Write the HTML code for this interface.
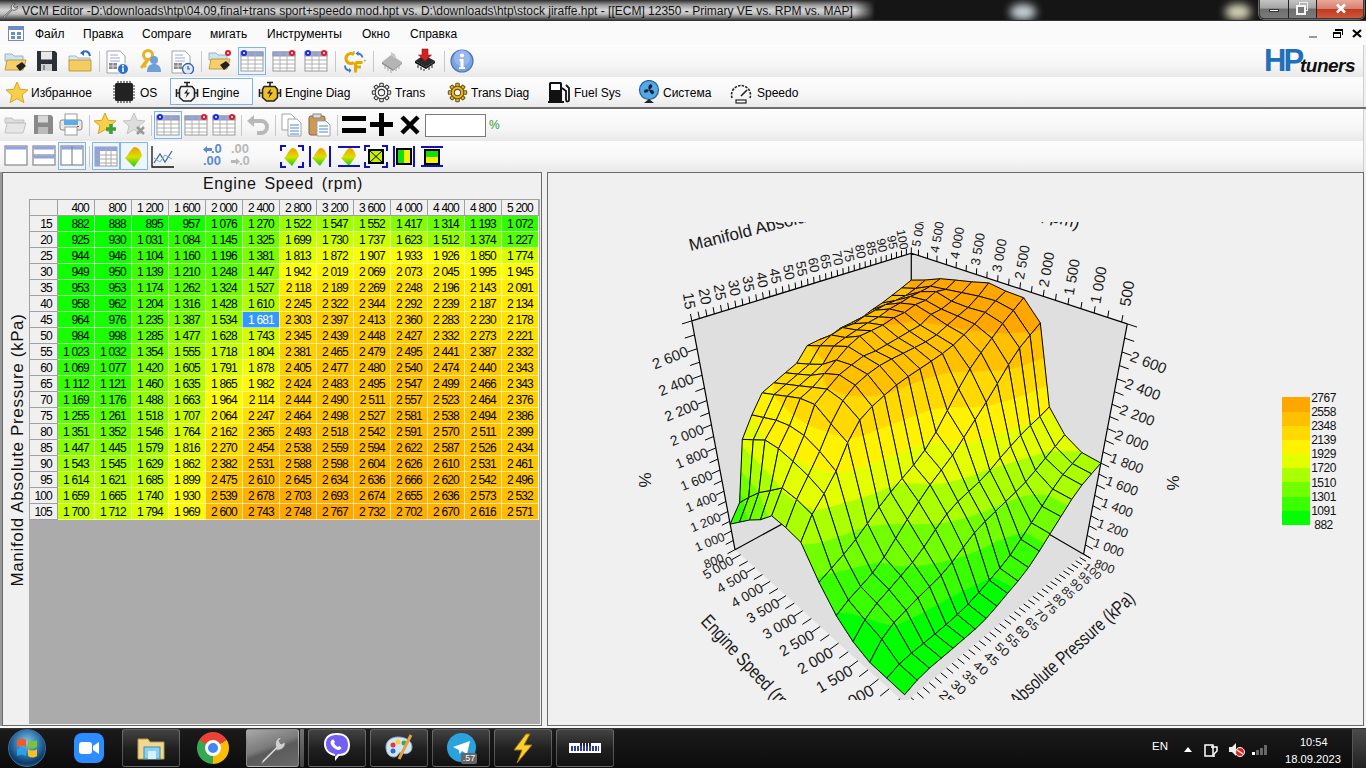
<!DOCTYPE html><html><head><meta charset="utf-8"><style>
*{margin:0;padding:0;box-sizing:border-box}
html,body{width:1366px;height:768px;overflow:hidden;background:#f0f0f0;font-family:"Liberation Sans",sans-serif;position:relative;color:#000}
.a{position:absolute}
.t{position:absolute;white-space:nowrap;font-size:12px;line-height:14px}
svg text{font-family:"Liberation Sans",sans-serif;fill:#1a1a1a}
.g{fill:none;stroke:#000;stroke-width:1}
.sep{position:absolute;width:1px;background:#c8c8c8}
.sel{position:absolute;border:1px solid #7eb4ea;background:#eef5fc}
.c{position:absolute;height:16px;font-size:12px;line-height:16px;text-align:right;padding-right:5px;letter-spacing:-0.8px;white-space:nowrap}
</style></head><body><div class="a" style="left:0;top:0;width:1366px;height:21px;background:#151515"></div>
<div class="a" style="left:0;top:0;width:875px;height:20px;background:linear-gradient(to bottom,#2a2a2a 0%,#9a9a9a 25%,#d6d6d6 50%,#bdbdbd 70%,#3a3a3a 100%);-webkit-mask-image:linear-gradient(to right,#000 855px,transparent 875px)"></div>
<div class="a" style="left:1010px;top:4px;width:26px;height:16px;border-radius:50%;background:#c8d4d8;filter:blur(4px)"></div>
<div class="a" style="left:1225px;top:4px;width:26px;height:16px;border-radius:50%;background:#d8d4b8;filter:blur(4px)"></div>
<svg class="a" style="left:1px;top:2px" width="17" height="16" viewBox="0 0 18 16"><path d="M3 15l8-8c-1-3 1-6 4-6l-2 3 2 2 3-2c0 3-3 5-6 4l-8 8z" fill="#ddd" stroke="#555" stroke-width="1"/></svg>
<div class="t" style="left:22px;top:4px;font-size:12px;color:#111;">VCM Editor -D:\downloads\htp\04.09,final+trans sport+speedo mod.hpt vs. D:\downloads\htp\stock jiraffe.hpt - [[ECM] 12350 - Primary VE vs. RPM vs. MAP]</div>
<div class="a" style="left:1259px;top:0;width:105px;height:19px;border:1px solid #3a3a3a;border-top:none;border-radius:0 0 5px 5px;background:linear-gradient(#c4c4c4 0,#a4a4a4 45%,#6e6e6e 50%,#7a7a7a 100%);box-shadow:0 0 0 1px rgba(255,255,255,.35);overflow:hidden"><div class="a" style="left:28px;top:0;width:1px;height:19px;background:#222"></div><div class="a" style="left:56px;top:0;width:1px;height:19px;background:#222"></div><div class="a" style="left:57px;top:0;width:47px;height:19px;background:linear-gradient(#e8a898 0,#d88070 45%,#c03a20 50%,#d05a40 100%)"></div><div class="a" style="left:9px;top:9px;width:10px;height:3px;background:#fff;border:1px solid #333"></div><div class="a" style="left:39px;top:2px;width:9px;height:9px;border:1.5px solid #eee"></div><div class="a" style="left:36px;top:5px;width:10px;height:10px;border:2.5px solid #f4f4f4;background:#777"></div><svg class="a" style="left:75px;top:3px" width="12" height="11"><path d="M2 1.5l8 8M10 1.5l-8 8" stroke="#fff" stroke-width="2.6"/></svg></div>
<div class="a" style="left:0;top:20px;width:1366px;height:1px;background:#333"></div>
<div class="a" style="left:0;top:21px;width:1366px;height:24px;background:#fafafa"></div>
<svg class="a" style="left:8px;top:26px" width="16" height="15" viewBox="0 0 16 15"><rect x=".5" y=".5" width="15" height="14" fill="#fff" stroke="#7a8aa0"/><rect x="1" y="1" width="14" height="3" fill="#6a8fc8"/><rect x="3" y="6" width="4" height="3" fill="#6a8fc8"/><rect x="9" y="6" width="4" height="3" fill="#6a8fc8"/><rect x="3" y="10" width="4" height="3" fill="#6a8fc8"/><rect x="9" y="10" width="4" height="3" fill="#6a8fc8"/></svg>
<div class="t" style="left:35px;top:27px;font-size:12px;color:#000;">Файл</div>
<div class="t" style="left:83px;top:27px;font-size:12px;color:#000;">Правка</div>
<div class="t" style="left:142px;top:27px;font-size:12px;color:#000;">Compare</div>
<div class="t" style="left:210px;top:27px;font-size:12px;color:#000;">мигать</div>
<div class="t" style="left:267px;top:27px;font-size:12px;color:#000;">Инструменты</div>
<div class="t" style="left:362px;top:27px;font-size:12px;color:#000;">Окно</div>
<div class="t" style="left:410px;top:27px;font-size:12px;color:#000;">Справка</div>
<div class="a" style="left:1309px;top:36px;width:8px;height:2px;background:#999"></div>
<div class="a" style="left:1333px;top:32px;width:8px;height:6px;border:1.5px solid #000;border-top-width:2.5px"></div><div class="a" style="left:1335px;top:29px;width:8px;height:6px;border-top:2px solid #000;border-right:1.5px solid #000"></div>
<svg class="a" style="left:1352px;top:29px" width="10" height="9" viewBox="0 0 10 9"><path d="M1 1l8 7M9 1L1 8" stroke="#000" stroke-width="2.2"/></svg>
<div class="a" style="left:0;top:45px;width:1364px;height:32px;background:linear-gradient(to bottom,#fdfdfd 0%,#f6f6f6 60%,#e9e9e9 100%);border-right:1px solid #cfcfcf"></div>
<div class="a" style="left:0;top:77px;width:1364px;height:31px;background:linear-gradient(to bottom,#fdfdfd 0%,#f6f6f6 60%,#e9e9e9 100%);border-right:1px solid #cfcfcf"></div>
<div class="a" style="left:0;top:107px;width:1366px;height:2px;background:#6e6e6e"></div>
<div class="a" style="left:0;top:109px;width:1364px;height:32px;background:linear-gradient(to bottom,#fdfdfd 0%,#f6f6f6 60%,#e9e9e9 100%);border-right:1px solid #cfcfcf"></div>
<div class="a" style="left:0;top:141px;width:1364px;height:31px;background:linear-gradient(to bottom,#fdfdfd 0%,#f6f6f6 60%,#e9e9e9 100%);border-right:1px solid #cfcfcf"></div>
<div class="sel" style="left:238px;top:47px;width:28px;height:28px"></div>
<svg class="a" style="left:4px;top:50px" width="24" height="24" viewBox="0 0 24 24"><path d="M1 4h7l2 2h9v5H1z" fill="#cfe3f7" stroke="#8aa" stroke-width=".8"/>
<path d="M1 20L3 10h19l-3 10z" fill="#f5cf6a" stroke="#b8953a" stroke-width=".9"/>
<path d="M12 16l6-4 4 4-6 5z" fill="#222"/></svg>
<svg class="a" style="left:36px;top:50px" width="24" height="24" viewBox="0 0 24 24"><path d="M1 1h18l2 2v18H1z" fill="#2b2f36"/><rect x="5" y="1.5" width="11" height="8" fill="#e8e8e8"/>
<rect x="5" y="14" width="11" height="7" fill="#d0d0d0"/><rect x="7" y="15" width="2" height="5" fill="#888"/></svg>
<svg class="a" style="left:68px;top:49px" width="24" height="24" viewBox="0 0 24 24"><path d="M1 7h7l2 2h12v4H1z" fill="#dbe8f5" stroke="#9ab" stroke-width=".8"/>
<path d="M1 11h22v11H1z" fill="#f3cd64" stroke="#b8953a" stroke-width=".9"/>
<path d="M14 4c3-3 7-2 8 3" fill="none" stroke="#2c6fb0" stroke-width="2"/><path d="M12 4l4-3v6z" fill="#2c6fb0"/></svg>
<svg class="a" style="left:105px;top:50px" width="24" height="24" viewBox="0 0 24 24"><path d="M2 1h13l5 5v17H2z" fill="#fff" stroke="#999" stroke-width=".9"/>
<path d="M5 5h8M5 8h10M5 11h10" stroke="#9aa8d8" stroke-width="1"/>
<rect x="4" y="13" width="8" height="6" fill="#888"/><path d="M4 16h8M8 13v6" stroke="#eee" stroke-width=".8"/><circle cx="18" cy="19" r="5.5" fill="#2d72c9" stroke="#fff" stroke-width="1"/><rect x="17.2" y="17.5" width="1.6" height="4.5" fill="#fff"/><circle cx="18" cy="15.7" r="1" fill="#fff"/></svg>
<svg class="a" style="left:138px;top:49px" width="24" height="24" viewBox="0 0 24 24"><circle cx="10" cy="6" r="4.5" fill="none" stroke="#e6b323" stroke-width="3"/><path d="M8 10l-6 8 2 2 2-2 1 1 2-2-1-1 3-4" fill="#e6b323"/>
<circle cx="16" cy="11" r="4" fill="#6ea0d8"/><path d="M9 23c0-6 3-8 7-8s7 2 7 8z" fill="#6ea0d8"/></svg>
<svg class="a" style="left:170px;top:50px" width="24" height="24" viewBox="0 0 24 24"><path d="M2 1h13l5 5v17H2z" fill="#fff" stroke="#999" stroke-width=".9"/>
<path d="M5 5h8M5 8h10M5 11h10" stroke="#9aa8d8" stroke-width="1"/>
<rect x="4" y="13" width="8" height="6" fill="#888"/><path d="M4 16h8M8 13v6" stroke="#eee" stroke-width=".8"/><circle cx="18" cy="19" r="5.5" fill="#dfe8f5" stroke="#2d5ea8" stroke-width="1.3"/><path d="M18 16v3h2" stroke="#2d5ea8" stroke-width="1.2" fill="none"/></svg>
<svg class="a" style="left:208px;top:49px" width="24" height="24" viewBox="0 0 24 24"><path d="M1 4h7l2 2h9v5H1z" fill="#cfe3f7" stroke="#8aa" stroke-width=".8"/>
<path d="M1 20L3 10h19l-3 10z" fill="#f5cf6a" stroke="#b8953a" stroke-width=".9"/>
<path d="M12 16l6-4 4 4-6 5z" fill="#222"/><circle cx="20" cy="4" r="3" fill="#e01a2b"/><circle cx="20" cy="4" r="1" fill="#fff"/></svg>
<svg class="a" style="left:240px;top:49px" width="24" height="24" viewBox="0 0 24 24"><rect x="1" y="3" width="22" height="19" fill="#fff" stroke="#999" stroke-width="1"/><rect x="1" y="3" width="22" height="4" fill="#8fa3e0" stroke="#999" stroke-width="1"/><path d="M1 11h22M1 15h22M1 19h22M8 3v19M15 3v19" stroke="#b0b0b0" stroke-width="1"/><circle cx="4" cy="4" r="3" fill="#1a2be0"/><circle cx="4" cy="4" r="1" fill="#fff"/></svg>
<svg class="a" style="left:272px;top:49px" width="24" height="24" viewBox="0 0 24 24"><rect x="1" y="3" width="22" height="19" fill="#fff" stroke="#999" stroke-width="1"/><rect x="1" y="3" width="22" height="4" fill="#8fa3e0" stroke="#999" stroke-width="1"/><path d="M1 11h22M1 15h22M1 19h22M8 3v19M15 3v19" stroke="#b0b0b0" stroke-width="1"/><circle cx="20" cy="4" r="3" fill="#e01a2b"/><circle cx="20" cy="4" r="1" fill="#fff"/></svg>
<svg class="a" style="left:304px;top:49px" width="24" height="24" viewBox="0 0 24 24"><rect x="1" y="3" width="22" height="19" fill="#fff" stroke="#999" stroke-width="1"/><rect x="1" y="3" width="22" height="4" fill="#8fa3e0" stroke="#999" stroke-width="1"/><path d="M1 11h22M1 15h22M1 19h22M8 3v19M15 3v19" stroke="#b0b0b0" stroke-width="1"/><circle cx="4" cy="4" r="3" fill="#1a2be0"/><circle cx="4" cy="4" r="1" fill="#fff"/><circle cx="20" cy="4" r="3" fill="#e01a2b"/><circle cx="20" cy="4" r="1" fill="#fff"/></svg>
<svg class="a" style="left:342px;top:50px" width="24" height="24" viewBox="0 0 24 24"><path d="M12 4.5A5 5 0 1 0 12 12.5" fill="none" stroke="#e6a800" stroke-width="3.2"/>
<path d="M13.5 12.5h7M13.5 12.5v10M13.5 17h5.5" stroke="#e6a800" stroke-width="3" fill="none"/>
<path d="M15 3.5c3 0 5 1.5 5.5 4" fill="none" stroke="#3b78c8" stroke-width="1.8"/><path d="M13.5 3.5l3-2.5v5z" fill="#3b78c8"/>
<path d="M3 15.5c0 3 1.5 4.5 4 5" fill="none" stroke="#3b78c8" stroke-width="1.8"/><path d="M7 18l2.5 2.5L7 23z" fill="#3b78c8"/>
<circle cx="12" cy="2" r=".9" fill="#c8a040"/><circle cx="23" cy="10.5" r=".9" fill="#c8a040"/></svg>
<svg class="a" style="left:380px;top:50px" width="24" height="24" viewBox="0 0 24 24"><path d="M2 12l9-7 11 7-9 7z" fill="#b4b4b4"/><path d="M2 12v2l11 7v-2z" fill="#8c8c8c"/><path d="M13 19v2l9-7v-2z" fill="#a0a0a0"/>
<path d="M11 5v-3l4 2.5 1.5 3.5" fill="#c8c8c8"/><path d="M5 16v3M8 18v3M11 20v3M16 18v3M19 16v3" stroke="#b8b8b8" stroke-width="1.3"/></svg>
<svg class="a" style="left:413px;top:48px" width="24" height="24" viewBox="0 0 24 24"><path d="M2 13l9-6 11 6-9 6z" fill="#2a2a2a"/><path d="M2 13v2l11 6v-2z" fill="#111"/><path d="M13 19v2l9-6v-2z" fill="#1a1a1a"/>
<path d="M5 17v3M8 19v3M11 21v2M16 19v3M19 17v3" stroke="#555" stroke-width="1.3"/>
<path d="M9 1h6v6h3.5L12 13 5.5 7H9z" fill="#d42020" stroke="#9a1010" stroke-width=".6"/></svg>
<svg class="a" style="left:450px;top:49px" width="24" height="24" viewBox="0 0 24 24"><circle cx="12" cy="12" r="11" fill="#7aa4e0" stroke="#4a74b8" stroke-width="1.2"/><circle cx="12" cy="9" r="8" fill="#a8c6f0" opacity=".6"/>
<path d="M9.5 10h4v8h1.5v2h-6v-2h1.5v-6h-1z" fill="#fff"/><circle cx="12" cy="6.5" r="2.1" fill="#fff"/></svg>
<div class="sep" style="left:99px;top:51px;height:21px"></div>
<div class="sep" style="left:201px;top:51px;height:21px"></div>
<div class="sep" style="left:335px;top:51px;height:21px"></div>
<div class="sep" style="left:373px;top:51px;height:21px"></div>
<div class="sep" style="left:444px;top:51px;height:21px"></div>
<div class="t" style="left:1264px;top:44px;font-size:31px;line-height:34px;font-weight:bold;color:#1f6fba;letter-spacing:-3px">HP</div>
<div class="t" style="left:1300px;top:55px;font-size:19px;line-height:22px;font-weight:bold;font-style:italic;color:#111;letter-spacing:-0.5px">tuners</div>
<div class="sel" style="left:170px;top:78px;width:83px;height:27px"></div>
<div class="a" style="left:171px;top:79px;width:81px;height:25px;background:linear-gradient(#fdfdfd,#f3f6fa)"></div>
<svg class="a" style="left:5px;top:81px" width="24" height="24" viewBox="0 0 24 24"><path d="M12 1l3.2 7.3 7.8.6-6 5.1 1.9 7.7L12 17.6l-6.9 4.1L7 14 1 8.9l7.8-.6z" fill="#f7cf4a" stroke="#d9a520" stroke-width="1"/></svg>
<div class="t" style="left:31px;top:86px;font-size:12px;color:#000;">Избранное</div>
<svg class="a" style="left:112px;top:80px" width="24" height="24" viewBox="0 0 24 24"><rect x="3" y="3" width="18" height="18" rx="1.5" fill="#222"/><path d="M6 1v2M9 1v2M12 1v2M15 1v2M18 1v2M6 21v2M9 21v2M12 21v2M15 21v2M18 21v2M1 6h2M1 9h2M1 12h2M1 15h2M1 18h2M21 6h2M21 9h2M21 12h2M21 15h2M21 18h2" stroke="#333" stroke-width="1.2"/></svg>
<div class="t" style="left:140px;top:86px;font-size:12px;color:#000;">OS</div>
<svg class="a" style="left:175px;top:80px" width="24" height="24" viewBox="0 0 24 24"><path d="M9 2.5h6M12 2.5v3.5" stroke="#222" stroke-width="1.6"/><path d="M1.5 9v8M22.5 9v8" stroke="#222" stroke-width="1.6"/><path d="M1.5 13h3M19.5 13h3" stroke="#222" stroke-width="1.6"/><path d="M6 6.5h11l2.5 3v8L16 21H8.5L4.5 17.5v-8z" fill="#f4f4f4" stroke="#222" stroke-width="1.6" stroke-linejoin="round"/><path d="M13 8.5l-4 5h3l-1.5 4.5 4.5-5.5h-3z" fill="#222"/></svg>
<div class="t" style="left:202px;top:86px;font-size:12px;color:#000;">Engine</div>
<svg class="a" style="left:258px;top:80px" width="24" height="24" viewBox="0 0 24 24"><path d="M9 2.5h6M12 2.5v3.5" stroke="#222" stroke-width="1.6"/><path d="M1.5 9v8M22.5 9v8" stroke="#222" stroke-width="1.6"/><path d="M1.5 13h3M19.5 13h3" stroke="#222" stroke-width="1.6"/><path d="M6 6.5h11l2.5 3v8L16 21H8.5L4.5 17.5v-8z" fill="#f0c020" stroke="#222" stroke-width="1.6" stroke-linejoin="round"/><path d="M13 8.5l-4 5h3l-1.5 4.5 4.5-5.5h-3z" fill="#222"/></svg>
<div class="t" style="left:285px;top:86px;font-size:12px;color:#000;">Engine Diag</div>
<svg class="a" style="left:371px;top:82px" width="21" height="21" viewBox="0 0 24 24"><rect x="10" y="1.5" width="4" height="5" rx=".8" fill="#f4f4f4" stroke="#333" stroke-width="1.2" transform="rotate(0 12 12)"/><rect x="10" y="1.5" width="4" height="5" rx=".8" fill="#f4f4f4" stroke="#333" stroke-width="1.2" transform="rotate(45 12 12)"/><rect x="10" y="1.5" width="4" height="5" rx=".8" fill="#f4f4f4" stroke="#333" stroke-width="1.2" transform="rotate(90 12 12)"/><rect x="10" y="1.5" width="4" height="5" rx=".8" fill="#f4f4f4" stroke="#333" stroke-width="1.2" transform="rotate(135 12 12)"/><rect x="10" y="1.5" width="4" height="5" rx=".8" fill="#f4f4f4" stroke="#333" stroke-width="1.2" transform="rotate(180 12 12)"/><rect x="10" y="1.5" width="4" height="5" rx=".8" fill="#f4f4f4" stroke="#333" stroke-width="1.2" transform="rotate(225 12 12)"/><rect x="10" y="1.5" width="4" height="5" rx=".8" fill="#f4f4f4" stroke="#333" stroke-width="1.2" transform="rotate(270 12 12)"/><rect x="10" y="1.5" width="4" height="5" rx=".8" fill="#f4f4f4" stroke="#333" stroke-width="1.2" transform="rotate(315 12 12)"/><circle cx="12" cy="12" r="7.2" fill="#f4f4f4" stroke="#333" stroke-width="1.2"/><circle cx="12" cy="12" r="3.6" fill="#f6f6f6" stroke="#333" stroke-width="1.2"/></svg>
<div class="t" style="left:395px;top:86px;font-size:12px;color:#000;">Trans</div>
<svg class="a" style="left:447px;top:82px" width="21" height="21" viewBox="0 0 24 24"><rect x="10" y="1.5" width="4" height="5" rx=".8" fill="#e8b830" stroke="#6a5210" stroke-width="1.2" transform="rotate(0 12 12)"/><rect x="10" y="1.5" width="4" height="5" rx=".8" fill="#e8b830" stroke="#6a5210" stroke-width="1.2" transform="rotate(45 12 12)"/><rect x="10" y="1.5" width="4" height="5" rx=".8" fill="#e8b830" stroke="#6a5210" stroke-width="1.2" transform="rotate(90 12 12)"/><rect x="10" y="1.5" width="4" height="5" rx=".8" fill="#e8b830" stroke="#6a5210" stroke-width="1.2" transform="rotate(135 12 12)"/><rect x="10" y="1.5" width="4" height="5" rx=".8" fill="#e8b830" stroke="#6a5210" stroke-width="1.2" transform="rotate(180 12 12)"/><rect x="10" y="1.5" width="4" height="5" rx=".8" fill="#e8b830" stroke="#6a5210" stroke-width="1.2" transform="rotate(225 12 12)"/><rect x="10" y="1.5" width="4" height="5" rx=".8" fill="#e8b830" stroke="#6a5210" stroke-width="1.2" transform="rotate(270 12 12)"/><rect x="10" y="1.5" width="4" height="5" rx=".8" fill="#e8b830" stroke="#6a5210" stroke-width="1.2" transform="rotate(315 12 12)"/><circle cx="12" cy="12" r="7.2" fill="#e8b830" stroke="#6a5210" stroke-width="1.2"/><circle cx="12" cy="12" r="3.6" fill="#f6f6f6" stroke="#6a5210" stroke-width="1.2"/></svg>
<div class="t" style="left:471px;top:86px;font-size:12px;color:#000;">Trans Diag</div>
<svg class="a" style="left:547px;top:80px" width="24" height="24" viewBox="0 0 24 24"><rect x="2" y="2" width="13" height="20" rx="1.5" fill="#111"/><rect x="4" y="4" width="9" height="6" fill="#fff"/><rect x="1" y="21" width="16" height="2" fill="#111"/>
<path d="M15 8l4 3v9c0 2 3 2 3 0V8l-3-3" fill="none" stroke="#111" stroke-width="1.8"/></svg>
<div class="t" style="left:574px;top:86px;font-size:12px;color:#000;">Fuel Sys</div>
<svg class="a" style="left:637px;top:80px" width="24" height="24" viewBox="0 0 24 24"><circle cx="12" cy="10" r="9.5" fill="#55a8e8" stroke="#2a5f95" stroke-width="1.2"/><path d="M12 10c-2-5 2-7 3-5s-1 4-3 5zm0 0c5-1 6 3 4 4s-3-2-4-4zm0 0c-2 4-6 3-5 1s3-2 5-1z" fill="#123"/>
<path d="M7 23l5-4 5 4z" fill="#222"/></svg>
<div class="t" style="left:663px;top:86px;font-size:12px;color:#000;">Система</div>
<svg class="a" style="left:729px;top:81px" width="24" height="24" viewBox="0 0 24 24"><path d="M3 17a9.5 9.5 0 1 1 18 0" fill="none" stroke="#222" stroke-width="1.6" stroke-dasharray="2.5 1.2"/><path d="M12 15l6-6" stroke="#222" stroke-width="1.6"/><rect x="7" y="19" width="10" height="3" fill="#fff" stroke="#222" stroke-width="1.2"/></svg>
<div class="t" style="left:757px;top:86px;font-size:12px;color:#000;">Speedo</div>
<div class="sel" style="left:154px;top:111px;width:28px;height:28px"></div>
<svg class="a" style="left:4px;top:113px" width="24" height="24" viewBox="0 0 24 24"><path d="M1 5h7l2 2h10v3H1z" fill="#ddd" stroke="#bbb" stroke-width=".8"/><path d="M1 20L3 10h19l-3 10z" fill="#e6e6e6" stroke="#bdbdbd" stroke-width=".9"/></svg>
<svg class="a" style="left:33px;top:113px" width="24" height="24" viewBox="0 0 24 24"><path d="M1 2h17l2 2v17H1z" fill="#8a8a8a"/><rect x="5" y="2.5" width="10" height="7" fill="#d8d8d8"/><rect x="5" y="14" width="10" height="7" fill="#bbb"/></svg>
<svg class="a" style="left:59px;top:113px" width="24" height="24" viewBox="0 0 24 24"><rect x="6" y="1" width="12" height="8" fill="#fff" stroke="#999"/><rect x="1" y="7" width="22" height="10" rx="2" fill="#e8e8e8" stroke="#888"/>
<rect x="5" y="7" width="14" height="5" fill="#5aaee8"/><rect x="6" y="14" width="12" height="8" fill="#fff" stroke="#999"/><rect x="18" y="13" width="2" height="1" fill="#d22"/></svg>
<svg class="a" style="left:93px;top:112px" width="24" height="24" viewBox="0 0 24 24"><path d="M12 1l3.2 7.3 7.8.6-6 5.1 1.9 7.7L12 17.6l-6.9 4.1L7 14 1 8.9l7.8-.6z" fill="#f7cf4a" stroke="#d9a520" stroke-width="1"/><path d="M18 12v10M13 17h10" stroke="#3aa13a" stroke-width="3.5"/></svg>
<svg class="a" style="left:122px;top:112px" width="24" height="24" viewBox="0 0 24 24"><path d="M12 1l3.2 7.3 7.8.6-6 5.1 1.9 7.7L12 17.6l-6.9 4.1L7 14 1 8.9l7.8-.6z" fill="#ddd" stroke="#c4c4c4" stroke-width="1"/><path d="M15 15l7 7M22 15l-7 7" stroke="#999" stroke-width="2.5"/></svg>
<svg class="a" style="left:156px;top:113px" width="24" height="24" viewBox="0 0 24 24"><rect x="1" y="3" width="22" height="19" fill="#fff" stroke="#999" stroke-width="1"/><rect x="1" y="3" width="22" height="4" fill="#8fa3e0" stroke="#999" stroke-width="1"/><path d="M1 11h22M1 15h22M1 19h22M8 3v19M15 3v19" stroke="#b0b0b0" stroke-width="1"/><circle cx="4" cy="4" r="3" fill="#1a2be0"/><circle cx="4" cy="4" r="1" fill="#fff"/></svg>
<svg class="a" style="left:184px;top:113px" width="24" height="24" viewBox="0 0 24 24"><rect x="1" y="3" width="22" height="19" fill="#fff" stroke="#999" stroke-width="1"/><rect x="1" y="3" width="22" height="4" fill="#8fa3e0" stroke="#999" stroke-width="1"/><path d="M1 11h22M1 15h22M1 19h22M8 3v19M15 3v19" stroke="#b0b0b0" stroke-width="1"/><circle cx="20" cy="4" r="3" fill="#e01a2b"/><circle cx="20" cy="4" r="1" fill="#fff"/></svg>
<svg class="a" style="left:212px;top:113px" width="24" height="24" viewBox="0 0 24 24"><rect x="1" y="3" width="22" height="19" fill="#fff" stroke="#999" stroke-width="1"/><rect x="1" y="3" width="22" height="4" fill="#8fa3e0" stroke="#999" stroke-width="1"/><path d="M1 11h22M1 15h22M1 19h22M8 3v19M15 3v19" stroke="#b0b0b0" stroke-width="1"/><circle cx="4" cy="4" r="3" fill="#1a2be0"/><circle cx="4" cy="4" r="1" fill="#fff"/><circle cx="20" cy="4" r="3" fill="#e01a2b"/><circle cx="20" cy="4" r="1" fill="#fff"/></svg>
<svg class="a" style="left:246px;top:113px" width="24" height="24" viewBox="0 0 24 24"><path d="M6 8h9a6 6 0 0 1 0 12h-4" fill="none" stroke="#b8b8b8" stroke-width="4"/><path d="M1 8l7-6v12z" fill="#b8b8b8"/></svg>
<svg class="a" style="left:280px;top:113px" width="24" height="24" viewBox="0 0 24 24"><path d="M2 1h9l4 4v12H2z" fill="#fff" stroke="#999" stroke-width=".9"/><path d="M8 6h9l4 4v13H8z" fill="#fff" stroke="#999" stroke-width=".9"/>
<path d="M10 12h9M10 15h9M10 18h9M10 21h9" stroke="#4a8ad0" stroke-width="1"/></svg>
<svg class="a" style="left:308px;top:113px" width="24" height="24" viewBox="0 0 24 24"><rect x="1" y="3" width="16" height="19" rx="2" fill="#c99a5a" stroke="#8a6030"/><rect x="5" y="1" width="8" height="4" fill="#ddd" stroke="#888"/>
<path d="M9 8h9l4 4v11H9z" fill="#fff" stroke="#999" stroke-width=".9"/><path d="M11 13h9M11 16h9M11 19h9" stroke="#4a8ad0" stroke-width="1"/></svg>
<div class="sep" style="left:89px;top:115px;height:21px"></div>
<div class="sep" style="left:151px;top:115px;height:21px"></div>
<div class="sep" style="left:241px;top:115px;height:21px"></div>
<div class="sep" style="left:275px;top:115px;height:21px"></div>
<div class="sep" style="left:337px;top:115px;height:21px"></div>
<div class="a" style="left:342px;top:116px;width:24px;height:5px;background:#000"></div><div class="a" style="left:342px;top:128px;width:24px;height:5px;background:#000"></div>
<div class="a" style="left:370px;top:122px;width:23px;height:5px;background:#000"></div><div class="a" style="left:379px;top:113px;width:5px;height:23px;background:#000"></div>
<svg class="a" style="left:400px;top:115px" width="20" height="20" viewBox="0 0 20 20"><path d="M2 2l16 16M18 2L2 18" stroke="#000" stroke-width="4.5"/></svg>
<div class="a" style="left:425px;top:114px;width:61px;height:23px;background:#fff;border:1px solid #7a7a7a"></div>
<div class="t" style="left:489px;top:118px;font-size:12px;color:#2a9a2a;">%</div>
<div class="sel" style="left:58px;top:142px;width:28px;height:28px"></div>
<div class="sel" style="left:92px;top:142px;width:28px;height:28px"></div>
<div class="sel" style="left:120px;top:142px;width:28px;height:28px"></div>
<svg class="a" style="left:4px;top:145px" width="24" height="24" viewBox="0 0 24 24"><rect x="1" y="1" width="22" height="19" fill="#fff" stroke="#888" stroke-width="1.2"/><rect x="1.5" y="1.5" width="21" height="3" fill="#8fa3e0"/></svg>
<svg class="a" style="left:32px;top:145px" width="24" height="24" viewBox="0 0 24 24"><rect x="1" y="1" width="22" height="19" fill="#fff" stroke="#888" stroke-width="1.2"/><rect x="1.5" y="1.5" width="21" height="3" fill="#8fa3e0"/><path d="M1 10h22" stroke="#888" stroke-width="1.2"/><rect x="1.5" y="10.5" width="21" height="3" fill="#8fa3e0"/></svg>
<svg class="a" style="left:60px;top:145px" width="24" height="24" viewBox="0 0 24 24"><rect x="1" y="1" width="22" height="19" fill="#fff" stroke="#888" stroke-width="1.2"/><rect x="1.5" y="1.5" width="21" height="3" fill="#8fa3e0"/><path d="M12 1v19" stroke="#888" stroke-width="1.2"/></svg>
<svg class="a" style="left:94px;top:145px" width="24" height="24" viewBox="0 0 24 24"><rect x="1" y="2" width="22" height="19" fill="#fff" stroke="#999"/><rect x="1" y="2" width="22" height="4" fill="#8fa3e0"/><rect x="1" y="2" width="5" height="19" fill="#8fa3e0"/>
<path d="M1 10h22M1 14h22M1 18h22M12 2v19M17 2v19" stroke="#aaa" stroke-width="1"/></svg>
<svg class="a" style="left:122px;top:145px" width="24" height="24" viewBox="0 0 24 24"><defs><linearGradient id="sg" x1="0" y1="0" x2="0" y2="1"><stop offset="0" stop-color="#f0a000"/><stop offset=".5" stop-color="#d8e000"/><stop offset="1" stop-color="#10d010"/></linearGradient></defs>
<path d="M12 2c6 0 7 6 8 9l-8 11-9-9c3-2 4-7 9-11z" fill="url(#sg)"/></svg>
<svg class="a" style="left:151px;top:145px" width="24" height="24" viewBox="0 0 24 24"><path d="M1 1v21h22" stroke="#111" stroke-width="1.3" fill="none"/><path d="M3 18l6-9 5 8 7-11" stroke="#3b6ea5" stroke-width="1.3" fill="none"/><path d="M3 13l6 4 5-7 7 4" stroke="#7aa0c8" stroke-width="1" fill="none"/></svg>
<div class="sep" style="left:89px;top:146px;height:21px"></div>
<div class="t" style="left:211px;top:143px;font-size:13px;line-height:12px;font-weight:bold;color:#5a8ac8">.0</div><div class="t" style="left:203px;top:155px;font-size:13px;line-height:12px;font-weight:bold;color:#5a8ac8">.00</div>
<svg class="a" style="left:203px;top:146px" width="9" height="7" viewBox="0 0 9 7"><path d="M0 3.5L4 0v2h5v3H4v2z" fill="#5a8ac8"/></svg>
<div class="t" style="left:231px;top:143px;font-size:13px;line-height:12px;font-weight:bold;color:#b8b8b8">.00</div><div class="t" style="left:239px;top:155px;font-size:13px;line-height:12px;font-weight:bold;color:#b8b8b8">.0</div>
<svg class="a" style="left:231px;top:158px" width="9" height="7" viewBox="0 0 9 7"><path d="M9 3.5L5 0v2H0v3h5v2z" fill="#b8b8b8"/></svg>
<svg class="a" style="left:280px;top:145px" width="24" height="23" viewBox="0 0 24 23"><defs><linearGradient id="sg2" x1="0" y1="0" x2="0" y2="1"><stop offset="0" stop-color="#f0a000"/><stop offset=".5" stop-color="#d8e000"/><stop offset="1" stop-color="#10d010"/></linearGradient></defs><path d="M12 3c5 0 6 5 7 8l-7 10-8-8c3-2 3-6 8-10z" fill="url(#sg2)"/><path d="M1 6V1h5M18 1h5v5M1 17v5h5M18 22h5v-5" stroke="#1010c0" stroke-width="2" fill="none"/></svg>
<svg class="a" style="left:308px;top:145px" width="24" height="23" viewBox="0 0 24 23"><defs><linearGradient id="sg2" x1="0" y1="0" x2="0" y2="1"><stop offset="0" stop-color="#f0a000"/><stop offset=".5" stop-color="#d8e000"/><stop offset="1" stop-color="#10d010"/></linearGradient></defs><path d="M12 3c5 0 6 5 7 8l-7 10-8-8c3-2 3-6 8-10z" fill="url(#sg2)"/><path d="M2 1v21M22 1v21" stroke="#1010c0" stroke-width="2"/></svg>
<svg class="a" style="left:337px;top:145px" width="24" height="23" viewBox="0 0 24 23"><defs><linearGradient id="sg2" x1="0" y1="0" x2="0" y2="1"><stop offset="0" stop-color="#f0a000"/><stop offset=".5" stop-color="#d8e000"/><stop offset="1" stop-color="#10d010"/></linearGradient></defs><path d="M12 3c5 0 6 5 7 8l-7 10-8-8c3-2 3-6 8-10z" fill="url(#sg2)"/><path d="M1 2h22M1 21h22" stroke="#1010c0" stroke-width="2"/></svg>
<svg class="a" style="left:364px;top:145px" width="24" height="23" viewBox="0 0 24 23"><path d="M1 6V1h5M18 1h5v5M1 17v5h5M18 22h5v-5" stroke="#1010c0" stroke-width="2" fill="none"/><rect x="5" y="5" width="14" height="13" fill="#c8f000" stroke="#000" stroke-width="2"/><path d="M5 5l14 13M19 5L5 18" stroke="#000" stroke-width="1"/></svg>
<svg class="a" style="left:392px;top:145px" width="24" height="23" viewBox="0 0 24 23"><path d="M2 1v21M22 1v21" stroke="#1010c0" stroke-width="2"/><rect x="5" y="4" width="14" height="15" fill="#f4f400" stroke="#000" stroke-width="2"/><rect x="6" y="5" width="6" height="13" fill="#10e010"/></svg>
<svg class="a" style="left:420px;top:145px" width="24" height="23" viewBox="0 0 24 23"><path d="M1 2h22M1 21h22" stroke="#1010c0" stroke-width="2"/><rect x="5" y="5" width="14" height="14" fill="#f4f400" stroke="#000" stroke-width="2"/><rect x="6" y="6" width="12" height="6" fill="#10e010"/></svg>
<div class="a" style="left:0;top:172px;width:2px;height:556px;background:#9a9a9a"></div>
<div class="a" style="left:2px;top:172px;width:540px;height:554px;border:1px solid #6a6a6a;background:#f0f0f0"></div>
<div class="a" style="left:29px;top:199px;width:511px;height:525px;background:#ababab"></div>
<div class="t" style="left:203px;top:175px;font-size:16px;color:#111;line-height:18px;letter-spacing:.6px;word-spacing:3px">Engine Speed (rpm)</div>
<div class="t" style="left:18px;top:450px;font-size:17px;line-height:18px;color:#111;letter-spacing:.65px;transform:translate(-50%,-50%) rotate(-90deg);transform-origin:center">Manifold Absolute Pressure (kPa)</div>
<div class="a" style="left:29px;top:199px;width:510px;height:321px;background:#f0f0f0"></div><div class="c" style="left:57px;top:200px;width:37px">400</div><div class="c" style="left:94px;top:200px;width:37px">800</div><div class="c" style="left:131px;top:200px;width:37px">1 200</div><div class="c" style="left:168px;top:200px;width:37px">1 600</div><div class="c" style="left:205px;top:200px;width:37px">2 000</div><div class="c" style="left:242px;top:200px;width:37px">2 400</div><div class="c" style="left:279px;top:200px;width:37px">2 800</div><div class="c" style="left:316px;top:200px;width:37px">3 200</div><div class="c" style="left:353px;top:200px;width:37px">3 600</div><div class="c" style="left:390px;top:200px;width:37px">4 000</div><div class="c" style="left:427px;top:200px;width:37px">4 400</div><div class="c" style="left:464px;top:200px;width:37px">4 800</div><div class="c" style="left:501px;top:200px;width:37px">5 200</div><div class="c" style="left:29px;top:216px;width:28px">15</div><div class="c" style="left:57px;top:216px;width:37px;background:#00ff00">882</div><div class="c" style="left:94px;top:216px;width:37px;background:#01ff00">888</div><div class="c" style="left:131px;top:216px;width:37px;background:#03ff00">895</div><div class="c" style="left:168px;top:216px;width:37px;background:#12ff00">957</div><div class="c" style="left:205px;top:216px;width:37px;background:#2fff00">1 076</div><div class="c" style="left:242px;top:216px;width:37px;background:#5eff00">1 270</div><div class="c" style="left:279px;top:216px;width:37px;background:#9aff00">1 522</div><div class="c" style="left:316px;top:216px;width:37px;background:#a0ff00">1 547</div><div class="c" style="left:353px;top:216px;width:37px;background:#a2ff00">1 552</div><div class="c" style="left:390px;top:216px;width:37px;background:#81ff00">1 417</div><div class="c" style="left:427px;top:216px;width:37px;background:#68ff00">1 314</div><div class="c" style="left:464px;top:216px;width:37px;background:#4bff00">1 193</div><div class="c" style="left:501px;top:216px;width:37px;background:#2eff00">1 072</div><div class="c" style="left:29px;top:232px;width:28px">20</div><div class="c" style="left:57px;top:232px;width:37px;background:#0aff00">925</div><div class="c" style="left:94px;top:232px;width:37px;background:#0cff00">930</div><div class="c" style="left:131px;top:232px;width:37px;background:#24ff00">1 031</div><div class="c" style="left:168px;top:232px;width:37px;background:#31ff00">1 084</div><div class="c" style="left:205px;top:232px;width:37px;background:#3fff00">1 145</div><div class="c" style="left:242px;top:232px;width:37px;background:#6bff00">1 325</div><div class="c" style="left:279px;top:232px;width:37px;background:#c5ff00">1 699</div><div class="c" style="left:316px;top:232px;width:37px;background:#ccff00">1 730</div><div class="c" style="left:353px;top:232px;width:37px;background:#ceff00">1 737</div><div class="c" style="left:390px;top:232px;width:37px;background:#b3ff00">1 623</div><div class="c" style="left:427px;top:232px;width:37px;background:#98ff00">1 512</div><div class="c" style="left:464px;top:232px;width:37px;background:#77ff00">1 374</div><div class="c" style="left:501px;top:232px;width:37px;background:#53ff00">1 227</div><div class="c" style="left:29px;top:248px;width:28px">25</div><div class="c" style="left:57px;top:248px;width:37px;background:#0fff00">944</div><div class="c" style="left:94px;top:248px;width:37px;background:#0fff00">946</div><div class="c" style="left:131px;top:248px;width:37px;background:#36ff00">1 104</div><div class="c" style="left:168px;top:248px;width:37px;background:#43ff00">1 160</div><div class="c" style="left:205px;top:248px;width:37px;background:#4cff00">1 196</div><div class="c" style="left:242px;top:248px;width:37px;background:#78ff00">1 381</div><div class="c" style="left:279px;top:248px;width:37px;background:#e0ff00">1 813</div><div class="c" style="left:316px;top:248px;width:37px;background:#efff00">1 872</div><div class="c" style="left:353px;top:248px;width:37px;background:#f7ff00">1 907</div><div class="c" style="left:390px;top:248px;width:37px;background:#fdff00">1 933</div><div class="c" style="left:427px;top:248px;width:37px;background:#fcff00">1 926</div><div class="c" style="left:464px;top:248px;width:37px;background:#e9ff00">1 850</div><div class="c" style="left:501px;top:248px;width:37px;background:#d7ff00">1 774</div><div class="c" style="left:29px;top:264px;width:28px">30</div><div class="c" style="left:57px;top:264px;width:37px;background:#10ff00">949</div><div class="c" style="left:94px;top:264px;width:37px;background:#10ff00">950</div><div class="c" style="left:131px;top:264px;width:37px;background:#3eff00">1 139</div><div class="c" style="left:168px;top:264px;width:37px;background:#4fff00">1 210</div><div class="c" style="left:205px;top:264px;width:37px;background:#58ff00">1 248</div><div class="c" style="left:242px;top:264px;width:37px;background:#88ff00">1 447</div><div class="c" style="left:279px;top:264px;width:37px;background:#ffff00">1 942</div><div class="c" style="left:316px;top:264px;width:37px;background:#fff700">2 019</div><div class="c" style="left:353px;top:264px;width:37px;background:#fff100">2 069</div><div class="c" style="left:390px;top:264px;width:37px;background:#fff100">2 073</div><div class="c" style="left:427px;top:264px;width:37px;background:#fff400">2 045</div><div class="c" style="left:464px;top:264px;width:37px;background:#fff900">1 995</div><div class="c" style="left:501px;top:264px;width:37px;background:#fffe00">1 945</div><div class="c" style="left:29px;top:280px;width:28px">35</div><div class="c" style="left:57px;top:280px;width:37px;background:#11ff00">953</div><div class="c" style="left:94px;top:280px;width:37px;background:#11ff00">953</div><div class="c" style="left:131px;top:280px;width:37px;background:#46ff00">1 174</div><div class="c" style="left:168px;top:280px;width:37px;background:#5cff00">1 262</div><div class="c" style="left:205px;top:280px;width:37px;background:#6bff00">1 324</div><div class="c" style="left:242px;top:280px;width:37px;background:#9cff00">1 527</div><div class="c" style="left:279px;top:280px;width:37px;background:#ffec00">2 118</div><div class="c" style="left:316px;top:280px;width:37px;background:#ffe400">2 189</div><div class="c" style="left:353px;top:280px;width:37px;background:#ffdc00">2 269</div><div class="c" style="left:390px;top:280px;width:37px;background:#ffde00">2 248</div><div class="c" style="left:427px;top:280px;width:37px;background:#ffe400">2 196</div><div class="c" style="left:464px;top:280px;width:37px;background:#ffe900">2 143</div><div class="c" style="left:501px;top:280px;width:37px;background:#ffef00">2 091</div><div class="c" style="left:29px;top:296px;width:28px">40</div><div class="c" style="left:57px;top:296px;width:37px;background:#12ff00">958</div><div class="c" style="left:94px;top:296px;width:37px;background:#13ff00">962</div><div class="c" style="left:131px;top:296px;width:37px;background:#4eff00">1 204</div><div class="c" style="left:168px;top:296px;width:37px;background:#69ff00">1 316</div><div class="c" style="left:205px;top:296px;width:37px;background:#84ff00">1 428</div><div class="c" style="left:242px;top:296px;width:37px;background:#b0ff00">1 610</div><div class="c" style="left:279px;top:296px;width:37px;background:#ffdf00">2 245</div><div class="c" style="left:316px;top:296px;width:37px;background:#ffd600">2 322</div><div class="c" style="left:353px;top:296px;width:37px;background:#ffd400">2 344</div><div class="c" style="left:390px;top:296px;width:37px;background:#ffda00">2 292</div><div class="c" style="left:427px;top:296px;width:37px;background:#ffdf00">2 239</div><div class="c" style="left:464px;top:296px;width:37px;background:#ffe500">2 187</div><div class="c" style="left:501px;top:296px;width:37px;background:#ffea00">2 134</div><div class="c" style="left:29px;top:312px;width:28px">45</div><div class="c" style="left:57px;top:312px;width:37px;background:#14ff00">964</div><div class="c" style="left:94px;top:312px;width:37px;background:#17ff00">976</div><div class="c" style="left:131px;top:312px;width:37px;background:#55ff00">1 235</div><div class="c" style="left:168px;top:312px;width:37px;background:#7aff00">1 387</div><div class="c" style="left:205px;top:312px;width:37px;background:#9dff00">1 534</div><div class="c" style="left:242px;top:312px;width:37px;background:#3399ff;color:#fff">1 681</div><div class="c" style="left:279px;top:312px;width:37px;background:#ffd800">2 303</div><div class="c" style="left:316px;top:312px;width:37px;background:#ffce00">2 397</div><div class="c" style="left:353px;top:312px;width:37px;background:#ffcd00">2 413</div><div class="c" style="left:390px;top:312px;width:37px;background:#ffd200">2 360</div><div class="c" style="left:427px;top:312px;width:37px;background:#ffda00">2 283</div><div class="c" style="left:464px;top:312px;width:37px;background:#ffe000">2 230</div><div class="c" style="left:501px;top:312px;width:37px;background:#ffe600">2 178</div><div class="c" style="left:29px;top:328px;width:28px">50</div><div class="c" style="left:57px;top:328px;width:37px;background:#19ff00">984</div><div class="c" style="left:94px;top:328px;width:37px;background:#1cff00">998</div><div class="c" style="left:131px;top:328px;width:37px;background:#61ff00">1 285</div><div class="c" style="left:168px;top:328px;width:37px;background:#8fff00">1 477</div><div class="c" style="left:205px;top:328px;width:37px;background:#b4ff00">1 628</div><div class="c" style="left:242px;top:328px;width:37px;background:#d0ff00">1 743</div><div class="c" style="left:279px;top:328px;width:37px;background:#ffd400">2 345</div><div class="c" style="left:316px;top:328px;width:37px;background:#ffca00">2 439</div><div class="c" style="left:353px;top:328px;width:37px;background:#ffc900">2 448</div><div class="c" style="left:390px;top:328px;width:37px;background:#ffcb00">2 427</div><div class="c" style="left:427px;top:328px;width:37px;background:#ffd500">2 332</div><div class="c" style="left:464px;top:328px;width:37px;background:#ffdc00">2 273</div><div class="c" style="left:501px;top:328px;width:37px;background:#ffe100">2 221</div><div class="c" style="left:29px;top:344px;width:28px">55</div><div class="c" style="left:57px;top:344px;width:37px;background:#22ff00">1 023</div><div class="c" style="left:94px;top:344px;width:37px;background:#24ff00">1 032</div><div class="c" style="left:131px;top:344px;width:37px;background:#72ff00">1 354</div><div class="c" style="left:168px;top:344px;width:37px;background:#a2ff00">1 555</div><div class="c" style="left:205px;top:344px;width:37px;background:#caff00">1 718</div><div class="c" style="left:242px;top:344px;width:37px;background:#deff00">1 804</div><div class="c" style="left:279px;top:344px;width:37px;background:#ffd000">2 381</div><div class="c" style="left:316px;top:344px;width:37px;background:#ffc700">2 465</div><div class="c" style="left:353px;top:344px;width:37px;background:#ffc600">2 479</div><div class="c" style="left:390px;top:344px;width:37px;background:#ffc400">2 495</div><div class="c" style="left:427px;top:344px;width:37px;background:#ffca00">2 441</div><div class="c" style="left:464px;top:344px;width:37px;background:#ffcf00">2 387</div><div class="c" style="left:501px;top:344px;width:37px;background:#ffd500">2 332</div><div class="c" style="left:29px;top:360px;width:28px">60</div><div class="c" style="left:57px;top:360px;width:37px;background:#2dff00">1 069</div><div class="c" style="left:94px;top:360px;width:37px;background:#2fff00">1 077</div><div class="c" style="left:131px;top:360px;width:37px;background:#82ff00">1 420</div><div class="c" style="left:168px;top:360px;width:37px;background:#aeff00">1 605</div><div class="c" style="left:205px;top:360px;width:37px;background:#dbff00">1 791</div><div class="c" style="left:242px;top:360px;width:37px;background:#f0ff00">1 878</div><div class="c" style="left:279px;top:360px;width:37px;background:#ffcd00">2 405</div><div class="c" style="left:316px;top:360px;width:37px;background:#ffc600">2 477</div><div class="c" style="left:353px;top:360px;width:37px;background:#ffc600">2 480</div><div class="c" style="left:390px;top:360px;width:37px;background:#ffbf00">2 540</div><div class="c" style="left:427px;top:360px;width:37px;background:#ffc600">2 474</div><div class="c" style="left:464px;top:360px;width:37px;background:#ffca00">2 440</div><div class="c" style="left:501px;top:360px;width:37px;background:#ffd400">2 343</div><div class="c" style="left:29px;top:376px;width:28px">65</div><div class="c" style="left:57px;top:376px;width:37px;background:#37ff00">1 112</div><div class="c" style="left:94px;top:376px;width:37px;background:#3aff00">1 121</div><div class="c" style="left:131px;top:376px;width:37px;background:#8bff00">1 460</div><div class="c" style="left:168px;top:376px;width:37px;background:#b6ff00">1 635</div><div class="c" style="left:205px;top:376px;width:37px;background:#edff00">1 865</div><div class="c" style="left:242px;top:376px;width:37px;background:#fffa00">1 982</div><div class="c" style="left:279px;top:376px;width:37px;background:#ffcb00">2 424</div><div class="c" style="left:316px;top:376px;width:37px;background:#ffc500">2 483</div><div class="c" style="left:353px;top:376px;width:37px;background:#ffc400">2 495</div><div class="c" style="left:390px;top:376px;width:37px;background:#ffbe00">2 547</div><div class="c" style="left:427px;top:376px;width:37px;background:#ffc300">2 499</div><div class="c" style="left:464px;top:376px;width:37px;background:#ffc700">2 466</div><div class="c" style="left:501px;top:376px;width:37px;background:#ffd400">2 343</div><div class="c" style="left:29px;top:392px;width:28px">70</div><div class="c" style="left:57px;top:392px;width:37px;background:#45ff00">1 169</div><div class="c" style="left:94px;top:392px;width:37px;background:#47ff00">1 176</div><div class="c" style="left:131px;top:392px;width:37px;background:#92ff00">1 488</div><div class="c" style="left:168px;top:392px;width:37px;background:#bcff00">1 663</div><div class="c" style="left:205px;top:392px;width:37px;background:#fffc00">1 964</div><div class="c" style="left:242px;top:392px;width:37px;background:#ffec00">2 114</div><div class="c" style="left:279px;top:392px;width:37px;background:#ffc900">2 444</div><div class="c" style="left:316px;top:392px;width:37px;background:#ffc400">2 490</div><div class="c" style="left:353px;top:392px;width:37px;background:#ffc200">2 511</div><div class="c" style="left:390px;top:392px;width:37px;background:#ffbd00">2 557</div><div class="c" style="left:427px;top:392px;width:37px;background:#ffc100">2 523</div><div class="c" style="left:464px;top:392px;width:37px;background:#ffc700">2 464</div><div class="c" style="left:501px;top:392px;width:37px;background:#ffd100">2 376</div><div class="c" style="left:29px;top:408px;width:28px">75</div><div class="c" style="left:57px;top:408px;width:37px;background:#5aff00">1 255</div><div class="c" style="left:94px;top:408px;width:37px;background:#5bff00">1 261</div><div class="c" style="left:131px;top:408px;width:37px;background:#99ff00">1 518</div><div class="c" style="left:168px;top:408px;width:37px;background:#c7ff00">1 707</div><div class="c" style="left:205px;top:408px;width:37px;background:#fff200">2 064</div><div class="c" style="left:242px;top:408px;width:37px;background:#ffde00">2 247</div><div class="c" style="left:279px;top:408px;width:37px;background:#ffc700">2 464</div><div class="c" style="left:316px;top:408px;width:37px;background:#ffc400">2 498</div><div class="c" style="left:353px;top:408px;width:37px;background:#ffc100">2 527</div><div class="c" style="left:390px;top:408px;width:37px;background:#ffbb00">2 581</div><div class="c" style="left:427px;top:408px;width:37px;background:#ffbf00">2 538</div><div class="c" style="left:464px;top:408px;width:37px;background:#ffc400">2 494</div><div class="c" style="left:501px;top:408px;width:37px;background:#ffd000">2 386</div><div class="c" style="left:29px;top:424px;width:28px">80</div><div class="c" style="left:57px;top:424px;width:37px;background:#71ff00">1 351</div><div class="c" style="left:94px;top:424px;width:37px;background:#71ff00">1 352</div><div class="c" style="left:131px;top:424px;width:37px;background:#a0ff00">1 546</div><div class="c" style="left:168px;top:424px;width:37px;background:#d5ff00">1 764</div><div class="c" style="left:205px;top:424px;width:37px;background:#ffe700">2 162</div><div class="c" style="left:242px;top:424px;width:37px;background:#ffd200">2 365</div><div class="c" style="left:279px;top:424px;width:37px;background:#ffc400">2 493</div><div class="c" style="left:316px;top:424px;width:37px;background:#ffc100">2 518</div><div class="c" style="left:353px;top:424px;width:37px;background:#ffbf00">2 542</div><div class="c" style="left:390px;top:424px;width:37px;background:#ffba00">2 591</div><div class="c" style="left:427px;top:424px;width:37px;background:#ffbc00">2 570</div><div class="c" style="left:464px;top:424px;width:37px;background:#ffc200">2 511</div><div class="c" style="left:501px;top:424px;width:37px;background:#ffce00">2 399</div><div class="c" style="left:29px;top:440px;width:28px">85</div><div class="c" style="left:57px;top:440px;width:37px;background:#88ff00">1 447</div><div class="c" style="left:94px;top:440px;width:37px;background:#88ff00">1 445</div><div class="c" style="left:131px;top:440px;width:37px;background:#a8ff00">1 579</div><div class="c" style="left:168px;top:440px;width:37px;background:#e1ff00">1 816</div><div class="c" style="left:205px;top:440px;width:37px;background:#ffdc00">2 270</div><div class="c" style="left:242px;top:440px;width:37px;background:#ffc800">2 454</div><div class="c" style="left:279px;top:440px;width:37px;background:#ffbf00">2 538</div><div class="c" style="left:316px;top:440px;width:37px;background:#ffbd00">2 559</div><div class="c" style="left:353px;top:440px;width:37px;background:#ffb900">2 594</div><div class="c" style="left:390px;top:440px;width:37px;background:#ffb600">2 622</div><div class="c" style="left:427px;top:440px;width:37px;background:#ffba00">2 587</div><div class="c" style="left:464px;top:440px;width:37px;background:#ffc100">2 526</div><div class="c" style="left:501px;top:440px;width:37px;background:#ffca00">2 434</div><div class="c" style="left:29px;top:456px;width:28px">90</div><div class="c" style="left:57px;top:456px;width:37px;background:#9fff00">1 543</div><div class="c" style="left:94px;top:456px;width:37px;background:#a0ff00">1 545</div><div class="c" style="left:131px;top:456px;width:37px;background:#b4ff00">1 629</div><div class="c" style="left:168px;top:456px;width:37px;background:#ecff00">1 862</div><div class="c" style="left:205px;top:456px;width:37px;background:#ffd000">2 382</div><div class="c" style="left:242px;top:456px;width:37px;background:#ffc000">2 531</div><div class="c" style="left:279px;top:456px;width:37px;background:#ffba00">2 588</div><div class="c" style="left:316px;top:456px;width:37px;background:#ffb900">2 598</div><div class="c" style="left:353px;top:456px;width:37px;background:#ffb800">2 604</div><div class="c" style="left:390px;top:456px;width:37px;background:#ffb600">2 626</div><div class="c" style="left:427px;top:456px;width:37px;background:#ffb800">2 610</div><div class="c" style="left:464px;top:456px;width:37px;background:#ffc000">2 531</div><div class="c" style="left:501px;top:456px;width:37px;background:#ffc800">2 461</div><div class="c" style="left:29px;top:472px;width:28px">95</div><div class="c" style="left:57px;top:472px;width:37px;background:#b1ff00">1 614</div><div class="c" style="left:94px;top:472px;width:37px;background:#b2ff00">1 621</div><div class="c" style="left:131px;top:472px;width:37px;background:#c2ff00">1 685</div><div class="c" style="left:168px;top:472px;width:37px;background:#f5ff00">1 899</div><div class="c" style="left:205px;top:472px;width:37px;background:#ffc600">2 475</div><div class="c" style="left:242px;top:472px;width:37px;background:#ffb800">2 610</div><div class="c" style="left:279px;top:472px;width:37px;background:#ffb400">2 645</div><div class="c" style="left:316px;top:472px;width:37px;background:#ffb500">2 634</div><div class="c" style="left:353px;top:472px;width:37px;background:#ffb500">2 636</div><div class="c" style="left:390px;top:472px;width:37px;background:#ffb200">2 666</div><div class="c" style="left:427px;top:472px;width:37px;background:#ffb700">2 620</div><div class="c" style="left:464px;top:472px;width:37px;background:#ffbf00">2 542</div><div class="c" style="left:501px;top:472px;width:37px;background:#ffc400">2 496</div><div class="c" style="left:29px;top:488px;width:28px">100</div><div class="c" style="left:57px;top:488px;width:37px;background:#bbff00">1 659</div><div class="c" style="left:94px;top:488px;width:37px;background:#bdff00">1 665</div><div class="c" style="left:131px;top:488px;width:37px;background:#cfff00">1 740</div><div class="c" style="left:168px;top:488px;width:37px;background:#fdff00">1 930</div><div class="c" style="left:205px;top:488px;width:37px;background:#ffbf00">2 539</div><div class="c" style="left:242px;top:488px;width:37px;background:#ffb000">2 678</div><div class="c" style="left:279px;top:488px;width:37px;background:#ffae00">2 703</div><div class="c" style="left:316px;top:488px;width:37px;background:#ffaf00">2 693</div><div class="c" style="left:353px;top:488px;width:37px;background:#ffb100">2 674</div><div class="c" style="left:390px;top:488px;width:37px;background:#ffb300">2 655</div><div class="c" style="left:427px;top:488px;width:37px;background:#ffb500">2 636</div><div class="c" style="left:464px;top:488px;width:37px;background:#ffbc00">2 573</div><div class="c" style="left:501px;top:488px;width:37px;background:#ffc000">2 532</div><div class="c" style="left:29px;top:504px;width:28px">105</div><div class="c" style="left:57px;top:504px;width:37px;background:#c5ff00">1 700</div><div class="c" style="left:94px;top:504px;width:37px;background:#c8ff00">1 712</div><div class="c" style="left:131px;top:504px;width:37px;background:#dcff00">1 794</div><div class="c" style="left:168px;top:504px;width:37px;background:#fffc00">1 969</div><div class="c" style="left:205px;top:504px;width:37px;background:#ffb900">2 600</div><div class="c" style="left:242px;top:504px;width:37px;background:#ffaa00">2 743</div><div class="c" style="left:279px;top:504px;width:37px;background:#ffa900">2 748</div><div class="c" style="left:316px;top:504px;width:37px;background:#ffa700">2 767</div><div class="c" style="left:353px;top:504px;width:37px;background:#ffab00">2 732</div><div class="c" style="left:390px;top:504px;width:37px;background:#ffae00">2 702</div><div class="c" style="left:427px;top:504px;width:37px;background:#ffb100">2 670</div><div class="c" style="left:464px;top:504px;width:37px;background:#ffb700">2 616</div><div class="c" style="left:501px;top:504px;width:37px;background:#ffbc00">2 571</div>
<div class="a" style="left:57px;top:216px;width:1px;height:304px;background:rgba(255,255,255,.6)"></div><div class="a" style="left:57px;top:199px;width:1px;height:17px;background:#a0a0a0"></div><div class="a" style="left:94px;top:216px;width:1px;height:304px;background:rgba(255,255,255,.6)"></div><div class="a" style="left:94px;top:199px;width:1px;height:17px;background:#a0a0a0"></div><div class="a" style="left:131px;top:216px;width:1px;height:304px;background:rgba(255,255,255,.6)"></div><div class="a" style="left:131px;top:199px;width:1px;height:17px;background:#a0a0a0"></div><div class="a" style="left:168px;top:216px;width:1px;height:304px;background:rgba(255,255,255,.6)"></div><div class="a" style="left:168px;top:199px;width:1px;height:17px;background:#a0a0a0"></div><div class="a" style="left:205px;top:216px;width:1px;height:304px;background:rgba(255,255,255,.6)"></div><div class="a" style="left:205px;top:199px;width:1px;height:17px;background:#a0a0a0"></div><div class="a" style="left:242px;top:216px;width:1px;height:304px;background:rgba(255,255,255,.6)"></div><div class="a" style="left:242px;top:199px;width:1px;height:17px;background:#a0a0a0"></div><div class="a" style="left:279px;top:216px;width:1px;height:304px;background:rgba(255,255,255,.6)"></div><div class="a" style="left:279px;top:199px;width:1px;height:17px;background:#a0a0a0"></div><div class="a" style="left:316px;top:216px;width:1px;height:304px;background:rgba(255,255,255,.6)"></div><div class="a" style="left:316px;top:199px;width:1px;height:17px;background:#a0a0a0"></div><div class="a" style="left:353px;top:216px;width:1px;height:304px;background:rgba(255,255,255,.6)"></div><div class="a" style="left:353px;top:199px;width:1px;height:17px;background:#a0a0a0"></div><div class="a" style="left:390px;top:216px;width:1px;height:304px;background:rgba(255,255,255,.6)"></div><div class="a" style="left:390px;top:199px;width:1px;height:17px;background:#a0a0a0"></div><div class="a" style="left:427px;top:216px;width:1px;height:304px;background:rgba(255,255,255,.6)"></div><div class="a" style="left:427px;top:199px;width:1px;height:17px;background:#a0a0a0"></div><div class="a" style="left:464px;top:216px;width:1px;height:304px;background:rgba(255,255,255,.6)"></div><div class="a" style="left:464px;top:199px;width:1px;height:17px;background:#a0a0a0"></div><div class="a" style="left:501px;top:216px;width:1px;height:304px;background:rgba(255,255,255,.6)"></div><div class="a" style="left:501px;top:199px;width:1px;height:17px;background:#a0a0a0"></div><div class="a" style="left:538px;top:216px;width:1px;height:304px;background:rgba(255,255,255,.6)"></div><div class="a" style="left:538px;top:199px;width:1px;height:17px;background:#a0a0a0"></div><div class="a" style="left:57px;top:215px;width:482px;height:1px;background:rgba(255,255,255,.6)"></div><div class="a" style="left:29px;top:215px;width:28px;height:1px;background:#a0a0a0"></div><div class="a" style="left:57px;top:231px;width:482px;height:1px;background:rgba(255,255,255,.6)"></div><div class="a" style="left:29px;top:231px;width:28px;height:1px;background:#a0a0a0"></div><div class="a" style="left:57px;top:247px;width:482px;height:1px;background:rgba(255,255,255,.6)"></div><div class="a" style="left:29px;top:247px;width:28px;height:1px;background:#a0a0a0"></div><div class="a" style="left:57px;top:263px;width:482px;height:1px;background:rgba(255,255,255,.6)"></div><div class="a" style="left:29px;top:263px;width:28px;height:1px;background:#a0a0a0"></div><div class="a" style="left:57px;top:279px;width:482px;height:1px;background:rgba(255,255,255,.6)"></div><div class="a" style="left:29px;top:279px;width:28px;height:1px;background:#a0a0a0"></div><div class="a" style="left:57px;top:295px;width:482px;height:1px;background:rgba(255,255,255,.6)"></div><div class="a" style="left:29px;top:295px;width:28px;height:1px;background:#a0a0a0"></div><div class="a" style="left:57px;top:311px;width:482px;height:1px;background:rgba(255,255,255,.6)"></div><div class="a" style="left:29px;top:311px;width:28px;height:1px;background:#a0a0a0"></div><div class="a" style="left:57px;top:327px;width:482px;height:1px;background:rgba(255,255,255,.6)"></div><div class="a" style="left:29px;top:327px;width:28px;height:1px;background:#a0a0a0"></div><div class="a" style="left:57px;top:343px;width:482px;height:1px;background:rgba(255,255,255,.6)"></div><div class="a" style="left:29px;top:343px;width:28px;height:1px;background:#a0a0a0"></div><div class="a" style="left:57px;top:359px;width:482px;height:1px;background:rgba(255,255,255,.6)"></div><div class="a" style="left:29px;top:359px;width:28px;height:1px;background:#a0a0a0"></div><div class="a" style="left:57px;top:375px;width:482px;height:1px;background:rgba(255,255,255,.6)"></div><div class="a" style="left:29px;top:375px;width:28px;height:1px;background:#a0a0a0"></div><div class="a" style="left:57px;top:391px;width:482px;height:1px;background:rgba(255,255,255,.6)"></div><div class="a" style="left:29px;top:391px;width:28px;height:1px;background:#a0a0a0"></div><div class="a" style="left:57px;top:407px;width:482px;height:1px;background:rgba(255,255,255,.6)"></div><div class="a" style="left:29px;top:407px;width:28px;height:1px;background:#a0a0a0"></div><div class="a" style="left:57px;top:423px;width:482px;height:1px;background:rgba(255,255,255,.6)"></div><div class="a" style="left:29px;top:423px;width:28px;height:1px;background:#a0a0a0"></div><div class="a" style="left:57px;top:439px;width:482px;height:1px;background:rgba(255,255,255,.6)"></div><div class="a" style="left:29px;top:439px;width:28px;height:1px;background:#a0a0a0"></div><div class="a" style="left:57px;top:455px;width:482px;height:1px;background:rgba(255,255,255,.6)"></div><div class="a" style="left:29px;top:455px;width:28px;height:1px;background:#a0a0a0"></div><div class="a" style="left:57px;top:471px;width:482px;height:1px;background:rgba(255,255,255,.6)"></div><div class="a" style="left:29px;top:471px;width:28px;height:1px;background:#a0a0a0"></div><div class="a" style="left:57px;top:487px;width:482px;height:1px;background:rgba(255,255,255,.6)"></div><div class="a" style="left:29px;top:487px;width:28px;height:1px;background:#a0a0a0"></div><div class="a" style="left:57px;top:503px;width:482px;height:1px;background:rgba(255,255,255,.6)"></div><div class="a" style="left:29px;top:503px;width:28px;height:1px;background:#a0a0a0"></div><div class="a" style="left:57px;top:519px;width:482px;height:1px;background:rgba(255,255,255,.6)"></div><div class="a" style="left:29px;top:519px;width:28px;height:1px;background:#a0a0a0"></div><div class="a" style="left:29px;top:215px;width:510px;height:1px;background:#a0a0a0"></div><div class="a" style="left:29px;top:199px;width:510px;height:1px;background:#a0a0a0"></div><div class="a" style="left:29px;top:199px;width:1px;height:321px;background:#a0a0a0"></div><div class="a" style="left:57px;top:199px;width:1px;height:321px;background:#a0a0a0"></div><div class="a" style="left:538px;top:199px;width:1px;height:17px;background:#a0a0a0"></div>
<div class="a" style="left:547px;top:172px;width:817px;height:554px;border:1px solid #6a6a6a;background:#f0f0f0"></div>
<svg class="a" style="left:0;top:0" width="1366" height="768" viewBox="0 0 1366 768">
<defs><clipPath id="cp"><rect x="548" y="222" width="815" height="478"/></clipPath></defs>
<g clip-path="url(#cp)">
<path fill="#dfdfdf" d="M735 549.7L911 453.9L911.3 253.2L691.8 320.9Z"/>
<path fill="#dfdfdf" d="M1083.6 554.2L911 453.9L911.3 253.2L1127.3 323.9Z"/>
<path fill="#dfdfdf" d="M904.7 702.8L735 549.7L911 453.9L1083.6 554.2Z"/>
<path stroke="#000" stroke-width="1.2" fill="none" d="M691.8 320.9L911.3 253.2M911.3 253.2L1127.3 323.9M735 549.7L691.8 320.9M1083.6 554.2L1127.3 323.9M911 453.9L911.3 253.2M735 549.7L911 453.9M1083.6 554.2L911 453.9"/>
<path stroke="#000" stroke-width="1" fill="none" d="M691.8 320.9L690.5 314M699.4 318.6L698.1 311.7M706.9 316.2L705.7 309.4M714.3 314L713.1 307.2M721.6 311.7L720.5 305M728.8 309.5L727.7 302.8M735.9 307.3L734.9 300.6M742.9 305.1L742 298.5M749.8 303L748.9 296.4M756.6 300.9L755.8 294.3M763.4 298.8L762.5 292.3M770 296.8L769.2 290.3M776.5 294.8L775.8 288.3M783 292.8L782.3 286.3M789.4 290.8L788.7 284.4M795.7 288.9L795.1 282.5M801.9 287L801.3 280.6M808 285.1L807.5 278.7M814.1 283.2L813.6 276.9M820.1 281.4L819.6 275.1M826 279.5L825.5 273.3M831.8 277.7L831.4 271.5M837.6 276L837.2 269.8M843.2 274.2L842.9 268.1M848.9 272.5L848.6 266.4M854.4 270.8L854.1 264.7M859.9 269.1L859.7 263M865.3 267.4L865.1 261.4M870.7 265.8L870.5 259.8M876 264.1L875.8 258.2M881.2 262.5L881.1 256.6M886.4 260.9L886.2 255M891.5 259.4L891.4 253.5M896.5 257.8L896.4 251.9M901.5 256.3L901.5 250.4M906.4 254.7L906.4 248.9M911.3 253.2L911.3 247.4M1121.6 322L1122.9 315.1M1107.7 317.5L1108.8 310.6M1094.1 313L1095.2 306.3M1080.9 308.7L1081.9 302M1068 304.5L1068.9 297.9M1055.5 300.4L1056.3 293.8M1043.3 296.4L1044.1 289.9M1031.4 292.5L1032.1 286.1M1019.9 288.8L1020.5 282.4M1008.6 285.1L1009.1 278.7M997.6 281.5L998 275.2M986.8 277.9L987.2 271.7M976.4 274.5L976.7 268.4M966.1 271.2L966.4 265.1M956.1 267.9L956.4 261.9M946.4 264.7L946.6 258.7M936.9 261.6L937 255.7M927.5 258.6L927.6 252.7M918.4 255.6L918.5 249.7M735 549.7L727.5 553.7M1083.6 554.2L1091 558.5M733.3 540.4L725.7 544.5M1085.4 544.9L1092.9 549.2M731.5 531L723.8 535M1087.2 535.4L1094.8 539.7M729.7 521.3L721.9 525.3M1089 525.7L1096.7 529.9M727.8 511.5L719.9 515.5M1090.9 515.8L1098.7 520M725.9 501.5L717.9 505.4M1092.8 505.7L1100.7 509.9M724 491.2L715.9 495.1M1094.8 495.4L1102.8 499.5M722 480.7L713.8 484.6M1096.8 484.9L1104.9 489M720 470L711.7 473.8M1098.8 474.1L1107 478.2M717.9 459.1L709.5 462.8M1100.9 463.1L1109.2 467.1M715.8 447.9L707.3 451.6M1103 451.9L1111.5 455.8M713.6 436.5L705 440.1M1105.2 440.4L1113.8 444.3M711.4 424.8L702.7 428.4M1107.5 428.6L1116.1 432.4M709.1 412.9L700.3 416.4M1109.7 416.6L1118.5 420.3M706.8 400.6L697.9 404.1M1112.1 404.3L1121 408M704.5 388.1L695.4 391.5M1114.5 391.7L1123.5 395.3M702 375.3L692.8 378.6M1116.9 378.8L1126.1 382.3M699.6 362.2L690.2 365.5M1119.4 365.6L1128.7 369M697 348.8L687.6 352M1122 352L1131.4 355.4M694.4 335L684.8 338.1M1124.6 338.1L1134.2 341.4M691.8 320.9L682 323.9M1127.3 323.9L1137 327.1M900.2 698.7L891.1 706.2M889.2 688.8L880.1 696.1M878.5 679.2L869.4 686.3M868.1 669.8L859.1 676.7M858 660.7L849 667.4M848.2 651.8L839.2 658.3M838.6 643.1L829.6 649.5M829.3 634.7L820.3 640.9M820.2 626.5L811.2 632.6M811.3 618.5L802.4 624.4M802.7 610.7L793.8 616.5M794.3 603.1L785.4 608.7M786 595.7L777.2 601.2M778 588.5L769.2 593.8M770.2 581.4L761.4 586.6M762.5 574.5L753.8 579.6M755 567.7L746.4 572.7M747.7 561.2L739.1 566M740.6 554.7L732 559.5M904.7 702.8L911.2 708.7M910.9 697.6L917.5 703.4M917.1 692.5L923.6 698.2M923.1 687.4L929.7 693.1M929.1 682.5L935.7 688.1M935 677.6L941.5 683.1M940.8 672.8L947.3 678.2M946.5 668L953.1 673.4M952.2 663.3L958.7 668.6M957.7 658.7L964.3 663.9M963.2 654.2L969.8 659.3M968.6 649.7L975.2 654.7M974 645.2L980.5 650.2M979.2 640.9L985.8 645.8M984.4 636.5L991 641.4M989.6 632.3L996.1 637.1M994.6 628.1L1001.2 632.8M999.6 623.9L1006.2 628.6M1004.6 619.8L1011.1 624.4M1009.4 615.8L1016 620.3M1014.3 611.8L1020.8 616.3M1019 607.8L1025.5 612.3M1023.7 604L1030.2 608.3M1028.3 600.1L1034.8 604.4M1032.9 596.3L1039.4 600.6M1037.4 592.6L1043.9 596.8M1041.9 588.9L1048.3 593M1046.3 585.2L1052.7 589.3M1050.6 581.6L1057.1 585.6M1054.9 578L1061.3 582M1059.2 574.5L1065.6 578.5M1063.4 571L1069.8 574.9M1067.5 567.6L1073.9 571.4M1071.6 564.2L1078 568M1075.7 560.8L1082 564.6M1079.7 557.5L1086 561.2M1083.6 554.2L1090 557.9"/>
<path fill="#ffa700" stroke="#ffa700" stroke-width=".5" d="M915.7 288.4L911 288.2L914.2 285.5ZM915.7 288.4L914.2 285.5L919 285.6ZM911 288.2L910.4 288.2L909.2 285.7L909.5 285.4ZM911 288.2L909.5 285.4L914.2 285.5ZM909 285.4L909.5 285.4L909.2 285.7ZM919 285.6L914.2 285.5L917.4 282.7ZM919 285.6L917.4 282.7L922.2 282.8ZM914.2 285.5L909.5 285.4L912.7 282.7ZM914.2 285.5L912.7 282.7L917.4 282.7ZM909.5 285.4L909 285.4L908 282.8L908.1 282.7ZM909.5 285.4L908.1 282.7L912.7 282.7ZM922.2 282.8L917.4 282.7L920.6 280ZM922.2 282.8L920.6 280L925.4 280ZM917.4 282.7L912.7 282.7L915.9 280.1ZM917.4 282.7L915.9 280.1L920.6 280ZM912.7 282.7L908.1 282.7L911.3 280.1ZM912.7 282.7L911.3 280.1L915.9 280.1Z"/>
<path fill="#ffc000" stroke="#ffc000" stroke-width=".5" d="M910.4 288.2L906.3 288.1L909.2 285.7ZM906.3 288.1L901.7 287.9L904.9 285.3ZM906.3 288.1L904.9 285.3L909 285.4L909.2 285.7ZM909 285.4L904.9 285.3L908 282.8Z"/>
<path class="g" d="M915.7 288.4L901.7 287.9L911.3 280.1L925.4 280Z"/>
<path fill="#ffc000" stroke="#ffc000" stroke-width=".5" d="M905.9 295.5L901.2 295.5L904.5 293ZM905.9 295.5L904.5 293L909.2 293.1ZM901.2 295.5L896.6 295.5L899.8 293ZM901.2 295.5L899.8 293L904.5 293ZM896.6 295.5L892 295.4L895.3 292.9ZM896.6 295.5L895.3 292.9L899.8 293ZM909.2 293.1L904.5 293L907.8 290.6ZM909.2 293.1L907.8 290.6L910.8 290.7L910.9 291.9ZM904.5 293L899.8 293L903.1 290.5ZM904.5 293L903.1 290.5L907.8 290.6ZM899.8 293L895.3 292.9L898.5 290.4ZM899.8 293L898.5 290.4L903.1 290.5ZM910.8 290.7L907.8 290.6L910.5 288.6ZM907.8 290.6L903.1 290.5L906.3 288.1ZM907.8 290.6L906.3 288.1L910.4 288.2L910.5 288.6ZM903.1 290.5L898.5 290.4L901.7 287.9ZM903.1 290.5L901.7 287.9L906.3 288.1Z"/>
<path fill="#ffa700" stroke="#ffa700" stroke-width=".5" d="M910.8 290.7L912.5 290.7L910.9 291.9ZM912.5 290.7L910.8 290.7L910.5 288.6L911 288.2ZM912.5 290.7L911 288.2L915.7 288.4ZM910.4 288.2L911 288.2L910.5 288.6Z"/>
<path class="g" d="M905.9 295.5L892 295.4L901.7 287.9L915.7 288.4Z"/>
<path fill="#ffc000" stroke="#ffc000" stroke-width=".5" d="M895.9 300.4L891.3 301.2L894.6 299.3ZM895.9 300.4L894.6 299.3L899.3 298.7ZM891.3 301.2L886.7 302.1L890 299.9ZM891.3 301.2L890 299.9L894.6 299.3ZM886.7 302.1L882.1 303L885.4 300.4ZM886.7 302.1L885.4 300.4L890 299.9ZM899.3 298.7L894.6 299.3L897.9 297.4ZM899.3 298.7L897.9 297.4L902.6 297.1ZM894.6 299.3L890 299.9L893.3 297.7ZM894.6 299.3L893.3 297.7L897.9 297.4ZM890 299.9L885.4 300.4L888.7 297.9ZM890 299.9L888.7 297.9L893.3 297.7ZM902.6 297.1L897.9 297.4L901.2 295.5ZM902.6 297.1L901.2 295.5L905.9 295.5ZM897.9 297.4L893.3 297.7L896.6 295.5ZM897.9 297.4L896.6 295.5L901.2 295.5ZM893.3 297.7L888.7 297.9L892 295.4ZM893.3 297.7L892 295.4L896.6 295.5Z"/>
<path class="g" d="M895.9 300.4L882.1 303L892 295.4L905.9 295.5Z"/>
<path fill="#ffa700" stroke="#ffa700" stroke-width=".5" d="M930.5 286.2L925.5 286.9L928.7 284.3ZM930.5 286.2L928.7 284.3L933.7 283.7ZM925.5 286.9L920.6 287.7L923.8 284.9ZM925.5 286.9L923.8 284.9L928.7 284.3ZM920.6 287.7L915.7 288.4L919 285.6ZM920.6 287.7L919 285.6L923.8 284.9ZM933.7 283.7L928.7 284.3L932 281.7ZM933.7 283.7L932 281.7L937 281.2ZM928.7 284.3L923.8 284.9L927.1 282.2ZM928.7 284.3L927.1 282.2L932 281.7ZM923.8 284.9L919 285.6L922.2 282.8ZM923.8 284.9L922.2 282.8L927.1 282.2ZM937 281.2L932 281.7L935.2 279.1ZM937 281.2L935.2 279.1L940.2 278.7ZM932 281.7L927.1 282.2L930.3 279.5ZM932 281.7L930.3 279.5L935.2 279.1ZM927.1 282.2L922.2 282.8L925.4 280ZM927.1 282.2L925.4 280L930.3 279.5Z"/>
<path class="g" d="M930.5 286.2L915.7 288.4L925.4 280L940.2 278.7Z"/>
<path fill="#ffc000" stroke="#ffc000" stroke-width=".5" d="M885.7 304.6L881.1 306.3L884.5 304.6ZM885.7 304.6L884.5 304.6L889.1 303.2ZM881.1 306.3L876.5 308L879.9 306ZM881.1 306.3L879.9 306L884.5 304.6ZM876.5 308L872.1 309.7L875.5 307.4ZM876.5 308L875.5 307.4L879.9 306ZM889.1 303.2L884.5 304.6L887.9 302.9ZM889.1 303.2L887.9 302.9L892.5 301.8ZM884.5 304.6L879.9 306L883.3 304.1ZM884.5 304.6L883.3 304.1L887.9 302.9ZM879.9 306L875.5 307.4L878.8 305.2ZM879.9 306L878.8 305.2L883.3 304.1ZM892.5 301.8L887.9 302.9L891.3 301.2ZM892.5 301.8L891.3 301.2L895.9 300.4ZM887.9 302.9L883.3 304.1L886.7 302.1ZM887.9 302.9L886.7 302.1L891.3 301.2ZM883.3 304.1L878.8 305.2L882.1 303ZM883.3 304.1L882.1 303L886.7 302.1Z"/>
<path class="g" d="M885.7 304.6L872.1 309.7L882.1 303L895.9 300.4Z"/>
<path fill="#ffa700" stroke="#ffa700" stroke-width=".5" d="M920.5 291.7L915.6 293L918.9 290.9ZM920.5 291.7L918.9 290.9L923.9 289.8ZM915.6 293L910.7 294.2L914 292ZM915.6 293L914 292L918.9 290.9ZM910.7 294.2L908.8 294.7L909.7 293.5ZM910.7 294.2L909.7 293.5L910.2 292.9L914 292ZM923.9 289.8L918.9 290.9L922.2 288.9ZM923.9 289.8L922.2 288.9L927.2 288ZM918.9 290.9L914 292L917.3 289.8ZM918.9 290.9L917.3 289.8L922.2 288.9ZM914 292L910.2 292.9L910.9 291.9L912.5 290.7ZM914 292L912.5 290.7L917.3 289.8ZM927.2 288L922.2 288.9L925.5 286.9ZM927.2 288L925.5 286.9L930.5 286.2ZM922.2 288.9L917.3 289.8L920.6 287.7ZM922.2 288.9L920.6 287.7L925.5 286.9ZM917.3 289.8L912.5 290.7L915.7 288.4ZM917.3 289.8L915.7 288.4L920.6 287.7Z"/>
<path fill="#ffc000" stroke="#ffc000" stroke-width=".5" d="M908.8 294.7L905.9 295.5L909.2 293.1L909.7 293.5ZM909.7 293.5L909.2 293.1L910.2 292.9ZM910.2 292.9L909.2 293.1L910.9 291.9Z"/>
<path class="g" d="M920.5 291.7L905.9 295.5L915.7 288.4L930.5 286.2Z"/>
<path fill="#ffc000" stroke="#ffc000" stroke-width=".5" d="M875.3 310.2L870.7 312.7L874.2 310.5ZM875.3 310.2L874.2 310.5L878.8 308.3ZM870.7 312.7L866.3 315.1L869.7 312.7ZM870.7 312.7L869.7 312.7L874.2 310.5ZM866.3 315.1L861.9 317.5L865.3 314.9ZM866.3 315.1L865.3 314.9L869.7 312.7ZM878.8 308.3L874.2 310.5L877.6 308.4ZM878.8 308.3L877.6 308.4L882.2 306.4ZM874.2 310.5L869.7 312.7L873.1 310.4ZM874.2 310.5L873.1 310.4L877.6 308.4ZM869.7 312.7L865.3 314.9L868.7 312.3ZM869.7 312.7L868.7 312.3L873.1 310.4ZM882.2 306.4L877.6 308.4L881.1 306.3ZM882.2 306.4L881.1 306.3L885.7 304.6ZM877.6 308.4L873.1 310.4L876.5 308ZM877.6 308.4L876.5 308L881.1 306.3ZM873.1 310.4L868.7 312.3L872.1 309.7ZM873.1 310.4L872.1 309.7L876.5 308Z"/>
<path class="g" d="M875.3 310.2L861.9 317.5L872.1 309.7L885.7 304.6Z"/>
<path fill="#ffa700" stroke="#ffa700" stroke-width=".5" d="M910.4 296.5L905.5 297.8L908.9 296.2ZM910.4 296.5L908.9 296.2L913.8 294.9ZM905.5 297.8L900.7 299.1L900.9 299L904 297.5ZM905.5 297.8L904 297.5L908.9 296.2ZM903.4 297.6L904 297.5L900.9 299ZM913.8 294.9L908.9 296.2L912.3 294.6ZM913.8 294.9L912.3 294.6L917.2 293.3ZM908.9 296.2L904 297.5L907.4 295.8ZM908.9 296.2L907.4 295.8L912.3 294.6ZM904 297.5L903.4 297.6L903.8 297.4ZM904 297.5L903.8 297.4L906.1 296.2L907.4 295.8ZM917.2 293.3L912.3 294.6L915.6 293ZM917.2 293.3L915.6 293L920.5 291.7ZM912.3 294.6L907.4 295.8L910.7 294.2ZM912.3 294.6L910.7 294.2L915.6 293ZM907.4 295.8L906.1 296.2L906.9 295.7ZM907.4 295.8L906.9 295.7L908.8 294.7L910.7 294.2Z"/>
<path fill="#ffc000" stroke="#ffc000" stroke-width=".5" d="M900.7 299.1L900.7 299.1L900.9 299ZM900.7 299.1L895.9 300.4L899.3 298.7ZM900.7 299.1L899.3 298.7L903.4 297.6L900.9 299ZM903.4 297.6L899.3 298.7L902.6 297.1L903.8 297.4ZM903.8 297.4L902.6 297.1L906.1 296.2ZM906.1 296.2L902.6 297.1L905.9 295.5L906.9 295.7ZM906.9 295.7L905.9 295.5L908.8 294.7Z"/>
<path class="g" d="M910.4 296.5L895.9 300.4L905.9 295.5L920.5 291.7Z"/>
<path fill="#ffc000" stroke="#ffc000" stroke-width=".5" d="M864.6 316.1L860.1 318.4L863.7 316.5ZM864.6 316.1L863.7 316.5L868.2 314.1ZM860.1 318.4L855.7 320.6L859.3 318.8ZM860.1 318.4L859.3 318.8L863.7 316.5ZM855.7 320.6L851.4 322.8L854.9 321ZM855.7 320.6L854.9 321L859.3 318.8ZM868.2 314.1L863.7 316.5L867.2 314.5ZM868.2 314.1L867.2 314.5L871.7 312.1ZM863.7 316.5L859.3 318.8L862.8 316.9ZM863.7 316.5L862.8 316.9L867.2 314.5ZM859.3 318.8L854.9 321L858.4 319.2ZM859.3 318.8L858.4 319.2L862.8 316.9ZM871.7 312.1L867.2 314.5L870.7 312.7ZM871.7 312.1L870.7 312.7L875.3 310.2ZM867.2 314.5L862.8 316.9L866.3 315.1ZM867.2 314.5L866.3 315.1L870.7 312.7ZM862.8 316.9L858.4 319.2L861.9 317.5ZM862.8 316.9L861.9 317.5L866.3 315.1Z"/>
<path class="g" d="M864.6 316.1L851.4 322.8L861.9 317.5L875.3 310.2Z"/>
<path fill="#ffa700" stroke="#ffa700" stroke-width=".5" d="M945.8 289.4L940.6 288.3L943.9 285.4ZM945.8 289.4L943.9 285.4L949.1 286.3ZM940.6 288.3L935.5 287.2L938.8 284.5ZM940.6 288.3L938.8 284.5L943.9 285.4ZM935.5 287.2L930.5 286.2L933.7 283.7ZM935.5 287.2L933.7 283.7L938.8 284.5ZM949.1 286.3L943.9 285.4L947.2 282.5ZM949.1 286.3L947.2 282.5L952.4 283.2ZM943.9 285.4L938.8 284.5L942.1 281.8ZM943.9 285.4L942.1 281.8L947.2 282.5ZM938.8 284.5L933.7 283.7L937 281.2ZM938.8 284.5L937 281.2L942.1 281.8ZM952.4 283.2L947.2 282.5L950.4 279.6ZM952.4 283.2L950.4 279.6L955.7 280.1ZM947.2 282.5L942.1 281.8L945.3 279.1ZM947.2 282.5L945.3 279.1L950.4 279.6ZM942.1 281.8L937 281.2L940.2 278.7ZM942.1 281.8L940.2 278.7L945.3 279.1Z"/>
<path class="g" d="M945.8 289.4L930.5 286.2L940.2 278.7L955.7 280.1Z"/>
<path fill="#ffa700" stroke="#ffa700" stroke-width=".5" d="M900.1 303L895.2 303.6L898.7 301.6ZM900.1 303L898.7 301.6L903.6 300.8ZM895.2 303.6L893.1 303.8L894.5 302.9ZM895.2 303.6L894.5 302.9L895.5 302.2L898.7 301.6ZM903.6 300.8L898.7 301.6L902.1 299.7ZM903.6 300.8L902.1 299.7L907 298.7ZM898.7 301.6L895.5 302.2L897.6 300.9ZM898.7 301.6L897.6 300.9L898 300.6L902.1 299.7ZM907 298.7L902.1 299.7L905.5 297.8ZM907 298.7L905.5 297.8L910.4 296.5ZM902.1 299.7L898 300.6L900.7 299.1ZM902.1 299.7L900.7 299.1L900.7 299.1L905.5 297.8Z"/>
<path fill="#ffc000" stroke="#ffc000" stroke-width=".5" d="M893.1 303.8L890.4 304.1L893.9 302.4L894.5 302.9ZM894.5 302.9L893.9 302.4L895.5 302.2ZM890.4 304.1L885.7 304.6L889.1 303.2ZM890.4 304.1L889.1 303.2L893.9 302.4ZM895.5 302.2L893.9 302.4L897.3 300.7L897.6 300.9ZM897.6 300.9L897.3 300.7L898 300.6ZM893.9 302.4L889.1 303.2L892.5 301.8ZM893.9 302.4L892.5 301.8L897.3 300.7ZM898 300.6L897.3 300.7L900.7 299.1L900.7 299.1ZM900.7 299.1L900.7 299.1L900.7 299.1ZM897.3 300.7L892.5 301.8L895.9 300.4ZM897.3 300.7L895.9 300.4L900.7 299.1Z"/>
<path class="g" d="M900.1 303L885.7 304.6L895.9 300.4L910.4 296.5Z"/>
<path fill="#ffa700" stroke="#ffa700" stroke-width=".5" d="M935.9 291.6L930.7 291.6L934 290.5ZM935.9 291.6L934 290.5L939.2 290.9ZM930.7 291.6L925.6 291.6L928.9 290.2ZM930.7 291.6L928.9 290.2L934 290.5ZM925.6 291.6L920.5 291.7L923.9 289.8ZM925.6 291.6L923.9 289.8L928.9 290.2ZM939.2 290.9L934 290.5L937.3 289.4ZM939.2 290.9L937.3 289.4L942.5 290.1ZM934 290.5L928.9 290.2L932.2 288.7ZM934 290.5L932.2 288.7L937.3 289.4ZM928.9 290.2L923.9 289.8L927.2 288ZM928.9 290.2L927.2 288L932.2 288.7ZM942.5 290.1L937.3 289.4L940.6 288.3ZM942.5 290.1L940.6 288.3L945.8 289.4ZM937.3 289.4L932.2 288.7L935.5 287.2ZM937.3 289.4L935.5 287.2L940.6 288.3ZM932.2 288.7L927.2 288L930.5 286.2ZM932.2 288.7L930.5 286.2L935.5 287.2Z"/>
<path class="g" d="M935.9 291.6L920.5 291.7L930.5 286.2L945.8 289.4Z"/>
<path fill="#ffc000" stroke="#ffc000" stroke-width=".5" d="M853.8 323.7L849.4 325.1L853 322.9ZM853.8 323.7L853 322.9L857.4 321.1ZM849.4 325.1L845 326.5L848.6 324.6ZM849.4 325.1L848.6 324.6L853 322.9ZM845 326.5L840.7 327.9L844.3 326.2ZM845 326.5L844.3 326.2L848.6 324.6ZM857.4 321.1L853 322.9L856.6 320.6ZM857.4 321.1L856.6 320.6L861 318.6ZM853 322.9L848.6 324.6L852.2 322.6ZM853 322.9L852.2 322.6L856.6 320.6ZM848.6 324.6L844.3 326.2L847.9 324.5ZM848.6 324.6L847.9 324.5L852.2 322.6ZM861 318.6L856.6 320.6L860.1 318.4ZM861 318.6L860.1 318.4L864.6 316.1ZM856.6 320.6L852.2 322.6L855.7 320.6ZM856.6 320.6L855.7 320.6L860.1 318.4ZM852.2 322.6L847.9 324.5L851.4 322.8ZM852.2 322.6L851.4 322.8L855.7 320.6Z"/>
<path class="g" d="M853.8 323.7L840.7 327.9L851.4 322.8L864.6 316.1Z"/>
<path fill="#39ff00" stroke="#39ff00" stroke-width=".5" d="M739.5 522.1L736.4 522.8L739.4 514.9ZM739.5 522.1L739.4 514.9L742.6 513.9ZM736.4 522.8L733.2 523.4L736.3 515.9ZM736.4 522.8L736.3 515.9L739.4 514.9ZM733.2 523.4L731.6 523.7L731.3 521.4L733.3 516.9ZM733.2 523.4L733.3 516.9L736.3 515.9ZM742.6 513.9L739.4 514.9L742.5 507ZM742.6 513.9L742.5 507L744.8 506L745.1 507.4ZM739.4 514.9L736.3 515.9L739.4 508.4ZM739.4 514.9L739.4 508.4L742.5 507ZM736.3 515.9L733.3 516.9L736.4 509.8ZM736.3 515.9L736.4 509.8L739.4 508.4ZM744.8 506L742.5 507L744.4 502.5ZM742.5 507L739.4 508.4L742.6 500.9ZM742.5 507L742.6 500.9L744.1 500L744.4 502.5ZM739.4 508.4L736.4 509.8L739.6 502.7ZM739.4 508.4L739.6 502.7L742.6 500.9Z"/>
<path fill="#00ff00" stroke="#00ff00" stroke-width=".5" d="M731.6 523.7L730.2 524.1L731.3 521.4Z"/>
<path fill="#72ff00" stroke="#72ff00" stroke-width=".5" d="M744.8 506L745.7 505.6L745.1 507.4ZM745.7 505.6L744.8 506L744.4 502.5L745.7 499.1ZM745.7 505.6L745.7 499.1L748.8 497.3ZM744.1 500L745.7 499.1L744.4 502.5Z"/>
<path class="g" d="M739.5 522.1L730.2 524.1L739.6 502.7L748.8 497.3Z"/>
<path fill="#ffc000" stroke="#ffc000" stroke-width=".5" d="M886.5 309.2L884.7 309.4L888.2 307.4L888.4 307.6ZM888.4 307.6L888.2 307.4L888.7 307.4ZM884.7 309.4L879.9 309.8L883.5 307.9ZM884.7 309.4L883.5 307.9L888.2 307.4ZM879.9 309.8L875.3 310.2L878.8 308.3ZM879.9 309.8L878.8 308.3L883.5 307.9ZM888.7 307.4L888.2 307.4L889.4 306.8ZM888.2 307.4L883.5 307.9L886.9 306ZM888.2 307.4L886.9 306L890.9 305.6L889.4 306.8ZM883.5 307.9L878.8 308.3L882.2 306.4ZM883.5 307.9L882.2 306.4L886.9 306ZM890.9 305.6L886.9 306L890.4 304.1L891.4 305.1ZM891.4 305.1L890.4 304.1L893.1 303.8ZM886.9 306L882.2 306.4L885.7 304.6ZM886.9 306L885.7 304.6L890.4 304.1Z"/>
<path fill="#ffa700" stroke="#ffa700" stroke-width=".5" d="M889.6 309L886.5 309.2L888.4 307.6ZM889.6 309L888.4 307.6L888.7 307.4L893.1 307ZM893.1 307L888.7 307.4L889.4 306.8L891.7 305.5ZM893.1 307L891.7 305.5L896.6 305ZM890.9 305.6L891.7 305.5L889.4 306.8ZM896.6 305L891.7 305.5L895.2 303.6ZM896.6 305L895.2 303.6L900.1 303ZM891.7 305.5L890.9 305.6L891.4 305.1ZM891.7 305.5L891.4 305.1L893.1 303.8L895.2 303.6Z"/>
<path class="g" d="M889.6 309L875.3 310.2L885.7 304.6L900.1 303Z"/>
<path fill="#ffc000" stroke="#ffc000" stroke-width=".5" d="M842.6 327.6L838.3 330.4L842 328.6ZM842.6 327.6L842 328.6L846.4 326.3ZM838.3 330.4L834 333.2L837.7 330.9ZM838.3 330.4L837.7 330.9L842 328.6ZM834 333.2L830.4 335.5L831.6 334.6L833.5 333.2ZM834 333.2L833.5 333.2L837.7 330.9ZM846.4 326.3L842 328.6L845.7 326.9ZM846.4 326.3L845.7 326.9L850.1 325ZM842 328.6L837.7 330.9L841.4 328.7ZM842 328.6L841.4 328.7L845.7 326.9ZM837.7 330.9L833.5 333.2L837.1 330.6ZM837.7 330.9L837.1 330.6L841.4 328.7ZM850.1 325L845.7 326.9L849.4 325.1ZM850.1 325L849.4 325.1L853.8 323.7ZM845.7 326.9L841.4 328.7L845 326.5ZM845.7 326.9L845 326.5L849.4 325.1ZM841.4 328.7L837.1 330.6L840.7 327.9ZM841.4 328.7L840.7 327.9L845 326.5Z"/>
<path fill="#ffd900" stroke="#ffd900" stroke-width=".5" d="M830.4 335.5L829.9 335.9L831.6 334.6Z"/>
<path class="g" d="M842.6 327.6L829.9 335.9L840.7 327.9L853.8 323.7Z"/>
<path fill="#ffa700" stroke="#ffa700" stroke-width=".5" d="M925.6 300.3L920.5 299L923.9 296.5ZM925.6 300.3L923.9 296.5L929.1 297.4ZM920.5 299L915.4 297.8L918.8 295.7ZM920.5 299L918.8 295.7L923.9 296.5ZM915.4 297.8L910.4 296.5L913.8 294.9ZM915.4 297.8L913.8 294.9L918.8 295.7ZM929.1 297.4L923.9 296.5L927.3 294.1ZM929.1 297.4L927.3 294.1L932.5 294.5ZM923.9 296.5L918.8 295.7L922.2 293.7ZM923.9 296.5L922.2 293.7L927.3 294.1ZM918.8 295.7L913.8 294.9L917.2 293.3ZM918.8 295.7L917.2 293.3L922.2 293.7ZM932.5 294.5L927.3 294.1L930.7 291.6ZM932.5 294.5L930.7 291.6L935.9 291.6ZM927.3 294.1L922.2 293.7L925.6 291.6ZM927.3 294.1L925.6 291.6L930.7 291.6ZM922.2 293.7L917.2 293.3L920.5 291.7ZM922.2 293.7L920.5 291.7L925.6 291.6Z"/>
<path class="g" d="M925.6 300.3L910.4 296.5L920.5 291.7L935.9 291.6Z"/>
<path fill="#ffa700" stroke="#ffa700" stroke-width=".5" d="M961.7 292.6L956.3 291.5L959.7 288.1ZM961.7 292.6L959.7 288.1L965.1 289ZM956.3 291.5L951 290.4L954.3 287.2ZM956.3 291.5L954.3 287.2L959.7 288.1ZM951 290.4L945.8 289.4L949.1 286.3ZM951 290.4L949.1 286.3L954.3 287.2ZM965.1 289L959.7 288.1L963 284.6ZM965.1 289L963 284.6L968.4 285.4ZM959.7 288.1L954.3 287.2L957.7 283.9ZM959.7 288.1L957.7 283.9L963 284.6ZM954.3 287.2L949.1 286.3L952.4 283.2ZM954.3 287.2L952.4 283.2L957.7 283.9ZM968.4 285.4L963 284.6L966.3 281.2ZM968.4 285.4L966.3 281.2L971.8 281.8ZM963 284.6L957.7 283.9L961 280.6ZM963 284.6L961 280.6L966.3 281.2ZM957.7 283.9L952.4 283.2L955.7 280.1ZM957.7 283.9L955.7 280.1L961 280.6Z"/>
<path class="g" d="M961.7 292.6L945.8 289.4L955.7 280.1L971.8 281.8Z"/>
<path fill="#ffc000" stroke="#ffc000" stroke-width=".5" d="M878.8 316.9L874 316.6L877.6 314.2ZM878.8 316.9L877.6 314.2L882.4 314.2ZM874 316.6L869.3 316.3L872.9 314.1ZM874 316.6L872.9 314.1L877.6 314.2ZM869.3 316.3L864.6 316.1L868.2 314.1ZM869.3 316.3L868.2 314.1L872.9 314.1ZM882.4 314.2L877.6 314.2L881.2 311.8ZM882.4 314.2L881.2 311.8L885.5 311.6L885.4 312ZM877.6 314.2L872.9 314.1L876.4 312ZM877.6 314.2L876.4 312L881.2 311.8ZM872.9 314.1L868.2 314.1L871.7 312.1ZM872.9 314.1L871.7 312.1L876.4 312ZM885.5 311.6L881.2 311.8L884.7 309.4L885.7 311.2ZM885.7 311.2L884.7 309.4L886.5 309.2ZM881.2 311.8L876.4 312L879.9 309.8ZM881.2 311.8L879.9 309.8L884.7 309.4ZM876.4 312L871.7 312.1L875.3 310.2ZM876.4 312L875.3 310.2L879.9 309.8Z"/>
<path fill="#ffa700" stroke="#ffa700" stroke-width=".5" d="M885.5 311.6L886 311.6L885.4 312ZM886 311.6L885.5 311.6L885.7 311.2ZM886 311.6L885.7 311.2L886.5 309.2L889.6 309Z"/>
<path class="g" d="M878.8 316.9L864.6 316.1L875.3 310.2L889.6 309Z"/>
<path fill="#ffa700" stroke="#ffa700" stroke-width=".5" d="M951.6 301.2L946.3 298L949.7 295.8ZM951.6 301.2L949.7 295.8L955 298.3ZM946.3 298L941.1 294.8L944.4 293.3ZM946.3 298L944.4 293.3L949.7 295.8ZM941.1 294.8L935.9 291.6L939.2 290.9ZM941.1 294.8L939.2 290.9L944.4 293.3ZM955 298.3L949.7 295.8L953 293.7ZM955 298.3L953 293.7L958.4 295.5ZM949.7 295.8L944.4 293.3L947.7 291.9ZM949.7 295.8L947.7 291.9L953 293.7ZM944.4 293.3L939.2 290.9L942.5 290.1ZM944.4 293.3L942.5 290.1L947.7 291.9ZM958.4 295.5L953 293.7L956.3 291.5ZM958.4 295.5L956.3 291.5L961.7 292.6ZM953 293.7L947.7 291.9L951 290.4ZM953 293.7L951 290.4L956.3 291.5ZM947.7 291.9L942.5 290.1L945.8 289.4ZM947.7 291.9L945.8 289.4L951 290.4Z"/>
<path class="g" d="M951.6 301.2L935.9 291.6L945.8 289.4L961.7 292.6Z"/>
<path fill="#ffa700" stroke="#ffa700" stroke-width=".5" d="M915.2 304.7L910.1 304.1L913.6 302.4ZM915.2 304.7L913.6 302.4L918.7 303.2ZM910.1 304.1L905.1 303.6L908.5 301.6ZM910.1 304.1L908.5 301.6L913.6 302.4ZM905.1 303.6L900.1 303L903.6 300.8ZM905.1 303.6L903.6 300.8L908.5 301.6ZM918.7 303.2L913.6 302.4L917.1 300.7ZM918.7 303.2L917.1 300.7L922.2 301.8ZM913.6 302.4L908.5 301.6L912 299.7ZM913.6 302.4L912 299.7L917.1 300.7ZM908.5 301.6L903.6 300.8L907 298.7ZM908.5 301.6L907 298.7L912 299.7ZM922.2 301.8L917.1 300.7L920.5 299ZM922.2 301.8L920.5 299L925.6 300.3ZM917.1 300.7L912 299.7L915.4 297.8ZM917.1 300.7L915.4 297.8L920.5 299ZM912 299.7L907 298.7L910.4 296.5ZM912 299.7L910.4 296.5L915.4 297.8Z"/>
<path class="g" d="M915.2 304.7L900.1 303L910.4 296.5L925.6 300.3Z"/>
<path fill="#ffc000" stroke="#ffc000" stroke-width=".5" d="M831.3 335L827 336.7L830.8 334.6ZM831.3 335L830.8 334.6L835.1 332.5ZM827 336.7L822.8 338.4L826.6 336.6ZM827 336.7L826.6 336.6L830.8 334.6ZM822.8 338.4L819.3 339.8L822.5 338.6ZM822.8 338.4L822.5 338.6L823 338.3L826.6 336.6ZM835.1 332.5L830.8 334.6L834.6 332.5ZM835.1 332.5L834.6 332.5L838.9 330ZM830.8 334.6L826.6 336.6L830.3 334.9ZM830.8 334.6L830.3 334.9L834.6 332.5ZM826.6 336.6L823 338.3L826.2 337.1ZM826.6 336.6L826.2 337.1L826.7 336.9L830.3 334.9ZM838.9 330L834.6 332.5L838.3 330.4ZM838.9 330L838.3 330.4L842.6 327.6ZM834.6 332.5L830.3 334.9L834 333.2ZM834.6 332.5L834 333.2L838.3 330.4ZM830.3 334.9L826.7 336.9L830 335.7ZM830.3 334.9L830 335.7L830.4 335.5L834 333.2Z"/>
<path fill="#ffd900" stroke="#ffd900" stroke-width=".5" d="M819.3 339.8L818.6 340L822.4 338.6L822.5 338.6ZM822.5 338.6L822.4 338.6L823 338.3ZM823 338.3L822.4 338.6L826.2 337.2L826.2 337.1ZM826.2 337.1L826.2 337.2L826.7 336.9ZM826.7 336.9L826.2 337.2L829.9 335.9L830 335.7ZM830 335.7L829.9 335.9L830.4 335.5Z"/>
<path class="g" d="M831.3 335L818.6 340L829.9 335.9L842.6 327.6Z"/>
<path fill="#ffc000" stroke="#ffc000" stroke-width=".5" d="M867.8 322.8L863.1 323.1L866.8 320.9ZM867.8 322.8L866.8 320.9L871.5 320.8ZM863.1 323.1L858.4 323.4L862.1 321ZM863.1 323.1L862.1 321L866.8 320.9ZM858.4 323.4L853.8 323.7L857.4 321.1ZM858.4 323.4L857.4 321.1L862.1 321ZM871.5 320.8L866.8 320.9L870.4 318.8ZM871.5 320.8L870.4 318.8L875.2 318.8ZM866.8 320.9L862.1 321L865.7 318.7ZM866.8 320.9L865.7 318.7L870.4 318.8ZM862.1 321L857.4 321.1L861 318.6ZM862.1 321L861 318.6L865.7 318.7ZM875.2 318.8L870.4 318.8L874 316.6ZM875.2 318.8L874 316.6L878.8 316.9ZM870.4 318.8L865.7 318.7L869.3 316.3ZM870.4 318.8L869.3 316.3L874 316.6ZM865.7 318.7L861 318.6L864.6 316.1ZM865.7 318.7L864.6 316.1L869.3 316.3Z"/>
<path class="g" d="M867.8 322.8L853.8 323.7L864.6 316.1L878.8 316.9Z"/>
<path fill="#72ff00" stroke="#72ff00" stroke-width=".5" d="M748.8 497.3L745.7 499.1L746.9 479.8ZM748.8 497.3L746.9 479.8L748.5 479.3L750.1 481.3ZM745.7 499.1L744.1 500L742.7 498.1L743.6 481ZM745.7 499.1L743.6 481L746.9 479.8ZM739.9 494.5L740.4 482.2L742.2 497.4ZM742.2 497.4L740.4 482.2L743.6 481L742.7 498.1ZM748.5 479.3L746.9 479.8L747.1 477.6ZM746.9 479.8L743.6 481L744 474.1L746.6 477.1ZM746.9 479.8L746.6 477.1L747.1 477.6ZM743.6 481L740.4 482.2L740.9 470.6L742.7 472.6ZM743.6 481L742.7 472.6L744 474.1Z"/>
<path fill="#aaff00" stroke="#aaff00" stroke-width=".5" d="M748.5 479.3L750.3 478.6L750.1 481.3ZM750.3 478.6L748.5 479.3L747.1 477.6L748.2 460ZM750.3 478.6L748.2 460L751.8 459.4ZM744 474.1L744.7 460.6L746.6 477.1ZM746.6 477.1L744.7 460.6L748.2 460L747.1 477.6ZM740.9 470.6L741.3 461.2L742.7 472.6ZM742.7 472.6L741.3 461.2L744.7 460.6L744 474.1ZM751.8 459.4L748.2 460L748.7 452.5L751.3 455.2ZM751.8 459.4L751.3 455.2L752.1 455.9ZM748.2 460L744.7 460.6L745.4 449.2L747.2 451.1ZM748.2 460L747.2 451.1L748.7 452.5ZM744.7 460.6L741.3 461.2L742 446L743.2 447.2ZM744.7 460.6L743.2 447.2L745.4 449.2Z"/>
<path fill="#39ff00" stroke="#39ff00" stroke-width=".5" d="M744.1 500L742.6 500.9L742.7 498.1ZM742.6 500.9L739.6 502.7L739.9 494.5L742.2 497.4ZM742.6 500.9L742.2 497.4L742.7 498.1Z"/>
<path fill="#e3ff00" stroke="#e3ff00" stroke-width=".5" d="M748.7 452.5L749.6 439.6L751.3 455.2ZM751.3 455.2L749.6 439.6L753.3 439.7L752.1 455.9ZM745.4 449.2L745.9 439.5L747.2 451.1ZM747.2 451.1L745.9 439.5L749.6 439.6L748.7 452.5ZM742 446L742.3 439.4L743.2 447.2ZM743.2 447.2L742.3 439.4L745.9 439.5L745.4 449.2Z"/>
<path class="g" d="M748.8 497.3L739.6 502.7L742.3 439.4L753.3 439.7Z"/>
<path fill="#ffa700" stroke="#ffa700" stroke-width=".5" d="M941.4 309.1L936.1 306.1L939.5 303.4ZM941.4 309.1L939.5 303.4L944.8 306.4ZM936.1 306.1L930.8 303.2L934.3 300.4ZM936.1 306.1L934.3 300.4L939.5 303.4ZM930.8 303.2L925.6 300.3L929.1 297.4ZM930.8 303.2L929.1 297.4L934.3 300.4ZM944.8 306.4L939.5 303.4L942.9 300.7ZM944.8 306.4L942.9 300.7L948.2 303.8ZM939.5 303.4L934.3 300.4L937.7 297.6ZM939.5 303.4L937.7 297.6L942.9 300.7ZM934.3 300.4L929.1 297.4L932.5 294.5ZM934.3 300.4L932.5 294.5L937.7 297.6ZM948.2 303.8L942.9 300.7L946.3 298ZM948.2 303.8L946.3 298L951.6 301.2ZM942.9 300.7L937.7 297.6L941.1 294.8ZM942.9 300.7L941.1 294.8L946.3 298ZM937.7 297.6L932.5 294.5L935.9 291.6ZM937.7 297.6L935.9 291.6L941.1 294.8Z"/>
<path class="g" d="M941.4 309.1L925.6 300.3L935.9 291.6L951.6 301.2Z"/>
<path fill="#ffc000" stroke="#ffc000" stroke-width=".5" d="M820.1 345.8L815.7 345.7L819.5 342.7ZM820.1 345.8L819.5 342.7L823.9 342.2ZM815.7 345.7L811.4 345.7L815.2 343.2ZM815.7 345.7L815.2 343.2L819.5 342.7ZM811.4 345.7L810.9 345.7L811.4 345.4ZM811.4 345.7L811.4 345.4L813.3 343.5L815.2 343.2ZM823.9 342.2L819.5 342.7L823.3 339.7ZM823.9 342.2L823.3 339.7L827.6 338.6ZM819.5 342.7L815.2 343.2L819 340.8ZM819.5 342.7L819 340.8L823.3 339.7ZM815.2 343.2L813.3 343.5L815 342.5ZM815.2 343.2L815 342.5L816.2 341.5L819 340.8ZM827.6 338.6L823.3 339.7L827 336.7ZM827.6 338.6L827 336.7L831.3 335ZM823.3 339.7L819 340.8L822.8 338.4ZM823.3 339.7L822.8 338.4L827 336.7ZM819 340.8L816.2 341.5L818.7 340.2ZM819 340.8L818.7 340.2L819.3 339.8L822.8 338.4Z"/>
<path fill="#ffd900" stroke="#ffd900" stroke-width=".5" d="M810.9 345.7L807.2 345.6L811 343.7L811.4 345.4ZM811.4 345.4L811 343.7L813.3 343.5ZM813.3 343.5L811 343.7L814.9 341.9L815 342.5ZM815 342.5L814.9 341.9L816.2 341.5ZM816.2 341.5L814.9 341.9L818.6 340L818.7 340.2ZM818.7 340.2L818.6 340L819.3 339.8Z"/>
<path class="g" d="M820.1 345.8L807.2 345.6L818.6 340L831.3 335Z"/>
<path fill="#ffa700" stroke="#ffa700" stroke-width=".5" d="M904.6 312.5L899.5 311.3L903.1 308.9ZM904.6 312.5L903.1 308.9L908.2 309.9ZM899.5 311.3L894.5 310.1L898.1 307.9ZM899.5 311.3L898.1 307.9L903.1 308.9ZM894.5 310.1L889.6 309L893.1 307ZM894.5 310.1L893.1 307L898.1 307.9ZM908.2 309.9L903.1 308.9L906.6 306.5ZM908.2 309.9L906.6 306.5L911.7 307.3ZM903.1 308.9L898.1 307.9L901.6 305.7ZM903.1 308.9L901.6 305.7L906.6 306.5ZM898.1 307.9L893.1 307L896.6 305ZM898.1 307.9L896.6 305L901.6 305.7ZM911.7 307.3L906.6 306.5L910.1 304.1ZM911.7 307.3L910.1 304.1L915.2 304.7ZM906.6 306.5L901.6 305.7L905.1 303.6ZM906.6 306.5L905.1 303.6L910.1 304.1ZM901.6 305.7L896.6 305L900.1 303ZM901.6 305.7L900.1 303L905.1 303.6Z"/>
<path class="g" d="M904.6 312.5L889.6 309L900.1 303L915.2 304.7Z"/>
<path fill="#ffa700" stroke="#ffa700" stroke-width=".5" d="M978.4 296.1L972.7 294.9L976.2 290.8ZM978.4 296.1L976.2 290.8L981.8 291.7ZM972.7 294.9L967.2 293.8L970.6 289.9ZM972.7 294.9L970.6 289.9L976.2 290.8ZM967.2 293.8L961.7 292.6L965.1 289ZM967.2 293.8L965.1 289L970.6 289.9ZM981.8 291.7L976.2 290.8L979.6 286.6ZM981.8 291.7L979.6 286.6L985.2 287.3ZM976.2 290.8L970.6 289.9L974 286ZM976.2 290.8L974 286L979.6 286.6ZM970.6 289.9L965.1 289L968.4 285.4ZM970.6 289.9L968.4 285.4L974 286ZM985.2 287.3L979.6 286.6L983 282.5ZM985.2 287.3L983 282.5L988.7 282.9ZM979.6 286.6L974 286L977.3 282.1ZM979.6 286.6L977.3 282.1L983 282.5ZM974 286L968.4 285.4L971.8 281.8ZM974 286L971.8 281.8L977.3 282.1Z"/>
<path class="g" d="M978.4 296.1L961.7 292.6L971.8 281.8L988.7 282.9Z"/>
<path fill="#ffd900" stroke="#ffd900" stroke-width=".5" d="M809.4 364.2L805.1 363.8L808.7 357.8ZM809.4 364.2L808.7 357.8L813 358.1ZM805.1 363.8L800.9 363.5L804.4 357.6ZM805.1 363.8L804.4 357.6L808.7 357.8ZM800.9 363.5L796.7 363.2L800.2 357.3ZM800.9 363.5L800.2 357.3L804.4 357.6ZM813 358.1L808.7 357.8L812.2 351.8ZM813 358.1L812.2 351.8L816.3 351.9L816.5 352.1ZM808.7 357.8L804.4 357.6L807.9 351.6ZM808.7 357.8L807.9 351.6L812.2 351.8ZM804.4 357.6L800.2 357.3L803.7 351.5ZM804.4 357.6L803.7 351.5L807.9 351.6ZM816.3 351.9L812.2 351.8L813.8 349ZM812.2 351.8L807.9 351.6L811.2 346L811.5 346.4ZM812.2 351.8L811.5 346.4L813.8 349ZM807.9 351.6L803.7 351.5L807.2 345.6ZM807.9 351.6L807.2 345.6L810.9 345.7L811.2 346Z"/>
<path fill="#ffc000" stroke="#ffc000" stroke-width=".5" d="M816.3 351.9L816.5 351.9L816.5 352.1ZM816.5 351.9L816.3 351.9L813.8 349L815.7 345.7ZM816.5 351.9L815.7 345.7L820.1 345.8ZM811.2 346L811.4 345.7L811.5 346.4ZM811.5 346.4L811.4 345.7L815.7 345.7L813.8 349ZM810.9 345.7L811.4 345.7L811.2 346Z"/>
<path class="g" d="M809.4 364.2L796.7 363.2L807.2 345.6L820.1 345.8Z"/>
<path fill="#ffc000" stroke="#ffc000" stroke-width=".5" d="M856.7 330L851.9 329.2L855.7 327.2ZM856.7 330L855.7 327.2L860.4 327.6ZM851.9 329.2L847.2 328.4L851 326.7ZM851.9 329.2L851 326.7L855.7 327.2ZM847.2 328.4L842.6 327.6L846.4 326.3ZM847.2 328.4L846.4 326.3L851 326.7ZM860.4 327.6L855.7 327.2L859.4 325.1ZM860.4 327.6L859.4 325.1L864.1 325.2ZM855.7 327.2L851 326.7L854.7 325.1ZM855.7 327.2L854.7 325.1L859.4 325.1ZM851 326.7L846.4 326.3L850.1 325ZM851 326.7L850.1 325L854.7 325.1ZM864.1 325.2L859.4 325.1L863.1 323.1ZM864.1 325.2L863.1 323.1L867.8 322.8ZM859.4 325.1L854.7 325.1L858.4 323.4ZM859.4 325.1L858.4 323.4L863.1 323.1ZM854.7 325.1L850.1 325L853.8 323.7ZM854.7 325.1L853.8 323.7L858.4 323.4Z"/>
<path class="g" d="M856.7 330L842.6 327.6L853.8 323.7L867.8 322.8Z"/>
<path fill="#e3ff00" stroke="#e3ff00" stroke-width=".5" d="M1055.2 446.4L1050.1 436.4L1053.3 432.7ZM1055.2 446.4L1053.3 432.7L1058.4 442.5ZM1050.1 436.4L1045 426.5L1048.1 423ZM1050.1 436.4L1048.1 423L1053.3 432.7ZM1045 426.5L1039.9 416.6L1043.4 415.6ZM1045 426.5L1043.4 415.6L1044.2 415.4L1048.1 423ZM1058.4 442.5L1053.3 432.7L1056.4 429.1ZM1058.4 442.5L1056.4 429.1L1061.6 438.6ZM1053.3 432.7L1048.1 423L1051.3 419.6ZM1053.3 432.7L1051.3 419.6L1056.4 429.1ZM1048.1 423L1044.2 415.4L1046.9 414.7ZM1048.1 423L1046.9 414.7L1048.5 414.3L1051.3 419.6ZM1061.6 438.6L1056.4 429.1L1059.6 425.5ZM1061.6 438.6L1059.6 425.5L1064.7 434.8ZM1056.4 429.1L1051.3 419.6L1054.5 416.1ZM1056.4 429.1L1054.5 416.1L1059.6 425.5ZM1051.3 419.6L1048.5 414.3L1050.4 413.8ZM1051.3 419.6L1050.4 413.8L1052.8 413.2L1054.5 416.1Z"/>
<path fill="#fff200" stroke="#fff200" stroke-width=".5" d="M1039.9 416.6L1039.8 416.5L1043 413.2L1043.4 415.6ZM1043.4 415.6L1043 413.2L1044.2 415.4ZM1044.2 415.4L1043 413.2L1046.2 410L1046.9 414.7ZM1046.9 414.7L1046.2 410L1048.5 414.3ZM1048.5 414.3L1046.2 410L1049.3 406.8L1050.4 413.8ZM1050.4 413.8L1049.3 406.8L1052.8 413.2Z"/>
<path class="g" d="M1055.2 446.4L1039.8 416.5L1049.3 406.8L1064.7 434.8Z"/>
<path fill="#39ff00" stroke="#39ff00" stroke-width=".5" d="M748.4 520.2L746.1 520.7L747.4 517ZM746.1 520.7L742.8 521.4L745.9 512.9ZM746.1 520.7L745.9 512.9L746.3 512.8L747.4 517ZM742.8 521.4L739.5 522.1L742.6 513.9ZM742.8 521.4L742.6 513.9L745.9 512.9ZM746.3 512.8L745.9 512.9L746.2 512.2ZM745.9 512.9L742.6 513.9L745.1 507.4L745.8 510.7ZM745.9 512.9L745.8 510.7L746.2 512.2Z"/>
<path fill="#72ff00" stroke="#72ff00" stroke-width=".5" d="M749.5 520L748.4 520.2L747.4 517L749.2 511.9ZM749.5 520L749.2 511.9L752.6 510.9ZM746.3 512.8L749.2 511.9L747.4 517ZM752.6 510.9L749.2 511.9L752.3 503.1ZM752.6 510.9L752.3 503.1L755.8 501.8ZM749.2 511.9L746.3 512.8L746.2 512.2L749 504.4ZM749.2 511.9L749 504.4L752.3 503.1ZM745.1 507.4L745.7 505.6L745.8 510.7ZM745.8 510.7L745.7 505.6L749 504.4L746.2 512.2ZM755.8 501.8L752.3 503.1L755.5 494.2ZM755.8 501.8L755.5 494.2L758.8 492.6L758.8 492.8ZM752.3 503.1L749 504.4L752.1 495.8ZM752.3 503.1L752.1 495.8L755.5 494.2ZM749 504.4L745.7 505.6L748.8 497.3ZM749 504.4L748.8 497.3L752.1 495.8Z"/>
<path fill="#aaff00" stroke="#aaff00" stroke-width=".5" d="M758.8 492.6L758.9 492.6L758.8 492.8Z"/>
<path class="g" d="M749.5 520L739.5 522.1L748.8 497.3L758.9 492.6Z"/>
<path fill="#ffd900" stroke="#ffd900" stroke-width=".5" d="M797.8 374.1L793.6 373.7L797.5 370.4ZM797.8 374.1L797.5 370.4L801.7 370.8ZM793.6 373.7L789.4 373.3L793.3 370ZM793.6 373.7L793.3 370L797.5 370.4ZM789.4 373.3L785.3 372.8L789.2 369.6ZM789.4 373.3L789.2 369.6L793.3 370ZM801.7 370.8L797.5 370.4L801.3 367.1ZM801.7 370.8L801.3 367.1L805.6 367.5ZM797.5 370.4L793.3 370L797.1 366.7ZM797.5 370.4L797.1 366.7L801.3 367.1ZM793.3 370L789.2 369.6L793 366.4ZM793.3 370L793 366.4L797.1 366.7ZM805.6 367.5L801.3 367.1L805.1 363.8ZM805.6 367.5L805.1 363.8L809.4 364.2ZM801.3 367.1L797.1 366.7L800.9 363.5ZM801.3 367.1L800.9 363.5L805.1 363.8ZM797.1 366.7L793 366.4L796.7 363.2ZM797.1 366.7L796.7 363.2L800.9 363.5Z"/>
<path class="g" d="M797.8 374.1L785.3 372.8L796.7 363.2L809.4 364.2Z"/>
<path fill="#ffa700" stroke="#ffa700" stroke-width=".5" d="M968 307.5L962.5 305.4L965.9 301.9ZM968 307.5L965.9 301.9L971.5 303.7ZM962.5 305.4L957 303.2L960.4 300.1ZM962.5 305.4L960.4 300.1L965.9 301.9ZM957 303.2L951.6 301.2L955 298.3ZM957 303.2L955 298.3L960.4 300.1ZM971.5 303.7L965.9 301.9L969.3 298.4ZM971.5 303.7L969.3 298.4L974.9 299.9ZM965.9 301.9L960.4 300.1L963.8 296.9ZM965.9 301.9L963.8 296.9L969.3 298.4ZM960.4 300.1L955 298.3L958.4 295.5ZM960.4 300.1L958.4 295.5L963.8 296.9ZM974.9 299.9L969.3 298.4L972.7 294.9ZM974.9 299.9L972.7 294.9L978.4 296.1ZM969.3 298.4L963.8 296.9L967.2 293.8ZM969.3 298.4L967.2 293.8L972.7 294.9ZM963.8 296.9L958.4 295.5L961.7 292.6ZM963.8 296.9L961.7 292.6L967.2 293.8Z"/>
<path class="g" d="M968 307.5L951.6 301.2L961.7 292.6L978.4 296.1Z"/>
<path fill="#ffa700" stroke="#ffa700" stroke-width=".5" d="M931 314.4L925.7 311.1L929.2 309.4ZM931 314.4L929.2 309.4L934.5 312.6ZM925.7 311.1L920.4 307.9L923.9 306.3ZM925.7 311.1L923.9 306.3L929.2 309.4ZM920.4 307.9L915.2 304.7L918.7 303.2ZM920.4 307.9L918.7 303.2L923.9 306.3ZM934.5 312.6L929.2 309.4L932.6 307.8ZM934.5 312.6L932.6 307.8L937.9 310.8ZM929.2 309.4L923.9 306.3L927.4 304.7ZM929.2 309.4L927.4 304.7L932.6 307.8ZM923.9 306.3L918.7 303.2L922.2 301.8ZM923.9 306.3L922.2 301.8L927.4 304.7ZM937.9 310.8L932.6 307.8L936.1 306.1ZM937.9 310.8L936.1 306.1L941.4 309.1ZM932.6 307.8L927.4 304.7L930.8 303.2ZM932.6 307.8L930.8 303.2L936.1 306.1ZM927.4 304.7L922.2 301.8L925.6 300.3ZM927.4 304.7L925.6 300.3L930.8 303.2Z"/>
<path class="g" d="M931 314.4L915.2 304.7L925.6 300.3L941.4 309.1Z"/>
<path fill="#ffa700" stroke="#ffa700" stroke-width=".5" d="M893.8 317.8L888.7 317.5L892.3 315.4ZM893.8 317.8L892.3 315.4L897.4 316.1ZM888.7 317.5L885.5 317.3L886 315.7L887.3 314.8ZM888.7 317.5L887.3 314.8L892.3 315.4ZM886.1 314.7L887.3 314.8L886 315.7ZM897.4 316.1L892.3 315.4L895.9 313.4ZM897.4 316.1L895.9 313.4L901 314.3ZM892.3 315.4L887.3 314.8L890.9 312.5ZM892.3 315.4L890.9 312.5L895.9 313.4ZM887.3 314.8L886.1 314.7L885.4 312L886 311.6ZM887.3 314.8L886 311.6L890.9 312.5ZM901 314.3L895.9 313.4L899.5 311.3ZM901 314.3L899.5 311.3L904.6 312.5ZM895.9 313.4L890.9 312.5L894.5 310.1ZM895.9 313.4L894.5 310.1L899.5 311.3ZM890.9 312.5L886 311.6L889.6 309ZM890.9 312.5L889.6 309L894.5 310.1Z"/>
<path fill="#ffc000" stroke="#ffc000" stroke-width=".5" d="M885.5 317.3L883.7 317.2L886 315.7ZM883.7 317.2L878.8 316.9L882.4 314.2ZM883.7 317.2L882.4 314.2L886.1 314.7L886 315.7ZM886.1 314.7L882.4 314.2L885.4 312Z"/>
<path class="g" d="M893.8 317.8L878.8 316.9L889.6 309L904.6 312.5Z"/>
<path fill="#aaff00" stroke="#aaff00" stroke-width=".5" d="M1072.4 463.7L1066.6 457.9L1069.8 454.1ZM1072.4 463.7L1069.8 454.1L1075.6 460ZM1066.6 457.9L1060.9 452.1L1061.8 451L1064.8 451.1ZM1066.6 457.9L1064.8 451.1L1066.8 451.1L1069.8 454.1ZM1060.9 452.1L1059.8 451L1060.6 451ZM1060.9 452.1L1060.6 451L1061.8 451ZM1075.6 460L1069.8 454.1L1072.4 451.1L1073.2 451.1ZM1075.6 460L1073.2 451.1L1073.7 451.1L1078.8 456.3ZM1069.8 454.1L1066.8 451.1L1069 451.1ZM1069.8 454.1L1069 451.1L1072.4 451.1ZM1078.8 456.3L1073.7 451.1L1077.3 451ZM1078.8 456.3L1077.3 451L1080.3 450.9L1081.9 452.6Z"/>
<path fill="#e3ff00" stroke="#e3ff00" stroke-width=".5" d="M1061.8 451L1064.1 448.3L1064.8 451.1ZM1064.8 451.1L1064.1 448.3L1066.8 451.1ZM1059.8 451L1055.2 446.4L1058.4 442.5L1060.6 451ZM1060.6 451L1058.4 442.5L1064.1 448.3L1061.8 451ZM1072.4 451.1L1073 450.4L1073.2 451.1ZM1073.2 451.1L1073 450.4L1073.7 451.1ZM1066.8 451.1L1064.1 448.3L1067.3 444.5L1069 451.1ZM1069 451.1L1067.3 444.5L1073 450.4L1072.4 451.1ZM1064.1 448.3L1058.4 442.5L1061.6 438.6ZM1064.1 448.3L1061.6 438.6L1067.3 444.5ZM1073.7 451.1L1073 450.4L1076.1 446.6L1077.3 451ZM1077.3 451L1076.1 446.6L1080.3 450.9ZM1073 450.4L1067.3 444.5L1070.4 440.7ZM1073 450.4L1070.4 440.7L1076.1 446.6ZM1067.3 444.5L1061.6 438.6L1064.7 434.8ZM1067.3 444.5L1064.7 434.8L1070.4 440.7Z"/>
<path class="g" d="M1072.4 463.7L1055.2 446.4L1064.7 434.8L1081.9 452.6Z"/>
<path fill="#aaff00" stroke="#aaff00" stroke-width=".5" d="M1045.4 458.2L1043 452.9L1044.7 452.4ZM1045.4 458.2L1044.7 452.4L1047.5 451.7L1048.7 454.2ZM1048.7 454.2L1047.5 451.7L1048.3 451.5ZM1048.7 454.2L1048.3 451.5L1051.6 450.7Z"/>
<path fill="#e3ff00" stroke="#e3ff00" stroke-width=".5" d="M1043 452.9L1040.4 447.3L1043.6 443.6L1044.7 452.4ZM1044.7 452.4L1043.6 443.6L1047.5 451.7ZM1040.4 447.3L1035.4 436.4L1038.6 433ZM1040.4 447.3L1038.6 433L1043.6 443.6ZM1035.4 436.4L1030.3 425.4L1033.5 422.4ZM1035.4 436.4L1033.5 422.4L1038.6 433ZM1047.5 451.7L1043.6 443.6L1046.9 440L1048.3 451.5ZM1048.3 451.5L1046.9 440L1051.9 450.3L1051.6 450.7ZM1043.6 443.6L1038.6 433L1041.8 429.7ZM1043.6 443.6L1041.8 429.7L1046.9 440ZM1038.6 433L1033.5 422.4L1036.7 419.4ZM1038.6 433L1036.7 419.4L1041.8 429.7ZM1051.9 450.3L1046.9 440L1050.1 436.4ZM1051.9 450.3L1050.1 436.4L1055.2 446.4ZM1046.9 440L1041.8 429.7L1045 426.5ZM1046.9 440L1045 426.5L1050.1 436.4ZM1041.8 429.7L1036.7 419.4L1039.6 416.7L1039.9 416.6ZM1041.8 429.7L1039.9 416.6L1039.9 416.6L1045 426.5Z"/>
<path fill="#fff200" stroke="#fff200" stroke-width=".5" d="M1039.6 416.7L1039.8 416.5L1039.9 416.6ZM1039.9 416.6L1039.8 416.5L1039.9 416.6Z"/>
<path class="g" d="M1045.4 458.2L1030.3 425.4L1039.8 416.5L1055.2 446.4Z"/>
<path fill="#ffd900" stroke="#ffd900" stroke-width=".5" d="M786.1 384.2L781.9 383.7L785.8 380.3ZM786.1 384.2L785.8 380.3L790 380.8ZM781.9 383.7L777.8 383.2L781.7 379.9ZM781.9 383.7L781.7 379.9L785.8 380.3ZM777.8 383.2L774.9 382.9L775 381.7L777.7 379.5ZM777.8 383.2L777.7 379.5L781.7 379.9ZM790 380.8L785.8 380.3L789.7 377ZM790 380.8L789.7 377L793.9 377.4ZM785.8 380.3L781.7 379.9L785.6 376.6ZM785.8 380.3L785.6 376.6L789.7 377ZM781.7 379.9L777.7 379.5L781.5 376.1ZM781.7 379.9L781.5 376.1L785.6 376.6ZM793.9 377.4L789.7 377L793.6 373.7ZM793.9 377.4L793.6 373.7L797.8 374.1ZM789.7 377L785.6 376.6L789.4 373.3ZM789.7 377L789.4 373.3L793.6 373.7ZM785.6 376.6L781.5 376.1L785.3 372.8ZM785.6 376.6L785.3 372.8L789.4 373.3Z"/>
<path fill="#fff200" stroke="#fff200" stroke-width=".5" d="M774.9 382.9L773.8 382.8L775 381.7Z"/>
<path class="g" d="M786.1 384.2L773.8 382.8L785.3 372.8L797.8 374.1Z"/>
<path fill="#ffa700" stroke="#ffa700" stroke-width=".5" d="M957.7 316.1L952.2 313.7L955.6 310.9ZM957.7 316.1L955.6 310.9L961.2 313.2ZM952.2 313.7L946.7 311.4L950.2 308.7ZM952.2 313.7L950.2 308.7L955.6 310.9ZM946.7 311.4L941.4 309.1L944.8 306.4ZM946.7 311.4L944.8 306.4L950.2 308.7ZM961.2 313.2L955.6 310.9L959.1 308.1ZM961.2 313.2L959.1 308.1L964.6 310.3ZM955.6 310.9L950.2 308.7L953.6 305.9ZM955.6 310.9L953.6 305.9L959.1 308.1ZM950.2 308.7L944.8 306.4L948.2 303.8ZM950.2 308.7L948.2 303.8L953.6 305.9ZM964.6 310.3L959.1 308.1L962.5 305.4ZM964.6 310.3L962.5 305.4L968 307.5ZM959.1 308.1L953.6 305.9L957 303.2ZM959.1 308.1L957 303.2L962.5 305.4ZM953.6 305.9L948.2 303.8L951.6 301.2ZM953.6 305.9L951.6 301.2L957 303.2Z"/>
<path class="g" d="M957.7 316.1L941.4 309.1L951.6 301.2L968 307.5Z"/>
<path fill="#ffc000" stroke="#ffc000" stroke-width=".5" d="M845.3 337.5L840.6 336.6L844.4 334.1ZM845.3 337.5L844.4 334.1L849.1 335ZM840.6 336.6L835.9 335.8L839.7 333.3ZM840.6 336.6L839.7 333.3L844.4 334.1ZM835.9 335.8L831.3 335L835.1 332.5ZM835.9 335.8L835.1 332.5L839.7 333.3ZM849.1 335L844.4 334.1L848.1 331.7ZM849.1 335L848.1 331.7L852.9 332.5ZM844.4 334.1L839.7 333.3L843.5 330.8ZM844.4 334.1L843.5 330.8L848.1 331.7ZM839.7 333.3L835.1 332.5L838.9 330ZM839.7 333.3L838.9 330L843.5 330.8ZM852.9 332.5L848.1 331.7L851.9 329.2ZM852.9 332.5L851.9 329.2L856.7 330ZM848.1 331.7L843.5 330.8L847.2 328.4ZM848.1 331.7L847.2 328.4L851.9 329.2ZM843.5 330.8L838.9 330L842.6 327.6ZM843.5 330.8L842.6 327.6L847.2 328.4Z"/>
<path class="g" d="M845.3 337.5L831.3 335L842.6 327.6L856.7 330Z"/>
<path fill="#ffc000" stroke="#ffc000" stroke-width=".5" d="M920.3 325.1L915.3 321.1L919.4 321.3ZM920.3 325.1L919.4 321.3L923.5 321.9Z"/>
<path fill="#ffa700" stroke="#ffa700" stroke-width=".5" d="M915.3 321.1L915 320.9L918.6 317.6L919.4 321.3ZM919.4 321.3L918.6 317.6L923.9 321.5L923.5 321.9ZM915 320.9L909.8 316.7L913.4 313.7ZM915 320.9L913.4 313.7L918.6 317.6ZM909.8 316.7L904.6 312.5L908.2 309.9ZM909.8 316.7L908.2 309.9L913.4 313.7ZM923.9 321.5L918.6 317.6L922.1 314.3ZM923.9 321.5L922.1 314.3L927.4 317.9ZM918.6 317.6L913.4 313.7L916.9 310.8ZM918.6 317.6L916.9 310.8L922.1 314.3ZM913.4 313.7L908.2 309.9L911.7 307.3ZM913.4 313.7L911.7 307.3L916.9 310.8ZM927.4 317.9L922.1 314.3L925.7 311.1ZM927.4 317.9L925.7 311.1L931 314.4ZM922.1 314.3L916.9 310.8L920.4 307.9ZM922.1 314.3L920.4 307.9L925.7 311.1ZM916.9 310.8L911.7 307.3L915.2 304.7ZM916.9 310.8L915.2 304.7L920.4 307.9Z"/>
<path class="g" d="M920.3 325.1L904.6 312.5L915.2 304.7L931 314.4Z"/>
<path fill="#aaff00" stroke="#aaff00" stroke-width=".5" d="M1062.9 474.6L1057 469.1L1060.2 465.3ZM1062.9 474.6L1060.2 465.3L1066.1 470.9ZM1057 469.1L1051.2 463.6L1054.4 459.7ZM1057 469.1L1054.4 459.7L1060.2 465.3ZM1051.2 463.6L1045.4 458.2L1048.7 454.2ZM1051.2 463.6L1048.7 454.2L1054.4 459.7ZM1066.1 470.9L1060.2 465.3L1063.4 461.6ZM1066.1 470.9L1063.4 461.6L1069.3 467.3ZM1060.2 465.3L1054.4 459.7L1057.7 455.9ZM1060.2 465.3L1057.7 455.9L1063.4 461.6ZM1054.4 459.7L1048.7 454.2L1051.6 450.7L1052 450.7ZM1054.4 459.7L1052 450.7L1052.4 450.7L1057.7 455.9ZM1069.3 467.3L1063.4 461.6L1066.6 457.9ZM1069.3 467.3L1066.6 457.9L1072.4 463.7ZM1063.4 461.6L1057.7 455.9L1060.9 452.1ZM1063.4 461.6L1060.9 452.1L1066.6 457.9ZM1057.7 455.9L1052.4 450.7L1056.4 450.9ZM1057.7 455.9L1056.4 450.9L1059.8 451L1060.9 452.1Z"/>
<path fill="#e3ff00" stroke="#e3ff00" stroke-width=".5" d="M1051.6 450.7L1051.9 450.3L1052 450.7ZM1052 450.7L1051.9 450.3L1052.4 450.7ZM1052.4 450.7L1051.9 450.3L1055.2 446.4L1056.4 450.9ZM1056.4 450.9L1055.2 446.4L1059.8 451Z"/>
<path class="g" d="M1062.9 474.6L1045.4 458.2L1055.2 446.4L1072.4 463.7Z"/>
<path fill="#ffc000" stroke="#ffc000" stroke-width=".5" d="M882.7 325.1L877.7 324.3L881.4 322ZM882.7 325.1L881.4 322L883.4 322.3L883 324.9ZM877.7 324.3L872.7 323.6L876.4 321.4ZM877.7 324.3L876.4 321.4L881.4 322ZM872.7 323.6L867.8 322.8L871.5 320.8ZM872.7 323.6L871.5 320.8L876.4 321.4ZM883.4 322.3L881.4 322L883.9 320.5ZM881.4 322L876.4 321.4L880.1 319.3ZM881.4 322L880.1 319.3L884.3 319.7L883.9 320.5ZM876.4 321.4L871.5 320.8L875.2 318.8ZM876.4 321.4L875.2 318.8L880.1 319.3ZM884.3 319.7L880.1 319.3L883.7 317.2L884.7 319ZM884.7 319L883.7 317.2L885.5 317.3ZM880.1 319.3L875.2 318.8L878.8 316.9ZM880.1 319.3L878.8 316.9L883.7 317.2Z"/>
<path fill="#ffa700" stroke="#ffa700" stroke-width=".5" d="M883.4 322.3L886.4 322.7L883 324.9ZM886.4 322.7L883.4 322.3L883.9 320.5L885.1 319.8ZM886.4 322.7L885.1 319.8L890.1 320.2ZM884.3 319.7L885.1 319.8L883.9 320.5ZM890.1 320.2L885.1 319.8L888.7 317.5ZM890.1 320.2L888.7 317.5L893.8 317.8ZM885.1 319.8L884.3 319.7L884.7 319ZM885.1 319.8L884.7 319L885.5 317.3L888.7 317.5Z"/>
<path class="g" d="M882.7 325.1L867.8 322.8L878.8 316.9L893.8 317.8Z"/>
<path fill="#e3ff00" stroke="#e3ff00" stroke-width=".5" d="M753.3 439.7L749.6 439.6L752.9 431.9ZM753.3 439.7L752.9 431.9L756.8 432.3ZM749.6 439.6L745.9 439.5L749.2 431.6ZM749.6 439.6L749.2 431.6L752.9 431.9ZM745.9 439.5L742.3 439.4L745.5 431.3ZM745.9 439.5L745.5 431.3L749.2 431.6ZM756.8 432.3L752.9 431.9L756.3 424.2ZM756.8 432.3L756.3 424.2L756.7 424.3L759 427.5ZM752.9 431.9L749.2 431.6L752.5 423.6ZM752.9 431.9L752.5 423.6L756.3 424.2ZM749.2 431.6L745.5 431.3L748.7 423ZM749.2 431.6L748.7 423L752.5 423.6ZM756.7 424.3L756.3 424.2L756.5 423.9ZM756.3 424.2L752.5 423.6L753.8 420.4L756.3 423.7ZM756.3 424.2L756.3 423.7L756.5 423.9ZM752.5 423.6L748.7 423L751 417.1L752.1 418.5ZM752.5 423.6L752.1 418.5L753.8 420.4Z"/>
<path fill="#fff200" stroke="#fff200" stroke-width=".5" d="M756.7 424.3L760.2 424.8L759 427.5ZM760.2 424.8L756.7 424.3L756.5 423.9L759.7 416.5ZM760.2 424.8L759.7 416.5L763.7 417.4ZM753.8 420.4L755.8 415.6L756.3 423.7ZM756.3 423.7L755.8 415.6L759.7 416.5L756.5 423.9ZM751 417.1L751.9 414.8L752.1 418.5ZM752.1 418.5L751.9 414.8L755.8 415.6L753.8 420.4Z"/>
<path class="g" d="M753.3 439.7L742.3 439.4L751.9 414.8L763.7 417.4Z"/>
<path fill="#aaff00" stroke="#aaff00" stroke-width=".5" d="M1035.5 470.3L1030.6 458.6L1033.2 455.6L1033.9 455.4ZM1035.5 470.3L1033.9 455.4L1034.1 455.3L1038.8 466.2ZM1030.6 458.6L1029.7 456.7L1030.3 456.5ZM1030.6 458.6L1030.3 456.5L1033.2 455.6ZM1038.8 466.2L1034.1 455.3L1037.5 454.3ZM1038.8 466.2L1037.5 454.3L1038.5 454.1L1042.1 462.2ZM1042.1 462.2L1038.5 454.1L1041.1 453.3ZM1042.1 462.2L1041.1 453.3L1043 452.9L1045.4 458.2Z"/>
<path fill="#e3ff00" stroke="#e3ff00" stroke-width=".5" d="M1033.2 455.6L1033.9 454.8L1033.9 455.4ZM1033.9 455.4L1033.9 454.8L1034.1 455.3ZM1029.7 456.7L1025.6 446.9L1028.8 443.4L1030.3 456.5ZM1030.3 456.5L1028.8 443.4L1033.9 454.8L1033.2 455.6ZM1025.6 446.9L1020.5 435.2L1023.8 431.9ZM1025.6 446.9L1023.8 431.9L1028.8 443.4ZM1034.1 455.3L1033.9 454.8L1037.1 451L1037.5 454.3ZM1037.5 454.3L1037.1 451L1038.5 454.1ZM1033.9 454.8L1028.8 443.4L1032.1 439.9ZM1033.9 454.8L1032.1 439.9L1037.1 451ZM1028.8 443.4L1023.8 431.9L1027.1 428.6ZM1028.8 443.4L1027.1 428.6L1032.1 439.9ZM1038.5 454.1L1037.1 451L1040.4 447.3L1041.1 453.3ZM1041.1 453.3L1040.4 447.3L1043 452.9ZM1037.1 451L1032.1 439.9L1035.4 436.4ZM1037.1 451L1035.4 436.4L1040.4 447.3ZM1032.1 439.9L1027.1 428.6L1030.3 425.4ZM1032.1 439.9L1030.3 425.4L1035.4 436.4Z"/>
<path class="g" d="M1035.5 470.3L1020.5 435.2L1030.3 425.4L1045.4 458.2Z"/>
<path fill="#ffa700" stroke="#ffa700" stroke-width=".5" d="M995.7 300.8L989.8 299.2L993.2 295.6ZM995.7 300.8L993.2 295.6L999.1 297.6ZM989.8 299.2L984 297.6L987.5 293.6ZM989.8 299.2L987.5 293.6L993.2 295.6ZM984 297.6L978.4 296.1L981.8 291.7ZM984 297.6L981.8 291.7L987.5 293.6ZM999.1 297.6L993.2 295.6L996.6 292ZM999.1 297.6L996.6 292L1002.4 294.3ZM993.2 295.6L987.5 293.6L990.9 289.6ZM993.2 295.6L990.9 289.6L996.6 292ZM987.5 293.6L981.8 291.7L985.2 287.3ZM987.5 293.6L985.2 287.3L990.9 289.6ZM1002.4 294.3L996.6 292L1000 288.3ZM1002.4 294.3L1000 288.3L1005.8 291.1ZM996.6 292L990.9 289.6L994.3 285.6ZM996.6 292L994.3 285.6L1000 288.3ZM990.9 289.6L985.2 287.3L988.7 282.9ZM990.9 289.6L988.7 282.9L994.3 285.6Z"/>
<path class="g" d="M995.7 300.8L978.4 296.1L988.7 282.9L1005.8 291.1Z"/>
<path fill="#fff200" stroke="#fff200" stroke-width=".5" d="M773.1 394.4L770.1 393.9L773.6 390.9ZM770.1 393.9L766 393.4L770 390ZM770.1 393.9L770 390L773.7 390.5L773.6 390.9ZM766 393.4L762.1 392.8L766 389.4ZM766 393.4L766 389.4L770 390ZM773.7 390.5L770 390L773.9 386.6L774 388.5ZM774 388.5L773.9 386.6L774.2 386.6ZM770 390L766 389.4L769.9 386.1ZM770 390L769.9 386.1L773.9 386.6ZM774.2 386.6L773.9 386.6L774.3 386.3ZM773.9 386.6L769.9 386.1L773.8 382.8ZM773.9 386.6L773.8 382.8L774.9 382.9L774.3 386.3Z"/>
<path fill="#ffd900" stroke="#ffd900" stroke-width=".5" d="M774.1 394.6L773.1 394.4L773.6 390.9L774 390.5ZM774.1 394.6L774 390.5L778.1 391.1ZM773.7 390.5L774 390.5L773.6 390.9ZM778.1 391.1L774 390.5L778 387.1ZM778.1 391.1L778 387.1L782.1 387.6ZM774 390.5L773.7 390.5L774 388.5ZM774 390.5L774 388.5L774.2 386.6L778 387.1ZM782.1 387.6L778 387.1L781.9 383.7ZM782.1 387.6L781.9 383.7L786.1 384.2ZM778 387.1L774.2 386.6L774.3 386.3L777.8 383.2ZM778 387.1L777.8 383.2L781.9 383.7ZM774.9 382.9L777.8 383.2L774.3 386.3Z"/>
<path class="g" d="M774.1 394.6L762.1 392.8L773.8 382.8L786.1 384.2Z"/>
<path fill="#ffc000" stroke="#ffc000" stroke-width=".5" d="M833.7 346.1L829.1 346L832.9 342.9ZM833.7 346.1L832.9 342.9L837.6 343.2ZM829.1 346L824.6 345.9L828.4 342.5ZM829.1 346L828.4 342.5L832.9 342.9ZM824.6 345.9L820.1 345.8L823.9 342.2ZM824.6 345.9L823.9 342.2L828.4 342.5ZM837.6 343.2L832.9 342.9L836.8 339.7ZM837.6 343.2L836.8 339.7L841.4 340.4ZM832.9 342.9L828.4 342.5L832.1 339.1ZM832.9 342.9L832.1 339.1L836.8 339.7ZM828.4 342.5L823.9 342.2L827.6 338.6ZM828.4 342.5L827.6 338.6L832.1 339.1ZM841.4 340.4L836.8 339.7L840.6 336.6ZM841.4 340.4L840.6 336.6L845.3 337.5ZM836.8 339.7L832.1 339.1L835.9 335.8ZM836.8 339.7L835.9 335.8L840.6 336.6ZM832.1 339.1L827.6 338.6L831.3 335ZM832.1 339.1L831.3 335L835.9 335.8Z"/>
<path class="g" d="M833.7 346.1L820.1 345.8L831.3 335L845.3 337.5Z"/>
<path fill="#ffa700" stroke="#ffa700" stroke-width=".5" d="M947.2 325.3L941.7 321.6L945.2 319ZM947.2 325.3L945.2 319L950.7 322.2ZM941.7 321.6L936.3 318L939.8 315.8ZM941.7 321.6L939.8 315.8L945.2 319ZM936.3 318L931 314.4L934.5 312.6ZM936.3 318L934.5 312.6L939.8 315.8ZM950.7 322.2L945.2 319L948.7 316.3ZM950.7 322.2L948.7 316.3L954.2 319.2ZM945.2 319L939.8 315.8L943.3 313.6ZM945.2 319L943.3 313.6L948.7 316.3ZM939.8 315.8L934.5 312.6L937.9 310.8ZM939.8 315.8L937.9 310.8L943.3 313.6ZM954.2 319.2L948.7 316.3L952.2 313.7ZM954.2 319.2L952.2 313.7L957.7 316.1ZM948.7 316.3L943.3 313.6L946.7 311.4ZM948.7 316.3L946.7 311.4L952.2 313.7ZM943.3 313.6L937.9 310.8L941.4 309.1ZM943.3 313.6L941.4 309.1L946.7 311.4Z"/>
<path class="g" d="M947.2 325.3L931 314.4L941.4 309.1L957.7 316.1Z"/>
<path fill="#fff200" stroke="#fff200" stroke-width=".5" d="M763.7 417.4L759.7 416.5L763.2 409ZM763.7 417.4L763.2 409L767.2 409.8ZM759.7 416.5L755.8 415.6L759.2 408.2ZM759.7 416.5L759.2 408.2L763.2 409ZM755.8 415.6L751.9 414.8L755.3 407.5ZM755.8 415.6L755.3 407.5L759.2 408.2ZM767.2 409.8L763.2 409L766.6 401.5ZM767.2 409.8L766.6 401.5L770.7 402.2ZM763.2 409L759.2 408.2L762.6 400.8ZM763.2 409L762.6 400.8L766.6 401.5ZM759.2 408.2L755.3 407.5L758.7 400.1ZM759.2 408.2L758.7 400.1L762.6 400.8ZM770.7 402.2L766.6 401.5L770.1 393.9ZM770.7 402.2L770.1 393.9L773.1 394.4L773.8 395.2ZM766.6 401.5L762.6 400.8L766 393.4ZM766.6 401.5L766 393.4L770.1 393.9ZM762.6 400.8L758.7 400.1L762.1 392.8ZM762.6 400.8L762.1 392.8L766 393.4Z"/>
<path fill="#ffd900" stroke="#ffd900" stroke-width=".5" d="M773.1 394.4L774.1 394.6L773.8 395.2Z"/>
<path class="g" d="M763.7 417.4L751.9 414.8L762.1 392.8L774.1 394.6Z"/>
<path fill="#aaff00" stroke="#aaff00" stroke-width=".5" d="M1052.7 489.1L1046.9 482.8L1050.3 478.2ZM1052.7 489.1L1050.3 478.2L1056.1 484.2ZM1046.9 482.8L1041.2 476.5L1044.6 472.2ZM1046.9 482.8L1044.6 472.2L1050.3 478.2ZM1041.2 476.5L1035.5 470.3L1038.8 466.2ZM1041.2 476.5L1038.8 466.2L1044.6 472.2ZM1056.1 484.2L1050.3 478.2L1053.7 473.6ZM1056.1 484.2L1053.7 473.6L1059.5 479.4ZM1050.3 478.2L1044.6 472.2L1047.9 467.9ZM1050.3 478.2L1047.9 467.9L1053.7 473.6ZM1044.6 472.2L1038.8 466.2L1042.1 462.2ZM1044.6 472.2L1042.1 462.2L1047.9 467.9ZM1059.5 479.4L1053.7 473.6L1057 469.1ZM1059.5 479.4L1057 469.1L1062.9 474.6ZM1053.7 473.6L1047.9 467.9L1051.2 463.6ZM1053.7 473.6L1051.2 463.6L1057 469.1ZM1047.9 467.9L1042.1 462.2L1045.4 458.2ZM1047.9 467.9L1045.4 458.2L1051.2 463.6Z"/>
<path class="g" d="M1052.7 489.1L1035.5 470.3L1045.4 458.2L1062.9 474.6Z"/>
<path fill="#aaff00" stroke="#aaff00" stroke-width=".5" d="M1091.5 473.8L1085.1 470.4L1088.2 466.8ZM1091.5 473.8L1088.2 466.8L1094.7 470.2ZM1085.1 470.4L1078.7 467L1081.9 463.3ZM1085.1 470.4L1081.9 463.3L1088.2 466.8ZM1078.7 467L1072.4 463.7L1075.6 460ZM1078.7 467L1075.6 460L1081.9 463.3ZM1094.7 470.2L1088.2 466.8L1091.4 463.2ZM1094.7 470.2L1091.4 463.2L1097.8 466.7ZM1088.2 466.8L1081.9 463.3L1085 459.7ZM1088.2 466.8L1085 459.7L1091.4 463.2ZM1081.9 463.3L1075.6 460L1078.8 456.3ZM1081.9 463.3L1078.8 456.3L1085 459.7ZM1097.8 466.7L1091.4 463.2L1094.5 459.6ZM1097.8 466.7L1094.5 459.6L1100.9 463.1ZM1091.4 463.2L1085 459.7L1088.2 456.1ZM1091.4 463.2L1088.2 456.1L1094.5 459.6ZM1085 459.7L1078.8 456.3L1081.9 452.6ZM1085 459.7L1081.9 452.6L1088.2 456.1Z"/>
<path class="g" d="M1091.5 473.8L1072.4 463.7L1081.9 452.6L1100.9 463.1Z"/>
<path fill="#ffc000" stroke="#ffc000" stroke-width=".5" d="M909.5 331.3L904.2 326.8L907.8 324.8ZM909.5 331.3L907.8 324.8L913.1 329.2ZM904.2 326.8L900.5 323.6L903.3 323.1ZM904.2 326.8L903.3 323.1L905.4 322.7L907.8 324.8ZM913.1 329.2L907.8 324.8L911.4 322.8ZM913.1 329.2L911.4 322.8L916.7 327.1ZM907.8 324.8L905.4 322.7L907.2 322.4ZM907.8 324.8L907.2 322.4L910.3 321.9L911.4 322.8ZM916.7 327.1L911.4 322.8L914.4 321.2L915.1 321.1ZM916.7 327.1L915.1 321.1L915.3 321.1L920.3 325.1ZM911.4 322.8L910.3 321.9L911.1 321.7ZM911.4 322.8L911.1 321.7L914.4 321.2Z"/>
<path fill="#ffa700" stroke="#ffa700" stroke-width=".5" d="M900.5 323.6L898.9 322.3L902.6 320.4L903.3 323.1ZM903.3 323.1L902.6 320.4L905.4 322.7ZM898.9 322.3L893.8 317.8L897.4 316.1ZM898.9 322.3L897.4 316.1L902.6 320.4ZM905.4 322.7L902.6 320.4L906.2 318.5L907.2 322.4ZM907.2 322.4L906.2 318.5L910.3 321.9ZM902.6 320.4L897.4 316.1L901 314.3ZM902.6 320.4L901 314.3L906.2 318.5ZM914.4 321.2L915 320.9L915.1 321.1ZM915.1 321.1L915 320.9L915.3 321.1ZM910.3 321.9L906.2 318.5L909.8 316.7L911.1 321.7ZM911.1 321.7L909.8 316.7L915 320.9L914.4 321.2ZM906.2 318.5L901 314.3L904.6 312.5ZM906.2 318.5L904.6 312.5L909.8 316.7Z"/>
<path class="g" d="M909.5 331.3L893.8 317.8L904.6 312.5L920.3 325.1Z"/>
<path fill="#ffa700" stroke="#ffa700" stroke-width=".5" d="M985.2 312.4L979.4 310.7L982.9 306.9ZM985.2 312.4L982.9 306.9L988.7 308.5ZM979.4 310.7L973.7 309.1L977.2 305.3ZM979.4 310.7L977.2 305.3L982.9 306.9ZM973.7 309.1L968 307.5L971.5 303.7ZM973.7 309.1L971.5 303.7L977.2 305.3ZM988.7 308.5L982.9 306.9L986.4 303ZM988.7 308.5L986.4 303L992.2 304.7ZM982.9 306.9L977.2 305.3L980.6 301.4ZM982.9 306.9L980.6 301.4L986.4 303ZM977.2 305.3L971.5 303.7L974.9 299.9ZM977.2 305.3L974.9 299.9L980.6 301.4ZM992.2 304.7L986.4 303L989.8 299.2ZM992.2 304.7L989.8 299.2L995.7 300.8ZM986.4 303L980.6 301.4L984 297.6ZM986.4 303L984 297.6L989.8 299.2ZM980.6 301.4L974.9 299.9L978.4 296.1ZM980.6 301.4L978.4 296.1L984 297.6Z"/>
<path class="g" d="M985.2 312.4L968 307.5L978.4 296.1L995.7 300.8Z"/>
<path fill="#ffd900" stroke="#ffd900" stroke-width=".5" d="M822.7 364.4L818.2 364.3L821.7 358.4L821.9 358.6ZM822.7 364.4L821.9 358.6L824.3 361.7ZM818.2 364.3L813.8 364.2L817.4 358.1ZM818.2 364.3L817.4 358.1L821.6 358.2L821.7 358.4ZM813.8 364.2L809.4 364.2L813 358.1ZM813.8 364.2L813 358.1L817.4 358.1ZM821.6 358.2L817.4 358.1L819.1 355.2ZM817.4 358.1L813 358.1L816.5 352.1L816.6 352.2ZM817.4 358.1L816.6 352.2L819.1 355.2Z"/>
<path fill="#ffc000" stroke="#ffc000" stroke-width=".5" d="M821.7 358.4L821.8 358.2L821.9 358.6ZM821.9 358.6L821.8 358.2L826.4 358.3L824.3 361.7ZM821.6 358.2L821.8 358.2L821.7 358.4ZM826.4 358.3L821.8 358.2L825.5 352.1ZM826.4 358.3L825.5 352.1L830 352.2ZM821.8 358.2L821.6 358.2L819.1 355.2L821 352ZM821.8 358.2L821 352L825.5 352.1ZM816.5 352.1L816.5 351.9L816.6 352.2ZM816.6 352.2L816.5 351.9L821 352L819.1 355.2ZM830 352.2L825.5 352.1L829.1 346ZM830 352.2L829.1 346L833.7 346.1ZM825.5 352.1L821 352L824.6 345.9ZM825.5 352.1L824.6 345.9L829.1 346ZM821 352L816.5 351.9L820.1 345.8ZM821 352L820.1 345.8L824.6 345.9Z"/>
<path class="g" d="M822.7 364.4L809.4 364.2L820.1 345.8L833.7 346.1Z"/>
<path fill="#72ff00" stroke="#72ff00" stroke-width=".5" d="M758.8 492.6L755.5 494.2L756 488.8ZM755.5 494.2L752.1 495.8L753.1 485L754.8 487.2ZM755.5 494.2L754.8 487.2L756 488.8ZM752.1 495.8L748.8 497.3L750.1 481.3L750.6 482ZM752.1 495.8L750.6 482L753.1 485Z"/>
<path fill="#aaff00" stroke="#aaff00" stroke-width=".5" d="M758.9 492.6L758.8 492.6L756 488.8L757.3 476.5ZM758.9 492.6L757.3 476.5L760.9 475.4ZM753.1 485L753.7 477.6L754.8 487.2ZM754.8 487.2L753.7 477.6L757.3 476.5L756 488.8ZM750.1 481.3L750.3 478.6L750.6 482ZM750.6 482L750.3 478.6L753.7 477.6L753.1 485ZM760.9 475.4L757.3 476.5L758.7 462.9L759.7 464.2ZM760.9 475.4L759.7 464.2L761.9 466.6ZM757.3 476.5L753.7 477.6L755.4 459.4L755.5 459.5ZM757.3 476.5L755.5 459.5L758.7 462.9ZM753.7 477.6L750.3 478.6L751.8 459.4ZM753.7 477.6L751.8 459.4L755 459L755.4 459.4ZM755 459L751.8 459.4L752.1 455.9Z"/>
<path fill="#e3ff00" stroke="#e3ff00" stroke-width=".5" d="M758.7 462.9L759.1 458.4L759.7 464.2ZM759.7 464.2L759.1 458.4L762.9 457.9L761.9 466.6ZM755.4 459.4L755.4 458.9L755.5 459.5ZM755.5 459.5L755.4 458.9L759.1 458.4L758.7 462.9ZM755 459L755.4 458.9L755.4 459.4ZM762.9 457.9L759.1 458.4L761 439.8ZM762.9 457.9L761 439.8L765 439.9ZM759.1 458.4L755.4 458.9L757.1 439.8ZM759.1 458.4L757.1 439.8L761 439.8ZM755.4 458.9L755 459L752.1 455.9L753.3 439.7ZM755.4 458.9L753.3 439.7L757.1 439.8Z"/>
<path class="g" d="M758.9 492.6L748.8 497.3L753.3 439.7L765 439.9Z"/>
<path fill="#aaff00" stroke="#aaff00" stroke-width=".5" d="M1025.6 481.9L1020.6 470L1023.9 466.2ZM1025.6 481.9L1023.9 466.2L1028.9 478ZM1020.6 470L1016.6 460.7L1019.5 459.8ZM1020.6 470L1019.5 459.8L1021 459.3L1023.9 466.2ZM1028.9 478L1023.9 466.2L1027.2 462.4ZM1028.9 478L1027.2 462.4L1032.2 474.1ZM1023.9 466.2L1021 459.3L1023.1 458.7ZM1023.9 466.2L1023.1 458.7L1025.4 458L1027.2 462.4ZM1032.2 474.1L1027.2 462.4L1030.6 458.6ZM1032.2 474.1L1030.6 458.6L1035.5 470.3ZM1027.2 462.4L1025.4 458L1026.7 457.6ZM1027.2 462.4L1026.7 457.6L1029.7 456.7L1030.6 458.6Z"/>
<path fill="#e3ff00" stroke="#e3ff00" stroke-width=".5" d="M1016.6 460.7L1015.5 458.1L1018.9 454.4L1019.5 459.8ZM1019.5 459.8L1018.9 454.4L1021 459.3ZM1015.5 458.1L1010.5 446.1L1013.9 442.5ZM1015.5 458.1L1013.9 442.5L1018.9 454.4ZM1021 459.3L1018.9 454.4L1022.2 450.6L1023.1 458.7ZM1023.1 458.7L1022.2 450.6L1025.4 458ZM1018.9 454.4L1013.9 442.5L1017.2 438.8ZM1018.9 454.4L1017.2 438.8L1022.2 450.6ZM1025.4 458L1022.2 450.6L1025.6 446.9L1026.7 457.6ZM1026.7 457.6L1025.6 446.9L1029.7 456.7ZM1022.2 450.6L1017.2 438.8L1020.5 435.2ZM1022.2 450.6L1020.5 435.2L1025.6 446.9Z"/>
<path class="g" d="M1025.6 481.9L1010.5 446.1L1020.5 435.2L1035.5 470.3Z"/>
<path fill="#ffc000" stroke="#ffc000" stroke-width=".5" d="M871.3 330.7L866.4 330.5L870.2 328.4ZM871.3 330.7L870.2 328.4L875.2 328.8ZM866.4 330.5L861.5 330.2L865.3 328ZM866.4 330.5L865.3 328L870.2 328.4ZM861.5 330.2L856.7 330L860.4 327.6ZM861.5 330.2L860.4 327.6L865.3 328ZM875.2 328.8L870.2 328.4L873.9 326.4ZM875.2 328.8L873.9 326.4L878.9 326.9ZM870.2 328.4L865.3 328L869 325.8ZM870.2 328.4L869 325.8L873.9 326.4ZM865.3 328L860.4 327.6L864.1 325.2ZM865.3 328L864.1 325.2L869 325.8ZM878.9 326.9L873.9 326.4L877.7 324.3ZM878.9 326.9L877.7 324.3L882.7 325.1ZM873.9 326.4L869 325.8L872.7 323.6ZM873.9 326.4L872.7 323.6L877.7 324.3ZM869 325.8L864.1 325.2L867.8 322.8ZM869 325.8L867.8 322.8L872.7 323.6Z"/>
<path class="g" d="M871.3 330.7L856.7 330L867.8 322.8L882.7 325.1Z"/>
<path fill="#72ff00" stroke="#72ff00" stroke-width=".5" d="M1042 506.3L1036.5 498.2L1039.1 494.3L1040.2 494.3ZM1042 506.3L1040.2 494.3L1041 494.4L1045.6 500.6ZM1036.5 498.2L1034 494.4L1035.9 494.2ZM1036.5 498.2L1035.9 494.2L1039.1 494.3ZM1045.6 500.6L1041 494.4L1044.6 494.5ZM1045.6 500.6L1044.6 494.5L1049 495.1Z"/>
<path fill="#aaff00" stroke="#aaff00" stroke-width=".5" d="M1039.1 494.3L1040 493L1040.2 494.3ZM1040.2 494.3L1040 493L1041 494.4ZM1034 494.4L1031.1 490L1034.5 485.5L1035.9 494.2ZM1035.9 494.2L1034.5 485.5L1040 493L1039.1 494.3ZM1031.1 490L1025.6 481.9L1028.9 478ZM1031.1 490L1028.9 478L1034.5 485.5ZM1041 494.4L1040 493L1043.5 487.9L1044.6 494.5ZM1044.6 494.5L1043.5 487.9L1049.1 494.8L1049 495.1ZM1040 493L1034.5 485.5L1037.8 481ZM1040 493L1037.8 481L1043.5 487.9ZM1034.5 485.5L1028.9 478L1032.2 474.1ZM1034.5 485.5L1032.2 474.1L1037.8 481ZM1049.1 494.8L1043.5 487.9L1046.9 482.8ZM1049.1 494.8L1046.9 482.8L1052.7 489.1ZM1043.5 487.9L1037.8 481L1041.2 476.5ZM1043.5 487.9L1041.2 476.5L1046.9 482.8ZM1037.8 481L1032.2 474.1L1035.5 470.3ZM1037.8 481L1035.5 470.3L1041.2 476.5Z"/>
<path class="g" d="M1042 506.3L1025.6 481.9L1035.5 470.3L1052.7 489.1Z"/>
<path fill="#fff200" stroke="#fff200" stroke-width=".5" d="M1039.8 416.5L1036.7 390.2L1037.9 388.9L1039.9 388.1ZM1039.8 416.5L1039.9 388.1L1040.1 388L1043 413.2ZM1036.7 390.2L1036.6 389.5L1036.7 389.4ZM1036.7 390.2L1036.7 389.4L1037.9 388.9ZM1043 413.2L1040.1 388L1043.2 386.7ZM1043 413.2L1043.2 386.7L1043.6 386.5L1046.2 410ZM1046.2 410L1043.6 386.5L1046.4 385.3ZM1046.2 410L1046.4 385.3L1047 385.1L1049.3 406.8Z"/>
<path fill="#ffd900" stroke="#ffd900" stroke-width=".5" d="M1037.9 388.9L1039.9 386.7L1039.9 388.1ZM1039.9 388.1L1039.9 386.7L1040.1 388ZM1036.6 389.5L1033.4 363.1L1035.6 360.5L1036.7 360.1L1036.7 389.4ZM1036.7 389.4L1036.7 360.1L1036.8 360.1L1039.9 386.7L1037.9 388.9ZM1033.4 363.1L1033.2 361.5L1033.4 361.4ZM1033.4 363.1L1033.4 361.4L1035.6 360.5ZM1040.1 388L1039.9 386.7L1043.2 383.2L1043.2 386.7ZM1043.2 386.7L1043.2 383.2L1043.6 386.5ZM1039.9 386.7L1036.8 360.1L1040.1 358.9ZM1039.9 386.7L1040.1 358.9L1040.4 358.7L1043.2 383.2ZM1043.6 386.5L1043.2 383.2L1046.4 379.7L1046.4 385.3ZM1046.4 385.3L1046.4 379.7L1047 385.1ZM1043.2 383.2L1040.4 358.7L1043.4 357.6ZM1043.2 383.2L1043.4 357.6L1044 357.4L1046.4 379.7Z"/>
<path fill="#ffc000" stroke="#ffc000" stroke-width=".5" d="M1035.6 360.5L1036.7 359.3L1036.7 360.1ZM1036.7 360.1L1036.7 359.3L1036.8 360.1ZM1033.2 361.5L1030 335.1L1033.1 331.4L1033.4 331.3L1033.4 361.4ZM1033.4 361.4L1033.4 331.3L1033.5 331.3L1036.7 359.3L1035.6 360.5ZM1036.8 360.1L1036.7 359.3L1040.1 355.5L1040.1 358.9ZM1040.1 358.9L1040.1 355.5L1040.4 358.7ZM1036.7 359.3L1033.5 331.3L1036.9 330.1ZM1036.7 359.3L1036.9 330.1L1037.2 330L1040.1 355.5ZM1040.4 358.7L1040.1 355.5L1043.4 351.8L1043.4 357.6ZM1043.4 357.6L1043.4 351.8L1044 357.4ZM1040.1 355.5L1037.2 330L1040.3 329ZM1040.1 355.5L1040.3 329L1040.9 328.8L1043.4 351.8Z"/>
<path fill="#ffa700" stroke="#ffa700" stroke-width=".5" d="M1033.1 331.4L1033.4 331L1033.4 331.3ZM1033.4 331.3L1033.4 331L1033.5 331.3ZM1033.5 331.3L1033.4 331L1036.9 326.9L1036.9 330.1ZM1036.9 330.1L1036.9 326.9L1037.2 330ZM1037.2 330L1036.9 326.9L1040.3 322.9L1040.3 329ZM1040.3 329L1040.3 322.9L1040.9 328.8Z"/>
<path class="g" d="M1039.8 416.5L1030 335.1L1040.3 322.9L1049.3 406.8Z"/>
<path fill="#ffd900" stroke="#ffd900" stroke-width=".5" d="M811 375.3L806.5 374.9L810.4 371.3ZM811 375.3L810.4 371.3L814.9 371.6ZM806.5 374.9L802.1 374.5L806 371.1ZM806.5 374.9L806 371.1L810.4 371.3ZM802.1 374.5L797.8 374.1L801.7 370.8ZM802.1 374.5L801.7 370.8L806 371.1ZM814.9 371.6L810.4 371.3L814.3 367.8ZM814.9 371.6L814.3 367.8L818.8 368ZM810.4 371.3L806 371.1L809.9 367.6ZM810.4 371.3L809.9 367.6L814.3 367.8ZM806 371.1L801.7 370.8L805.6 367.5ZM806 371.1L805.6 367.5L809.9 367.6ZM818.8 368L814.3 367.8L818.2 364.3ZM818.8 368L818.2 364.3L822.7 364.4ZM814.3 367.8L809.9 367.6L813.8 364.2ZM814.3 367.8L813.8 364.2L818.2 364.3ZM809.9 367.6L805.6 367.5L809.4 364.2ZM809.9 367.6L809.4 364.2L813.8 364.2Z"/>
<path class="g" d="M811 375.3L797.8 374.1L809.4 364.2L822.7 364.4Z"/>
<path fill="#ffc000" stroke="#ffc000" stroke-width=".5" d="M936.5 334.9L931 331.6L934.6 328.2ZM936.5 334.9L934.6 328.2L940.1 331.7ZM931 331.6L925.6 328.3L929.2 324.8ZM931 331.6L929.2 324.8L934.6 328.2ZM925.6 328.3L920.3 325.1L923.5 321.9L924 322ZM925.6 328.3L924 322L924.9 322.1L929.2 324.8ZM940.1 331.7L934.6 328.2L938.2 324.9ZM940.1 331.7L938.2 324.9L943.6 328.5ZM934.6 328.2L929.2 324.8L930.9 323.2L933.4 323.7ZM934.6 328.2L933.4 323.7L937.3 324.3L938.2 324.9ZM929.2 324.8L924.9 322.1L928.7 322.9ZM929.2 324.8L928.7 322.9L930.9 323.2ZM943.6 328.5L938.2 324.9L938.6 324.5L942.7 325.1ZM943.6 328.5L942.7 325.1L946.8 325.6ZM938.2 324.9L937.3 324.3L938.1 324.4ZM938.2 324.9L938.1 324.4L938.6 324.5Z"/>
<path fill="#ffa700" stroke="#ffa700" stroke-width=".5" d="M923.5 321.9L923.9 321.5L924 322ZM924 322L923.9 321.5L924.9 322.1ZM930.9 323.2L932.8 321.4L933.4 323.7ZM933.4 323.7L932.8 321.4L937.3 324.3ZM924.9 322.1L923.9 321.5L927.4 317.9L928.7 322.9ZM928.7 322.9L927.4 317.9L932.8 321.4L930.9 323.2ZM938.6 324.5L941.7 321.6L942.7 325.1ZM942.7 325.1L941.7 321.6L947.2 325.3L946.8 325.6ZM937.3 324.3L932.8 321.4L936.3 318L938.1 324.4ZM938.1 324.4L936.3 318L941.7 321.6L938.6 324.5ZM932.8 321.4L927.4 317.9L931 314.4ZM932.8 321.4L931 314.4L936.3 318Z"/>
<path class="g" d="M936.5 334.9L920.3 325.1L931 314.4L947.2 325.3Z"/>
<path fill="#aaff00" stroke="#aaff00" stroke-width=".5" d="M1081.9 485.1L1075.5 481.5L1078.7 477.8ZM1081.9 485.1L1078.7 477.8L1085.2 481.3ZM1075.5 481.5L1069.2 478L1072.4 474.3ZM1075.5 481.5L1072.4 474.3L1078.7 477.8ZM1069.2 478L1062.9 474.6L1066.1 470.9ZM1069.2 478L1066.1 470.9L1072.4 474.3ZM1085.2 481.3L1078.7 477.8L1081.9 474.1ZM1085.2 481.3L1081.9 474.1L1088.4 477.5ZM1078.7 477.8L1072.4 474.3L1075.6 470.7ZM1078.7 477.8L1075.6 470.7L1081.9 474.1ZM1072.4 474.3L1066.1 470.9L1069.3 467.3ZM1072.4 474.3L1069.3 467.3L1075.6 470.7ZM1088.4 477.5L1081.9 474.1L1085.1 470.4ZM1088.4 477.5L1085.1 470.4L1091.5 473.8ZM1081.9 474.1L1075.6 470.7L1078.7 467ZM1081.9 474.1L1078.7 467L1085.1 470.4ZM1075.6 470.7L1069.3 467.3L1072.4 463.7ZM1075.6 470.7L1072.4 463.7L1078.7 467Z"/>
<path class="g" d="M1081.9 485.1L1062.9 474.6L1072.4 463.7L1091.5 473.8Z"/>
<path fill="#ffa700" stroke="#ffa700" stroke-width=".5" d="M974.7 324L969 321.3L972.5 317.8ZM974.7 324L972.5 317.8L978.2 320.1ZM969 321.3L963.3 318.7L966.8 315.5ZM969 321.3L966.8 315.5L972.5 317.8ZM963.3 318.7L957.7 316.1L961.2 313.2ZM963.3 318.7L961.2 313.2L966.8 315.5ZM978.2 320.1L972.5 317.8L975.9 314.2ZM978.2 320.1L975.9 314.2L981.7 316.2ZM972.5 317.8L966.8 315.5L970.2 312.3ZM972.5 317.8L970.2 312.3L975.9 314.2ZM966.8 315.5L961.2 313.2L964.6 310.3ZM966.8 315.5L964.6 310.3L970.2 312.3ZM981.7 316.2L975.9 314.2L979.4 310.7ZM981.7 316.2L979.4 310.7L985.2 312.4ZM975.9 314.2L970.2 312.3L973.7 309.1ZM975.9 314.2L973.7 309.1L979.4 310.7ZM970.2 312.3L964.6 310.3L968 307.5ZM970.2 312.3L968 307.5L973.7 309.1Z"/>
<path class="g" d="M974.7 324L957.7 316.1L968 307.5L985.2 312.4Z"/>
<path fill="#72ff00" stroke="#72ff00" stroke-width=".5" d="M1031.4 522.9L1026.2 512.5L1029.7 507.7ZM1031.4 522.9L1029.7 507.7L1035 517.4ZM1026.2 512.5L1021 502.2L1024.4 498.1ZM1026.2 512.5L1024.4 498.1L1029.7 507.7ZM1021 502.2L1018.6 497.5L1020.2 496.9ZM1021 502.2L1020.2 496.9L1023.3 496.2L1024.4 498.1ZM1035 517.4L1029.7 507.7L1033.1 502.9ZM1035 517.4L1033.1 502.9L1038.5 511.8ZM1029.7 507.7L1024.4 498.1L1026.5 495.5L1027.9 495.2ZM1029.7 507.7L1027.9 495.2L1028.4 495.1L1033.1 502.9ZM1024.4 498.1L1023.3 496.2L1024 496ZM1024.4 498.1L1024 496L1026.5 495.5ZM1038.5 511.8L1033.1 502.9L1036.5 498.2ZM1038.5 511.8L1036.5 498.2L1042 506.3ZM1033.1 502.9L1028.4 495.1L1031.8 494.5ZM1033.1 502.9L1031.8 494.5L1034 494.4L1036.5 498.2Z"/>
<path fill="#aaff00" stroke="#aaff00" stroke-width=".5" d="M1018.6 497.5L1015.7 491.8L1019 488.5L1020.2 496.9ZM1020.2 496.9L1019 488.5L1023.3 496.2ZM1026.5 495.5L1027.7 494L1027.9 495.2ZM1027.9 495.2L1027.7 494L1028.4 495.1ZM1023.3 496.2L1019 488.5L1022.3 485.2L1024 496ZM1024 496L1022.3 485.2L1027.7 494L1026.5 495.5ZM1028.4 495.1L1027.7 494L1031.1 490L1031.8 494.5ZM1031.8 494.5L1031.1 490L1034 494.4ZM1027.7 494L1022.3 485.2L1025.6 481.9ZM1027.7 494L1025.6 481.9L1031.1 490Z"/>
<path class="g" d="M1031.4 522.9L1015.7 491.8L1025.6 481.9L1042 506.3Z"/>
<path fill="#aaff00" stroke="#aaff00" stroke-width=".5" d="M1015.7 491.8L1010.6 480.6L1013.9 477ZM1015.7 491.8L1013.9 477L1019 488.5ZM1010.6 480.6L1005.4 469.3L1008.8 465.5ZM1010.6 480.6L1008.8 465.5L1013.9 477ZM1005.4 469.3L1003.4 464.8L1004.8 464.4ZM1005.4 469.3L1004.8 464.4L1007.9 463.5L1008.8 465.5ZM1019 488.5L1013.9 477L1017.3 473.5ZM1019 488.5L1017.3 473.5L1022.3 485.2ZM1013.9 477L1008.8 465.5L1011.7 462.3L1012.2 462.1ZM1013.9 477L1012.2 462.1L1012.3 462.1L1017.3 473.5ZM1008.8 465.5L1007.9 463.5L1008.6 463.3ZM1008.8 465.5L1008.6 463.3L1011.7 462.3ZM1022.3 485.2L1017.3 473.5L1020.6 470ZM1022.3 485.2L1020.6 470L1025.6 481.9ZM1017.3 473.5L1012.3 462.1L1015.9 461ZM1017.3 473.5L1015.9 461L1016.6 460.7L1020.6 470Z"/>
<path fill="#e3ff00" stroke="#e3ff00" stroke-width=".5" d="M1003.4 464.8L1000.2 457.9L1003.7 454L1004.8 464.4ZM1004.8 464.4L1003.7 454L1007.9 463.5ZM1011.7 462.3L1012.2 461.8L1012.2 462.1ZM1012.2 462.1L1012.2 461.8L1012.3 462.1ZM1007.9 463.5L1003.7 454L1007.1 450.1L1008.6 463.3ZM1008.6 463.3L1007.1 450.1L1012.2 461.8L1011.7 462.3ZM1012.3 462.1L1012.2 461.8L1015.5 458.1L1015.9 461ZM1015.9 461L1015.5 458.1L1016.6 460.7ZM1012.2 461.8L1007.1 450.1L1010.5 446.1ZM1012.2 461.8L1010.5 446.1L1015.5 458.1Z"/>
<path class="g" d="M1015.7 491.8L1000.2 457.9L1010.5 446.1L1025.6 481.9Z"/>
<path fill="#e3ff00" stroke="#e3ff00" stroke-width=".5" d="M1030.3 425.4L1029.8 421.5L1030.3 421.3ZM1030.3 425.4L1030.3 421.3L1033.2 419.9L1033.5 422.4ZM1033.5 422.4L1033.2 419.9L1033.5 419.7ZM1033.5 422.4L1033.5 419.7L1036.5 418.2L1036.7 419.4ZM1036.7 419.4L1036.5 418.2L1036.7 418.2ZM1036.7 419.4L1036.7 418.2L1039.6 416.7Z"/>
<path fill="#fff200" stroke="#fff200" stroke-width=".5" d="M1029.8 421.5L1026.8 400.3L1030.1 396.9L1030.3 421.3ZM1030.3 421.3L1030.1 396.9L1033.2 419.9ZM1026.8 400.3L1025.9 394L1026.8 393.7ZM1026.8 400.3L1026.8 393.7L1029.5 392.5L1030.1 396.9ZM1033.2 419.9L1030.1 396.9L1033.4 393.6L1033.5 419.7ZM1033.5 419.7L1033.4 393.6L1036.5 418.2ZM1030.1 396.9L1029.5 392.5L1030.1 392.3ZM1030.1 396.9L1030.1 392.3L1033.1 391L1033.4 393.6ZM1036.5 418.2L1033.4 393.6L1036.7 390.2L1036.7 418.2ZM1036.7 418.2L1036.7 390.2L1039.8 416.5L1039.6 416.7ZM1033.4 393.6L1033.1 391L1033.4 390.8ZM1033.4 393.6L1033.4 390.8L1036.6 389.5L1036.7 390.2Z"/>
<path fill="#ffd900" stroke="#ffd900" stroke-width=".5" d="M1025.9 394L1023.2 374.5L1026.6 370.7L1026.8 393.7ZM1026.8 393.7L1026.6 370.7L1029.5 392.5ZM1023.2 374.5L1021.9 365.6L1023.1 365.2ZM1023.2 374.5L1023.1 365.2L1025.7 364.2L1026.6 370.7ZM1029.5 392.5L1026.6 370.7L1030 366.9L1030.1 392.3ZM1030.1 392.3L1030 366.9L1033.1 391ZM1026.6 370.7L1025.7 364.2L1026.6 363.9ZM1026.6 370.7L1026.6 363.9L1029.5 362.8L1030 366.9ZM1033.1 391L1030 366.9L1033.4 363.1L1033.4 390.8ZM1033.4 390.8L1033.4 363.1L1036.6 389.5ZM1030 366.9L1029.5 362.8L1030 362.7ZM1030 366.9L1030 362.7L1033.2 361.5L1033.4 363.1Z"/>
<path fill="#ffc000" stroke="#ffc000" stroke-width=".5" d="M1021.9 365.6L1019.5 347.9L1023 343.6L1023.1 365.2ZM1023.1 365.2L1023 343.6L1025.7 364.2ZM1025.7 364.2L1023 343.6L1026.5 339.4L1026.6 363.9ZM1026.6 363.9L1026.5 339.4L1029.5 362.8ZM1029.5 362.8L1026.5 339.4L1030 335.1L1030 362.7ZM1030 362.7L1030 335.1L1033.2 361.5Z"/>
<path class="g" d="M1030.3 425.4L1019.5 347.9L1030 335.1L1039.8 416.5Z"/>
<path fill="#ffc000" stroke="#ffc000" stroke-width=".5" d="M898.4 337.8L893.1 333.5L896.8 331.2ZM898.4 337.8L896.8 331.2L902.1 335.6ZM893.1 333.5L887.9 329.3L891.6 326.9ZM893.1 333.5L891.6 326.9L896.8 331.2ZM887.9 329.3L882.7 325.1L883 324.9L886.9 324.8ZM887.9 329.3L886.9 324.8L888.8 324.6L891.6 326.9ZM902.1 335.6L896.8 331.2L900.5 329ZM902.1 335.6L900.5 329L905.8 333.4ZM896.8 331.2L891.6 326.9L895.3 324.6ZM896.8 331.2L895.3 324.6L900.5 329ZM891.6 326.9L888.8 324.6L891 324.5ZM891.6 326.9L891 324.5L894.8 324.2L895.3 324.6ZM905.8 333.4L900.5 329L904.2 326.8ZM905.8 333.4L904.2 326.8L909.5 331.3ZM900.5 329L895.3 324.6L896.1 324.1L899.3 323.8ZM900.5 329L899.3 323.8L900.5 323.6L904.2 326.8ZM895.3 324.6L894.8 324.2L895.2 324.1ZM895.3 324.6L895.2 324.1L896.1 324.1Z"/>
<path fill="#ffa700" stroke="#ffa700" stroke-width=".5" d="M883 324.9L886.4 322.7L886.9 324.8ZM886.9 324.8L886.4 322.7L888.8 324.6ZM888.8 324.6L886.4 322.7L890.1 320.2L891 324.5ZM891 324.5L890.1 320.2L894.8 324.2ZM896.1 324.1L898.9 322.3L899.3 323.8ZM899.3 323.8L898.9 322.3L900.5 323.6ZM894.8 324.2L890.1 320.2L893.8 317.8L895.2 324.1ZM895.2 324.1L893.8 317.8L898.9 322.3L896.1 324.1Z"/>
<path class="g" d="M898.4 337.8L882.7 325.1L893.8 317.8L909.5 331.3Z"/>
<path fill="#72ff00" stroke="#72ff00" stroke-width=".5" d="M760.5 519.7L756.8 519.8L759.9 510.3ZM760.5 519.7L759.9 510.3L763.7 510ZM756.8 519.8L753.1 519.9L756.3 510.6ZM756.8 519.8L756.3 510.6L759.9 510.3ZM753.1 519.9L749.5 520L752.6 510.9ZM753.1 519.9L752.6 510.9L756.3 510.6ZM763.7 510L759.9 510.3L762.8 501.9L763.3 503ZM763.7 510L763.3 503L764.9 506.5ZM759.9 510.3L756.3 510.6L759.4 501.3ZM759.9 510.3L759.4 501.3L762.3 500.9L762.8 501.9ZM756.3 510.6L752.6 510.9L755.8 501.8ZM756.3 510.6L755.8 501.8L759.4 501.3ZM762.3 500.9L759.4 501.3L760.8 497.3ZM759.4 501.3L755.8 501.8L758.8 492.8L758.9 493ZM759.4 501.3L758.9 493L760.8 497.3Z"/>
<path fill="#aaff00" stroke="#aaff00" stroke-width=".5" d="M762.8 501.9L763.1 500.8L763.3 503ZM763.3 503L763.1 500.8L766.9 500.3L764.9 506.5ZM762.3 500.9L763.1 500.8L762.8 501.9ZM766.9 500.3L763.1 500.8L766.3 491.2ZM766.9 500.3L766.3 491.2L770.2 490.5ZM763.1 500.8L762.3 500.9L760.8 497.3L762.6 491.9ZM763.1 500.8L762.6 491.9L766.3 491.2ZM758.8 492.8L758.9 492.6L758.9 493ZM758.9 493L758.9 492.6L762.6 491.9L760.8 497.3Z"/>
<path class="g" d="M760.5 519.7L749.5 520L758.9 492.6L770.2 490.5Z"/>
<path fill="#ffc000" stroke="#ffc000" stroke-width=".5" d="M859.7 336.1L854.8 336.5L858.7 334.5ZM859.7 336.1L858.7 334.5L863.6 334.3ZM854.8 336.5L850 337L853.8 334.8ZM854.8 336.5L853.8 334.8L858.7 334.5ZM850 337L845.3 337.5L849.1 335ZM850 337L849.1 335L853.8 334.8ZM863.6 334.3L858.7 334.5L862.5 332.5ZM863.6 334.3L862.5 332.5L867.5 332.5ZM858.7 334.5L853.8 334.8L857.7 332.5ZM858.7 334.5L857.7 332.5L862.5 332.5ZM853.8 334.8L849.1 335L852.9 332.5ZM853.8 334.8L852.9 332.5L857.7 332.5ZM867.5 332.5L862.5 332.5L866.4 330.5ZM867.5 332.5L866.4 330.5L871.3 330.7ZM862.5 332.5L857.7 332.5L861.5 330.2ZM862.5 332.5L861.5 330.2L866.4 330.5ZM857.7 332.5L852.9 332.5L856.7 330ZM857.7 332.5L856.7 330L861.5 330.2Z"/>
<path class="g" d="M859.7 336.1L845.3 337.5L856.7 330L871.3 330.7Z"/>
<path fill="#ffd900" stroke="#ffd900" stroke-width=".5" d="M799 385.8L794.6 385.2L798.6 381.8ZM799 385.8L798.6 381.8L803 382.3ZM794.6 385.2L790.3 384.7L794.3 381.3ZM794.6 385.2L794.3 381.3L798.6 381.8ZM790.3 384.7L786.1 384.2L790 380.8ZM790.3 384.7L790 380.8L794.3 381.3ZM803 382.3L798.6 381.8L802.6 378.3ZM803 382.3L802.6 378.3L807 378.8ZM798.6 381.8L794.3 381.3L798.2 377.9ZM798.6 381.8L798.2 377.9L802.6 378.3ZM794.3 381.3L790 380.8L793.9 377.4ZM794.3 381.3L793.9 377.4L798.2 377.9ZM807 378.8L802.6 378.3L806.5 374.9ZM807 378.8L806.5 374.9L811 375.3ZM802.6 378.3L798.2 377.9L802.1 374.5ZM802.6 378.3L802.1 374.5L806.5 374.9ZM798.2 377.9L793.9 377.4L797.8 374.1ZM798.2 377.9L797.8 374.1L802.1 374.5Z"/>
<path class="g" d="M799 385.8L786.1 384.2L797.8 374.1L811 375.3Z"/>
<path fill="#aaff00" stroke="#aaff00" stroke-width=".5" d="M1071.7 499.4L1065.3 495.9L1068.7 491.1ZM1071.7 499.4L1068.7 491.1L1075.1 494.6ZM1065.3 495.9L1058.9 492.5L1062.4 487.6ZM1065.3 495.9L1062.4 487.6L1068.7 491.1ZM1058.9 492.5L1052.7 489.1L1056.1 484.2ZM1058.9 492.5L1056.1 484.2L1062.4 487.6ZM1075.1 494.6L1068.7 491.1L1072.1 486.3ZM1075.1 494.6L1072.1 486.3L1078.5 489.8ZM1068.7 491.1L1062.4 487.6L1065.8 482.8ZM1068.7 491.1L1065.8 482.8L1072.1 486.3ZM1062.4 487.6L1056.1 484.2L1059.5 479.4ZM1062.4 487.6L1059.5 479.4L1065.8 482.8ZM1078.5 489.8L1072.1 486.3L1075.5 481.5ZM1078.5 489.8L1075.5 481.5L1081.9 485.1ZM1072.1 486.3L1065.8 482.8L1069.2 478ZM1072.1 486.3L1069.2 478L1075.5 481.5ZM1065.8 482.8L1059.5 479.4L1062.9 474.6ZM1065.8 482.8L1062.9 474.6L1069.2 478Z"/>
<path class="g" d="M1071.7 499.4L1052.7 489.1L1062.9 474.6L1081.9 485.1Z"/>
<path fill="#ffa700" stroke="#ffa700" stroke-width=".5" d="M1013.3 310.4L1007.3 307.2L1010.8 303.3ZM1013.3 310.4L1010.8 303.3L1016.8 306.2ZM1007.3 307.2L1001.5 304L1004.9 300.4ZM1007.3 307.2L1004.9 300.4L1010.8 303.3ZM1001.5 304L995.7 300.8L999.1 297.6ZM1001.5 304L999.1 297.6L1004.9 300.4ZM1016.8 306.2L1010.8 303.3L1014.2 299.4ZM1016.8 306.2L1014.2 299.4L1020.3 302ZM1010.8 303.3L1004.9 300.4L1008.3 296.9ZM1010.8 303.3L1008.3 296.9L1014.2 299.4ZM1004.9 300.4L999.1 297.6L1002.4 294.3ZM1004.9 300.4L1002.4 294.3L1008.3 296.9ZM1020.3 302L1014.2 299.4L1017.7 295.5ZM1020.3 302L1017.7 295.5L1023.7 297.8ZM1014.2 299.4L1008.3 296.9L1011.7 293.3ZM1014.2 299.4L1011.7 293.3L1017.7 295.5ZM1008.3 296.9L1002.4 294.3L1005.8 291.1ZM1008.3 296.9L1005.8 291.1L1011.7 293.3Z"/>
<path class="g" d="M1013.3 310.4L995.7 300.8L1005.8 291.1L1023.7 297.8Z"/>
<path fill="#39ff00" stroke="#39ff00" stroke-width=".5" d="M1020.8 539.3L1018.5 533.5L1020.3 533ZM1020.8 539.3L1020.3 533L1023.8 532.4L1024.4 533.8ZM1024.4 533.8L1023.8 532.4L1024.2 532.3ZM1024.4 533.8L1024.2 532.3L1025.5 532.1Z"/>
<path fill="#72ff00" stroke="#72ff00" stroke-width=".5" d="M1018.5 533.5L1015.8 526.7L1019.3 522L1020.3 533ZM1020.3 533L1019.3 522L1023.8 532.4ZM1015.8 526.7L1010.8 514.1L1014.2 510.1ZM1015.8 526.7L1014.2 510.1L1019.3 522ZM1010.8 514.1L1006.2 502.5L1009.4 501ZM1010.8 514.1L1009.4 501L1010.2 500.8L1014.2 510.1ZM1023.8 532.4L1019.3 522L1022.8 517.3L1024.2 532.3ZM1024.2 532.3L1022.8 517.3L1027.9 528.4L1025.5 532.1ZM1019.3 522L1014.2 510.1L1017.6 506.1ZM1019.3 522L1017.6 506.1L1022.8 517.3ZM1014.2 510.1L1010.2 500.8L1013 499.5ZM1014.2 510.1L1013 499.5L1014.3 499.1L1017.6 506.1ZM1027.9 528.4L1022.8 517.3L1026.2 512.5ZM1027.9 528.4L1026.2 512.5L1031.4 522.9ZM1022.8 517.3L1017.6 506.1L1021 502.2ZM1022.8 517.3L1021 502.2L1026.2 512.5ZM1017.6 506.1L1014.3 499.1L1016.6 498.1ZM1017.6 506.1L1016.6 498.1L1018.6 497.5L1021 502.2Z"/>
<path fill="#aaff00" stroke="#aaff00" stroke-width=".5" d="M1006.2 502.5L1005.7 501.4L1009.1 498.2L1009.4 501ZM1009.4 501L1009.1 498.2L1010.2 500.8ZM1010.2 500.8L1009.1 498.2L1012.4 495L1013 499.5ZM1013 499.5L1012.4 495L1014.3 499.1ZM1014.3 499.1L1012.4 495L1015.7 491.8L1016.6 498.1ZM1016.6 498.1L1015.7 491.8L1018.6 497.5Z"/>
<path class="g" d="M1020.8 539.3L1005.7 501.4L1015.7 491.8L1031.4 522.9Z"/>
<path fill="#ffc000" stroke="#ffc000" stroke-width=".5" d="M964 334.8L958.4 331.6L961.2 328.8L962.2 329ZM964 334.8L962.2 329L964.7 329.6L967.6 331.2ZM958.4 331.6L952.7 328.4L954.1 327.1L957.1 327.8ZM958.4 331.6L957.1 327.8L961.2 328.8ZM952.7 328.4L948.3 325.9L952.2 326.7ZM952.7 328.4L952.2 326.7L954.1 327.1ZM967.6 331.2L964.7 329.6L967.3 330.3ZM967.6 331.2L967.3 330.3L968.2 330.5Z"/>
<path fill="#ffa700" stroke="#ffa700" stroke-width=".5" d="M961.2 328.8L961.9 328.1L962.2 329ZM962.2 329L961.9 328.1L964.7 329.6ZM954.1 327.1L956.3 325.2L957.1 327.8ZM957.1 327.8L956.3 325.2L961.9 328.1L961.2 328.8ZM948.3 325.9L947.2 325.3L950.7 322.2L952.2 326.7ZM952.2 326.7L950.7 322.2L956.3 325.2L954.1 327.1ZM964.7 329.6L961.9 328.1L965.4 324.7L967.3 330.3ZM967.3 330.3L965.4 324.7L971.1 327.5L968.2 330.5ZM961.9 328.1L956.3 325.2L959.8 321.9ZM961.9 328.1L959.8 321.9L965.4 324.7ZM956.3 325.2L950.7 322.2L954.2 319.2ZM956.3 325.2L954.2 319.2L959.8 321.9ZM971.1 327.5L965.4 324.7L969 321.3ZM971.1 327.5L969 321.3L974.7 324ZM965.4 324.7L959.8 321.9L963.3 318.7ZM965.4 324.7L963.3 318.7L969 321.3ZM959.8 321.9L954.2 319.2L957.7 316.1ZM959.8 321.9L957.7 316.1L963.3 318.7Z"/>
<path class="g" d="M964 334.8L947.2 325.3L957.7 316.1L974.7 324Z"/>
<path fill="#ffc000" stroke="#ffc000" stroke-width=".5" d="M925.6 341.9L920.2 338.3L923.8 336.1ZM925.6 341.9L923.8 336.1L929.3 339.6ZM920.2 338.3L914.8 334.8L918.4 332.6ZM920.2 338.3L918.4 332.6L923.8 336.1ZM914.8 334.8L909.5 331.3L913.1 329.2ZM914.8 334.8L913.1 329.2L918.4 332.6ZM929.3 339.6L923.8 336.1L927.4 333.8ZM929.3 339.6L927.4 333.8L932.9 337.2ZM923.8 336.1L918.4 332.6L922 330.5ZM923.8 336.1L922 330.5L927.4 333.8ZM918.4 332.6L913.1 329.2L916.7 327.1ZM918.4 332.6L916.7 327.1L922 330.5ZM932.9 337.2L927.4 333.8L931 331.6ZM932.9 337.2L931 331.6L936.5 334.9ZM927.4 333.8L922 330.5L925.6 328.3ZM927.4 333.8L925.6 328.3L931 331.6ZM922 330.5L916.7 327.1L920.3 325.1ZM922 330.5L920.3 325.1L925.6 328.3Z"/>
<path class="g" d="M925.6 341.9L909.5 331.3L920.3 325.1L936.5 334.9Z"/>
<path fill="#72ff00" stroke="#72ff00" stroke-width=".5" d="M1060.9 516.6L1054.6 513.1L1058.1 507.4ZM1060.9 516.6L1058.1 507.4L1064.5 510.8ZM1054.6 513.1L1048.3 509.7L1051.8 504ZM1054.6 513.1L1051.8 504L1058.1 507.4ZM1048.3 509.7L1042 506.3L1045.6 500.6ZM1048.3 509.7L1045.6 500.6L1051.8 504ZM1064.5 510.8L1058.1 507.4L1061.6 501.8L1061.8 501.9ZM1064.5 510.8L1061.8 501.9L1068 505.2ZM1058.1 507.4L1051.8 504L1055.3 498.4L1055.5 498.5ZM1058.1 507.4L1055.5 498.5L1061.6 501.8ZM1051.8 504L1045.6 500.6L1049 495.1L1049.3 495.2ZM1051.8 504L1049.3 495.2L1055.3 498.4Z"/>
<path fill="#aaff00" stroke="#aaff00" stroke-width=".5" d="M1061.6 501.8L1061.7 501.6L1061.8 501.9ZM1061.8 501.9L1061.7 501.6L1068.1 505.1L1068 505.2ZM1055.3 498.4L1055.4 498.2L1055.5 498.5ZM1055.5 498.5L1055.4 498.2L1061.7 501.6L1061.6 501.8ZM1049 495.1L1049.1 494.8L1049.3 495.2ZM1049.3 495.2L1049.1 494.8L1055.4 498.2L1055.3 498.4ZM1068.1 505.1L1061.7 501.6L1065.3 495.9ZM1068.1 505.1L1065.3 495.9L1071.7 499.4ZM1061.7 501.6L1055.4 498.2L1058.9 492.5ZM1061.7 501.6L1058.9 492.5L1065.3 495.9ZM1055.4 498.2L1049.1 494.8L1052.7 489.1ZM1055.4 498.2L1052.7 489.1L1058.9 492.5Z"/>
<path class="g" d="M1060.9 516.6L1042 506.3L1052.7 489.1L1071.7 499.4Z"/>
<path fill="#e3ff00" stroke="#e3ff00" stroke-width=".5" d="M1020.5 435.2L1019 426.3L1020.4 425.8ZM1020.5 435.2L1020.4 425.8L1022.7 424.7L1023.8 431.9ZM1023.8 431.9L1022.7 424.7L1023.7 424.3ZM1023.8 431.9L1023.7 424.3L1026.2 423.1L1027.1 428.6ZM1027.1 428.6L1026.2 423.1L1027 422.8ZM1027.1 428.6L1027 422.8L1029.8 421.5L1030.3 425.4Z"/>
<path fill="#fff200" stroke="#fff200" stroke-width=".5" d="M1019 426.3L1016.6 412.2L1020 408.2L1020.4 425.8ZM1020.4 425.8L1020 408.2L1022.7 424.7ZM1016.6 412.2L1014.2 398.3L1016.4 397.6ZM1016.6 412.2L1016.4 397.6L1018.2 396.9L1020 408.2ZM1022.7 424.7L1020 408.2L1023.4 404.3L1023.7 424.3ZM1023.7 424.3L1023.4 404.3L1026.2 423.1ZM1020 408.2L1018.2 396.9L1019.9 396.3ZM1020 408.2L1019.9 396.3L1022.1 395.4L1023.4 404.3ZM1026.2 423.1L1023.4 404.3L1026.8 400.3L1027 422.8ZM1027 422.8L1026.8 400.3L1029.8 421.5ZM1023.4 404.3L1022.1 395.4L1023.4 395ZM1023.4 404.3L1023.4 395L1025.9 394L1026.8 400.3Z"/>
<path fill="#ffd900" stroke="#ffd900" stroke-width=".5" d="M1014.2 398.3L1012.6 388.7L1016.1 384L1016.4 397.6ZM1016.4 397.6L1016.1 384L1018.2 396.9ZM1012.6 388.7L1009.3 369.3L1012.3 368.5ZM1012.6 388.7L1012.3 368.5L1013.6 368.1L1016.1 384ZM1018.2 396.9L1016.1 384L1019.7 379.2L1019.9 396.3ZM1019.9 396.3L1019.7 379.2L1022.1 395.4ZM1016.1 384L1013.6 368.1L1016 367.4ZM1016.1 384L1016 367.4L1017.8 366.9L1019.7 379.2ZM1022.1 395.4L1019.7 379.2L1023.2 374.5L1023.4 395ZM1023.4 395L1023.2 374.5L1025.9 394ZM1019.7 379.2L1017.8 366.9L1019.6 366.4ZM1019.7 379.2L1019.6 366.4L1021.9 365.6L1023.2 374.5Z"/>
<path fill="#ffc000" stroke="#ffc000" stroke-width=".5" d="M1009.3 369.3L1008.5 364.6L1012.2 359L1012.3 368.5ZM1012.3 368.5L1012.2 359L1013.6 368.1ZM1013.6 368.1L1012.2 359L1015.8 353.5L1016 367.4ZM1016 367.4L1015.8 353.5L1017.8 366.9ZM1017.8 366.9L1015.8 353.5L1019.5 347.9L1019.6 366.4ZM1019.6 366.4L1019.5 347.9L1021.9 365.6Z"/>
<path class="g" d="M1020.5 435.2L1008.5 364.6L1019.5 347.9L1030.3 425.4Z"/>
<path fill="#aaff00" stroke="#aaff00" stroke-width=".5" d="M1005.7 501.4L1000.4 491.1L1003.8 487.6ZM1005.7 501.4L1003.8 487.6L1009.1 498.2ZM1000.4 491.1L995.1 480.8L998.5 476.9ZM1000.4 491.1L998.5 476.9L1003.8 487.6ZM995.1 480.8L989.8 470.5L992.1 467.7L993.4 467.4ZM995.1 480.8L993.4 467.4L993.8 467.3L998.5 476.9ZM1009.1 498.2L1003.8 487.6L1007.2 484ZM1009.1 498.2L1007.2 484L1012.4 495ZM1003.8 487.6L998.5 476.9L1002 473.1ZM1003.8 487.6L1002 473.1L1007.2 484ZM998.5 476.9L993.8 467.3L997.3 466.5ZM998.5 476.9L997.3 466.5L998.6 466.1L1002 473.1ZM1012.4 495L1007.2 484L1010.6 480.6ZM1012.4 495L1010.6 480.6L1015.7 491.8ZM1007.2 484L1002 473.1L1005.4 469.3ZM1007.2 484L1005.4 469.3L1010.6 480.6ZM1002 473.1L998.6 466.1L1001.1 465.5ZM1002 473.1L1001.1 465.5L1003.4 464.8L1005.4 469.3Z"/>
<path fill="#e3ff00" stroke="#e3ff00" stroke-width=".5" d="M992.1 467.7L993.3 466.3L993.4 467.4ZM993.4 467.4L993.3 466.3L993.8 467.3ZM993.8 467.3L993.3 466.3L996.7 462.1L997.3 466.5ZM997.3 466.5L996.7 462.1L998.6 466.1ZM998.6 466.1L996.7 462.1L1000.2 457.9L1001.1 465.5ZM1001.1 465.5L1000.2 457.9L1003.4 464.8Z"/>
<path class="g" d="M1005.7 501.4L989.8 470.5L1000.2 457.9L1015.7 491.8Z"/>
<path fill="#72ff00" stroke="#72ff00" stroke-width=".5" d="M1050.1 533.8L1043.8 530.1L1047.4 524.4ZM1050.1 533.8L1047.4 524.4L1053.7 528.1ZM1043.8 530.1L1037.6 526.5L1041.1 520.9ZM1043.8 530.1L1041.1 520.9L1047.4 524.4ZM1037.6 526.5L1031.4 522.9L1035 517.4ZM1037.6 526.5L1035 517.4L1041.1 520.9ZM1053.7 528.1L1047.4 524.4L1051 518.8ZM1053.7 528.1L1051 518.8L1057.3 522.3ZM1047.4 524.4L1041.1 520.9L1044.7 515.3ZM1047.4 524.4L1044.7 515.3L1051 518.8ZM1041.1 520.9L1035 517.4L1038.5 511.8ZM1041.1 520.9L1038.5 511.8L1044.7 515.3ZM1057.3 522.3L1051 518.8L1054.6 513.1ZM1057.3 522.3L1054.6 513.1L1060.9 516.6ZM1051 518.8L1044.7 515.3L1048.3 509.7ZM1051 518.8L1048.3 509.7L1054.6 513.1ZM1044.7 515.3L1038.5 511.8L1042 506.3ZM1044.7 515.3L1042 506.3L1048.3 509.7Z"/>
<path class="g" d="M1050.1 533.8L1031.4 522.9L1042 506.3L1060.9 516.6Z"/>
<path fill="#ffa700" stroke="#ffa700" stroke-width=".5" d="M1002.7 323.5L996.8 319.8L1000.3 315.5ZM1002.7 323.5L1000.3 315.5L1006.2 319.1ZM996.8 319.8L991 316L994.5 312ZM996.8 319.8L994.5 312L1000.3 315.5ZM991 316L985.2 312.4L988.7 308.5ZM991 316L988.7 308.5L994.5 312ZM1006.2 319.1L1000.3 315.5L1003.8 311.3ZM1006.2 319.1L1003.8 311.3L1009.8 314.7ZM1000.3 315.5L994.5 312L998 308ZM1000.3 315.5L998 308L1003.8 311.3ZM994.5 312L988.7 308.5L992.2 304.7ZM994.5 312L992.2 304.7L998 308ZM1009.8 314.7L1003.8 311.3L1007.3 307.2ZM1009.8 314.7L1007.3 307.2L1013.3 310.4ZM1003.8 311.3L998 308L1001.5 304ZM1003.8 311.3L1001.5 304L1007.3 307.2ZM998 308L992.2 304.7L995.7 300.8ZM998 308L995.7 300.8L1001.5 304Z"/>
<path class="g" d="M1002.7 323.5L985.2 312.4L995.7 300.8L1013.3 310.4Z"/>
<path fill="#39ff00" stroke="#39ff00" stroke-width=".5" d="M1010.2 555.2L1005.4 540.7L1008.6 536.3L1008.9 536.3ZM1010.2 555.2L1008.9 536.3L1008.9 536.3L1013.8 549.9ZM1005.4 540.7L1004.4 537.8L1005.1 537.5ZM1005.4 540.7L1005.1 537.5L1008.6 536.3ZM1013.8 549.9L1008.9 536.3L1012.6 535ZM1013.8 549.9L1012.6 535L1013.6 534.8L1017.3 544.6ZM1017.3 544.6L1013.6 534.8L1016.4 533.9ZM1017.3 544.6L1016.4 533.9L1018.5 533.5L1020.8 539.3Z"/>
<path fill="#72ff00" stroke="#72ff00" stroke-width=".5" d="M1008.6 536.3L1008.9 536.1L1008.9 536.3ZM1008.9 536.3L1008.9 536.1L1008.9 536.3ZM1004.4 537.8L1000.5 526.1L1003.9 522.1L1005.1 537.5ZM1005.1 537.5L1003.9 522.1L1008.9 536.1L1008.6 536.3ZM1000.5 526.1L995.5 511.4L998.9 508ZM1000.5 526.1L998.9 508L1003.9 522.1ZM1008.9 536.3L1008.9 536.1L1012.3 531.4L1012.6 535ZM1012.6 535L1012.3 531.4L1013.6 534.8ZM1008.9 536.1L1003.9 522.1L1007.4 518.1ZM1008.9 536.1L1007.4 518.1L1012.3 531.4ZM1003.9 522.1L998.9 508L1002.3 504.7ZM1003.9 522.1L1002.3 504.7L1007.4 518.1ZM1013.6 534.8L1012.3 531.4L1015.8 526.7L1016.4 533.9ZM1016.4 533.9L1015.8 526.7L1018.5 533.5ZM1012.3 531.4L1007.4 518.1L1010.8 514.1ZM1012.3 531.4L1010.8 514.1L1015.8 526.7ZM1007.4 518.1L1002.3 504.7L1003.1 503.9L1005.8 502.6ZM1007.4 518.1L1005.8 502.6L1006.2 502.5L1010.8 514.1Z"/>
<path fill="#aaff00" stroke="#aaff00" stroke-width=".5" d="M1003.1 503.9L1005.7 501.4L1005.8 502.6ZM1005.8 502.6L1005.7 501.4L1006.2 502.5Z"/>
<path class="g" d="M1010.2 555.2L995.5 511.4L1005.7 501.4L1020.8 539.3Z"/>
<path fill="#e3ff00" stroke="#e3ff00" stroke-width=".5" d="M765 439.9L761 439.8L763.5 435.2L764.9 438.6ZM765 439.9L764.9 438.6L765.3 439.4ZM761 439.8L757.1 439.8L760.7 432.6ZM761 439.8L760.7 432.6L762.2 432.7L763.5 435.2ZM757.1 439.8L753.3 439.7L756.8 432.3ZM757.1 439.8L756.8 432.3L760.7 432.6ZM762.2 432.7L760.7 432.6L761.3 431.3ZM760.7 432.6L756.8 432.3L759 427.5L760.5 430.1ZM760.7 432.6L760.5 430.1L761.3 431.3Z"/>
<path fill="#fff200" stroke="#fff200" stroke-width=".5" d="M763.5 435.2L764.7 433L764.9 438.6ZM764.9 438.6L764.7 433L768.7 433.3L765.3 439.4ZM762.2 432.7L764.7 433L763.5 435.2ZM768.7 433.3L764.7 433L768.3 426.1ZM768.7 433.3L768.3 426.1L772.4 426.7ZM764.7 433L762.2 432.7L761.3 431.3L764.2 425.4ZM764.7 433L764.2 425.4L768.3 426.1ZM759 427.5L760.2 424.8L760.5 430.1ZM760.5 430.1L760.2 424.8L764.2 425.4L761.3 431.3ZM772.4 426.7L768.3 426.1L771.9 419.2ZM772.4 426.7L771.9 419.2L776.2 420.1ZM768.3 426.1L764.2 425.4L767.8 418.3ZM768.3 426.1L767.8 418.3L771.9 419.2ZM764.2 425.4L760.2 424.8L763.7 417.4ZM764.2 425.4L763.7 417.4L767.8 418.3Z"/>
<path class="g" d="M765 439.9L753.3 439.7L763.7 417.4L776.2 420.1Z"/>
<path fill="#ffd900" stroke="#ffd900" stroke-width=".5" d="M786.9 396.3L782.5 395.7L786.6 392.2ZM786.9 396.3L786.6 392.2L790.9 392.8ZM782.5 395.7L778.3 395.1L782.3 391.6ZM782.5 395.7L782.3 391.6L786.6 392.2ZM778.3 395.1L774.1 394.6L778.1 391.1ZM778.3 395.1L778.1 391.1L782.3 391.6ZM790.9 392.8L786.6 392.2L790.6 388.7ZM790.9 392.8L790.6 388.7L795 389.3ZM786.6 392.2L782.3 391.6L786.3 388.2ZM786.6 392.2L786.3 388.2L790.6 388.7ZM782.3 391.6L778.1 391.1L782.1 387.6ZM782.3 391.6L782.1 387.6L786.3 388.2ZM795 389.3L790.6 388.7L794.6 385.2ZM795 389.3L794.6 385.2L799 385.8ZM790.6 388.7L786.3 388.2L790.3 384.7ZM790.6 388.7L790.3 384.7L794.6 385.2ZM786.3 388.2L782.1 387.6L786.1 384.2ZM786.3 388.2L786.1 384.2L790.3 384.7Z"/>
<path class="g" d="M786.9 396.3L774.1 394.6L786.1 384.2L799 385.8Z"/>
<path fill="#39ff00" stroke="#39ff00" stroke-width=".5" d="M1039.3 551.1L1033 547.2L1036.6 541.5ZM1039.3 551.1L1036.6 541.5L1042.9 545.4ZM1033 547.2L1026.9 543.2L1030.5 537.6ZM1033 547.2L1030.5 537.6L1036.6 541.5ZM1026.9 543.2L1020.8 539.3L1024.4 533.8ZM1026.9 543.2L1024.4 533.8L1030.5 537.6ZM1042.9 545.4L1036.6 541.5L1038.1 539.2L1041.8 541.3ZM1042.9 545.4L1041.8 541.3L1044.5 542.9ZM1036.6 541.5L1030.5 537.6L1031.7 535.6L1035.6 537.8ZM1036.6 541.5L1035.6 537.8L1038.1 539.2ZM1030.5 537.6L1024.4 533.8L1025.5 532.1L1029.6 534.4ZM1030.5 537.6L1029.6 534.4L1031.7 535.6Z"/>
<path fill="#72ff00" stroke="#72ff00" stroke-width=".5" d="M1038.1 539.2L1040.2 535.8L1041.8 541.3ZM1041.8 541.3L1040.2 535.8L1046.5 539.6L1044.5 542.9ZM1031.7 535.6L1034 532L1035.6 537.8ZM1035.6 537.8L1034 532L1040.2 535.8L1038.1 539.2ZM1025.5 532.1L1027.9 528.4L1029.6 534.4ZM1029.6 534.4L1027.9 528.4L1034 532L1031.7 535.6ZM1046.5 539.6L1040.2 535.8L1043.8 530.1ZM1046.5 539.6L1043.8 530.1L1050.1 533.8ZM1040.2 535.8L1034 532L1037.6 526.5ZM1040.2 535.8L1037.6 526.5L1043.8 530.1ZM1034 532L1027.9 528.4L1031.4 522.9ZM1034 532L1031.4 522.9L1037.6 526.5Z"/>
<path class="g" d="M1039.3 551.1L1020.8 539.3L1031.4 522.9L1050.1 533.8Z"/>
<path fill="#e3ff00" stroke="#e3ff00" stroke-width=".5" d="M1010.5 446.1L1007.3 430.9L1010 430ZM1010.5 446.1L1010 430L1011.3 429.4L1013.9 442.5ZM1013.9 442.5L1011.3 429.4L1013.5 428.6ZM1013.9 442.5L1013.5 428.6L1015.2 427.9L1017.2 438.8ZM1017.2 438.8L1015.2 427.9L1017 427.2ZM1017.2 438.8L1017 427.2L1019 426.3L1020.5 435.2Z"/>
<path fill="#fff200" stroke="#fff200" stroke-width=".5" d="M1007.3 430.9L1006.2 425.7L1009.7 421.2L1010 430ZM1010 430L1009.7 421.2L1011.3 429.4ZM1006.2 425.7L1001.8 404.9L1004.2 401.3L1005.4 401ZM1006.2 425.7L1005.4 401L1005.7 400.9L1009.7 421.2ZM1001.8 404.9L1001.2 402.1L1001.7 402ZM1001.8 404.9L1001.7 402L1004.2 401.3ZM1011.3 429.4L1009.7 421.2L1013.2 416.7L1013.5 428.6ZM1013.5 428.6L1013.2 416.7L1015.2 427.9ZM1009.7 421.2L1005.7 400.9L1009.2 399.9ZM1009.7 421.2L1009.2 399.9L1010 399.6L1013.2 416.7ZM1015.2 427.9L1013.2 416.7L1016.6 412.2L1017 427.2ZM1017 427.2L1016.6 412.2L1019 426.3ZM1013.2 416.7L1010 399.6L1012.8 398.8ZM1013.2 416.7L1012.8 398.8L1014.2 398.3L1016.6 412.2Z"/>
<path fill="#ffd900" stroke="#ffd900" stroke-width=".5" d="M1004.2 401.3L1005.4 399.5L1005.4 401ZM1005.4 401L1005.4 399.5L1005.7 400.9ZM1001.2 402.1L997.3 383.6L1001 377.3L1001.7 402ZM1001.7 402L1001 377.3L1005.4 399.5L1004.2 401.3ZM1005.7 400.9L1005.4 399.5L1009 394.1L1009.2 399.9ZM1009.2 399.9L1009 394.1L1010 399.6ZM1005.4 399.5L1001 377.3L1004.8 370.9ZM1005.4 399.5L1004.8 370.9L1009 394.1ZM1010 399.6L1009 394.1L1012.6 388.7L1012.8 398.8ZM1012.8 398.8L1012.6 388.7L1014.2 398.3ZM1009 394.1L1004.8 370.9L1005.1 370.3L1008.6 369.5ZM1009 394.1L1008.6 369.5L1009.3 369.3L1012.6 388.7Z"/>
<path fill="#ffc000" stroke="#ffc000" stroke-width=".5" d="M1005.1 370.3L1008.5 364.6L1008.6 369.5ZM1008.6 369.5L1008.5 364.6L1009.3 369.3Z"/>
<path class="g" d="M1010.5 446.1L997.3 383.6L1008.5 364.6L1020.5 435.2Z"/>
<path fill="#ffc000" stroke="#ffc000" stroke-width=".5" d="M887.1 344.4L881.8 339.8L885.6 337.7ZM887.1 344.4L885.6 337.7L890.9 342.2ZM881.8 339.8L876.5 335.2L880.3 333.2ZM881.8 339.8L880.3 333.2L885.6 337.7ZM876.5 335.2L871.3 330.7L875.2 328.8ZM876.5 335.2L875.2 328.8L880.3 333.2ZM890.9 342.2L885.6 337.7L889.4 335.6ZM890.9 342.2L889.4 335.6L894.6 339.9ZM885.6 337.7L880.3 333.2L884.1 331.2ZM885.6 337.7L884.1 331.2L889.4 335.6ZM880.3 333.2L875.2 328.8L878.9 326.9ZM880.3 333.2L878.9 326.9L884.1 331.2ZM894.6 339.9L889.4 335.6L893.1 333.5ZM894.6 339.9L893.1 333.5L898.4 337.8ZM889.4 335.6L884.1 331.2L887.9 329.3ZM889.4 335.6L887.9 329.3L893.1 333.5ZM884.1 331.2L878.9 326.9L882.7 325.1ZM884.1 331.2L882.7 325.1L887.9 329.3Z"/>
<path class="g" d="M887.1 344.4L871.3 330.7L882.7 325.1L898.4 337.8Z"/>
<path fill="#ffc000" stroke="#ffc000" stroke-width=".5" d="M848 346.5L843.2 346.3L847.1 343.1ZM848 346.5L847.1 343.1L851.9 343ZM843.2 346.3L838.4 346.2L842.3 343.1ZM843.2 346.3L842.3 343.1L847.1 343.1ZM838.4 346.2L833.7 346.1L837.6 343.2ZM838.4 346.2L837.6 343.2L842.3 343.1ZM851.9 343L847.1 343.1L850.9 339.8ZM851.9 343L850.9 339.8L855.8 339.5ZM847.1 343.1L842.3 343.1L846.2 340.1ZM847.1 343.1L846.2 340.1L850.9 339.8ZM842.3 343.1L837.6 343.2L841.4 340.4ZM842.3 343.1L841.4 340.4L846.2 340.1ZM855.8 339.5L850.9 339.8L854.8 336.5ZM855.8 339.5L854.8 336.5L859.7 336.1ZM850.9 339.8L846.2 340.1L850 337ZM850.9 339.8L850 337L854.8 336.5ZM846.2 340.1L841.4 340.4L845.3 337.5ZM846.2 340.1L845.3 337.5L850 337Z"/>
<path class="g" d="M848 346.5L833.7 346.1L845.3 337.5L859.7 336.1Z"/>
<path fill="#fff200" stroke="#fff200" stroke-width=".5" d="M776.2 420.1L771.9 419.2L775.5 411.4ZM776.2 420.1L775.5 411.4L779.7 412.2ZM771.9 419.2L767.8 418.3L771.3 410.6ZM771.9 419.2L771.3 410.6L775.5 411.4ZM767.8 418.3L763.7 417.4L767.2 409.8ZM767.8 418.3L767.2 409.8L771.3 410.6ZM779.7 412.2L775.5 411.4L779 403.6ZM779.7 412.2L779 403.6L781.5 404L782.8 405.4ZM775.5 411.4L771.3 410.6L774.8 402.9ZM775.5 411.4L774.8 402.9L779 403.6ZM771.3 410.6L767.2 409.8L770.7 402.2ZM771.3 410.6L770.7 402.2L774.8 402.9ZM781.5 404L779 403.6L779.7 401.9ZM779 403.6L774.8 402.9L776.8 398.6L778.8 400.8ZM779 403.6L778.8 400.8L779.7 401.9ZM774.8 402.9L770.7 402.2L773.8 395.2L774.2 395.7ZM774.8 402.9L774.2 395.7L776.8 398.6Z"/>
<path fill="#ffd900" stroke="#ffd900" stroke-width=".5" d="M781.5 404L783.3 404.3L782.8 405.4ZM783.3 404.3L781.5 404L779.7 401.9L782.5 395.7ZM783.3 404.3L782.5 395.7L786.9 396.3ZM776.8 398.6L778.3 395.1L778.8 400.8ZM778.8 400.8L778.3 395.1L782.5 395.7L779.7 401.9ZM773.8 395.2L774.1 394.6L774.2 395.7ZM774.2 395.7L774.1 394.6L778.3 395.1L776.8 398.6Z"/>
<path class="g" d="M776.2 420.1L763.7 417.4L774.1 394.6L786.9 396.3Z"/>
<path fill="#ffc000" stroke="#ffc000" stroke-width=".5" d="M953.3 345.1L947.6 341.7L951.2 338.3ZM953.3 345.1L951.2 338.3L956.9 341.7ZM947.6 341.7L942 338.2L945.6 335ZM947.6 341.7L945.6 335L951.2 338.3ZM942 338.2L936.5 334.9L940.1 331.7ZM942 338.2L940.1 331.7L945.6 335ZM956.9 341.7L951.2 338.3L954.8 334.9ZM956.9 341.7L954.8 334.9L960.5 338.2ZM951.2 338.3L945.6 335L949.2 331.7ZM951.2 338.3L949.2 331.7L954.8 334.9ZM945.6 335L940.1 331.7L943.6 328.5ZM945.6 335L943.6 328.5L949.2 331.7ZM960.5 338.2L954.8 334.9L958.4 331.6ZM960.5 338.2L958.4 331.6L964 334.8ZM954.8 334.9L949.2 331.7L952.7 328.4ZM954.8 334.9L952.7 328.4L958.4 331.6ZM949.2 331.7L943.6 328.5L946.8 325.6L947.3 325.7ZM949.2 331.7L947.3 325.7L948.3 325.9L952.7 328.4Z"/>
<path fill="#ffa700" stroke="#ffa700" stroke-width=".5" d="M946.8 325.6L947.2 325.3L947.3 325.7ZM947.3 325.7L947.2 325.3L948.3 325.9Z"/>
<path class="g" d="M953.3 345.1L936.5 334.9L947.2 325.3L964 334.8Z"/>
<path fill="#39ff00" stroke="#39ff00" stroke-width=".5" d="M1028.5 567.5L1022.3 563.4L1025.9 558ZM1028.5 567.5L1025.9 558L1032.1 562.1ZM1022.3 563.4L1016.2 559.3L1019.8 553.9ZM1022.3 563.4L1019.8 553.9L1025.9 558ZM1016.2 559.3L1010.2 555.2L1013.8 549.9ZM1016.2 559.3L1013.8 549.9L1019.8 553.9ZM1032.1 562.1L1025.9 558L1029.5 552.5ZM1032.1 562.1L1029.5 552.5L1035.7 556.6ZM1025.9 558L1019.8 553.9L1023.3 548.6ZM1025.9 558L1023.3 548.6L1029.5 552.5ZM1019.8 553.9L1013.8 549.9L1017.3 544.6ZM1019.8 553.9L1017.3 544.6L1023.3 548.6ZM1035.7 556.6L1029.5 552.5L1033 547.2ZM1035.7 556.6L1033 547.2L1039.3 551.1ZM1029.5 552.5L1023.3 548.6L1026.9 543.2ZM1029.5 552.5L1026.9 543.2L1033 547.2ZM1023.3 548.6L1017.3 544.6L1020.8 539.3ZM1023.3 548.6L1020.8 539.3L1026.9 543.2Z"/>
<path class="g" d="M1028.5 567.5L1010.2 555.2L1020.8 539.3L1039.3 551.1Z"/>
<path fill="#ffc000" stroke="#ffc000" stroke-width=".5" d="M1030 335.1L1027.7 331.8L1029.4 331.7ZM1030 335.1L1029.4 331.7L1033.1 331.4Z"/>
<path fill="#ffa700" stroke="#ffa700" stroke-width=".5" d="M1027.7 331.8L1024.4 326.9L1027.9 322.7L1029.4 331.7ZM1029.4 331.7L1027.9 322.7L1033.4 331L1033.1 331.4ZM1024.4 326.9L1018.8 318.6L1022.3 314.4ZM1024.4 326.9L1022.3 314.4L1027.9 322.7ZM1018.8 318.6L1013.3 310.4L1016.8 306.2ZM1018.8 318.6L1016.8 306.2L1022.3 314.4ZM1033.4 331L1027.9 322.7L1031.3 318.6ZM1033.4 331L1031.3 318.6L1036.9 326.9ZM1027.9 322.7L1022.3 314.4L1025.8 310.3ZM1027.9 322.7L1025.8 310.3L1031.3 318.6ZM1022.3 314.4L1016.8 306.2L1020.3 302ZM1022.3 314.4L1020.3 302L1025.8 310.3ZM1036.9 326.9L1031.3 318.6L1034.8 314.5ZM1036.9 326.9L1034.8 314.5L1040.3 322.9ZM1031.3 318.6L1025.8 310.3L1029.2 306.1ZM1031.3 318.6L1029.2 306.1L1034.8 314.5ZM1025.8 310.3L1020.3 302L1023.7 297.8ZM1025.8 310.3L1023.7 297.8L1029.2 306.1Z"/>
<path class="g" d="M1030 335.1L1013.3 310.4L1023.7 297.8L1040.3 322.9Z"/>
<path fill="#ffc000" stroke="#ffc000" stroke-width=".5" d="M991.9 338.2L986.1 333.4L987.2 332L990.5 332.4ZM991.9 338.2L990.5 332.4L995.4 333.2L995.5 333.3ZM986.1 333.4L983.8 331.5L985.7 331.7ZM986.1 333.4L985.7 331.7L987.2 332ZM995.5 333.3L995.4 333.2L995.5 333.2ZM995.5 333.3L995.5 333.2L995.5 333.2Z"/>
<path fill="#ffa700" stroke="#ffa700" stroke-width=".5" d="M987.2 332L989.7 328.8L990.5 332.4ZM990.5 332.4L989.7 328.8L995.4 333.2ZM983.8 331.5L980.4 328.7L983.9 324.4L985.7 331.7ZM985.7 331.7L983.9 324.4L989.7 328.8L987.2 332ZM980.4 328.7L974.7 324L978.2 320.1ZM980.4 328.7L978.2 320.1L983.9 324.4ZM995.4 333.2L989.7 328.8L993.2 324.3L995.5 333.2ZM995.5 333.2L993.2 324.3L999.1 328.4L995.5 333.2ZM989.7 328.8L983.9 324.4L987.5 320.2ZM989.7 328.8L987.5 320.2L993.2 324.3ZM983.9 324.4L978.2 320.1L981.7 316.2ZM983.9 324.4L981.7 316.2L987.5 320.2ZM999.1 328.4L993.2 324.3L996.8 319.8ZM999.1 328.4L996.8 319.8L1002.7 323.5ZM993.2 324.3L987.5 320.2L991 316ZM993.2 324.3L991 316L996.8 319.8ZM987.5 320.2L981.7 316.2L985.2 312.4ZM987.5 320.2L985.2 312.4L991 316Z"/>
<path class="g" d="M991.9 338.2L974.7 324L985.2 312.4L1002.7 323.5Z"/>
<path fill="#e3ff00" stroke="#e3ff00" stroke-width=".5" d="M1000.2 457.9L995.6 439.7L999.1 435ZM1000.2 457.9L999.1 435L1003.7 454ZM995.6 439.7L994.4 435.2L995.4 434.9ZM995.6 439.7L995.4 434.9L998.8 433.8L999.1 435ZM1003.7 454L999.1 435L1000.5 433.2L1002.7 432.5ZM1003.7 454L1002.7 432.5L1003.1 432.4L1007.1 450.1ZM999.1 435L998.8 433.8L999.1 433.7ZM999.1 435L999.1 433.7L1000.5 433.2ZM1007.1 450.1L1003.1 432.4L1006.4 431.3ZM1007.1 450.1L1006.4 431.3L1007.3 430.9L1010.5 446.1Z"/>
<path fill="#fff200" stroke="#fff200" stroke-width=".5" d="M994.4 435.2L990.9 421.1L994.5 415.7L995.4 434.9ZM995.4 434.9L994.5 415.7L998.8 433.8ZM990.9 421.1L987 405.6L990.2 404.9ZM990.9 421.1L990.2 404.9L991.9 404.5L994.5 415.7ZM1000.5 433.2L1002.7 430.4L1002.7 432.5ZM1002.7 432.5L1002.7 430.4L1003.1 432.4ZM998.8 433.8L994.5 415.7L998.2 410.3L999.1 433.7ZM999.1 433.7L998.2 410.3L1002.7 430.4L1000.5 433.2ZM994.5 415.7L991.9 404.5L994.1 404ZM994.5 415.7L994.1 404L996.6 403.3L998.2 410.3ZM1003.1 432.4L1002.7 430.4L1006.2 425.7L1006.4 431.3ZM1006.4 431.3L1006.2 425.7L1007.3 430.9ZM1002.7 430.4L998.2 410.3L1001.8 404.9ZM1002.7 430.4L1001.8 404.9L1006.2 425.7ZM998.2 410.3L996.6 403.3L997.9 403ZM998.2 410.3L997.9 403L1001.2 402.1L1001.8 404.9Z"/>
<path fill="#ffd900" stroke="#ffd900" stroke-width=".5" d="M987 405.6L986.1 402.3L989.8 396L990.2 404.9ZM990.2 404.9L989.8 396L991.9 404.5ZM991.9 404.5L989.8 396L993.6 389.8L994.1 404ZM994.1 404L993.6 389.8L996.6 403.3ZM996.6 403.3L993.6 389.8L997.3 383.6L997.9 403ZM997.9 403L997.3 383.6L1001.2 402.1Z"/>
<path class="g" d="M1000.2 457.9L986.1 402.3L997.3 383.6L1010.5 446.1Z"/>
<path fill="#72ff00" stroke="#72ff00" stroke-width=".5" d="M995.5 511.4L993.4 507.6L994.9 507.1ZM995.5 511.4L994.9 507.1L997.8 505.9L998.9 508ZM998.9 508L997.8 505.9L998.6 505.7ZM998.9 508L998.6 505.7L1002.1 504.3L1002.3 504.7ZM1002.3 504.7L1002.1 504.3L1002.3 504.2ZM1002.3 504.7L1002.3 504.2L1003.1 503.9Z"/>
<path fill="#aaff00" stroke="#aaff00" stroke-width=".5" d="M993.4 507.6L990.1 501.5L993.5 498L994.9 507.1ZM994.9 507.1L993.5 498L997.8 505.9ZM990.1 501.5L984.7 491.6L988.2 488ZM990.1 501.5L988.2 488L993.5 498ZM984.7 491.6L979.3 481.7L982.8 478ZM984.7 491.6L982.8 478L988.2 488ZM997.8 505.9L993.5 498L997 494.5L998.6 505.7ZM998.6 505.7L997 494.5L1002.1 504.3ZM993.5 498L988.2 488L991.6 484.4ZM993.5 498L991.6 484.4L997 494.5ZM988.2 488L982.8 478L986.3 474.2ZM988.2 488L986.3 474.2L991.6 484.4ZM1002.1 504.3L997 494.5L1000.4 491.1L1002.3 504.2ZM1002.3 504.2L1000.4 491.1L1005.7 501.4L1003.1 503.9ZM997 494.5L991.6 484.4L995.1 480.8ZM997 494.5L995.1 480.8L1000.4 491.1ZM991.6 484.4L986.3 474.2L989.8 470.5ZM991.6 484.4L989.8 470.5L995.1 480.8Z"/>
<path class="g" d="M995.5 511.4L979.3 481.7L989.8 470.5L1005.7 501.4Z"/>
<path fill="#ffc000" stroke="#ffc000" stroke-width=".5" d="M914.6 347.6L909.1 344.3L912.8 342.3ZM914.6 347.6L912.8 342.3L918.3 345.7ZM909.1 344.3L903.7 341L907.4 338.9ZM909.1 344.3L907.4 338.9L912.8 342.3ZM903.7 341L898.4 337.8L902.1 335.6ZM903.7 341L902.1 335.6L907.4 338.9ZM918.3 345.7L912.8 342.3L916.5 340.3ZM918.3 345.7L916.5 340.3L922 343.8ZM912.8 342.3L907.4 338.9L911.1 336.8ZM912.8 342.3L911.1 336.8L916.5 340.3ZM907.4 338.9L902.1 335.6L905.8 333.4ZM907.4 338.9L905.8 333.4L911.1 336.8ZM922 343.8L916.5 340.3L920.2 338.3ZM922 343.8L920.2 338.3L925.6 341.9ZM916.5 340.3L911.1 336.8L914.8 334.8ZM916.5 340.3L914.8 334.8L920.2 338.3ZM911.1 336.8L905.8 333.4L909.5 331.3ZM911.1 336.8L909.5 331.3L914.8 334.8Z"/>
<path class="g" d="M914.6 347.6L898.4 337.8L909.5 331.3L925.6 341.9Z"/>
<path fill="#39ff00" stroke="#39ff00" stroke-width=".5" d="M999.8 568.2L995 552.8L998.5 548.7ZM999.8 568.2L998.5 548.7L1003.3 563.9ZM995 552.8L992.1 543.5L994.2 542.5ZM995 552.8L994.2 542.5L996.2 541.6L998.5 548.7ZM1003.3 563.9L998.5 548.7L1001.9 544.7ZM1003.3 563.9L1001.9 544.7L1006.8 559.5ZM998.5 548.7L996.2 541.6L997.8 540.8ZM998.5 548.7L997.8 540.8L1000.3 539.7L1001.9 544.7ZM1006.8 559.5L1001.9 544.7L1005.4 540.7ZM1006.8 559.5L1005.4 540.7L1010.2 555.2ZM1001.9 544.7L1000.3 539.7L1001.5 539.1ZM1001.9 544.7L1001.5 539.1L1004.4 537.8L1005.4 540.7Z"/>
<path fill="#72ff00" stroke="#72ff00" stroke-width=".5" d="M992.1 543.5L990.1 537.1L993.6 533.4L994.2 542.5ZM994.2 542.5L993.6 533.4L996.2 541.6ZM990.1 537.1L985.1 521.3L988.6 518ZM990.1 537.1L988.6 518L993.6 533.4ZM996.2 541.6L993.6 533.4L997 529.8L997.8 540.8ZM997.8 540.8L997 529.8L1000.3 539.7ZM993.6 533.4L988.6 518L992.1 514.6ZM993.6 533.4L992.1 514.6L997 529.8ZM1000.3 539.7L997 529.8L1000.5 526.1L1001.5 539.1ZM1001.5 539.1L1000.5 526.1L1004.4 537.8ZM997 529.8L992.1 514.6L995.5 511.4ZM997 529.8L995.5 511.4L1000.5 526.1Z"/>
<path class="g" d="M999.8 568.2L985.1 521.3L995.5 511.4L1010.2 555.2Z"/>
<path fill="#ffc000" stroke="#ffc000" stroke-width=".5" d="M836.4 360L831.7 361.5L835.5 356.4ZM836.4 360L835.5 356.4L840.3 355.5ZM831.7 361.5L827.1 362.9L830.9 357.4ZM831.7 361.5L830.9 357.4L835.5 356.4ZM827.1 362.9L824.9 363.6L824.3 361.7L826.4 358.3ZM827.1 362.9L826.4 358.3L830.9 357.4ZM840.3 355.5L835.5 356.4L839.4 351.4ZM840.3 355.5L839.4 351.4L844.2 351ZM835.5 356.4L830.9 357.4L834.7 351.8ZM835.5 356.4L834.7 351.8L839.4 351.4ZM830.9 357.4L826.4 358.3L830 352.2ZM830.9 357.4L830 352.2L834.7 351.8ZM844.2 351L839.4 351.4L843.2 346.3ZM844.2 351L843.2 346.3L848 346.5ZM839.4 351.4L834.7 351.8L838.4 346.2ZM839.4 351.4L838.4 346.2L843.2 346.3ZM834.7 351.8L830 352.2L833.7 346.1ZM834.7 351.8L833.7 346.1L838.4 346.2Z"/>
<path fill="#ffd900" stroke="#ffd900" stroke-width=".5" d="M824.9 363.6L822.7 364.4L824.3 361.7Z"/>
<path class="g" d="M836.4 360L822.7 364.4L833.7 346.1L848 346.5Z"/>
<path fill="#39ff00" stroke="#39ff00" stroke-width=".5" d="M1018 581.1L1011.9 576.7L1015.4 572.2ZM1018 581.1L1015.4 572.2L1021.5 576.5ZM1011.9 576.7L1005.8 572.4L1009.3 568ZM1011.9 576.7L1009.3 568L1015.4 572.2ZM1005.8 572.4L999.8 568.2L1003.3 563.9ZM1005.8 572.4L1003.3 563.9L1009.3 568ZM1021.5 576.5L1015.4 572.2L1018.8 567.8ZM1021.5 576.5L1018.8 567.8L1025 572ZM1015.4 572.2L1009.3 568L1012.8 563.6ZM1015.4 572.2L1012.8 563.6L1018.8 567.8ZM1009.3 568L1003.3 563.9L1006.8 559.5ZM1009.3 568L1006.8 559.5L1012.8 563.6ZM1025 572L1018.8 567.8L1022.3 563.4ZM1025 572L1022.3 563.4L1028.5 567.5ZM1018.8 567.8L1012.8 563.6L1016.2 559.3ZM1018.8 567.8L1016.2 559.3L1022.3 563.4ZM1012.8 563.6L1006.8 559.5L1010.2 555.2ZM1012.8 563.6L1010.2 555.2L1016.2 559.3Z"/>
<path class="g" d="M1018 581.1L999.8 568.2L1010.2 555.2L1028.5 567.5Z"/>
<path fill="#aaff00" stroke="#aaff00" stroke-width=".5" d="M989.8 470.5L989.2 468.7L989.6 468.6ZM989.8 470.5L989.6 468.6L992.1 467.7Z"/>
<path fill="#e3ff00" stroke="#e3ff00" stroke-width=".5" d="M989.2 468.7L984.9 453.8L988.5 449.1L989.6 468.6ZM989.6 468.6L988.5 449.1L993.3 466.3L992.1 467.7ZM984.9 453.8L980.6 439.1L984 438.2ZM984.9 453.8L984 438.2L985.4 437.8L988.5 449.1ZM993.3 466.3L988.5 449.1L992 444.4ZM993.3 466.3L992 444.4L996.7 462.1ZM988.5 449.1L985.4 437.8L987.8 437.2ZM988.5 449.1L987.8 437.2L990 436.5L992 444.4ZM996.7 462.1L992 444.4L995.6 439.7ZM996.7 462.1L995.6 439.7L1000.2 457.9ZM992 444.4L990 436.5L991.6 436.1ZM992 444.4L991.6 436.1L994.4 435.2L995.6 439.7Z"/>
<path fill="#fff200" stroke="#fff200" stroke-width=".5" d="M980.6 439.1L980 436.9L983.6 431.6L984 438.2ZM984 438.2L983.6 431.6L985.4 437.8ZM980 436.9L975 419.7L978.7 413.9ZM980 436.9L978.7 413.9L983.6 431.6ZM985.4 437.8L983.6 431.6L987.3 426.4L987.8 437.2ZM987.8 437.2L987.3 426.4L990 436.5ZM983.6 431.6L978.7 413.9L982.4 408.1ZM983.6 431.6L982.4 408.1L987.3 426.4ZM990 436.5L987.3 426.4L990.9 421.1L991.6 436.1ZM991.6 436.1L990.9 421.1L994.4 435.2ZM987.3 426.4L982.4 408.1L983.5 406.4L986.3 405.8ZM987.3 426.4L986.3 405.8L987 405.6L990.9 421.1Z"/>
<path fill="#ffd900" stroke="#ffd900" stroke-width=".5" d="M983.5 406.4L986.1 402.3L986.3 405.8ZM986.3 405.8L986.1 402.3L987 405.6Z"/>
<path class="g" d="M989.8 470.5L975 419.7L986.1 402.3L1000.2 457.9Z"/>
<path fill="#ffc000" stroke="#ffc000" stroke-width=".5" d="M1019.5 347.9L1013.8 339.8L1017.4 335.4ZM1019.5 347.9L1017.4 335.4L1023 343.6ZM1013.8 339.8L1009.2 333L1012.7 332.8ZM1013.8 339.8L1012.7 332.8L1015.4 332.6L1017.4 335.4ZM1023 343.6L1017.4 335.4L1019.9 332.3L1021.1 332.3ZM1023 343.6L1021.1 332.3L1021.6 332.2L1026.5 339.4ZM1017.4 335.4L1015.4 332.6L1016.9 332.5ZM1017.4 335.4L1016.9 332.5L1019.9 332.3ZM1026.5 339.4L1021.6 332.2L1025.2 332ZM1026.5 339.4L1025.2 332L1027.7 331.8L1030 335.1Z"/>
<path fill="#ffa700" stroke="#ffa700" stroke-width=".5" d="M1009.2 333L1008.3 331.6L1011.8 327.3L1012.7 332.8ZM1012.7 332.8L1011.8 327.3L1015.4 332.6ZM1008.3 331.6L1002.7 323.5L1006.2 319.1ZM1008.3 331.6L1006.2 319.1L1011.8 327.3ZM1019.9 332.3L1020.9 331.1L1021.1 332.3ZM1021.1 332.3L1020.9 331.1L1021.6 332.2ZM1015.4 332.6L1011.8 327.3L1015.3 322.9L1016.9 332.5ZM1016.9 332.5L1015.3 322.9L1020.9 331.1L1019.9 332.3ZM1011.8 327.3L1006.2 319.1L1009.8 314.7ZM1011.8 327.3L1009.8 314.7L1015.3 322.9ZM1021.6 332.2L1020.9 331.1L1024.4 326.9L1025.2 332ZM1025.2 332L1024.4 326.9L1027.7 331.8ZM1020.9 331.1L1015.3 322.9L1018.8 318.6ZM1020.9 331.1L1018.8 318.6L1024.4 326.9ZM1015.3 322.9L1009.8 314.7L1013.3 310.4ZM1015.3 322.9L1013.3 310.4L1018.8 318.6Z"/>
<path class="g" d="M1019.5 347.9L1002.7 323.5L1013.3 310.4L1030 335.1Z"/>
<path fill="#aaff00" stroke="#aaff00" stroke-width=".5" d="M770.2 490.5L766.3 491.2L768.8 476.2ZM770.2 490.5L768.8 476.2L771.8 476.6L772.7 477.6ZM766.3 491.2L762.6 491.9L764.8 475.8ZM766.3 491.2L764.8 475.8L768.8 476.2ZM762.6 491.9L758.9 492.6L760.9 475.4ZM762.6 491.9L760.9 475.4L764.8 475.8ZM771.8 476.6L768.8 476.2L769.2 473.8ZM768.8 476.2L764.8 475.8L765.6 470.1L768.5 473.1ZM768.8 476.2L768.5 473.1L769.2 473.8ZM764.8 475.8L760.9 475.4L761.9 466.6L764.1 468.8ZM764.8 475.8L764.1 468.8L765.6 470.1Z"/>
<path fill="#e3ff00" stroke="#e3ff00" stroke-width=".5" d="M771.8 476.6L772.9 476.7L772.7 477.6ZM772.9 476.7L771.8 476.6L769.2 473.8L771.4 461ZM772.9 476.7L771.4 461L775.7 462.7ZM765.6 470.1L767.1 459.4L768.5 473.1ZM768.5 473.1L767.1 459.4L771.4 461L769.2 473.8ZM761.9 466.6L762.9 457.9L764.1 468.8ZM764.1 468.8L762.9 457.9L767.1 459.4L765.6 470.1ZM775.7 462.7L771.4 461L773.9 445.8L773.9 445.8ZM775.7 462.7L773.9 445.8L778.4 449ZM771.4 461L767.1 459.4L769.4 442.7ZM771.4 461L769.4 442.7L771.1 443.8L773.9 445.8ZM767.1 459.4L762.9 457.9L765 439.9ZM767.1 459.4L765 439.9L769.4 442.7Z"/>
<path fill="#fff200" stroke="#fff200" stroke-width=".5" d="M773.9 445.8L773.9 445.6L773.9 445.8ZM773.9 445.8L773.9 445.6L778.5 448.5L778.4 449ZM771.1 443.8L773.9 445.6L773.9 445.8Z"/>
<path class="g" d="M770.2 490.5L758.9 492.6L765 439.9L778.5 448.5Z"/>
<path fill="#ffc000" stroke="#ffc000" stroke-width=".5" d="M981 352.7L975.3 346.7L978.9 342.3ZM981 352.7L978.9 342.3L984.6 347.9ZM975.3 346.7L969.6 340.7L973.2 336.7ZM975.3 346.7L973.2 336.7L978.9 342.3ZM969.6 340.7L964 334.8L967.6 331.2ZM969.6 340.7L967.6 331.2L973.2 336.7ZM984.6 347.9L978.9 342.3L982.5 337.8ZM984.6 347.9L982.5 337.8L988.3 343ZM978.9 342.3L973.2 336.7L976.8 332.7ZM978.9 342.3L976.8 332.7L982.5 337.8ZM973.2 336.7L967.6 331.2L968.2 330.5L971.8 330.6ZM973.2 336.7L971.8 330.6L974.7 330.7L976.8 332.7ZM988.3 343L982.5 337.8L986.1 333.4ZM988.3 343L986.1 333.4L991.9 338.2ZM982.5 337.8L976.8 332.7L978.3 331L980.9 331.2ZM982.5 337.8L980.9 331.2L983.8 331.5L986.1 333.4ZM976.8 332.7L974.7 330.7L976.3 330.8ZM976.8 332.7L976.3 330.8L978.3 331Z"/>
<path fill="#ffa700" stroke="#ffa700" stroke-width=".5" d="M968.2 330.5L971.1 327.5L971.8 330.6ZM971.8 330.6L971.1 327.5L974.7 330.7ZM978.3 331L980.4 328.7L980.9 331.2ZM980.9 331.2L980.4 328.7L983.8 331.5ZM974.7 330.7L971.1 327.5L974.7 324L976.3 330.8ZM976.3 330.8L974.7 324L980.4 328.7L978.3 331Z"/>
<path class="g" d="M981 352.7L964 334.8L974.7 324L991.9 338.2Z"/>
<path fill="#ffc000" stroke="#ffc000" stroke-width=".5" d="M942.4 353.6L936.7 349.7L940.4 347ZM942.4 353.6L940.4 347L946 350.8ZM936.7 349.7L931.1 345.8L934.8 343.2ZM936.7 349.7L934.8 343.2L940.4 347ZM931.1 345.8L925.6 341.9L929.3 339.6ZM931.1 345.8L929.3 339.6L934.8 343.2ZM946 350.8L940.4 347L944 344.3ZM946 350.8L944 344.3L949.6 347.9ZM940.4 347L934.8 343.2L938.4 340.7ZM940.4 347L938.4 340.7L944 344.3ZM934.8 343.2L929.3 339.6L932.9 337.2ZM934.8 343.2L932.9 337.2L938.4 340.7ZM949.6 347.9L944 344.3L947.6 341.7ZM949.6 347.9L947.6 341.7L953.3 345.1ZM944 344.3L938.4 340.7L942 338.2ZM944 344.3L942 338.2L947.6 341.7ZM938.4 340.7L932.9 337.2L936.5 334.9ZM938.4 340.7L936.5 334.9L942 338.2Z"/>
<path class="g" d="M942.4 353.6L925.6 341.9L936.5 334.9L953.3 345.1Z"/>
<path fill="#ffc000" stroke="#ffc000" stroke-width=".5" d="M875.5 351L870.2 346L874.1 343.9ZM875.5 351L874.1 343.9L879.4 348.8ZM870.2 346L864.9 341L868.8 339.1ZM870.2 346L868.8 339.1L874.1 343.9ZM864.9 341L859.7 336.1L863.6 334.3ZM864.9 341L863.6 334.3L868.8 339.1ZM879.4 348.8L874.1 343.9L877.9 341.8ZM879.4 348.8L877.9 341.8L883.2 346.6ZM874.1 343.9L868.8 339.1L872.7 337.1ZM874.1 343.9L872.7 337.1L877.9 341.8ZM868.8 339.1L863.6 334.3L867.5 332.5ZM868.8 339.1L867.5 332.5L872.7 337.1ZM883.2 346.6L877.9 341.8L881.8 339.8ZM883.2 346.6L881.8 339.8L887.1 344.4ZM877.9 341.8L872.7 337.1L876.5 335.2ZM877.9 341.8L876.5 335.2L881.8 339.8ZM872.7 337.1L867.5 332.5L871.3 330.7ZM872.7 337.1L871.3 330.7L876.5 335.2Z"/>
<path class="g" d="M875.5 351L859.7 336.1L871.3 330.7L887.1 344.4Z"/>
<path fill="#ffd900" stroke="#ffd900" stroke-width=".5" d="M822.4 373.8L819.9 374.1L822.6 371.3ZM819.9 374.1L815.4 374.7L819.3 370.8ZM819.9 374.1L819.3 370.8L822.8 370.1L822.6 371.3ZM815.4 374.7L811 375.3L814.9 371.6ZM815.4 374.7L814.9 371.6L819.3 370.8ZM822.8 370.1L819.3 370.8L823.3 366.8L823.4 367.7ZM823.4 367.7L823.3 366.8L823.7 366.7ZM819.3 370.8L814.9 371.6L818.8 368ZM819.3 370.8L818.8 368L823.3 366.8ZM823.7 366.7L823.3 366.8L823.8 366.2ZM823.3 366.8L818.8 368L822.7 364.4ZM823.3 366.8L822.7 364.4L824.9 363.6L823.8 366.2Z"/>
<path fill="#ffc000" stroke="#ffc000" stroke-width=".5" d="M824.6 373.5L822.4 373.8L822.6 371.3L823.9 369.9ZM824.6 373.5L823.9 369.9L828.5 369ZM822.8 370.1L823.9 369.9L822.6 371.3ZM828.5 369L823.9 369.9L827.8 365.7ZM828.5 369L827.8 365.7L832.5 364.5ZM823.9 369.9L822.8 370.1L823.4 367.7ZM823.9 369.9L823.4 367.7L823.7 366.7L827.8 365.7ZM832.5 364.5L827.8 365.7L831.7 361.5ZM832.5 364.5L831.7 361.5L836.4 360ZM827.8 365.7L823.7 366.7L823.8 366.2L827.1 362.9ZM827.8 365.7L827.1 362.9L831.7 361.5ZM824.9 363.6L827.1 362.9L823.8 366.2Z"/>
<path class="g" d="M824.6 373.5L811 375.3L822.7 364.4L836.4 360Z"/>
<path fill="#aaff00" stroke="#aaff00" stroke-width=".5" d="M979.3 481.7L976.4 473.5L978.5 472.8ZM979.3 481.7L978.5 472.8L980.8 471.9L982.8 478ZM982.8 478L980.8 471.9L982.3 471.5ZM982.8 478L982.3 471.5L985.1 470.3L986.3 474.2ZM986.3 474.2L985.1 470.3L986 470ZM986.3 474.2L986 470L989.2 468.7L989.8 470.5Z"/>
<path fill="#e3ff00" stroke="#e3ff00" stroke-width=".5" d="M976.4 473.5L974.2 467.1L977.7 462.6L978.5 472.8ZM978.5 472.8L977.7 462.6L980.8 471.9ZM974.2 467.1L969 452.3L972.7 447.2ZM974.2 467.1L972.7 447.2L977.7 462.6ZM969 452.3L965.6 442.6L968.3 442.2ZM969 452.3L968.3 442.2L970.8 441.5L972.7 447.2ZM980.8 471.9L977.7 462.6L981.3 458.2L982.3 471.5ZM982.3 471.5L981.3 458.2L985.1 470.3ZM977.7 462.6L972.7 447.2L976.3 442ZM977.7 462.6L976.3 442L981.3 458.2ZM972.7 447.2L970.8 441.5L972.3 441.3ZM972.7 447.2L972.3 441.3L975.8 440.4L976.3 442ZM985.1 470.3L981.3 458.2L984.9 453.8L986 470ZM986 470L984.9 453.8L989.2 468.7ZM981.3 458.2L976.3 442L977.9 439.8L980.1 439.3ZM981.3 458.2L980.1 439.3L980.6 439.1L984.9 453.8ZM976.3 442L975.8 440.4L976.2 440.3ZM976.3 442L976.2 440.3L977.9 439.8Z"/>
<path fill="#fff200" stroke="#fff200" stroke-width=".5" d="M965.6 442.6L963.8 437.4L967.5 431.5L968.3 442.2ZM968.3 442.2L967.5 431.5L970.8 441.5ZM970.8 441.5L967.5 431.5L971.3 425.6L972.3 441.3ZM972.3 441.3L971.3 425.6L975.8 440.4ZM977.9 439.8L980 436.9L980.1 439.3ZM980.1 439.3L980 436.9L980.6 439.1ZM975.8 440.4L971.3 425.6L975 419.7L976.2 440.3ZM976.2 440.3L975 419.7L980 436.9L977.9 439.8Z"/>
<path class="g" d="M979.3 481.7L963.8 437.4L975 419.7L989.8 470.5Z"/>
<path fill="#ffc000" stroke="#ffc000" stroke-width=".5" d="M1008.5 364.6L1002.9 355.7L1006.6 350.4ZM1008.5 364.6L1006.6 350.4L1012.2 359ZM1002.9 355.7L997.4 347L1001 341.8ZM1002.9 355.7L1001 341.8L1006.6 350.4ZM997.4 347L991.9 338.2L995.5 333.3ZM997.4 347L995.5 333.3L1001 341.8ZM1012.2 359L1006.6 350.4L1010.2 345.1ZM1012.2 359L1010.2 345.1L1015.8 353.5ZM1006.6 350.4L1001 341.8L1004.6 336.7ZM1006.6 350.4L1004.6 336.7L1010.2 345.1ZM1001 341.8L995.5 333.3L995.5 333.2L999.8 333.1ZM1001 341.8L999.8 333.1L1002.2 333.1L1004.6 336.7ZM1015.8 353.5L1010.2 345.1L1013.8 339.8ZM1015.8 353.5L1013.8 339.8L1019.5 347.9ZM1010.2 345.1L1004.6 336.7L1007.3 333L1008.5 333ZM1010.2 345.1L1008.5 333L1009.2 333L1013.8 339.8ZM1004.6 336.7L1002.2 333.1L1004.1 333ZM1004.6 336.7L1004.1 333L1007.3 333Z"/>
<path fill="#ffa700" stroke="#ffa700" stroke-width=".5" d="M995.5 333.2L999.1 328.4L999.8 333.1ZM999.8 333.1L999.1 328.4L1002.2 333.1ZM1007.3 333L1008.3 331.6L1008.5 333ZM1008.5 333L1008.3 331.6L1009.2 333ZM1002.2 333.1L999.1 328.4L1002.7 323.5L1004.1 333ZM1004.1 333L1002.7 323.5L1008.3 331.6L1007.3 333Z"/>
<path class="g" d="M1008.5 364.6L991.9 338.2L1002.7 323.5L1019.5 347.9Z"/>
<path fill="#72ff00" stroke="#72ff00" stroke-width=".5" d="M985.1 521.3L980.4 512.7L983.6 511.4ZM985.1 521.3L983.6 511.4L984.8 511L988.6 518ZM988.6 518L984.8 511L987.4 509.9ZM988.6 518L987.4 509.9L989.1 509.3L992.1 514.6ZM992.1 514.6L989.1 509.3L991.1 508.5ZM992.1 514.6L991.1 508.5L993.4 507.6L995.5 511.4Z"/>
<path fill="#aaff00" stroke="#aaff00" stroke-width=".5" d="M980.4 512.7L979.6 511.3L983.1 508L983.6 511.4ZM983.6 511.4L983.1 508L984.8 511ZM979.6 511.3L974.2 501.4L977.7 498.1ZM979.6 511.3L977.7 498.1L983.1 508ZM974.2 501.4L968.7 491.4L972.2 488.2ZM974.2 501.4L972.2 488.2L977.7 498.1ZM984.8 511L983.1 508L986.6 504.7L987.4 509.9ZM987.4 509.9L986.6 504.7L989.1 509.3ZM983.1 508L977.7 498.1L981.2 494.8ZM983.1 508L981.2 494.8L986.6 504.7ZM977.7 498.1L972.2 488.2L975.8 484.9ZM977.7 498.1L975.8 484.9L981.2 494.8ZM989.1 509.3L986.6 504.7L990.1 501.5L991.1 508.5ZM991.1 508.5L990.1 501.5L993.4 507.6ZM986.6 504.7L981.2 494.8L984.7 491.6ZM986.6 504.7L984.7 491.6L990.1 501.5ZM981.2 494.8L975.8 484.9L979.3 481.7ZM981.2 494.8L979.3 481.7L984.7 491.6Z"/>
<path class="g" d="M985.1 521.3L968.7 491.4L979.3 481.7L995.5 511.4Z"/>
<path fill="#00ff00" stroke="#00ff00" stroke-width=".5" d="M989.4 580.3L988.8 578.3L989.2 578.1ZM989.4 580.3L989.2 578.1L992.8 576.3Z"/>
<path fill="#39ff00" stroke="#39ff00" stroke-width=".5" d="M988.8 578.3L984.5 564.6L988 560.7L989.2 578.1ZM989.2 578.1L988 560.7L992.9 576.2L992.8 576.3ZM984.5 564.6L979.7 549.5L983.2 547.8ZM984.5 564.6L983.2 547.8L983.8 547.5L988 560.7ZM992.9 576.2L988 560.7L991.5 556.7ZM992.9 576.2L991.5 556.7L996.4 572.2ZM988 560.7L983.8 547.5L986.9 546ZM988 560.7L986.9 546L988 545.5L991.5 556.7ZM996.4 572.2L991.5 556.7L995 552.8ZM996.4 572.2L995 552.8L999.8 568.2ZM991.5 556.7L988 545.5L990.6 544.2ZM991.5 556.7L990.6 544.2L992.1 543.5L995 552.8Z"/>
<path fill="#72ff00" stroke="#72ff00" stroke-width=".5" d="M979.7 549.5L979.5 548.8L983 544.9L983.2 547.8ZM983.2 547.8L983 544.9L983.8 547.5ZM979.5 548.8L974.4 532.8L978 528.9ZM979.5 548.8L978 528.9L983 544.9ZM983.8 547.5L983 544.9L986.6 541L986.9 546ZM986.9 546L986.6 541L988 545.5ZM983 544.9L978 528.9L981.6 525.1ZM983 544.9L981.6 525.1L986.6 541ZM988 545.5L986.6 541L990.1 537.1L990.6 544.2ZM990.6 544.2L990.1 537.1L992.1 543.5ZM986.6 541L981.6 525.1L985.1 521.3ZM986.6 541L985.1 521.3L990.1 537.1Z"/>
<path class="g" d="M989.4 580.3L974.4 532.8L985.1 521.3L999.8 568.2Z"/>
<path fill="#ffc000" stroke="#ffc000" stroke-width=".5" d="M969.9 368.9L964.3 361L968 356.2ZM969.9 368.9L968 356.2L973.6 363.5ZM964.3 361L958.8 353L962.4 348.9ZM964.3 361L962.4 348.9L968 356.2ZM958.8 353L953.3 345.1L956.9 341.7ZM958.8 353L956.9 341.7L962.4 348.9ZM973.6 363.5L968 356.2L971.7 351.4ZM973.6 363.5L971.7 351.4L977.3 358.1ZM968 356.2L962.4 348.9L966 344.8ZM968 356.2L966 344.8L971.7 351.4ZM962.4 348.9L956.9 341.7L960.5 338.2ZM962.4 348.9L960.5 338.2L966 344.8ZM977.3 358.1L971.7 351.4L975.3 346.7ZM977.3 358.1L975.3 346.7L981 352.7ZM971.7 351.4L966 344.8L969.6 340.7ZM971.7 351.4L969.6 340.7L975.3 346.7ZM966 344.8L960.5 338.2L964 334.8ZM966 344.8L964 334.8L969.6 340.7Z"/>
<path class="g" d="M969.9 368.9L953.3 345.1L964 334.8L981 352.7Z"/>
<path fill="#00ff00" stroke="#00ff00" stroke-width=".5" d="M1007.5 593.4L1001.4 588.9L1004.9 584.8ZM1007.5 593.4L1004.9 584.8L1011 589.2ZM1001.4 588.9L995.4 584.6L998.9 580.5ZM1001.4 588.9L998.9 580.5L1004.9 584.8ZM995.4 584.6L989.4 580.3L992.8 576.3L992.9 576.3ZM995.4 584.6L992.9 576.3L993.4 576.6L998.9 580.5ZM1011 589.2L1004.9 584.8L1006.2 583.3L1009.8 585.2ZM1011 589.2L1009.8 585.2L1013 586.9ZM1004.9 584.8L998.9 580.5L999.5 579.8L1004.1 582.2ZM1004.9 584.8L1004.1 582.2L1006.2 583.3ZM998.9 580.5L993.4 576.6L998.5 579.3ZM998.9 580.5L998.5 579.3L999.5 579.8Z"/>
<path fill="#39ff00" stroke="#39ff00" stroke-width=".5" d="M992.8 576.3L992.9 576.2L992.9 576.3ZM992.9 576.3L992.9 576.2L993.4 576.6ZM1006.2 583.3L1008.4 580.8L1009.8 585.2ZM1009.8 585.2L1008.4 580.8L1014.5 585.1L1013 586.9ZM999.5 579.8L1002.3 576.5L1004.1 582.2ZM1004.1 582.2L1002.3 576.5L1008.4 580.8L1006.2 583.3ZM993.4 576.6L992.9 576.2L996.4 572.2L998.5 579.3ZM998.5 579.3L996.4 572.2L1002.3 576.5L999.5 579.8ZM1014.5 585.1L1008.4 580.8L1011.9 576.7ZM1014.5 585.1L1011.9 576.7L1018 581.1ZM1008.4 580.8L1002.3 576.5L1005.8 572.4ZM1008.4 580.8L1005.8 572.4L1011.9 576.7ZM1002.3 576.5L996.4 572.2L999.8 568.2ZM1002.3 576.5L999.8 568.2L1005.8 572.4Z"/>
<path class="g" d="M1007.5 593.4L989.4 580.3L999.8 568.2L1018 581.1Z"/>
<path fill="#ffd900" stroke="#ffd900" stroke-width=".5" d="M997.3 383.6L991.9 373.3L993.7 370.4L995.9 370.3ZM997.3 383.6L995.9 370.3L997.1 370.3L1001 377.3ZM991.9 373.3L990.4 370.5L991.5 370.4ZM991.9 373.3L991.5 370.4L993.7 370.4ZM1001 377.3L997.1 370.3L1000.2 370.2ZM1001 377.3L1000.2 370.2L1004.4 370.3L1004.8 370.9ZM1004.8 370.9L1004.4 370.3L1004.7 370.3ZM1004.8 370.9L1004.7 370.3L1005.1 370.3Z"/>
<path fill="#ffc000" stroke="#ffc000" stroke-width=".5" d="M993.7 370.4L995.6 367.5L995.9 370.3ZM995.9 370.3L995.6 367.5L997.1 370.3ZM990.4 370.5L986.4 363L990.1 357.7L991.5 370.4ZM991.5 370.4L990.1 357.7L995.6 367.5L993.7 370.4ZM986.4 363L981 352.7L984.6 347.9ZM986.4 363L984.6 347.9L990.1 357.7ZM997.1 370.3L995.6 367.5L999.3 361.6L1000.2 370.2ZM1000.2 370.2L999.3 361.6L1004.4 370.3ZM995.6 367.5L990.1 357.7L993.7 352.3ZM995.6 367.5L993.7 352.3L999.3 361.6ZM990.1 357.7L984.6 347.9L988.3 343ZM990.1 357.7L988.3 343L993.7 352.3ZM1004.4 370.3L999.3 361.6L1002.9 355.7L1004.7 370.3ZM1004.7 370.3L1002.9 355.7L1008.5 364.6L1005.1 370.3ZM999.3 361.6L993.7 352.3L997.4 347ZM999.3 361.6L997.4 347L1002.9 355.7ZM993.7 352.3L988.3 343L991.9 338.2ZM993.7 352.3L991.9 338.2L997.4 347Z"/>
<path class="g" d="M997.3 383.6L981 352.7L991.9 338.2L1008.5 364.6Z"/>
<path fill="#ffc000" stroke="#ffc000" stroke-width=".5" d="M903.2 353.3L897.7 350.3L901.6 348.3ZM903.2 353.3L901.6 348.3L907 351.4ZM897.7 350.3L892.4 347.3L896.2 345.2ZM897.7 350.3L896.2 345.2L901.6 348.3ZM892.4 347.3L887.1 344.4L890.9 342.2ZM892.4 347.3L890.9 342.2L896.2 345.2ZM907 351.4L901.6 348.3L905.3 346.3ZM907 351.4L905.3 346.3L910.8 349.5ZM901.6 348.3L896.2 345.2L900 343.1ZM901.6 348.3L900 343.1L905.3 346.3ZM896.2 345.2L890.9 342.2L894.6 339.9ZM896.2 345.2L894.6 339.9L900 343.1ZM910.8 349.5L905.3 346.3L909.1 344.3ZM910.8 349.5L909.1 344.3L914.6 347.6ZM905.3 346.3L900 343.1L903.7 341ZM905.3 346.3L903.7 341L909.1 344.3ZM900 343.1L894.6 339.9L898.4 337.8ZM900 343.1L898.4 337.8L903.7 341Z"/>
<path class="g" d="M903.2 353.3L887.1 344.4L898.4 337.8L914.6 347.6Z"/>
<path fill="#aaff00" stroke="#aaff00" stroke-width=".5" d="M968.7 491.4L963.3 479.4L965.1 477.4L967.1 476.8ZM968.7 491.4L967.1 476.8L967.5 476.6L972.2 488.2ZM963.3 479.4L962.8 478.1L963.2 478ZM963.3 479.4L963.2 478L965.1 477.4ZM972.2 488.2L967.5 476.6L971 475.6ZM972.2 488.2L971 475.6L972 475.1L975.8 484.9ZM975.8 484.9L972 475.1L974.8 474.2ZM975.8 484.9L974.8 474.2L976.4 473.5L979.3 481.7Z"/>
<path fill="#e3ff00" stroke="#e3ff00" stroke-width=".5" d="M965.1 477.4L967 475.3L967.1 476.8ZM967.1 476.8L967 475.3L967.5 476.6ZM962.8 478.1L958 467.3L961.7 462.3L963.2 478ZM963.2 478L961.7 462.3L967 475.3L965.1 477.4ZM958 467.3L952.6 455.1L956.3 449.2ZM958 467.3L956.3 449.2L961.7 462.3ZM967.5 476.6L967 475.3L970.6 471.2L971 475.6ZM971 475.6L970.6 471.2L972 475.1ZM967 475.3L961.7 462.3L965.3 457.3ZM967 475.3L965.3 457.3L970.6 471.2ZM961.7 462.3L956.3 449.2L959.9 443.6L960.1 443.6ZM961.7 462.3L960.1 443.6L960.2 443.6L965.3 457.3ZM972 475.1L970.6 471.2L974.2 467.1L974.8 474.2ZM974.8 474.2L974.2 467.1L976.4 473.5ZM970.6 471.2L965.3 457.3L969 452.3ZM970.6 471.2L969 452.3L974.2 467.1ZM965.3 457.3L960.2 443.6L964.2 443ZM965.3 457.3L964.2 443L965.6 442.6L969 452.3Z"/>
<path fill="#fff200" stroke="#fff200" stroke-width=".5" d="M959.9 443.6L960.1 443.3L960.1 443.6ZM960.1 443.6L960.1 443.3L960.2 443.6ZM960.2 443.6L960.1 443.3L963.8 437.4L964.2 443ZM964.2 443L963.8 437.4L965.6 442.6Z"/>
<path class="g" d="M968.7 491.4L952.6 455.1L963.8 437.4L979.3 481.7Z"/>
<path fill="#ffd900" stroke="#ffd900" stroke-width=".5" d="M812.6 387.3L808 386.8L812 382.6ZM812.6 387.3L812 382.6L816.6 382.7ZM808 386.8L803.5 386.3L807.5 382.4ZM808 386.8L807.5 382.4L812 382.6ZM803.5 386.3L799 385.8L803 382.3ZM803.5 386.3L803 382.3L807.5 382.4ZM816.6 382.7L812 382.6L816 378.3ZM816.6 382.7L816 378.3L820.6 378.1ZM812 382.6L807.5 382.4L811.5 378.6ZM812 382.6L811.5 378.6L816 378.3ZM807.5 382.4L803 382.3L807 378.8ZM807.5 382.4L807 378.8L811.5 378.6ZM820.6 378.1L816 378.3L819.9 374.1ZM820.6 378.1L819.9 374.1L822.4 373.8L822.5 375.9ZM816 378.3L811.5 378.6L815.4 374.7ZM816 378.3L815.4 374.7L819.9 374.1ZM811.5 378.6L807 378.8L811 375.3ZM811.5 378.6L811 375.3L815.4 374.7Z"/>
<path fill="#ffc000" stroke="#ffc000" stroke-width=".5" d="M822.4 373.8L824.6 373.5L822.5 375.9Z"/>
<path class="g" d="M812.6 387.3L799 385.8L811 375.3L824.6 373.5Z"/>
<path fill="#ffd900" stroke="#ffd900" stroke-width=".5" d="M986.1 402.3L980.7 391.2L984.4 385.2ZM986.1 402.3L984.4 385.2L989.8 396ZM980.7 391.2L975.3 380.1L979 374.4ZM980.7 391.2L979 374.4L984.4 385.2ZM975.3 380.1L971.3 371.7L974.4 371.4ZM975.3 380.1L974.4 371.4L977.5 371.2L979 374.4ZM989.8 396L984.4 385.2L988.1 379.3ZM989.8 396L988.1 379.3L993.6 389.8ZM984.4 385.2L979 374.4L981.2 371L983 370.9ZM984.4 385.2L983 370.9L983.8 370.8L988.1 379.3ZM979 374.4L977.5 371.2L978.7 371.1ZM979 374.4L978.7 371.1L981.2 371ZM993.6 389.8L988.1 379.3L991.9 373.3ZM993.6 389.8L991.9 373.3L997.3 383.6ZM988.1 379.3L983.8 370.8L987.2 370.6ZM988.1 379.3L987.2 370.6L990.4 370.5L991.9 373.3Z"/>
<path fill="#ffc000" stroke="#ffc000" stroke-width=".5" d="M971.3 371.7L969.9 368.9L973.6 363.5L974.4 371.4ZM974.4 371.4L973.6 363.5L977.5 371.2ZM981.2 371L982.7 368.7L983 370.9ZM983 370.9L982.7 368.7L983.8 370.8ZM977.5 371.2L973.6 363.5L977.3 358.1L978.7 371.1ZM978.7 371.1L977.3 358.1L982.7 368.7L981.2 371ZM983.8 370.8L982.7 368.7L986.4 363L987.2 370.6ZM987.2 370.6L986.4 363L990.4 370.5ZM982.7 368.7L977.3 358.1L981 352.7ZM982.7 368.7L981 352.7L986.4 363Z"/>
<path class="g" d="M986.1 402.3L969.9 368.9L981 352.7L997.3 383.6Z"/>
<path fill="#fff200" stroke="#fff200" stroke-width=".5" d="M975 419.7L969.5 409.4L971 407L973.6 406.9ZM975 419.7L973.6 406.9L975.1 406.9L978.7 413.9ZM969.5 409.4L968.3 407.1L969.3 407.1ZM969.5 409.4L969.3 407.1L971 407ZM978.7 413.9L975.1 406.9L978 406.8ZM978.7 413.9L978 406.8L981.6 406.5L982.4 408.1ZM982.4 408.1L981.6 406.5L982.3 406.5ZM982.4 408.1L982.3 406.5L983.5 406.4Z"/>
<path fill="#ffd900" stroke="#ffd900" stroke-width=".5" d="M971 407L973.3 403.3L973.6 406.9ZM973.6 406.9L973.3 403.3L975.1 406.9ZM968.3 407.1L964.1 399.1L967.8 392.8L969.3 407.1ZM969.3 407.1L967.8 392.8L973.3 403.3L971 407ZM964.1 399.1L958.6 388.8L962.4 382.2ZM964.1 399.1L962.4 382.2L967.8 392.8ZM975.1 406.9L973.3 403.3L977 397.2L978 406.8ZM978 406.8L977 397.2L981.6 406.5ZM973.3 403.3L967.8 392.8L971.6 386.4ZM973.3 403.3L971.6 386.4L977 397.2ZM967.8 392.8L962.4 382.2L966.1 375.6ZM967.8 392.8L966.1 375.6L971.6 386.4ZM981.6 406.5L977 397.2L980.7 391.2L982.3 406.5ZM982.3 406.5L980.7 391.2L986.1 402.3L983.5 406.4ZM977 397.2L971.6 386.4L975.3 380.1ZM977 397.2L975.3 380.1L980.7 391.2ZM971.6 386.4L966.1 375.6L968.3 371.8L970.2 371.7ZM971.6 386.4L970.2 371.7L971.3 371.7L975.3 380.1Z"/>
<path fill="#ffc000" stroke="#ffc000" stroke-width=".5" d="M968.3 371.8L969.9 368.9L970.2 371.7ZM970.2 371.7L969.9 368.9L971.3 371.7Z"/>
<path class="g" d="M975 419.7L958.6 388.8L969.9 368.9L986.1 402.3Z"/>
<path fill="#ffd900" stroke="#ffd900" stroke-width=".5" d="M958.6 388.8L953.2 377.1L956.8 371.8L956.9 371.8ZM958.6 388.8L956.9 371.8L957 371.8L962.4 382.2ZM953.2 377.1L951.1 372.4L952.7 372.1ZM953.2 377.1L952.7 372.1L956.8 371.8ZM962.4 382.2L957 371.8L961.2 371.5ZM962.4 382.2L961.2 371.5L963.8 371.6L966.1 375.6ZM966.1 375.6L963.8 371.6L965.7 371.6ZM966.1 375.6L965.7 371.6L968.3 371.8Z"/>
<path fill="#ffc000" stroke="#ffc000" stroke-width=".5" d="M956.8 371.8L956.9 371.7L956.9 371.8ZM956.9 371.8L956.9 371.7L957 371.8ZM951.1 372.4L947.8 365.4L951.5 361.2L952.7 372.1ZM952.7 372.1L951.5 361.2L956.9 371.7L956.8 371.8ZM947.8 365.4L942.4 353.6L946 350.8ZM947.8 365.4L946 350.8L951.5 361.2ZM957 371.8L956.9 371.7L960.6 366.3L961.2 371.5ZM961.2 371.5L960.6 366.3L963.8 371.6ZM956.9 371.7L951.5 361.2L955.1 357.1ZM956.9 371.7L955.1 357.1L960.6 366.3ZM951.5 361.2L946 350.8L949.6 347.9ZM951.5 361.2L949.6 347.9L955.1 357.1ZM963.8 371.6L960.6 366.3L964.3 361L965.7 371.6ZM965.7 371.6L964.3 361L969.9 368.9L968.3 371.8ZM960.6 366.3L955.1 357.1L958.8 353ZM960.6 366.3L958.8 353L964.3 361ZM955.1 357.1L949.6 347.9L953.3 345.1ZM955.1 357.1L953.3 345.1L958.8 353Z"/>
<path class="g" d="M958.6 388.8L942.4 353.6L953.3 345.1L969.9 368.9Z"/>
<path fill="#e3ff00" stroke="#e3ff00" stroke-width=".5" d="M952.6 455.1L947 447.4L949.6 443.1L951 443.2ZM952.6 455.1L951 443.2L952.3 443.3L956.3 449.2ZM947 447.4L943.4 442.4L946.4 442.8ZM947 447.4L946.4 442.8L949.6 443.1ZM956.3 449.2L952.3 443.3L955.6 443.5ZM956.3 449.2L955.6 443.5L959.9 443.6Z"/>
<path fill="#fff200" stroke="#fff200" stroke-width=".5" d="M949.6 443.1L950.8 441.1L951 443.2ZM951 443.2L950.8 441.1L952.3 443.3ZM943.4 442.4L941.5 439.7L945.2 433L946.4 442.8ZM946.4 442.8L945.2 433L950.8 441.1L949.6 443.1ZM941.5 439.7L935.9 432L939.7 424.9ZM941.5 439.7L939.7 424.9L945.2 433ZM952.3 443.3L950.8 441.1L954.5 434.8L955.6 443.5ZM955.6 443.5L954.5 434.8L960.1 443.3L959.9 443.6ZM950.8 441.1L945.2 433L949 426.2ZM950.8 441.1L949 426.2L954.5 434.8ZM945.2 433L939.7 424.9L943.5 417.7ZM945.2 433L943.5 417.7L949 426.2ZM960.1 443.3L954.5 434.8L958.3 428.5ZM960.1 443.3L958.3 428.5L963.8 437.4ZM954.5 434.8L949 426.2L952.8 419.5ZM954.5 434.8L952.8 419.5L958.3 428.5ZM949 426.2L943.5 417.7L947.3 410.5ZM949 426.2L947.3 410.5L952.8 419.5Z"/>
<path class="g" d="M952.6 455.1L935.9 432L947.3 410.5L963.8 437.4Z"/>
<path fill="#fff200" stroke="#fff200" stroke-width=".5" d="M963.8 437.4L958.3 428.5L962 422.1ZM963.8 437.4L962 422.1L967.5 431.5ZM958.3 428.5L952.8 419.5L956.5 412.7ZM958.3 428.5L956.5 412.7L962 422.1ZM952.8 419.5L947.3 410.5L949.4 406.5L951.4 406.7ZM952.8 419.5L951.4 406.7L953 406.7L956.5 412.7ZM967.5 431.5L962 422.1L965.8 415.8ZM967.5 431.5L965.8 415.8L971.3 425.6ZM962 422.1L956.5 412.7L959.7 407L960.4 407.1ZM962 422.1L960.4 407.1L960.9 407.1L965.8 415.8ZM956.5 412.7L953 406.7L955.9 406.9ZM956.5 412.7L955.9 406.9L959.7 407ZM971.3 425.6L965.8 415.8L969.5 409.4ZM971.3 425.6L969.5 409.4L975 419.7ZM965.8 415.8L960.9 407.1L964.9 407.2ZM965.8 415.8L964.9 407.2L968.3 407.1L969.5 409.4Z"/>
<path fill="#ffd900" stroke="#ffd900" stroke-width=".5" d="M949.4 406.5L951 403.3L951.4 406.7ZM951.4 406.7L951 403.3L953 406.7ZM959.7 407L960.3 405.9L960.4 407.1ZM960.4 407.1L960.3 405.9L960.9 407.1ZM953 406.7L951 403.3L954.8 396.1L955.9 406.9ZM955.9 406.9L954.8 396.1L960.3 405.9L959.7 407ZM960.9 407.1L960.3 405.9L964.1 399.1L964.9 407.2ZM964.9 407.2L964.1 399.1L968.3 407.1ZM960.3 405.9L954.8 396.1L958.6 388.8ZM960.3 405.9L958.6 388.8L964.1 399.1Z"/>
<path class="g" d="M963.8 437.4L947.3 410.5L958.6 388.8L975 419.7Z"/>
<path fill="#e3ff00" stroke="#e3ff00" stroke-width=".5" d="M941.4 470L935.8 463.4L939.6 458ZM941.4 470L939.6 458L945.1 465ZM935.8 463.4L930.2 456.8L934 451.1ZM935.8 463.4L934 451.1L939.6 458ZM930.2 456.8L924.7 450.2L928.5 444.2ZM930.2 456.8L928.5 444.2L934 451.1ZM945.1 465L939.6 458L943.3 452.7ZM945.1 465L943.3 452.7L948.9 460.1ZM939.6 458L934 451.1L937.7 445.4ZM939.6 458L937.7 445.4L943.3 452.7ZM934 451.1L928.5 444.2L930.3 441.3L932.7 441.6ZM934 451.1L932.7 441.6L935 441.8L937.7 445.4ZM948.9 460.1L943.3 452.7L947 447.4ZM948.9 460.1L947 447.4L952.6 455.1ZM943.3 452.7L937.7 445.4L939.8 442.2L941.8 442.4ZM943.3 452.7L941.8 442.4L943.4 442.4L947 447.4ZM937.7 445.4L935 441.8L937.3 442ZM937.7 445.4L937.3 442L939.8 442.2Z"/>
<path fill="#fff200" stroke="#fff200" stroke-width=".5" d="M930.3 441.3L932.2 438.1L932.7 441.6ZM932.7 441.6L932.2 438.1L935 441.8ZM939.8 442.2L941.5 439.7L941.8 442.4ZM941.8 442.4L941.5 439.7L943.4 442.4ZM935 441.8L932.2 438.1L935.9 432L937.3 442ZM937.3 442L935.9 432L941.5 439.7L939.8 442.2Z"/>
<path class="g" d="M941.4 470L924.7 450.2L935.9 432L952.6 455.1Z"/>
<path fill="#00ff00" stroke="#00ff00" stroke-width=".5" d="M978.8 592.6L976 584.4L978.1 583.4ZM978.8 592.6L978.1 583.4L980.3 582.3L982.4 588.5ZM982.4 588.5L980.3 582.3L981.8 581.7ZM982.4 588.5L981.8 581.7L984.6 580.3L985.9 584.4ZM985.9 584.4L984.6 580.3L985.6 579.9ZM985.9 584.4L985.6 579.9L988.8 578.3L989.4 580.3Z"/>
<path fill="#39ff00" stroke="#39ff00" stroke-width=".5" d="M976 584.4L973.7 577.6L977.3 573.3L978.1 583.4ZM978.1 583.4L977.3 573.3L980.3 582.3ZM973.7 577.6L968.5 562.5L972.2 557.9ZM973.7 577.6L972.2 557.9L977.3 573.3ZM968.5 562.5L965.9 554.8L967.9 554.1ZM968.5 562.5L967.9 554.1L970.6 553L972.2 557.9ZM980.3 582.3L977.3 573.3L980.9 568.9L981.8 581.7ZM981.8 581.7L980.9 568.9L984.6 580.3ZM977.3 573.3L972.2 557.9L975.8 553.3ZM977.3 573.3L975.8 553.3L980.9 568.9ZM972.2 557.9L970.6 553L971.8 552.6ZM972.2 557.9L971.8 552.6L975.2 551.3L975.8 553.3ZM984.6 580.3L980.9 568.9L984.5 564.6L985.6 579.9ZM985.6 579.9L984.5 564.6L988.8 578.3ZM980.9 568.9L975.8 553.3L978.6 549.9L979.5 549.5ZM980.9 568.9L979.5 549.5L979.7 549.5L984.5 564.6ZM975.8 553.3L975.2 551.3L975.7 551.1ZM975.8 553.3L975.7 551.1L978.6 549.9Z"/>
<path fill="#72ff00" stroke="#72ff00" stroke-width=".5" d="M965.9 554.8L963.3 547.2L967 542.4L967.9 554.1ZM967.9 554.1L967 542.4L970.6 553ZM970.6 553L967 542.4L970.7 537.6L971.8 552.6ZM971.8 552.6L970.7 537.6L975.2 551.3ZM978.6 549.9L979.5 548.8L979.5 549.5ZM979.5 549.5L979.5 548.8L979.7 549.5ZM975.2 551.3L970.7 537.6L974.4 532.8L975.7 551.1ZM975.7 551.1L974.4 532.8L979.5 548.8L978.6 549.9Z"/>
<path class="g" d="M978.8 592.6L963.3 547.2L974.4 532.8L989.4 580.3Z"/>
<path fill="#ffc000" stroke="#ffc000" stroke-width=".5" d="M931.3 361.1L925.6 356.5L929.4 354.2ZM931.3 361.1L929.4 354.2L935 358.6ZM925.6 356.5L920.1 352L923.8 349.9ZM925.6 356.5L923.8 349.9L929.4 354.2ZM920.1 352L914.6 347.6L918.3 345.7ZM920.1 352L918.3 345.7L923.8 349.9ZM935 358.6L929.4 354.2L933.1 351.9ZM935 358.6L933.1 351.9L938.7 356.1ZM929.4 354.2L923.8 349.9L927.5 347.8ZM929.4 354.2L927.5 347.8L933.1 351.9ZM923.8 349.9L918.3 345.7L922 343.8ZM923.8 349.9L922 343.8L927.5 347.8ZM938.7 356.1L933.1 351.9L936.7 349.7ZM938.7 356.1L936.7 349.7L942.4 353.6ZM933.1 351.9L927.5 347.8L931.1 345.8ZM933.1 351.9L931.1 345.8L936.7 349.7ZM927.5 347.8L922 343.8L925.6 341.9ZM927.5 347.8L925.6 341.9L931.1 345.8Z"/>
<path class="g" d="M931.3 361.1L914.6 347.6L925.6 341.9L942.4 353.6Z"/>
<path fill="#ffc000" stroke="#ffc000" stroke-width=".5" d="M863.5 356L858.3 352.8L862.3 350.5ZM863.5 356L862.3 350.5L867.5 354.3ZM858.3 352.8L853.1 349.6L857.1 346.7ZM858.3 352.8L857.1 346.7L862.3 350.5ZM853.1 349.6L848 346.5L851.9 343ZM853.1 349.6L851.9 343L857.1 346.7ZM867.5 354.3L862.3 350.5L866.2 348.2ZM867.5 354.3L866.2 348.2L871.5 352.7ZM862.3 350.5L857.1 346.7L861 343.8ZM862.3 350.5L861 343.8L866.2 348.2ZM857.1 346.7L851.9 343L855.8 339.5ZM857.1 346.7L855.8 339.5L861 343.8ZM871.5 352.7L866.2 348.2L870.2 346ZM871.5 352.7L870.2 346L875.5 351ZM866.2 348.2L861 343.8L864.9 341ZM866.2 348.2L864.9 341L870.2 346ZM861 343.8L855.8 339.5L859.7 336.1ZM861 343.8L859.7 336.1L864.9 341Z"/>
<path class="g" d="M863.5 356L848 346.5L859.7 336.1L875.5 351Z"/>
<path fill="#00ff00" stroke="#00ff00" stroke-width=".5" d="M996.9 606.2L990.8 601.6L994.3 597.3ZM996.9 606.2L994.3 597.3L1000.4 601.9ZM990.8 601.6L984.7 597.1L988.3 592.9ZM990.8 601.6L988.3 592.9L994.3 597.3ZM984.7 597.1L978.8 592.6L982.4 588.5ZM984.7 597.1L982.4 588.5L988.3 592.9ZM1000.4 601.9L994.3 597.3L997.9 593.1ZM1000.4 601.9L997.9 593.1L1004 597.6ZM994.3 597.3L988.3 592.9L991.8 588.7ZM994.3 597.3L991.8 588.7L997.9 593.1ZM988.3 592.9L982.4 588.5L985.9 584.4ZM988.3 592.9L985.9 584.4L991.8 588.7ZM1004 597.6L997.9 593.1L1001.4 588.9ZM1004 597.6L1001.4 588.9L1007.5 593.4ZM997.9 593.1L991.8 588.7L995.4 584.6ZM997.9 593.1L995.4 584.6L1001.4 588.9ZM991.8 588.7L985.9 584.4L989.4 580.3ZM991.8 588.7L989.4 580.3L995.4 584.6Z"/>
<path class="g" d="M996.9 606.2L978.8 592.6L989.4 580.3L1007.5 593.4Z"/>
<path fill="#72ff00" stroke="#72ff00" stroke-width=".5" d="M974.4 532.8L968.9 522.3L972.5 518.6ZM974.4 532.8L972.5 518.6L978 528.9ZM968.9 522.3L966.3 517.5L968.2 516.8ZM968.9 522.3L968.2 516.8L971 515.8L972.5 518.6ZM978 528.9L972.5 518.6L976.1 515ZM978 528.9L976.1 515L981.6 525.1ZM972.5 518.6L971 515.8L972.1 515.5ZM972.5 518.6L972.1 515.5L975.7 514.3L976.1 515ZM981.6 525.1L976.1 515L977.3 513.7L979.8 512.9ZM981.6 525.1L979.8 512.9L980.4 512.7L985.1 521.3ZM976.1 515L975.7 514.3L976 514.2ZM976.1 515L976 514.2L977.3 513.7Z"/>
<path fill="#aaff00" stroke="#aaff00" stroke-width=".5" d="M966.3 517.5L963.4 511.9L967 508.4L968.2 516.8ZM968.2 516.8L967 508.4L971 515.8ZM963.4 511.9L957.9 501.5L961.5 498.1ZM963.4 511.9L961.5 498.1L967 508.4ZM971 515.8L967 508.4L970.6 504.8L972.1 515.5ZM972.1 515.5L970.6 504.8L975.7 514.3ZM967 508.4L961.5 498.1L965.1 494.7ZM967 508.4L965.1 494.7L970.6 504.8ZM977.3 513.7L979.6 511.3L979.8 512.9ZM979.8 512.9L979.6 511.3L980.4 512.7ZM975.7 514.3L970.6 504.8L974.2 501.4L976 514.2ZM976 514.2L974.2 501.4L979.6 511.3L977.3 513.7ZM970.6 504.8L965.1 494.7L968.7 491.4ZM970.6 504.8L968.7 491.4L974.2 501.4Z"/>
<path class="g" d="M974.4 532.8L957.9 501.5L968.7 491.4L985.1 521.3Z"/>
<path fill="#fff200" stroke="#fff200" stroke-width=".5" d="M778.5 448.5L773.9 445.6L777.6 438.3ZM778.5 448.5L777.6 438.3L782.2 440.9ZM773.9 445.6L771.1 443.8L769.5 442.6L773.1 435.8ZM773.9 445.6L773.1 435.8L777.6 438.3ZM765.3 439.4L768.7 433.3L769.4 442.5ZM769.4 442.5L768.7 433.3L773.1 435.8L769.5 442.6ZM782.2 440.9L777.6 438.3L781.3 431ZM782.2 440.9L781.3 431L785.9 433.3ZM777.6 438.3L773.1 435.8L776.8 428.9ZM777.6 438.3L776.8 428.9L781.3 431ZM773.1 435.8L768.7 433.3L772.4 426.7ZM773.1 435.8L772.4 426.7L776.8 428.9ZM785.9 433.3L781.3 431L785 423.8ZM785.9 433.3L785 423.8L789.6 425.6ZM781.3 431L776.8 428.9L780.6 421.9ZM781.3 431L780.6 421.9L785 423.8ZM776.8 428.9L772.4 426.7L776.2 420.1ZM776.8 428.9L776.2 420.1L780.6 421.9Z"/>
<path fill="#e3ff00" stroke="#e3ff00" stroke-width=".5" d="M771.1 443.8L769.4 442.7L769.5 442.6ZM769.4 442.7L765 439.9L765.3 439.4L769.4 442.5ZM769.4 442.7L769.4 442.5L769.5 442.6Z"/>
<path class="g" d="M778.5 448.5L765 439.9L776.2 420.1L789.6 425.6Z"/>
<path fill="#72ff00" stroke="#72ff00" stroke-width=".5" d="M768.2 517L767.9 517.1L768.1 516.6ZM767.9 517.1L764.2 518.4L766.5 511.5L767.8 515.8ZM767.9 517.1L767.8 515.8L768.1 516.6ZM764.2 518.4L760.5 519.7L763.7 510ZM764.2 518.4L763.7 510L765.9 509.4L766.5 511.5ZM765.9 509.4L763.7 510L764.9 506.5Z"/>
<path fill="#aaff00" stroke="#aaff00" stroke-width=".5" d="M771.7 515.8L768.2 517L768.1 516.6L771.3 507.7ZM771.7 515.8L771.3 507.7L775.2 506.5ZM766.5 511.5L767.4 508.9L767.8 515.8ZM767.8 515.8L767.4 508.9L771.3 507.7L768.1 516.6ZM765.9 509.4L767.4 508.9L766.5 511.5ZM775.2 506.5L771.3 507.7L774.7 498.3ZM775.2 506.5L774.7 498.3L778.7 497.2ZM771.3 507.7L767.4 508.9L770.7 499.3ZM771.3 507.7L770.7 499.3L774.7 498.3ZM767.4 508.9L765.9 509.4L764.9 506.5L766.9 500.3ZM767.4 508.9L766.9 500.3L770.7 499.3ZM778.7 497.2L774.7 498.3L778.1 488.8ZM778.7 497.2L778.1 488.8L780.3 488.3L781.2 490.5ZM774.7 498.3L770.7 499.3L774.1 489.6ZM774.7 498.3L774.1 489.6L778.1 488.8ZM770.7 499.3L766.9 500.3L770.2 490.5ZM770.7 499.3L770.2 490.5L774.1 489.6Z"/>
<path fill="#e3ff00" stroke="#e3ff00" stroke-width=".5" d="M780.3 488.3L782.2 487.9L781.2 490.5Z"/>
<path class="g" d="M771.7 515.8L760.5 519.7L770.2 490.5L782.2 487.9Z"/>
<path fill="#fff200" stroke="#fff200" stroke-width=".5" d="M947.3 410.5L946.1 406.9L947 406.7ZM947.3 410.5L947 406.7L949.4 406.5Z"/>
<path fill="#ffd900" stroke="#ffd900" stroke-width=".5" d="M946.1 406.9L942 394.2L945.7 388.5L947 406.7ZM947 406.7L945.7 388.5L951 403.3L949.4 406.5ZM942 394.2L936.7 377.7L939.4 374.7L940.5 374.4ZM942 394.2L940.5 374.4L940.7 374.4L945.7 388.5ZM936.7 377.7L936 375.6L936.5 375.4ZM936.7 377.7L936.5 375.4L939.4 374.7ZM951 403.3L945.7 388.5L949.5 382.8ZM951 403.3L949.5 382.8L954.8 396.1ZM945.7 388.5L940.7 374.4L944.4 373.5ZM945.7 388.5L944.4 373.5L945.6 373.3L949.5 382.8ZM954.8 396.1L949.5 382.8L953.2 377.1ZM954.8 396.1L953.2 377.1L958.6 388.8ZM949.5 382.8L945.6 373.3L948.5 372.7ZM949.5 382.8L948.5 372.7L951.1 372.4L953.2 377.1Z"/>
<path fill="#ffc000" stroke="#ffc000" stroke-width=".5" d="M939.4 374.7L940.4 373.6L940.5 374.4ZM940.5 374.4L940.4 373.6L940.7 374.4ZM936 375.6L931.3 361.1L935 358.6L936.5 375.4ZM936.5 375.4L935 358.6L940.4 373.6L939.4 374.7ZM940.7 374.4L940.4 373.6L944.1 369.5L944.4 373.5ZM944.4 373.5L944.1 369.5L945.6 373.3ZM940.4 373.6L935 358.6L938.7 356.1ZM940.4 373.6L938.7 356.1L944.1 369.5ZM945.6 373.3L944.1 369.5L947.8 365.4L948.5 372.7ZM948.5 372.7L947.8 365.4L951.1 372.4ZM944.1 369.5L938.7 356.1L942.4 353.6ZM944.1 369.5L942.4 353.6L947.8 365.4Z"/>
<path class="g" d="M947.3 410.5L931.3 361.1L942.4 353.6L958.6 388.8Z"/>
<path fill="#aaff00" stroke="#aaff00" stroke-width=".5" d="M957.9 501.5L952.4 491L956.1 487.1ZM957.9 501.5L956.1 487.1L961.5 498.1ZM952.4 491L947.7 482.1L951.3 481.3ZM952.4 491L951.3 481.3L953 480.8L956.1 487.1ZM961.5 498.1L956.1 487.1L959.7 483.2ZM961.5 498.1L959.7 483.2L965.1 494.7ZM956.1 487.1L953 480.8L955.3 480.3ZM956.1 487.1L955.3 480.3L958 479.5L959.7 483.2ZM965.1 494.7L959.7 483.2L963.3 479.4ZM965.1 494.7L963.3 479.4L968.7 491.4ZM959.7 483.2L958 479.5L959.3 479.2ZM959.7 483.2L959.3 479.2L962.8 478.1L963.3 479.4Z"/>
<path fill="#e3ff00" stroke="#e3ff00" stroke-width=".5" d="M947.7 482.1L946.9 480.5L950.6 476.1L951.3 481.3ZM951.3 481.3L950.6 476.1L953 480.8ZM946.9 480.5L941.4 470L945.1 465ZM946.9 480.5L945.1 465L950.6 476.1ZM953 480.8L950.6 476.1L954.3 471.7L955.3 480.3ZM955.3 480.3L954.3 471.7L958 479.5ZM950.6 476.1L945.1 465L948.9 460.1ZM950.6 476.1L948.9 460.1L954.3 471.7ZM958 479.5L954.3 471.7L958 467.3L959.3 479.2ZM959.3 479.2L958 467.3L962.8 478.1ZM954.3 471.7L948.9 460.1L952.6 455.1ZM954.3 471.7L952.6 455.1L958 467.3Z"/>
<path class="g" d="M957.9 501.5L941.4 470L952.6 455.1L968.7 491.4Z"/>
<path fill="#aaff00" stroke="#aaff00" stroke-width=".5" d="M930.1 484.9L929.8 484.5L930.1 484.5ZM930.1 484.9L930.1 484.5L930.4 484.6Z"/>
<path fill="#e3ff00" stroke="#e3ff00" stroke-width=".5" d="M929.8 484.5L924.5 478.2L928.3 473.3L930.1 484.5ZM930.1 484.5L928.3 473.3L933.9 479.9L930.4 484.6ZM924.5 478.2L919 471.6L922.8 466.6ZM924.5 478.2L922.8 466.6L928.3 473.3ZM919 471.6L913.5 465L917.2 460ZM919 471.6L917.2 460L922.8 466.6ZM933.9 479.9L928.3 473.3L932.1 468.3ZM933.9 479.9L932.1 468.3L937.7 475ZM928.3 473.3L922.8 466.6L926.5 461.7ZM928.3 473.3L926.5 461.7L932.1 468.3ZM922.8 466.6L917.2 460L921 455.1ZM922.8 466.6L921 455.1L926.5 461.7ZM937.7 475L932.1 468.3L935.8 463.4ZM937.7 475L935.8 463.4L941.4 470ZM932.1 468.3L926.5 461.7L930.2 456.8ZM932.1 468.3L930.2 456.8L935.8 463.4ZM926.5 461.7L921 455.1L924.7 450.2ZM926.5 461.7L924.7 450.2L930.2 456.8Z"/>
<path class="g" d="M930.1 484.9L913.5 465L924.7 450.2L941.4 470Z"/>
<path fill="#ffd900" stroke="#ffd900" stroke-width=".5" d="M800.3 398.3L795.7 397.6L799.9 394ZM800.3 398.3L799.9 394L804.4 394.6ZM795.7 397.6L791.3 397L795.4 393.4ZM795.7 397.6L795.4 393.4L799.9 394ZM791.3 397L786.9 396.3L790.9 392.8ZM791.3 397L790.9 392.8L795.4 393.4ZM804.4 394.6L799.9 394L803.9 390.4ZM804.4 394.6L803.9 390.4L808.6 391ZM799.9 394L795.4 393.4L799.4 389.8ZM799.9 394L799.4 389.8L803.9 390.4ZM795.4 393.4L790.9 392.8L795 389.3ZM795.4 393.4L795 389.3L799.4 389.8ZM808.6 391L803.9 390.4L808 386.8ZM808.6 391L808 386.8L812.6 387.3ZM803.9 390.4L799.4 389.8L803.5 386.3ZM803.9 390.4L803.5 386.3L808 386.8ZM799.4 389.8L795 389.3L799 385.8ZM799.4 389.8L799 385.8L803.5 386.3Z"/>
<path class="g" d="M800.3 398.3L786.9 396.3L799 385.8L812.6 387.3Z"/>
<path fill="#fff200" stroke="#fff200" stroke-width=".5" d="M789.6 425.6L785 423.8L788.6 415.1ZM789.6 425.6L788.6 415.1L793.1 416.6ZM785 423.8L780.6 421.9L784.1 413.6ZM785 423.8L784.1 413.6L788.6 415.1ZM780.6 421.9L776.2 420.1L779.7 412.2ZM780.6 421.9L779.7 412.2L784.1 413.6ZM793.1 416.6L788.6 415.1L789.8 412.1L793 414.8ZM793.1 416.6L793 414.8L793.6 415.4ZM788.6 415.1L784.1 413.6L786.2 408.7L788.2 410.5ZM788.6 415.1L788.2 410.5L789.8 412.1ZM784.1 413.6L779.7 412.2L782.8 405.4L783.4 406ZM784.1 413.6L783.4 406L786.2 408.7Z"/>
<path fill="#ffd900" stroke="#ffd900" stroke-width=".5" d="M789.8 412.1L792.1 406.4L793 414.8ZM793 414.8L792.1 406.4L796.7 407.5L793.6 415.4ZM786.2 408.7L787.7 405.3L788.2 410.5ZM788.2 410.5L787.7 405.3L792.1 406.4L789.8 412.1ZM782.8 405.4L783.3 404.3L783.4 406ZM783.4 406L783.3 404.3L787.7 405.3L786.2 408.7ZM796.7 407.5L792.1 406.4L795.7 397.6ZM796.7 407.5L795.7 397.6L800.3 398.3ZM792.1 406.4L787.7 405.3L791.3 397ZM792.1 406.4L791.3 397L795.7 397.6ZM787.7 405.3L783.3 404.3L786.9 396.3ZM787.7 405.3L786.9 396.3L791.3 397Z"/>
<path class="g" d="M789.6 425.6L776.2 420.1L786.9 396.3L800.3 398.3Z"/>
<path fill="#ffc000" stroke="#ffc000" stroke-width=".5" d="M891.6 359L886.1 356.3L890 354.3ZM891.6 359L890 354.3L895.5 357.1ZM886.1 356.3L880.8 353.6L884.7 351.5ZM886.1 356.3L884.7 351.5L890 354.3ZM880.8 353.6L875.5 351L879.4 348.8ZM880.8 353.6L879.4 348.8L884.7 351.5ZM895.5 357.1L890 354.3L893.9 352.3ZM895.5 357.1L893.9 352.3L899.4 355.2ZM890 354.3L884.7 351.5L888.5 349.4ZM890 354.3L888.5 349.4L893.9 352.3ZM884.7 351.5L879.4 348.8L883.2 346.6ZM884.7 351.5L883.2 346.6L888.5 349.4ZM899.4 355.2L893.9 352.3L897.7 350.3ZM899.4 355.2L897.7 350.3L903.2 353.3ZM893.9 352.3L888.5 349.4L892.4 347.3ZM893.9 352.3L892.4 347.3L897.7 350.3ZM888.5 349.4L883.2 346.6L887.1 344.4ZM888.5 349.4L887.1 344.4L892.4 347.3Z"/>
<path class="g" d="M891.6 359L875.5 351L887.1 344.4L903.2 353.3Z"/>
<path fill="#00ff00" stroke="#00ff00" stroke-width=".5" d="M968.1 604.1L962.9 590.5L966.7 588.9ZM968.1 604.1L966.7 588.9L967.4 588.5L971.7 600.2ZM971.7 600.2L967.4 588.5L970.6 587.1ZM971.7 600.2L970.6 587.1L971.7 586.4L975.3 596.4ZM975.3 596.4L971.7 586.4L974.3 585.2ZM975.3 596.4L974.3 585.2L976 584.4L978.8 592.6Z"/>
<path fill="#39ff00" stroke="#39ff00" stroke-width=".5" d="M962.9 590.5L962.8 590.2L966.5 586L966.7 588.9ZM966.7 588.9L966.5 586L967.4 588.5ZM962.8 590.2L957.5 576.2L961.2 571.6ZM962.8 590.2L961.2 571.6L966.5 586ZM957.5 576.2L952.1 562.1L954.7 558.7L956 558.3ZM957.5 576.2L956 558.3L956.3 558.2L961.2 571.6ZM967.4 588.5L966.5 586L970.1 581.8L970.6 587.1ZM970.6 587.1L970.1 581.8L971.7 586.4ZM966.5 586L961.2 571.6L964.9 567.1ZM966.5 586L964.9 567.1L970.1 581.8ZM961.2 571.6L956.3 558.2L960 557ZM961.2 571.6L960 557L961.2 556.5L964.9 567.1ZM971.7 586.4L970.1 581.8L973.7 577.6L974.3 585.2ZM974.3 585.2L973.7 577.6L976 584.4ZM970.1 581.8L964.9 567.1L968.5 562.5ZM970.1 581.8L968.5 562.5L973.7 577.6ZM964.9 567.1L961.2 556.5L964 555.6ZM964.9 567.1L964 555.6L965.9 554.8L968.5 562.5Z"/>
<path fill="#72ff00" stroke="#72ff00" stroke-width=".5" d="M954.7 558.7L955.9 557.2L956 558.3ZM956 558.3L955.9 557.2L956.3 558.2ZM956.3 558.2L955.9 557.2L959.6 552.2L960 557ZM960 557L959.6 552.2L961.2 556.5ZM961.2 556.5L959.6 552.2L963.3 547.2L964 555.6ZM964 555.6L963.3 547.2L965.9 554.8Z"/>
<path class="g" d="M968.1 604.1L952.1 562.1L963.3 547.2L978.8 592.6Z"/>
<path fill="#fff200" stroke="#fff200" stroke-width=".5" d="M935.9 432L930.7 411.4L931.8 409.7L934.7 408.9ZM935.9 432L934.7 408.9L935.3 408.8L939.7 424.9ZM930.7 411.4L930.4 410L930.6 409.9ZM930.7 411.4L930.6 409.9L931.8 409.7ZM939.7 424.9L935.3 408.8L938.7 408ZM939.7 424.9L938.7 408L940.5 407.8L943.5 417.7ZM943.5 417.7L940.5 407.8L942.8 407.3ZM943.5 417.7L942.8 407.3L946.1 406.9L947.3 410.5Z"/>
<path fill="#ffd900" stroke="#ffd900" stroke-width=".5" d="M931.8 409.7L934.5 405.6L934.7 408.9ZM934.7 408.9L934.5 405.6L935.3 408.8ZM930.4 410L925.4 390.2L929.2 386.1L930.6 409.9ZM930.6 409.9L929.2 386.1L934.5 405.6L931.8 409.7ZM925.4 390.2L922.8 379.9L924.6 379.1ZM925.4 390.2L924.6 379.1L927.1 378.4L929.2 386.1ZM935.3 408.8L934.5 405.6L938.2 399.9L938.7 408ZM938.7 408L938.2 399.9L940.5 407.8ZM934.5 405.6L929.2 386.1L932.9 381.9ZM934.5 405.6L932.9 381.9L938.2 399.9ZM929.2 386.1L927.1 378.4L928.6 377.8ZM929.2 386.1L928.6 377.8L931.5 377L932.9 381.9ZM940.5 407.8L938.2 399.9L942 394.2L942.8 407.3ZM942.8 407.3L942 394.2L946.1 406.9ZM938.2 399.9L932.9 381.9L936.7 377.7ZM938.2 399.9L936.7 377.7L942 394.2ZM932.9 381.9L931.5 377L932.5 376.5ZM932.9 381.9L932.5 376.5L936 375.6L936.7 377.7Z"/>
<path fill="#ffc000" stroke="#ffc000" stroke-width=".5" d="M922.8 379.9L919.9 368.7L923.7 366.1L924.6 379.1ZM924.6 379.1L923.7 366.1L927.1 378.4ZM927.1 378.4L923.7 366.1L927.5 363.6L928.6 377.8ZM928.6 377.8L927.5 363.6L931.5 377ZM931.5 377L927.5 363.6L931.3 361.1L932.5 376.5ZM932.5 376.5L931.3 361.1L936 375.6Z"/>
<path class="g" d="M935.9 432L919.9 368.7L931.3 361.1L947.3 410.5Z"/>
<path fill="#aaff00" stroke="#aaff00" stroke-width=".5" d="M918.7 501.9L913.2 494L917 488.7ZM918.7 501.9L917 488.7L922.5 496.2ZM913.2 494L907.6 486.2L910.1 483.1L911.7 483ZM913.2 494L911.7 483L912.8 483.1L917 488.7ZM907.6 486.2L905.5 483.1L907.2 483ZM907.6 486.2L907.2 483L910.1 483.1ZM922.5 496.2L917 488.7L920.7 483.5L920.8 483.5ZM922.5 496.2L920.8 483.5L920.8 483.5L926.3 490.6ZM917 488.7L912.8 483.1L916.2 483.1ZM917 488.7L916.2 483.1L920.7 483.5ZM926.3 490.6L920.8 483.5L925.4 483.9ZM926.3 490.6L925.4 483.9L929.8 484.5L930.1 484.9Z"/>
<path fill="#e3ff00" stroke="#e3ff00" stroke-width=".5" d="M910.1 483.1L911.4 481.3L911.7 483ZM911.7 483L911.4 481.3L912.8 483.1ZM905.5 483.1L902.1 478.4L905.9 473.9L907.2 483ZM907.2 483L905.9 473.9L911.4 481.3L910.1 483.1ZM920.7 483.5L920.8 483.5L920.8 483.5ZM920.8 483.5L920.8 483.5L920.8 483.5ZM912.8 483.1L911.4 481.3L915.2 476.4L916.2 483.1ZM916.2 483.1L915.2 476.4L920.8 483.5L920.7 483.5ZM911.4 481.3L905.9 473.9L909.7 469.4ZM911.4 481.3L909.7 469.4L915.2 476.4ZM920.8 483.5L920.8 483.5L924.5 478.2L925.4 483.9ZM925.4 483.9L924.5 478.2L929.8 484.5ZM920.8 483.5L915.2 476.4L919 471.6ZM920.8 483.5L919 471.6L924.5 478.2ZM915.2 476.4L909.7 469.4L913.5 465ZM915.2 476.4L913.5 465L919 471.6Z"/>
<path class="g" d="M918.7 501.9L902.1 478.4L913.5 465L930.1 484.9Z"/>
<path fill="#72ff00" stroke="#72ff00" stroke-width=".5" d="M963.3 547.2L957.8 536.1L961.5 531.5ZM963.3 547.2L961.5 531.5L967 542.4ZM957.8 536.1L952.3 525.1L956 520.7ZM957.8 536.1L956 520.7L961.5 531.5ZM952.3 525.1L950.5 521.4L951.9 521ZM952.3 525.1L951.9 521L955.7 520L956 520.7ZM967 542.4L961.5 531.5L965.2 526.9ZM967 542.4L965.2 526.9L970.7 537.6ZM961.5 531.5L956 520.7L956.8 519.7L960 518.9ZM961.5 531.5L960 518.9L961 518.7L965.2 526.9ZM956 520.7L955.7 520L956 519.9ZM956 520.7L956 519.9L956.8 519.7ZM970.7 537.6L965.2 526.9L968.9 522.3ZM970.7 537.6L968.9 522.3L974.4 532.8ZM965.2 526.9L961 518.7L964.1 517.9ZM965.2 526.9L964.1 517.9L966.3 517.5L968.9 522.3Z"/>
<path fill="#aaff00" stroke="#aaff00" stroke-width=".5" d="M950.5 521.4L946.8 514L950.5 509.8L951.9 521ZM951.9 521L950.5 509.8L955.7 520ZM956.8 519.7L959.7 516.3L960 518.9ZM960 518.9L959.7 516.3L961 518.7ZM955.7 520L950.5 509.8L954.2 505.6L956 519.9ZM956 519.9L954.2 505.6L959.7 516.3L956.8 519.7ZM961 518.7L959.7 516.3L963.4 511.9L964.1 517.9ZM964.1 517.9L963.4 511.9L966.3 517.5ZM959.7 516.3L954.2 505.6L957.9 501.5ZM959.7 516.3L957.9 501.5L963.4 511.9Z"/>
<path class="g" d="M963.3 547.2L946.8 514L957.9 501.5L974.4 532.8Z"/>
<path fill="#aaff00" stroke="#aaff00" stroke-width=".5" d="M946.8 514L941.3 504.3L945 499.8ZM946.8 514L945 499.8L950.5 509.8ZM941.3 504.3L935.7 494.6L939.4 489.9ZM941.3 504.3L939.4 489.9L945 499.8ZM935.7 494.6L930.1 484.9L930.4 484.6L934.4 484.1ZM935.7 494.6L934.4 484.1L936.1 483.9L939.4 489.9ZM950.5 509.8L945 499.8L948.7 495.4ZM950.5 509.8L948.7 495.4L954.2 505.6ZM945 499.8L939.4 489.9L943.2 485.2ZM945 499.8L943.2 485.2L948.7 495.4ZM939.4 489.9L936.1 483.9L938.7 483.6ZM939.4 489.9L938.7 483.6L942 483L943.2 485.2ZM954.2 505.6L948.7 495.4L952.4 491ZM954.2 505.6L952.4 491L957.9 501.5ZM948.7 495.4L943.2 485.2L945.3 482.5L947.1 482.2ZM948.7 495.4L947.1 482.2L947.7 482.1L952.4 491ZM943.2 485.2L942 483L942.9 482.9ZM943.2 485.2L942.9 482.9L945.3 482.5Z"/>
<path fill="#e3ff00" stroke="#e3ff00" stroke-width=".5" d="M930.4 484.6L933.9 479.9L934.4 484.1ZM934.4 484.1L933.9 479.9L936.1 483.9ZM936.1 483.9L933.9 479.9L937.7 475L938.7 483.6ZM938.7 483.6L937.7 475L942 483ZM945.3 482.5L946.9 480.5L947.1 482.2ZM947.1 482.2L946.9 480.5L947.7 482.1ZM942 483L937.7 475L941.4 470L942.9 482.9ZM942.9 482.9L941.4 470L946.9 480.5L945.3 482.5Z"/>
<path class="g" d="M946.8 514L930.1 484.9L941.4 470L957.9 501.5Z"/>
<path fill="#00ff00" stroke="#00ff00" stroke-width=".5" d="M986.1 618.5L980 613.6L983.6 609.6ZM986.1 618.5L983.6 609.6L989.7 614.4ZM980 613.6L974 608.8L977.6 604.9ZM980 613.6L977.6 604.9L983.6 609.6ZM974 608.8L968.1 604.1L971.7 600.2ZM974 608.8L971.7 600.2L977.6 604.9ZM989.7 614.4L983.6 609.6L987.2 605.6ZM989.7 614.4L987.2 605.6L993.3 610.2ZM983.6 609.6L977.6 604.9L981.2 601ZM983.6 609.6L981.2 601L987.2 605.6ZM977.6 604.9L971.7 600.2L975.3 596.4ZM977.6 604.9L975.3 596.4L981.2 601ZM993.3 610.2L987.2 605.6L990.8 601.6ZM993.3 610.2L990.8 601.6L996.9 606.2ZM987.2 605.6L981.2 601L984.7 597.1ZM987.2 605.6L984.7 597.1L990.8 601.6ZM981.2 601L975.3 596.4L978.8 592.6ZM981.2 601L978.8 592.6L984.7 597.1Z"/>
<path class="g" d="M986.1 618.5L968.1 604.1L978.8 592.6L996.9 606.2Z"/>
<path fill="#ffc000" stroke="#ffc000" stroke-width=".5" d="M851.5 365L846.4 363.3L850.4 359.8ZM851.5 365L850.4 359.8L855.5 362ZM846.4 363.3L841.3 361.6L845.3 357.6ZM846.4 363.3L845.3 357.6L850.4 359.8ZM841.3 361.6L836.4 360L840.3 355.5ZM841.3 361.6L840.3 355.5L845.3 357.6ZM855.5 362L850.4 359.8L854.3 356.3ZM855.5 362L854.3 356.3L859.5 359ZM850.4 359.8L845.3 357.6L849.2 353.6ZM850.4 359.8L849.2 353.6L854.3 356.3ZM845.3 357.6L840.3 355.5L844.2 351ZM845.3 357.6L844.2 351L849.2 353.6ZM859.5 359L854.3 356.3L858.3 352.8ZM859.5 359L858.3 352.8L863.5 356ZM854.3 356.3L849.2 353.6L853.1 349.6ZM854.3 356.3L853.1 349.6L858.3 352.8ZM849.2 353.6L844.2 351L848 346.5ZM849.2 353.6L848 346.5L853.1 349.6Z"/>
<path class="g" d="M851.5 365L836.4 360L848 346.5L863.5 356Z"/>
<path fill="#ffc000" stroke="#ffc000" stroke-width=".5" d="M919.9 368.7L914.3 363.5L918.1 361.2ZM919.9 368.7L918.1 361.2L923.7 366.1ZM914.3 363.5L908.7 358.4L912.5 356.3ZM914.3 363.5L912.5 356.3L918.1 361.2ZM908.7 358.4L903.2 353.3L907 351.4ZM908.7 358.4L907 351.4L912.5 356.3ZM923.7 366.1L918.1 361.2L921.9 358.8ZM923.7 366.1L921.9 358.8L927.5 363.6ZM918.1 361.2L912.5 356.3L916.3 354.1ZM918.1 361.2L916.3 354.1L921.9 358.8ZM912.5 356.3L907 351.4L910.8 349.5ZM912.5 356.3L910.8 349.5L916.3 354.1ZM927.5 363.6L921.9 358.8L925.6 356.5ZM927.5 363.6L925.6 356.5L931.3 361.1ZM921.9 358.8L916.3 354.1L920.1 352ZM921.9 358.8L920.1 352L925.6 356.5ZM916.3 354.1L910.8 349.5L914.6 347.6ZM916.3 354.1L914.6 347.6L920.1 352Z"/>
<path class="g" d="M919.9 368.7L903.2 353.3L914.6 347.6L931.3 361.1Z"/>
<path fill="#e3ff00" stroke="#e3ff00" stroke-width=".5" d="M924.7 450.2L923.2 443.3L924.3 442.9ZM924.7 450.2L924.3 442.9L927.9 441.9L928.5 444.2ZM928.5 444.2L927.9 441.9L928.3 441.8ZM928.5 444.2L928.3 441.8L930.3 441.3Z"/>
<path fill="#fff200" stroke="#fff200" stroke-width=".5" d="M923.2 443.3L919.4 426.3L923.2 421.3L924.3 442.9ZM924.3 442.9L923.2 421.3L927.9 441.9ZM919.4 426.3L916.8 414.4L918.7 413.7ZM919.4 426.3L918.7 413.7L921.3 412.9L923.2 421.3ZM927.9 441.9L923.2 421.3L927 416.3L928.3 441.8ZM928.3 441.8L927 416.3L932.2 438.1L930.3 441.3ZM923.2 421.3L921.3 412.9L922.7 412.4ZM923.2 421.3L922.7 412.4L925.8 411.4L927 416.3ZM932.2 438.1L927 416.3L930.7 411.4ZM932.2 438.1L930.7 411.4L935.9 432ZM927 416.3L925.8 411.4L926.6 411.1ZM927 416.3L926.6 411.1L930.4 410L930.7 411.4Z"/>
<path fill="#ffd900" stroke="#ffd900" stroke-width=".5" d="M916.8 414.4L913.9 401.7L917.8 397.8L918.7 413.7ZM918.7 413.7L917.8 397.8L921.3 412.9ZM913.9 401.7L910.2 384.6L912.8 383.5ZM913.9 401.7L912.8 383.5L914.4 383L917.8 397.8ZM921.3 412.9L917.8 397.8L921.6 394L922.7 412.4ZM922.7 412.4L921.6 394L925.8 411.4ZM917.8 397.8L914.4 383L916.8 382ZM917.8 397.8L916.8 382L918.5 381.4L921.6 394ZM925.8 411.4L921.6 394L925.4 390.2L926.6 411.1ZM926.6 411.1L925.4 390.2L930.4 410ZM921.6 394L918.5 381.4L920.7 380.5ZM921.6 394L920.7 380.5L922.8 379.9L925.4 390.2Z"/>
<path fill="#ffc000" stroke="#ffc000" stroke-width=".5" d="M910.2 384.6L908.3 376.4L912.2 373.8L912.8 383.5ZM912.8 383.5L912.2 373.8L914.4 383ZM914.4 383L912.2 373.8L916.1 371.2L916.8 382ZM916.8 382L916.1 371.2L918.5 381.4ZM918.5 381.4L916.1 371.2L919.9 368.7L920.7 380.5ZM920.7 380.5L919.9 368.7L922.8 379.9Z"/>
<path class="g" d="M924.7 450.2L908.3 376.4L919.9 368.7L935.9 432Z"/>
<path fill="#aaff00" stroke="#aaff00" stroke-width=".5" d="M907.3 519.4L901.7 510.3L905.5 504.9ZM907.3 519.4L905.5 504.9L911.1 513.6ZM901.7 510.3L896.2 501.2L900 496.2ZM901.7 510.3L900 496.2L905.5 504.9ZM896.2 501.2L890.6 492.1L894.5 487.5ZM896.2 501.2L894.5 487.5L900 496.2ZM911.1 513.6L905.5 504.9L909.4 499.4ZM911.1 513.6L909.4 499.4L914.9 507.7ZM905.5 504.9L900 496.2L903.8 491.2ZM905.5 504.9L903.8 491.2L909.4 499.4ZM900 496.2L894.5 487.5L897.8 483.5L898.4 483.5ZM900 496.2L898.4 483.5L898.7 483.4L903.8 491.2ZM914.9 507.7L909.4 499.4L913.2 494ZM914.9 507.7L913.2 494L918.7 501.9ZM909.4 499.4L903.8 491.2L907.6 486.2ZM909.4 499.4L907.6 486.2L913.2 494ZM903.8 491.2L898.7 483.4L902.8 483.1ZM903.8 491.2L902.8 483.1L905.5 483.1L907.6 486.2Z"/>
<path fill="#e3ff00" stroke="#e3ff00" stroke-width=".5" d="M897.8 483.5L898.3 482.9L898.4 483.5ZM898.4 483.5L898.3 482.9L898.7 483.4ZM898.7 483.4L898.3 482.9L902.1 478.4L902.8 483.1ZM902.8 483.1L902.1 478.4L905.5 483.1Z"/>
<path class="g" d="M907.3 519.4L890.6 492.1L902.1 478.4L918.7 501.9Z"/>
<path fill="#aaff00" stroke="#aaff00" stroke-width=".5" d="M780.3 488.3L778.1 488.8L779 485.8ZM778.1 488.8L774.1 489.6L776.1 481.5L777.7 484ZM778.1 488.8L777.7 484L779 485.8ZM774.1 489.6L770.2 490.5L772.7 477.6L773 478ZM774.1 489.6L773 478L776.1 481.5Z"/>
<path fill="#e3ff00" stroke="#e3ff00" stroke-width=".5" d="M782.2 487.9L780.3 488.3L779 485.8L781.4 478.3ZM782.2 487.9L781.4 478.3L785.8 479.1ZM776.1 481.5L777.1 477.5L777.7 484ZM777.7 484L777.1 477.5L781.4 478.3L779 485.8ZM772.7 477.6L772.9 476.7L773 478ZM773 478L772.9 476.7L777.1 477.5L776.1 481.5ZM785.8 479.1L781.4 478.3L784.7 467.7ZM785.8 479.1L784.7 467.7L789.4 470.2ZM781.4 478.3L777.1 477.5L780.2 465.2ZM781.4 478.3L780.2 465.2L784.7 467.7ZM777.1 477.5L772.9 476.7L775.7 462.7ZM777.1 477.5L775.7 462.7L780.2 465.2ZM789.4 470.2L784.7 467.7L788.1 457ZM789.4 470.2L788.1 457L793 461.3ZM784.7 467.7L780.2 465.2L783.3 452.7ZM784.7 467.7L783.3 452.7L788.1 457ZM780.2 465.2L775.7 462.7L778.4 449L778.5 449.1ZM780.2 465.2L778.5 449.1L780.5 450.3L783.3 452.7Z"/>
<path fill="#fff200" stroke="#fff200" stroke-width=".5" d="M778.4 449L778.5 448.5L778.5 449.1ZM778.5 449.1L778.5 448.5L780.5 450.3Z"/>
<path class="g" d="M782.2 487.9L770.2 490.5L778.5 448.5L793 461.3Z"/>
<path fill="#72ff00" stroke="#72ff00" stroke-width=".5" d="M935.5 529.7L931.8 523.6L934.7 523.4ZM935.5 529.7L934.7 523.4L938.5 523.1L939.3 524.5ZM939.3 524.5L938.5 523.1L939.1 523.1ZM939.3 524.5L939.1 523.1L940.3 523Z"/>
<path fill="#aaff00" stroke="#aaff00" stroke-width=".5" d="M931.8 523.6L929.9 520.4L933.7 515L934.7 523.4ZM934.7 523.4L933.7 515L938.5 523.1ZM929.9 520.4L924.3 511.2L928.1 505.6ZM929.9 520.4L928.1 505.6L933.7 515ZM924.3 511.2L918.7 501.9L922.5 496.2ZM924.3 511.2L922.5 496.2L928.1 505.6ZM938.5 523.1L933.7 515L937.5 509.6L939.1 523.1ZM939.1 523.1L937.5 509.6L943.1 519.2L940.3 523ZM933.7 515L928.1 505.6L931.9 500.1ZM933.7 515L931.9 500.1L937.5 509.6ZM928.1 505.6L922.5 496.2L926.3 490.6ZM928.1 505.6L926.3 490.6L931.9 500.1ZM943.1 519.2L937.5 509.6L941.3 504.3ZM943.1 519.2L941.3 504.3L946.8 514ZM937.5 509.6L931.9 500.1L935.7 494.6ZM937.5 509.6L935.7 494.6L941.3 504.3ZM931.9 500.1L926.3 490.6L930.1 484.9ZM931.9 500.1L930.1 484.9L935.7 494.6Z"/>
<path class="g" d="M935.5 529.7L918.7 501.9L930.1 484.9L946.8 514Z"/>
<path fill="#39ff00" stroke="#39ff00" stroke-width=".5" d="M952.1 562.1L950.8 559.5L951.8 559.3ZM952.1 562.1L951.8 559.3L954.7 558.7Z"/>
<path fill="#72ff00" stroke="#72ff00" stroke-width=".5" d="M950.8 559.5L946.6 551.4L950.4 546.3L951.8 559.3ZM951.8 559.3L950.4 546.3L955.9 557.2L954.7 558.7ZM946.6 551.4L941 540.6L944.8 535.4ZM946.6 551.4L944.8 535.4L950.4 546.3ZM941 540.6L935.5 529.7L939.3 524.5ZM941 540.6L939.3 524.5L944.8 535.4ZM955.9 557.2L950.4 546.3L954.1 541.2ZM955.9 557.2L954.1 541.2L959.6 552.2ZM950.4 546.3L944.8 535.4L948.6 530.2ZM950.4 546.3L948.6 530.2L954.1 541.2ZM944.8 535.4L939.3 524.5L940.3 523L943.4 522.5ZM944.8 535.4L943.4 522.5L944.6 522.3L948.6 530.2ZM959.6 552.2L954.1 541.2L957.8 536.1ZM959.6 552.2L957.8 536.1L963.3 547.2ZM954.1 541.2L948.6 530.2L952.3 525.1ZM954.1 541.2L952.3 525.1L957.8 536.1ZM948.6 530.2L944.6 522.3L947.7 521.8ZM948.6 530.2L947.7 521.8L950.5 521.4L952.3 525.1Z"/>
<path fill="#aaff00" stroke="#aaff00" stroke-width=".5" d="M940.3 523L943.1 519.2L943.4 522.5ZM943.4 522.5L943.1 519.2L944.6 522.3ZM944.6 522.3L943.1 519.2L946.8 514L947.7 521.8ZM947.7 521.8L946.8 514L950.5 521.4Z"/>
<path class="g" d="M952.1 562.1L935.5 529.7L946.8 514L963.3 547.2Z"/>
<path fill="#00ff00" stroke="#00ff00" stroke-width=".5" d="M957.3 614.6L951.8 601.5L955.5 597.7ZM957.3 614.6L955.5 597.7L960.9 611ZM951.8 601.5L950 597.1L951.3 596.5ZM951.8 601.5L951.3 596.5L954.4 594.9L955.5 597.7ZM960.9 611L955.5 597.7L959.2 594ZM960.9 611L959.2 594L964.5 607.5ZM955.5 597.7L954.4 594.9L955.2 594.6ZM955.5 597.7L955.2 594.6L958.7 592.8L959.2 594ZM964.5 607.5L959.2 594L962.1 591L962.9 590.6ZM964.5 607.5L962.9 590.6L962.9 590.5L968.1 604.1ZM959.2 594L958.7 592.8L959.1 592.6ZM959.2 594L959.1 592.6L962.1 591Z"/>
<path fill="#39ff00" stroke="#39ff00" stroke-width=".5" d="M950 597.1L946.4 588.4L950.1 584.3L951.3 596.5ZM951.3 596.5L950.1 584.3L954.4 594.9ZM946.4 588.4L940.9 575.3L944.7 570.9ZM946.4 588.4L944.7 570.9L950.1 584.3ZM954.4 594.9L950.1 584.3L953.8 580.3L955.2 594.6ZM955.2 594.6L953.8 580.3L958.7 592.8ZM950.1 584.3L944.7 570.9L948.4 566.5ZM950.1 584.3L948.4 566.5L953.8 580.3ZM962.1 591L962.8 590.2L962.9 590.6ZM962.9 590.6L962.8 590.2L962.9 590.5ZM958.7 592.8L953.8 580.3L957.5 576.2L959.1 592.6ZM959.1 592.6L957.5 576.2L962.8 590.2L962.1 591ZM953.8 580.3L948.4 566.5L952.1 562.1ZM953.8 580.3L952.1 562.1L957.5 576.2Z"/>
<path class="g" d="M957.3 614.6L940.9 575.3L952.1 562.1L968.1 604.1Z"/>
<path fill="#72ff00" stroke="#72ff00" stroke-width=".5" d="M895.7 538.3L890.2 527.9L892.8 523.8L894.2 523.8ZM895.7 538.3L894.2 523.8L895 523.7L899.6 532ZM890.2 527.9L888.2 524.2L889.8 524ZM890.2 527.9L889.8 524L892.8 523.8ZM899.6 532L895 523.7L898.7 523.6ZM899.6 532L898.7 523.6L902.2 523.6L903.4 525.7ZM903.4 525.7L902.2 523.6L903.2 523.6ZM903.4 525.7L903.2 523.6L904.7 523.6Z"/>
<path fill="#aaff00" stroke="#aaff00" stroke-width=".5" d="M892.8 523.8L894 522L894.2 523.8ZM894.2 523.8L894 522L895 523.7ZM888.2 524.2L884.6 517.4L888.5 512L889.8 524ZM889.8 524L888.5 512L894 522L892.8 523.8ZM884.6 517.4L879 507L882.9 502ZM884.6 517.4L882.9 502L888.5 512ZM895 523.7L894 522L897.9 516.2L898.7 523.6ZM898.7 523.6L897.9 516.2L902.2 523.6ZM894 522L888.5 512L892.3 506.6ZM894 522L892.3 506.6L897.9 516.2ZM888.5 512L882.9 502L886.8 497ZM888.5 512L886.8 497L892.3 506.6ZM902.2 523.6L897.9 516.2L901.7 510.3L903.2 523.6ZM903.2 523.6L901.7 510.3L907.3 519.4L904.7 523.6ZM897.9 516.2L892.3 506.6L896.2 501.2ZM897.9 516.2L896.2 501.2L901.7 510.3ZM892.3 506.6L886.8 497L890.6 492.1ZM892.3 506.6L890.6 492.1L896.2 501.2Z"/>
<path class="g" d="M895.7 538.3L879 507L890.6 492.1L907.3 519.4Z"/>
<path fill="#ffc000" stroke="#ffc000" stroke-width=".5" d="M839.2 374.8L834.2 374.3L838.3 370.6ZM839.2 374.8L838.3 370.6L843.3 371.5ZM834.2 374.3L829.4 373.9L833.4 369.8ZM834.2 374.3L833.4 369.8L838.3 370.6ZM829.4 373.9L824.6 373.5L828.5 369ZM829.4 373.9L828.5 369L833.4 369.8ZM843.3 371.5L838.3 370.6L842.3 367ZM843.3 371.5L842.3 367L847.4 368.3ZM838.3 370.6L833.4 369.8L837.4 365.7ZM838.3 370.6L837.4 365.7L842.3 367ZM833.4 369.8L828.5 369L832.5 364.5ZM833.4 369.8L832.5 364.5L837.4 365.7ZM847.4 368.3L842.3 367L846.4 363.3ZM847.4 368.3L846.4 363.3L851.5 365ZM842.3 367L837.4 365.7L841.3 361.6ZM842.3 367L841.3 361.6L846.4 363.3ZM837.4 365.7L832.5 364.5L836.4 360ZM837.4 365.7L836.4 360L841.3 361.6Z"/>
<path class="g" d="M839.2 374.8L824.6 373.5L836.4 360L851.5 365Z"/>
<path fill="#72ff00" stroke="#72ff00" stroke-width=".5" d="M924 547L918.4 537.8L922.2 532ZM924 547L922.2 532L927.8 541.2ZM918.4 537.8L912.8 528.6L916 523.8L916.8 523.8ZM918.4 537.8L916.8 523.8L917.3 523.8L922.2 532ZM912.8 528.6L909.9 523.8L912.3 523.8ZM912.8 528.6L912.3 523.8L916 523.8ZM927.8 541.2L922.2 532L926.1 526.2ZM927.8 541.2L926.1 526.2L931.7 535.5ZM922.2 532L917.3 523.8L921.3 523.8ZM922.2 532L921.3 523.8L924.6 523.7L926.1 526.2ZM931.7 535.5L926.1 526.2L927.8 523.7L930.3 523.6ZM931.7 535.5L930.3 523.6L931.8 523.6L935.5 529.7ZM926.1 526.2L924.6 523.7L925.8 523.7ZM926.1 526.2L925.8 523.7L927.8 523.7Z"/>
<path fill="#aaff00" stroke="#aaff00" stroke-width=".5" d="M916 523.8L916.7 522.8L916.8 523.8ZM916.8 523.8L916.7 522.8L917.3 523.8ZM909.9 523.8L907.3 519.4L911.1 513.6L912.3 523.8ZM912.3 523.8L911.1 513.6L916.7 522.8L916 523.8ZM917.3 523.8L916.7 522.8L920.5 517L921.3 523.8ZM921.3 523.8L920.5 517L924.6 523.7ZM916.7 522.8L911.1 513.6L914.9 507.7ZM916.7 522.8L914.9 507.7L920.5 517ZM927.8 523.7L929.9 520.4L930.3 523.6ZM930.3 523.6L929.9 520.4L931.8 523.6ZM924.6 523.7L920.5 517L924.3 511.2L925.8 523.7ZM925.8 523.7L924.3 511.2L929.9 520.4L927.8 523.7ZM920.5 517L914.9 507.7L918.7 501.9ZM920.5 517L918.7 501.9L924.3 511.2Z"/>
<path class="g" d="M924 547L907.3 519.4L918.7 501.9L935.5 529.7Z"/>
<path fill="#ffc000" stroke="#ffc000" stroke-width=".5" d="M879.6 365.6L874.2 362.4L878.2 360.3ZM879.6 365.6L878.2 360.3L883.6 363.4ZM874.2 362.4L868.8 359.2L872.8 357.3ZM874.2 362.4L872.8 357.3L878.2 360.3ZM868.8 359.2L863.5 356L867.5 354.3ZM868.8 359.2L867.5 354.3L872.8 357.3ZM883.6 363.4L878.2 360.3L882.2 358.3ZM883.6 363.4L882.2 358.3L887.6 361.2ZM878.2 360.3L872.8 357.3L876.8 355.5ZM878.2 360.3L876.8 355.5L882.2 358.3ZM872.8 357.3L867.5 354.3L871.5 352.7ZM872.8 357.3L871.5 352.7L876.8 355.5ZM887.6 361.2L882.2 358.3L886.1 356.3ZM887.6 361.2L886.1 356.3L891.6 359ZM882.2 358.3L876.8 355.5L880.8 353.6ZM882.2 358.3L880.8 353.6L886.1 356.3ZM876.8 355.5L871.5 352.7L875.5 351ZM876.8 355.5L875.5 351L880.8 353.6Z"/>
<path class="g" d="M879.6 365.6L863.5 356L875.5 351L891.6 359Z"/>
<path fill="#72ff00" stroke="#72ff00" stroke-width=".5" d="M884.2 557.1L878.6 545.9L882.5 539.9ZM884.2 557.1L882.5 539.9L888.1 550.8ZM878.6 545.9L873 534.6L876.9 528.9ZM878.6 545.9L876.9 528.9L882.5 539.9ZM873 534.6L868.7 526.1L872.1 525.7ZM873 534.6L872.1 525.7L875.1 525.4L876.9 528.9ZM888.1 550.8L882.5 539.9L886.3 533.9ZM888.1 550.8L886.3 533.9L891.9 544.6ZM882.5 539.9L876.9 528.9L879.6 524.9L880.9 524.7ZM882.5 539.9L880.9 524.7L881.5 524.7L886.3 533.9ZM876.9 528.9L875.1 525.4L876.5 525.2ZM876.9 528.9L876.5 525.2L879.6 524.9ZM891.9 544.6L886.3 533.9L890.2 527.9ZM891.9 544.6L890.2 527.9L895.7 538.3ZM886.3 533.9L881.5 524.7L885.3 524.3ZM886.3 533.9L885.3 524.3L888.2 524.2L890.2 527.9Z"/>
<path fill="#aaff00" stroke="#aaff00" stroke-width=".5" d="M868.7 526.1L867.4 523.4L871.3 517.9L872.1 525.7ZM872.1 525.7L871.3 517.9L875.1 525.4ZM879.6 524.9L880.7 523.2L880.9 524.7ZM880.9 524.7L880.7 523.2L881.5 524.7ZM875.1 525.4L871.3 517.9L875.1 512.4L876.5 525.2ZM876.5 525.2L875.1 512.4L880.7 523.2L879.6 524.9ZM881.5 524.7L880.7 523.2L884.6 517.4L885.3 524.3ZM885.3 524.3L884.6 517.4L888.2 524.2ZM880.7 523.2L875.1 512.4L879 507ZM880.7 523.2L879 507L884.6 517.4Z"/>
<path class="g" d="M884.2 557.1L867.4 523.4L879 507L895.7 538.3Z"/>
<path fill="#e3ff00" stroke="#e3ff00" stroke-width=".5" d="M913.5 465L909.9 448.2L912.5 447.2ZM913.5 465L912.5 447.2L914.3 446.5L917.2 460ZM917.2 460L914.3 446.5L916.5 445.7ZM917.2 460L916.5 445.7L918.8 444.9L921 455.1ZM921 455.1L918.8 444.9L920.4 444.3ZM921 455.1L920.4 444.3L923.2 443.3L924.7 450.2Z"/>
<path fill="#fff200" stroke="#fff200" stroke-width=".5" d="M909.9 448.2L908 439.1L911.8 434.8L912.5 447.2ZM912.5 447.2L911.8 434.8L914.3 446.5ZM908 439.1L903.8 419.4L906.8 418.2ZM908 439.1L906.8 418.2L908.1 417.7L911.8 434.8ZM914.3 446.5L911.8 434.8L915.6 430.5L916.5 445.7ZM916.5 445.7L915.6 430.5L918.8 444.9ZM911.8 434.8L908.1 417.7L910.8 416.7ZM911.8 434.8L910.8 416.7L912.5 416.1L915.6 430.5ZM918.8 444.9L915.6 430.5L919.4 426.3L920.4 444.3ZM920.4 444.3L919.4 426.3L923.2 443.3ZM915.6 430.5L912.5 416.1L914.7 415.2ZM915.6 430.5L914.7 415.2L916.8 414.4L919.4 426.3Z"/>
<path fill="#ffd900" stroke="#ffd900" stroke-width=".5" d="M903.8 419.4L902.3 412.4L906.2 408.8L906.8 418.2ZM906.8 418.2L906.2 408.8L908.1 417.7ZM902.3 412.4L897.5 389.7L900.8 388.3ZM902.3 412.4L900.8 388.3L901.7 388L906.2 408.8ZM908.1 417.7L906.2 408.8L910.1 405.2L910.8 416.7ZM910.8 416.7L910.1 405.2L912.5 416.1ZM906.2 408.8L901.7 388L904.9 386.7ZM906.2 408.8L904.9 386.7L906 386.3L910.1 405.2ZM912.5 416.1L910.1 405.2L913.9 401.7L914.7 415.2ZM914.7 415.2L913.9 401.7L916.8 414.4ZM910.1 405.2L906 386.3L908.9 385.1ZM910.1 405.2L908.9 385.1L910.2 384.6L913.9 401.7Z"/>
<path fill="#ffc000" stroke="#ffc000" stroke-width=".5" d="M897.5 389.7L896.5 384.9L900.5 382L900.8 388.3ZM900.8 388.3L900.5 382L901.7 388ZM901.7 388L900.5 382L904.4 379.2L904.9 386.7ZM904.9 386.7L904.4 379.2L906 386.3ZM906 386.3L904.4 379.2L908.3 376.4L908.9 385.1ZM908.9 385.1L908.3 376.4L910.2 384.6Z"/>
<path class="g" d="M913.5 465L896.5 384.9L908.3 376.4L924.7 450.2Z"/>
<path fill="#00ff00" stroke="#00ff00" stroke-width=".5" d="M975.2 629.1L969.2 624.2L972.8 620.6ZM975.2 629.1L972.8 620.6L978.9 625.6ZM969.2 624.2L963.2 619.3L966.8 615.8ZM969.2 624.2L966.8 615.8L972.8 620.6ZM963.2 619.3L957.3 614.6L960.9 611ZM963.2 619.3L960.9 611L966.8 615.8ZM978.9 625.6L972.8 620.6L976.4 617.1ZM978.9 625.6L976.4 617.1L982.5 622ZM972.8 620.6L966.8 615.8L970.4 612.3ZM972.8 620.6L970.4 612.3L976.4 617.1ZM966.8 615.8L960.9 611L964.5 607.5ZM966.8 615.8L964.5 607.5L970.4 612.3ZM982.5 622L976.4 617.1L980 613.6ZM982.5 622L980 613.6L986.1 618.5ZM976.4 617.1L970.4 612.3L974 608.8ZM976.4 617.1L974 608.8L980 613.6ZM970.4 612.3L964.5 607.5L968.1 604.1ZM970.4 612.3L968.1 604.1L974 608.8Z"/>
<path class="g" d="M975.2 629.1L957.3 614.6L968.1 604.1L986.1 618.5Z"/>
<path fill="#39ff00" stroke="#39ff00" stroke-width=".5" d="M940.9 575.3L935.2 565.8L938 562.3L939.2 562.1ZM940.9 575.3L939.2 562.1L939.6 562L944.7 570.9ZM935.2 565.8L933.6 563L934.9 562.9ZM935.2 565.8L934.9 562.9L938 562.3ZM944.7 570.9L939.6 562L943.5 561.4ZM944.7 570.9L943.5 561.4L945.4 560.8L948.4 566.5ZM948.4 566.5L945.4 560.8L947.7 560.4ZM948.4 566.5L947.7 560.4L950.8 559.5L952.1 562.1Z"/>
<path fill="#72ff00" stroke="#72ff00" stroke-width=".5" d="M938 562.3L939 561L939.2 562.1ZM939.2 562.1L939 561L939.6 562ZM933.6 563L929.6 556.4L933.4 551.1L934.9 562.9ZM934.9 562.9L933.4 551.1L939 561L938 562.3ZM929.6 556.4L924 547L927.8 541.2ZM929.6 556.4L927.8 541.2L933.4 551.1ZM939.6 562L939 561L942.8 556.2L943.5 561.4ZM943.5 561.4L942.8 556.2L945.4 560.8ZM939 561L933.4 551.1L937.2 545.8ZM939 561L937.2 545.8L942.8 556.2ZM933.4 551.1L927.8 541.2L931.7 535.5ZM933.4 551.1L931.7 535.5L937.2 545.8ZM945.4 560.8L942.8 556.2L946.6 551.4L947.7 560.4ZM947.7 560.4L946.6 551.4L950.8 559.5ZM942.8 556.2L937.2 545.8L941 540.6ZM942.8 556.2L941 540.6L946.6 551.4ZM937.2 545.8L931.7 535.5L935.5 529.7ZM937.2 545.8L935.5 529.7L941 540.6Z"/>
<path class="g" d="M940.9 575.3L924 547L935.5 529.7L952.1 562.1Z"/>
<path fill="#72ff00" stroke="#72ff00" stroke-width=".5" d="M912.5 562.3L906.9 554.2L910.7 548.7ZM912.5 562.3L910.7 548.7L916.3 557.1ZM906.9 554.2L901.3 546.3L905.1 540.4ZM906.9 554.2L905.1 540.4L910.7 548.7ZM901.3 546.3L895.7 538.3L899.6 532ZM901.3 546.3L899.6 532L905.1 540.4ZM916.3 557.1L910.7 548.7L914.6 543.2ZM916.3 557.1L914.6 543.2L920.2 552ZM910.7 548.7L905.1 540.4L909 534.5ZM910.7 548.7L909 534.5L914.6 543.2ZM905.1 540.4L899.6 532L903.4 525.7ZM905.1 540.4L903.4 525.7L909 534.5ZM920.2 552L914.6 543.2L918.4 537.8ZM920.2 552L918.4 537.8L924 547ZM914.6 543.2L909 534.5L912.8 528.6ZM914.6 543.2L912.8 528.6L918.4 537.8ZM909 534.5L903.4 525.7L904.7 523.6L907.8 523.8ZM909 534.5L907.8 523.8L909.9 523.8L912.8 528.6Z"/>
<path fill="#aaff00" stroke="#aaff00" stroke-width=".5" d="M904.7 523.6L907.3 519.4L907.8 523.8ZM907.8 523.8L907.3 519.4L909.9 523.8Z"/>
<path class="g" d="M912.5 562.3L895.7 538.3L907.3 519.4L924 547Z"/>
<path fill="#e3ff00" stroke="#e3ff00" stroke-width=".5" d="M793 461.3L788.1 457L789.1 454.8L792.5 456.7ZM793 461.3L792.5 456.7L794.5 457.8ZM788.1 457L783.3 452.7L783.6 451.9L787.8 454.1ZM788.1 457L787.8 454.1L789.1 454.8ZM783.3 452.7L780.5 450.3L783.2 451.7ZM783.3 452.7L783.2 451.7L783.6 451.9Z"/>
<path fill="#fff200" stroke="#fff200" stroke-width=".5" d="M789.1 454.8L791.8 448.7L792.5 456.7ZM792.5 456.7L791.8 448.7L796.7 452.7L794.5 457.8ZM783.6 451.9L786.9 444.8L787.8 454.1ZM787.8 454.1L786.9 444.8L791.8 448.7L789.1 454.8ZM780.5 450.3L778.5 448.5L782.2 440.9L783.2 451.7ZM783.2 451.7L782.2 440.9L786.9 444.8L783.6 451.9ZM796.7 452.7L791.8 448.7L795.5 440.4ZM796.7 452.7L795.5 440.4L800.4 444.1ZM791.8 448.7L786.9 444.8L790.6 436.8ZM791.8 448.7L790.6 436.8L795.5 440.4ZM786.9 444.8L782.2 440.9L785.9 433.3ZM786.9 444.8L785.9 433.3L790.6 436.8ZM800.4 444.1L795.5 440.4L799.2 432.1ZM800.4 444.1L799.2 432.1L804.1 435.4ZM795.5 440.4L790.6 436.8L794.3 428.9ZM795.5 440.4L794.3 428.9L799.2 432.1ZM790.6 436.8L785.9 433.3L789.6 425.6ZM790.6 436.8L789.6 425.6L794.3 428.9Z"/>
<path class="g" d="M793 461.3L778.5 448.5L789.6 425.6L804.1 435.4Z"/>
<path fill="#39ff00" stroke="#39ff00" stroke-width=".5" d="M872.5 573L868 564.1L871.5 563.5ZM872.5 573L871.5 563.5L874.1 563.1L876.4 567.7ZM876.4 567.7L874.1 563.1L875.9 562.7ZM876.4 567.7L875.9 562.7L880.1 562L880.3 562.4ZM880.3 562.4L880.1 562L880.3 562ZM880.3 562.4L880.3 562L880.7 561.9Z"/>
<path fill="#72ff00" stroke="#72ff00" stroke-width=".5" d="M868 564.1L866.9 561.8L870.8 556.5L871.5 563.5ZM871.5 563.5L870.8 556.5L874.1 563.1ZM866.9 561.8L861.2 550.7L865.2 545.3ZM866.9 561.8L865.2 545.3L870.8 556.5ZM861.2 550.7L855.6 539.6L859.5 534.1ZM861.2 550.7L859.5 534.1L865.2 545.3ZM874.1 563.1L870.8 556.5L874.7 551.2L875.9 562.7ZM875.9 562.7L874.7 551.2L880.1 562ZM870.8 556.5L865.2 545.3L869.1 540ZM870.8 556.5L869.1 540L874.7 551.2ZM865.2 545.3L859.5 534.1L863.4 528.8ZM865.2 545.3L863.4 528.8L869.1 540ZM880.1 562L874.7 551.2L878.6 545.9L880.3 562ZM880.3 562L878.6 545.9L884.2 557.1L880.7 561.9ZM874.7 551.2L869.1 540L873 534.6ZM874.7 551.2L873 534.6L878.6 545.9ZM869.1 540L863.4 528.8L864.9 526.7L867.7 526.3ZM869.1 540L867.7 526.3L868.7 526.1L873 534.6Z"/>
<path fill="#aaff00" stroke="#aaff00" stroke-width=".5" d="M864.9 526.7L867.4 523.4L867.7 526.3ZM867.7 526.3L867.4 523.4L868.7 526.1Z"/>
<path class="g" d="M872.5 573L855.6 539.6L867.4 523.4L884.2 557.1Z"/>
<path fill="#ffc000" stroke="#ffc000" stroke-width=".5" d="M908.3 376.4L902.7 370.5L906.6 368.2ZM908.3 376.4L906.6 368.2L912.2 373.8ZM902.7 370.5L897.1 364.7L901 362.6ZM902.7 370.5L901 362.6L906.6 368.2ZM897.1 364.7L891.6 359L895.5 357.1ZM897.1 364.7L895.5 357.1L901 362.6ZM912.2 373.8L906.6 368.2L910.5 365.8ZM912.2 373.8L910.5 365.8L916.1 371.2ZM906.6 368.2L901 362.6L904.9 360.5ZM906.6 368.2L904.9 360.5L910.5 365.8ZM901 362.6L895.5 357.1L899.4 355.2ZM901 362.6L899.4 355.2L904.9 360.5ZM916.1 371.2L910.5 365.8L914.3 363.5ZM916.1 371.2L914.3 363.5L919.9 368.7ZM910.5 365.8L904.9 360.5L908.7 358.4ZM910.5 365.8L908.7 358.4L914.3 363.5ZM904.9 360.5L899.4 355.2L903.2 353.3ZM904.9 360.5L903.2 353.3L908.7 358.4Z"/>
<path class="g" d="M908.3 376.4L891.6 359L903.2 353.3L919.9 368.7Z"/>
<path fill="#ffd900" stroke="#ffd900" stroke-width=".5" d="M827 389.1L822.2 388.5L825.9 384.1L826.4 385.1ZM827 389.1L826.4 385.1L827.8 388.2ZM822.2 388.5L817.4 387.9L821.4 383.2ZM822.2 388.5L821.4 383.2L825.8 383.7L825.9 384.1ZM817.4 387.9L812.6 387.3L816.6 382.7ZM817.4 387.9L816.6 382.7L821.4 383.2ZM825.8 383.7L821.4 383.2L824.2 380ZM821.4 383.2L816.6 382.7L820.6 378.1ZM821.4 383.2L820.6 378.1L823.5 378.4L824.2 380ZM823.5 378.4L820.6 378.1L822.5 375.9Z"/>
<path fill="#ffc000" stroke="#ffc000" stroke-width=".5" d="M825.9 384.1L826.2 383.8L826.4 385.1ZM826.4 385.1L826.2 383.8L831.1 384.3L827.8 388.2ZM825.8 383.7L826.2 383.8L825.9 384.1ZM831.1 384.3L826.2 383.8L830.2 379ZM831.1 384.3L830.2 379L835.2 379.5ZM826.2 383.8L825.8 383.7L824.2 380L825.4 378.6ZM826.2 383.8L825.4 378.6L830.2 379ZM823.5 378.4L825.4 378.6L824.2 380ZM835.2 379.5L830.2 379L834.2 374.3ZM835.2 379.5L834.2 374.3L839.2 374.8ZM830.2 379L825.4 378.6L829.4 373.9ZM830.2 379L829.4 373.9L834.2 374.3ZM825.4 378.6L823.5 378.4L822.5 375.9L824.6 373.5ZM825.4 378.6L824.6 373.5L829.4 373.9Z"/>
<path class="g" d="M827 389.1L812.6 387.3L824.6 373.5L839.2 374.8Z"/>
<path fill="#39ff00" stroke="#39ff00" stroke-width=".5" d="M900.8 575.9L895.2 569.6L898.2 565.6L899.3 565.8ZM900.8 575.9L899.3 565.8L900.3 565.9L904.7 571.3ZM895.2 569.6L890.3 564.1L894.6 565.2ZM895.2 569.6L894.6 565.2L898.2 565.6ZM904.7 571.3L900.3 565.9L904 566.3ZM904.7 571.3L904 566.3L908.1 566.1L908.6 566.8ZM908.6 566.8L908.1 566.1L908.5 566.1ZM908.6 566.8L908.5 566.1L909.2 566.1Z"/>
<path fill="#72ff00" stroke="#72ff00" stroke-width=".5" d="M898.2 565.6L899.1 564.5L899.3 565.8ZM899.3 565.8L899.1 564.5L900.3 565.9ZM890.3 564.1L889.7 563.3L893.6 557.6L894.6 565.2ZM894.6 565.2L893.6 557.6L899.1 564.5L898.2 565.6ZM889.7 563.3L884.2 557.1L888.1 550.8ZM889.7 563.3L888.1 550.8L893.6 557.6ZM900.3 565.9L899.1 564.5L903 559.3L904 566.3ZM904 566.3L903 559.3L908.1 566.1ZM899.1 564.5L893.6 557.6L897.4 551.9ZM899.1 564.5L897.4 551.9L903 559.3ZM893.6 557.6L888.1 550.8L891.9 544.6ZM893.6 557.6L891.9 544.6L897.4 551.9ZM908.1 566.1L903 559.3L906.9 554.2L908.5 566.1ZM908.5 566.1L906.9 554.2L912.5 562.3L909.2 566.1ZM903 559.3L897.4 551.9L901.3 546.3ZM903 559.3L901.3 546.3L906.9 554.2ZM897.4 551.9L891.9 544.6L895.7 538.3ZM897.4 551.9L895.7 538.3L901.3 546.3Z"/>
<path class="g" d="M900.8 575.9L884.2 557.1L895.7 538.3L912.5 562.3Z"/>
<path fill="#00ff00" stroke="#00ff00" stroke-width=".5" d="M946.2 624.5L940.7 611.9L944.4 608.4ZM946.2 624.5L944.4 608.4L949.9 621.1ZM940.7 611.9L937.3 604.3L939.7 603ZM940.7 611.9L939.7 603L941.6 601.9L944.4 608.4ZM949.9 621.1L944.4 608.4L948.1 605ZM949.9 621.1L948.1 605L953.6 617.8ZM944.4 608.4L941.6 601.9L943.6 600.8ZM944.4 608.4L943.6 600.8L945.8 599.5L948.1 605ZM953.6 617.8L948.1 605L951.8 601.5ZM953.6 617.8L951.8 601.5L957.3 614.6ZM948.1 605L945.8 599.5L947.5 598.6ZM948.1 605L947.5 598.6L950 597.1L951.8 601.5Z"/>
<path fill="#39ff00" stroke="#39ff00" stroke-width=".5" d="M937.3 604.3L935.1 599.3L938.9 595.6L939.7 603ZM939.7 603L938.9 595.6L941.6 601.9ZM935.1 599.3L929.5 586.6L933.3 582.8ZM935.1 599.3L933.3 582.8L938.9 595.6ZM941.6 601.9L938.9 595.6L942.6 592L943.6 600.8ZM943.6 600.8L942.6 592L945.8 599.5ZM938.9 595.6L933.3 582.8L937.1 579ZM938.9 595.6L937.1 579L942.6 592ZM945.8 599.5L942.6 592L946.4 588.4L947.5 598.6ZM947.5 598.6L946.4 588.4L950 597.1ZM942.6 592L937.1 579L940.9 575.3ZM942.6 592L940.9 575.3L946.4 588.4Z"/>
<path class="g" d="M946.2 624.5L929.5 586.6L940.9 575.3L957.3 614.6Z"/>
<path fill="#39ff00" stroke="#39ff00" stroke-width=".5" d="M929.5 586.6L923.8 578.4L927.6 574.2ZM929.5 586.6L927.6 574.2L933.3 582.8ZM923.8 578.4L918.1 570.3L922 565.7ZM923.8 578.4L922 565.7L927.6 574.2ZM918.1 570.3L914.8 565.5L917.5 565.5ZM918.1 570.3L917.5 565.5L921.6 565L922 565.7ZM933.3 582.8L927.6 574.2L931.5 570ZM933.3 582.8L931.5 570L937.1 579ZM927.6 574.2L922 565.7L922.6 564.9L926.3 564.5ZM927.6 574.2L926.3 564.5L927.8 564.2L931.5 570ZM922 565.7L921.6 565L921.9 565ZM922 565.7L921.9 565L922.6 564.9ZM937.1 579L931.5 570L935.2 565.8ZM937.1 579L935.2 565.8L940.9 575.3ZM931.5 570L927.8 564.2L930.6 563.7ZM931.5 570L930.6 563.7L933.6 563L935.2 565.8Z"/>
<path fill="#72ff00" stroke="#72ff00" stroke-width=".5" d="M914.8 565.5L912.5 562.3L916.3 557.1L917.5 565.5ZM917.5 565.5L916.3 557.1L921.6 565ZM922.6 564.9L925.8 561L926.3 564.5ZM926.3 564.5L925.8 561L927.8 564.2ZM921.6 565L916.3 557.1L920.2 552L921.9 565ZM921.9 565L920.2 552L925.8 561L922.6 564.9ZM927.8 564.2L925.8 561L929.6 556.4L930.6 563.7ZM930.6 563.7L929.6 556.4L933.6 563ZM925.8 561L920.2 552L924 547ZM925.8 561L924 547L929.6 556.4Z"/>
<path class="g" d="M929.5 586.6L912.5 562.3L924 547L940.9 575.3Z"/>
<path fill="#e3ff00" stroke="#e3ff00" stroke-width=".5" d="M902.1 478.4L896.8 453.5L900.6 452ZM902.1 478.4L900.6 452L901.2 451.7L905.9 473.9ZM905.9 473.9L901.2 451.7L904.6 450.4ZM905.9 473.9L904.6 450.4L905.6 450L909.7 469.4ZM909.7 469.4L905.6 450L908.5 448.8ZM909.7 469.4L908.5 448.8L909.9 448.2L913.5 465Z"/>
<path fill="#fff200" stroke="#fff200" stroke-width=".5" d="M896.8 453.5L896.4 451.6L900.3 447.4L900.6 452ZM900.6 452L900.3 447.4L901.2 451.7ZM896.4 451.6L890.7 424.6L894.7 423ZM896.4 451.6L894.7 423L895.1 422.9L900.3 447.4ZM901.2 451.7L900.3 447.4L904.2 443.2L904.6 450.4ZM904.6 450.4L904.2 443.2L905.6 450ZM900.3 447.4L895.1 422.9L898.7 421.4ZM900.3 447.4L898.7 421.4L899.5 421.2L904.2 443.2ZM905.6 450L904.2 443.2L908 439.1L908.5 448.8ZM908.5 448.8L908 439.1L909.9 448.2ZM904.2 443.2L899.5 421.2L902.8 419.8ZM904.2 443.2L902.8 419.8L903.8 419.4L908 439.1Z"/>
<path fill="#ffd900" stroke="#ffd900" stroke-width=".5" d="M890.7 424.6L890.5 423.8L894.5 420L894.7 423ZM894.7 423L894.5 420L895.1 422.9ZM890.5 423.8L884.4 395.2L885.4 394.3L888.5 393.1ZM890.5 423.8L888.5 393.1L888.7 393L894.5 420ZM895.1 422.9L894.5 420L898.4 416.2L898.7 421.4ZM898.7 421.4L898.4 416.2L899.5 421.2ZM894.5 420L888.7 393L892.7 391.5ZM894.5 420L892.7 391.5L893.1 391.3L898.4 416.2ZM899.5 421.2L898.4 416.2L902.3 412.4L902.8 419.8ZM902.8 419.8L902.3 412.4L903.8 419.4ZM898.4 416.2L893.1 391.3L896.8 389.9ZM898.4 416.2L896.8 389.9L897.5 389.7L902.3 412.4Z"/>
<path fill="#ffc000" stroke="#ffc000" stroke-width=".5" d="M885.4 394.3L888.4 391.7L888.5 393.1ZM888.5 393.1L888.4 391.7L888.7 393ZM888.7 393L888.4 391.7L892.5 388.3L892.7 391.5ZM892.7 391.5L892.5 388.3L893.1 391.3ZM893.1 391.3L892.5 388.3L896.5 384.9L896.8 389.9ZM896.8 389.9L896.5 384.9L897.5 389.7Z"/>
<path class="g" d="M902.1 478.4L884.4 395.2L896.5 384.9L913.5 465Z"/>
<path fill="#39ff00" stroke="#39ff00" stroke-width=".5" d="M860.6 586.5L854.9 575.8L858.9 571.1ZM860.6 586.5L858.9 571.1L864.6 581.9ZM854.9 575.8L850.9 568.3L854 567.6ZM854.9 575.8L854 567.6L856.7 566.9L858.9 571.1ZM864.6 581.9L858.9 571.1L862.9 566.5ZM864.6 581.9L862.9 566.5L868.5 577.4ZM858.9 571.1L856.7 566.9L858.4 566.5ZM858.9 571.1L858.4 566.5L862.4 565.5L862.9 566.5ZM868.5 577.4L862.9 566.5L864 565.1L867.1 564.3ZM868.5 577.4L867.1 564.3L868 564.1L872.5 573ZM862.9 566.5L862.4 565.5L862.8 565.4ZM862.9 566.5L862.8 565.4L864 565.1Z"/>
<path fill="#72ff00" stroke="#72ff00" stroke-width=".5" d="M850.9 568.3L849.3 565.1L853.3 560.2L854 567.6ZM854 567.6L853.3 560.2L856.7 566.9ZM849.3 565.1L843.6 554.3L847.6 549.4ZM849.3 565.1L847.6 549.4L853.3 560.2ZM856.7 566.9L853.3 560.2L857.3 555.5L858.4 566.5ZM858.4 566.5L857.3 555.5L862.4 565.5ZM853.3 560.2L847.6 549.4L851.6 544.5ZM853.3 560.2L851.6 544.5L857.3 555.5ZM864 565.1L866.9 561.8L867.1 564.3ZM867.1 564.3L866.9 561.8L868 564.1ZM862.4 565.5L857.3 555.5L861.2 550.7L862.8 565.4ZM862.8 565.4L861.2 550.7L866.9 561.8L864 565.1ZM857.3 555.5L851.6 544.5L855.6 539.6ZM857.3 555.5L855.6 539.6L861.2 550.7Z"/>
<path class="g" d="M860.6 586.5L843.6 554.3L855.6 539.6L872.5 573Z"/>
<path fill="#fff200" stroke="#fff200" stroke-width=".5" d="M804.1 435.4L799.2 432.1L802.7 422.2ZM804.1 435.4L802.7 422.2L807.6 425.1ZM799.2 432.1L794.3 428.9L797.9 419.4ZM799.2 432.1L797.9 419.4L802.7 422.2ZM794.3 428.9L789.6 425.6L793.1 416.6ZM794.3 428.9L793.1 416.6L797.9 419.4ZM807.6 425.1L802.7 422.2L803 421.6L807.6 424.5ZM807.6 425.1L807.6 424.5L807.8 424.7ZM802.7 422.2L797.9 419.4L798.2 418.5L802.6 421.3ZM802.7 422.2L802.6 421.3L803 421.6ZM797.9 419.4L793.1 416.6L793.6 415.4L797.8 418.1ZM797.9 419.4L797.8 418.1L798.2 418.5Z"/>
<path fill="#ffd900" stroke="#ffd900" stroke-width=".5" d="M803 421.6L806.3 412.3L807.6 424.5ZM807.6 424.5L806.3 412.3L811.2 414.8L807.8 424.7ZM798.2 418.5L801.5 409.9L802.6 421.3ZM802.6 421.3L801.5 409.9L806.3 412.3L803 421.6ZM793.6 415.4L796.7 407.5L797.8 418.1ZM797.8 418.1L796.7 407.5L801.5 409.9L798.2 418.5ZM811.2 414.8L806.3 412.3L809.9 402.3ZM811.2 414.8L809.9 402.3L814.8 404.4ZM806.3 412.3L801.5 409.9L805.1 400.3ZM806.3 412.3L805.1 400.3L809.9 402.3ZM801.5 409.9L796.7 407.5L800.3 398.3ZM801.5 409.9L800.3 398.3L805.1 400.3Z"/>
<path class="g" d="M804.1 435.4L789.6 425.6L800.3 398.3L814.8 404.4Z"/>
<path fill="#39ff00" stroke="#39ff00" stroke-width=".5" d="M889 589.6L883.4 584L887.4 579.2ZM889 589.6L887.4 579.2L892.9 585ZM883.4 584L877.9 578.4L881.9 573.4ZM883.4 584L881.9 573.4L887.4 579.2ZM877.9 578.4L872.5 573L876.4 567.7ZM877.9 578.4L876.4 567.7L881.9 573.4ZM892.9 585L887.4 579.2L891.3 574.4ZM892.9 585L891.3 574.4L896.9 580.4ZM887.4 579.2L881.9 573.4L885.8 568.3ZM887.4 579.2L885.8 568.3L891.3 574.4ZM881.9 573.4L876.4 567.7L880.3 562.4ZM881.9 573.4L880.3 562.4L885.8 568.3ZM896.9 580.4L891.3 574.4L895.2 569.6ZM896.9 580.4L895.2 569.6L900.8 575.9ZM891.3 574.4L885.8 568.3L889.3 563.9L889.8 564ZM891.3 574.4L889.8 564L890.3 564.1L895.2 569.6ZM885.8 568.3L880.3 562.4L880.7 561.9L885 563.1ZM885.8 568.3L885 563.1L889.3 563.9Z"/>
<path fill="#72ff00" stroke="#72ff00" stroke-width=".5" d="M889.3 563.9L889.7 563.3L889.8 564ZM889.8 564L889.7 563.3L890.3 564.1ZM880.7 561.9L884.2 557.1L885 563.1ZM885 563.1L884.2 557.1L889.7 563.3L889.3 563.9Z"/>
<path class="g" d="M889 589.6L872.5 573L884.2 557.1L900.8 575.9Z"/>
<path fill="#aaff00" stroke="#aaff00" stroke-width=".5" d="M785.8 527.6L781.1 523.6L784.6 514.3ZM785.8 527.6L784.6 514.3L789.4 518.3ZM781.1 523.6L776.4 519.7L779.9 510.4ZM781.1 523.6L779.9 510.4L784.6 514.3ZM776.4 519.7L771.7 515.8L775.2 506.5ZM776.4 519.7L775.2 506.5L779.9 510.4ZM789.4 518.3L784.6 514.3L788.2 504.9ZM789.4 518.3L788.2 504.9L793 508.9ZM784.6 514.3L779.9 510.4L783.4 501.1ZM784.6 514.3L783.4 501.1L788.2 504.9ZM779.9 510.4L775.2 506.5L778.7 497.2ZM779.9 510.4L778.7 497.2L783.4 501.1ZM793 508.9L788.2 504.9L791 497.5L792 498.2ZM793 508.9L792 498.2L796 501ZM788.2 504.9L783.4 501.1L786.1 494L787.2 494.8ZM788.2 504.9L787.2 494.8L791 497.5ZM783.4 501.1L778.7 497.2L781.2 490.5L782.5 491.4ZM783.4 501.1L782.5 491.4L786.1 494Z"/>
<path fill="#e3ff00" stroke="#e3ff00" stroke-width=".5" d="M791 497.5L791.8 495.5L792 498.2ZM792 498.2L791.8 495.5L796.7 499.4L796 501ZM786.1 494L786.9 491.7L787.2 494.8ZM787.2 494.8L786.9 491.7L791.8 495.5L791 497.5ZM781.2 490.5L782.2 487.9L782.5 491.4ZM782.5 491.4L782.2 487.9L786.9 491.7L786.1 494Z"/>
<path class="g" d="M785.8 527.6L771.7 515.8L782.2 487.9L796.7 499.4Z"/>
<path fill="#ffd900" stroke="#ffd900" stroke-width=".5" d="M814.8 404.4L809.9 402.3L814 397.7ZM814.8 404.4L814 397.7L818.9 399.3ZM809.9 402.3L805.1 400.3L809.2 396.1ZM809.9 402.3L809.2 396.1L814 397.7ZM805.1 400.3L800.3 398.3L804.4 394.6ZM805.1 400.3L804.4 394.6L809.2 396.1ZM818.9 399.3L814 397.7L818.1 393.1ZM818.9 399.3L818.1 393.1L823 394.2ZM814 397.7L809.2 396.1L813.3 392ZM814 397.7L813.3 392L818.1 393.1ZM809.2 396.1L804.4 394.6L808.6 391ZM809.2 396.1L808.6 391L813.3 392ZM823 394.2L818.1 393.1L822.2 388.5ZM823 394.2L822.2 388.5L827 389.1ZM818.1 393.1L813.3 392L817.4 387.9ZM818.1 393.1L817.4 387.9L822.2 388.5ZM813.3 392L808.6 391L812.6 387.3ZM813.3 392L812.6 387.3L817.4 387.9Z"/>
<path class="g" d="M814.8 404.4L800.3 398.3L812.6 387.3L827 389.1Z"/>
<path fill="#ffc000" stroke="#ffc000" stroke-width=".5" d="M867.5 374.3L862.1 371.2L866.1 368.2ZM867.5 374.3L866.1 368.2L871.5 371.4ZM862.1 371.2L856.7 368.1L860.8 365.1ZM862.1 371.2L860.8 365.1L866.1 368.2ZM856.7 368.1L851.5 365L855.5 362ZM856.7 368.1L855.5 362L860.8 365.1ZM871.5 371.4L866.1 368.2L870.2 365.3ZM871.5 371.4L870.2 365.3L875.6 368.5ZM866.1 368.2L860.8 365.1L864.8 362.1ZM866.1 368.2L864.8 362.1L870.2 365.3ZM860.8 365.1L855.5 362L859.5 359ZM860.8 365.1L859.5 359L864.8 362.1ZM875.6 368.5L870.2 365.3L874.2 362.4ZM875.6 368.5L874.2 362.4L879.6 365.6ZM870.2 365.3L864.8 362.1L868.8 359.2ZM870.2 365.3L868.8 359.2L874.2 362.4ZM864.8 362.1L859.5 359L863.5 356ZM864.8 362.1L863.5 356L868.8 359.2Z"/>
<path class="g" d="M867.5 374.3L851.5 365L863.5 356L879.6 365.6Z"/>
<path fill="#00ff00" stroke="#00ff00" stroke-width=".5" d="M964.2 638.6L958.1 633.8L961.8 630.6ZM964.2 638.6L961.8 630.6L967.9 635.4ZM958.1 633.8L952.1 629.1L955.8 625.8ZM958.1 633.8L955.8 625.8L961.8 630.6ZM952.1 629.1L946.2 624.5L949.9 621.1ZM952.1 629.1L949.9 621.1L955.8 625.8ZM967.9 635.4L961.8 630.6L965.5 627.4ZM967.9 635.4L965.5 627.4L971.6 632.3ZM961.8 630.6L955.8 625.8L959.5 622.6ZM961.8 630.6L959.5 622.6L965.5 627.4ZM955.8 625.8L949.9 621.1L953.6 617.8ZM955.8 625.8L953.6 617.8L959.5 622.6ZM971.6 632.3L965.5 627.4L969.2 624.2ZM971.6 632.3L969.2 624.2L975.2 629.1ZM965.5 627.4L959.5 622.6L963.2 619.3ZM965.5 627.4L963.2 619.3L969.2 624.2ZM959.5 622.6L953.6 617.8L957.3 614.6ZM959.5 622.6L957.3 614.6L963.2 619.3Z"/>
<path class="g" d="M964.2 638.6L946.2 624.5L957.3 614.6L975.2 629.1Z"/>
<path fill="#39ff00" stroke="#39ff00" stroke-width=".5" d="M917.9 598L912.2 590.6L916.1 586.5ZM917.9 598L916.1 586.5L921.8 594.2ZM912.2 590.6L906.5 583.2L910.4 578.9ZM912.2 590.6L910.4 578.9L916.1 586.5ZM906.5 583.2L900.8 575.9L904.7 571.3ZM906.5 583.2L904.7 571.3L910.4 578.9ZM921.8 594.2L916.1 586.5L919.9 582.5ZM921.8 594.2L919.9 582.5L925.7 590.4ZM916.1 586.5L910.4 578.9L914.3 574.6ZM916.1 586.5L914.3 574.6L919.9 582.5ZM910.4 578.9L904.7 571.3L908.6 566.8ZM910.4 578.9L908.6 566.8L914.3 574.6ZM925.7 590.4L919.9 582.5L923.8 578.4ZM925.7 590.4L923.8 578.4L929.5 586.6ZM919.9 582.5L914.3 574.6L918.1 570.3ZM919.9 582.5L918.1 570.3L923.8 578.4ZM914.3 574.6L908.6 566.8L909.2 566.1L913 565.8ZM914.3 574.6L913 565.8L914.8 565.5L918.1 570.3Z"/>
<path fill="#72ff00" stroke="#72ff00" stroke-width=".5" d="M909.2 566.1L912.5 562.3L913 565.8ZM913 565.8L912.5 562.3L914.8 565.5Z"/>
<path class="g" d="M917.9 598L900.8 575.9L912.5 562.3L929.5 586.6Z"/>
<path fill="#aaff00" stroke="#aaff00" stroke-width=".5" d="M890.6 492.1L889.5 487L890.3 486.7ZM890.6 492.1L890.3 486.7L894 485.1L894.5 487.5ZM894.5 487.5L894 485.1L894.3 485ZM894.5 487.5L894.3 485L897.8 483.5Z"/>
<path fill="#e3ff00" stroke="#e3ff00" stroke-width=".5" d="M889.5 487L884.7 464.5L888.6 460.2L890.3 486.7ZM890.3 486.7L888.6 460.2L894 485.1ZM884.7 464.5L883.5 459L884.3 458.6ZM884.7 464.5L884.3 458.6L887.9 457.1L888.6 460.2ZM894 485.1L888.6 460.2L892.5 455.9L894.3 485ZM894.3 485L892.5 455.9L898.3 482.9L897.8 483.5ZM888.6 460.2L887.9 457.1L888.4 457ZM888.6 460.2L888.4 457L892.4 455.3L892.5 455.9ZM898.3 482.9L892.5 455.9L893.4 454.9L896.5 453.6ZM898.3 482.9L896.5 453.6L896.8 453.5L902.1 478.4ZM892.5 455.9L892.4 455.3L892.5 455.3ZM892.5 455.9L892.5 455.3L893.4 454.9Z"/>
<path fill="#fff200" stroke="#fff200" stroke-width=".5" d="M883.5 459L878.5 436L882.5 431.9L884.3 458.6ZM884.3 458.6L882.5 431.9L887.9 457.1ZM878.5 436L877.2 430L878.1 429.6ZM878.5 436L878.1 429.6L881.7 428.2L882.5 431.9ZM887.9 457.1L882.5 431.9L886.5 427.9L888.4 457ZM888.4 457L886.5 427.9L892.4 455.3ZM882.5 431.9L881.7 428.2L882.3 427.9ZM882.5 431.9L882.3 427.9L886.2 426.4L886.5 427.9ZM893.4 454.9L896.4 451.6L896.5 453.6ZM896.5 453.6L896.4 451.6L896.8 453.5ZM892.4 455.3L886.5 427.9L889.1 425.2L890.6 424.7L892.5 455.3ZM892.5 455.3L890.6 424.7L890.7 424.6L896.4 451.6L893.4 454.9ZM886.5 427.9L886.2 426.4L886.4 426.3ZM886.5 427.9L886.4 426.3L889.1 425.2Z"/>
<path fill="#ffd900" stroke="#ffd900" stroke-width=".5" d="M877.2 430L872.1 406.4L876.2 402.7L878.1 429.6ZM878.1 429.6L876.2 402.7L881.7 428.2ZM881.7 428.2L876.2 402.7L880.3 398.9L882.3 427.9ZM882.3 427.9L880.3 398.9L886.2 426.4ZM889.1 425.2L890.5 423.8L890.6 424.7ZM890.6 424.7L890.5 423.8L890.7 424.6ZM886.2 426.4L880.3 398.9L884.4 395.2L886.4 426.3ZM886.4 426.3L884.4 395.2L890.5 423.8L889.1 425.2Z"/>
<path class="g" d="M890.6 492.1L872.1 406.4L884.4 395.2L902.1 478.4Z"/>
<path fill="#ffc000" stroke="#ffc000" stroke-width=".5" d="M896.5 384.9L890.8 378.4L894.8 375.8ZM896.5 384.9L894.8 375.8L900.5 382ZM890.8 378.4L885.2 372L889.2 369.6ZM890.8 378.4L889.2 369.6L894.8 375.8ZM885.2 372L879.6 365.6L883.6 363.4ZM885.2 372L883.6 363.4L889.2 369.6ZM900.5 382L894.8 375.8L898.8 373.1ZM900.5 382L898.8 373.1L904.4 379.2ZM894.8 375.8L889.2 369.6L893.2 367.1ZM894.8 375.8L893.2 367.1L898.8 373.1ZM889.2 369.6L883.6 363.4L887.6 361.2ZM889.2 369.6L887.6 361.2L893.2 367.1ZM904.4 379.2L898.8 373.1L902.7 370.5ZM904.4 379.2L902.7 370.5L908.3 376.4ZM898.8 373.1L893.2 367.1L897.1 364.7ZM898.8 373.1L897.1 364.7L902.7 370.5ZM893.2 367.1L887.6 361.2L891.6 359ZM893.2 367.1L891.6 359L897.1 364.7Z"/>
<path class="g" d="M896.5 384.9L879.6 365.6L891.6 359L908.3 376.4Z"/>
<path fill="#39ff00" stroke="#39ff00" stroke-width=".5" d="M848.4 600L842.7 589.4L846.8 584.9ZM848.4 600L846.8 584.9L852.5 595.5ZM842.7 589.4L837.1 578.8L841.1 574.2ZM842.7 589.4L841.1 574.2L846.8 584.9ZM837.1 578.8L833.7 572.5L836.3 571.9ZM837.1 578.8L836.3 571.9L839.5 571.1L841.1 574.2ZM852.5 595.5L846.8 584.9L850.9 580.3ZM852.5 595.5L850.9 580.3L856.5 591ZM846.8 584.9L841.1 574.2L845.1 569.7L845.2 569.7ZM846.8 584.9L845.2 569.7L845.2 569.7L850.9 580.3ZM841.1 574.2L839.5 571.1L840.8 570.8ZM841.1 574.2L840.8 570.8L845.1 569.7ZM856.5 591L850.9 580.3L854.9 575.8ZM856.5 591L854.9 575.8L860.6 586.5ZM850.9 580.3L845.2 569.7L849.6 568.6ZM850.9 580.3L849.6 568.6L850.9 568.3L854.9 575.8Z"/>
<path fill="#72ff00" stroke="#72ff00" stroke-width=".5" d="M833.7 572.5L831.4 568.2L835.5 563.6L836.3 571.9ZM836.3 571.9L835.5 563.6L839.5 571.1ZM845.1 569.7L845.2 569.6L845.2 569.7ZM845.2 569.7L845.2 569.6L845.2 569.7ZM839.5 571.1L835.5 563.6L839.5 559L840.8 570.8ZM840.8 570.8L839.5 559L845.2 569.6L845.1 569.7ZM845.2 569.7L845.2 569.6L849.3 565.1L849.6 568.6ZM849.6 568.6L849.3 565.1L850.9 568.3ZM845.2 569.6L839.5 559L843.6 554.3ZM845.2 569.6L843.6 554.3L849.3 565.1Z"/>
<path class="g" d="M848.4 600L831.4 568.2L843.6 554.3L860.6 586.5Z"/>
<path fill="#e3ff00" stroke="#e3ff00" stroke-width=".5" d="M796.7 499.4L791.8 495.5L795.5 487.3ZM796.7 499.4L795.5 487.3L800.5 491.6ZM791.8 495.5L786.9 491.7L790.6 483.2ZM791.8 495.5L790.6 483.2L795.5 487.3ZM786.9 491.7L782.2 487.9L785.8 479.1ZM786.9 491.7L785.8 479.1L790.6 483.2ZM800.5 491.6L795.5 487.3L799.3 479.1ZM800.5 491.6L799.3 479.1L804.3 483.7ZM795.5 487.3L790.6 483.2L794.3 474.7ZM795.5 487.3L794.3 474.7L799.3 479.1ZM790.6 483.2L785.8 479.1L789.4 470.2ZM790.6 483.2L789.4 470.2L794.3 474.7ZM804.3 483.7L799.3 479.1L803 470.9ZM804.3 483.7L803 470.9L808.2 475.8ZM799.3 479.1L794.3 474.7L798 466.1ZM799.3 479.1L798 466.1L803 470.9ZM794.3 474.7L789.4 470.2L793 461.3ZM794.3 474.7L793 461.3L798 466.1Z"/>
<path class="g" d="M796.7 499.4L782.2 487.9L793 461.3L808.2 475.8Z"/>
<path fill="#39ff00" stroke="#39ff00" stroke-width=".5" d="M876.9 603.2L871.4 597.6L875.4 593ZM876.9 603.2L875.4 593L881 598.6ZM871.4 597.6L866 592L870 587.4ZM871.4 597.6L870 587.4L875.4 593ZM866 592L860.6 586.5L864.6 581.9ZM866 592L864.6 581.9L870 587.4ZM881 598.6L875.4 593L879.4 588.5ZM881 598.6L879.4 588.5L885 594.1ZM875.4 593L870 587.4L874 582.9ZM875.4 593L874 582.9L879.4 588.5ZM870 587.4L864.6 581.9L868.5 577.4ZM870 587.4L868.5 577.4L874 582.9ZM885 594.1L879.4 588.5L883.4 584ZM885 594.1L883.4 584L889 589.6ZM879.4 588.5L874 582.9L877.9 578.4ZM879.4 588.5L877.9 578.4L883.4 584ZM874 582.9L868.5 577.4L872.5 573ZM874 582.9L872.5 573L877.9 578.4Z"/>
<path class="g" d="M876.9 603.2L860.6 586.5L872.5 573L889 589.6Z"/>
<path fill="#00ff00" stroke="#00ff00" stroke-width=".5" d="M934.9 634.1L929.3 622.1L933.1 618.7ZM934.9 634.1L933.1 618.7L938.7 630.9ZM929.3 622.1L924.3 611.5L927.8 609.6ZM929.3 622.1L927.8 609.6L928.7 609.1L933.1 618.7ZM938.7 630.9L933.1 618.7L936.9 615.3ZM938.7 630.9L936.9 615.3L942.5 627.7ZM933.1 618.7L928.7 609.1L931.8 607.4ZM933.1 618.7L931.8 607.4L933 606.7L936.9 615.3ZM942.5 627.7L936.9 615.3L940.7 611.9ZM942.5 627.7L940.7 611.9L946.2 624.5ZM936.9 615.3L933 606.7L935.8 605.2ZM936.9 615.3L935.8 605.2L937.3 604.3L940.7 611.9Z"/>
<path fill="#39ff00" stroke="#39ff00" stroke-width=".5" d="M924.3 611.5L923.6 610.1L927.5 606.4L927.8 609.6ZM927.8 609.6L927.5 606.4L928.7 609.1ZM923.6 610.1L917.9 598L921.8 594.2ZM923.6 610.1L921.8 594.2L927.5 606.4ZM928.7 609.1L927.5 606.4L931.3 602.8L931.8 607.4ZM931.8 607.4L931.3 602.8L933 606.7ZM927.5 606.4L921.8 594.2L925.7 590.4ZM927.5 606.4L925.7 590.4L931.3 602.8ZM933 606.7L931.3 602.8L935.1 599.3L935.8 605.2ZM935.8 605.2L935.1 599.3L937.3 604.3ZM931.3 602.8L925.7 590.4L929.5 586.6ZM931.3 602.8L929.5 586.6L935.1 599.3Z"/>
<path class="g" d="M934.9 634.1L917.9 598L929.5 586.6L946.2 624.5Z"/>
<path fill="#ffc000" stroke="#ffc000" stroke-width=".5" d="M855.2 385.2L849.8 381.7L853.9 378.2ZM855.2 385.2L853.9 378.2L859.3 381.6ZM849.8 381.7L844.5 378.2L848.6 374.8ZM849.8 381.7L848.6 374.8L853.9 378.2ZM844.5 378.2L839.2 374.8L843.3 371.5ZM844.5 378.2L843.3 371.5L848.6 374.8ZM859.3 381.6L853.9 378.2L858 374.7ZM859.3 381.6L858 374.7L863.4 377.9ZM853.9 378.2L848.6 374.8L852.7 371.4ZM853.9 378.2L852.7 371.4L858 374.7ZM848.6 374.8L843.3 371.5L847.4 368.3ZM848.6 374.8L847.4 368.3L852.7 371.4ZM863.4 377.9L858 374.7L862.1 371.2ZM863.4 377.9L862.1 371.2L867.5 374.3ZM858 374.7L852.7 371.4L856.7 368.1ZM858 374.7L856.7 368.1L862.1 371.2ZM852.7 371.4L847.4 368.3L851.5 365ZM852.7 371.4L851.5 365L856.7 368.1Z"/>
<path class="g" d="M855.2 385.2L839.2 374.8L851.5 365L867.5 374.3Z"/>
<path fill="#e3ff00" stroke="#e3ff00" stroke-width=".5" d="M808.2 475.8L803 470.9L806.4 463.5L806.9 463.7ZM808.2 475.8L806.9 463.7L808.8 464.5L812 467.6ZM803 470.9L798 466.1L800.4 460.6L802.1 461.5ZM803 470.9L802.1 461.5L806.4 463.5ZM798 466.1L793 461.3L794.5 457.8L797.3 459.2ZM798 466.1L797.3 459.2L800.4 460.6ZM812 467.6L808.8 464.5L811.8 465.9ZM812 467.6L811.8 465.9L812.6 466.3Z"/>
<path fill="#fff200" stroke="#fff200" stroke-width=".5" d="M806.4 463.5L806.8 462.6L806.9 463.7ZM806.9 463.7L806.8 462.6L808.8 464.5ZM800.4 460.6L801.7 457.6L802.1 461.5ZM802.1 461.5L801.7 457.6L806.8 462.6L806.4 463.5ZM794.5 457.8L796.7 452.7L797.3 459.2ZM797.3 459.2L796.7 452.7L801.7 457.6L800.4 460.6ZM808.8 464.5L806.8 462.6L810.6 454.3L811.8 465.9ZM811.8 465.9L810.6 454.3L815.8 459.5L812.6 466.3ZM806.8 462.6L801.7 457.6L805.5 449.2ZM806.8 462.6L805.5 449.2L810.6 454.3ZM801.7 457.6L796.7 452.7L800.4 444.1ZM801.7 457.6L800.4 444.1L805.5 449.2ZM815.8 459.5L810.6 454.3L814.4 446ZM815.8 459.5L814.4 446L819.7 451.3ZM810.6 454.3L805.5 449.2L809.2 440.7ZM810.6 454.3L809.2 440.7L814.4 446ZM805.5 449.2L800.4 444.1L804.1 435.4ZM805.5 449.2L804.1 435.4L809.2 440.7Z"/>
<path class="g" d="M808.2 475.8L793 461.3L804.1 435.4L819.7 451.3Z"/>
<path fill="#aaff00" stroke="#aaff00" stroke-width=".5" d="M879 507L875.8 492.6L878 491.7ZM879 507L878 491.7L880.4 490.7L882.9 502ZM882.9 502L880.4 490.7L882.1 490ZM882.9 502L882.1 490L885 488.9L886.8 497ZM886.8 497L885 488.9L886.2 488.4ZM886.8 497L886.2 488.4L889.5 487L890.6 492.1Z"/>
<path fill="#e3ff00" stroke="#e3ff00" stroke-width=".5" d="M875.8 492.6L872.8 479L876.8 474.2L878 491.7ZM878 491.7L876.8 474.2L880.4 490.7ZM872.8 479L869.6 464.4L871.7 463.6ZM872.8 479L871.7 463.6L874.2 462.6L876.8 474.2ZM880.4 490.7L876.8 474.2L880.7 469.3L882.1 490ZM882.1 490L880.7 469.3L885 488.9ZM876.8 474.2L874.2 462.6L875.9 461.9ZM876.8 474.2L875.9 461.9L878.9 460.8L880.7 469.3ZM885 488.9L880.7 469.3L884.7 464.5L886.2 488.4ZM886.2 488.4L884.7 464.5L889.5 487ZM880.7 469.3L878.9 460.8L880.1 460.3ZM880.7 469.3L880.1 460.3L883.5 459L884.7 464.5Z"/>
<path fill="#fff200" stroke="#fff200" stroke-width=".5" d="M869.6 464.4L866.4 450L870.4 445.3L871.7 463.6ZM871.7 463.6L870.4 445.3L874.2 462.6ZM866.4 450L863.1 435.2L865.2 434.4ZM866.4 450L865.2 434.4L867.8 433.4L870.4 445.3ZM874.2 462.6L870.4 445.3L874.5 440.7L875.9 461.9ZM875.9 461.9L874.5 440.7L878.9 460.8ZM870.4 445.3L867.8 433.4L869.5 432.8ZM870.4 445.3L869.5 432.8L872.5 431.7L874.5 440.7ZM878.9 460.8L874.5 440.7L878.5 436L880.1 460.3ZM880.1 460.3L878.5 436L883.5 459ZM874.5 440.7L872.5 431.7L873.8 431.2ZM874.5 440.7L873.8 431.2L877.2 430L878.5 436Z"/>
<path fill="#ffd900" stroke="#ffd900" stroke-width=".5" d="M863.1 435.2L859.7 420L863.8 415.4L865.2 434.4ZM865.2 434.4L863.8 415.4L867.8 433.4ZM867.8 433.4L863.8 415.4L868 410.9L869.5 432.8ZM869.5 432.8L868 410.9L872.5 431.7ZM872.5 431.7L868 410.9L872.1 406.4L873.8 431.2ZM873.8 431.2L872.1 406.4L877.2 430Z"/>
<path class="g" d="M879 507L859.7 420L872.1 406.4L890.6 492.1Z"/>
<path fill="#00ff00" stroke="#00ff00" stroke-width=".5" d="M836.3 615.7L834.9 613L836 612.8ZM836.3 615.7L836 612.8L839 612.2Z"/>
<path fill="#39ff00" stroke="#39ff00" stroke-width=".5" d="M834.9 613L830.5 604.6L834.6 599.5L836 612.8ZM836 612.8L834.6 599.5L840.3 610.5L839 612.2ZM830.5 604.6L824.7 593.4L828.9 588.5ZM830.5 604.6L828.9 588.5L834.6 599.5ZM824.7 593.4L819 582.2L823.1 577.5ZM824.7 593.4L823.1 577.5L828.9 588.5ZM840.3 610.5L834.6 599.5L838.7 594.5ZM840.3 610.5L838.7 594.5L844.4 605.2ZM834.6 599.5L828.9 588.5L833 583.7ZM834.6 599.5L833 583.7L838.7 594.5ZM828.9 588.5L823.1 577.5L826 574.3L827.4 574ZM828.9 588.5L827.4 574L827.8 573.9L833 583.7ZM844.4 605.2L838.7 594.5L842.7 589.4ZM844.4 605.2L842.7 589.4L848.4 600ZM838.7 594.5L833 583.7L837.1 578.8ZM838.7 594.5L837.1 578.8L842.7 589.4ZM833 583.7L827.8 573.9L831.9 572.9ZM833 583.7L831.9 572.9L833.7 572.5L837.1 578.8Z"/>
<path fill="#72ff00" stroke="#72ff00" stroke-width=".5" d="M826 574.3L827.3 572.9L827.4 574ZM827.4 574L827.3 572.9L827.8 573.9ZM827.8 573.9L827.3 572.9L831.4 568.2L831.9 572.9ZM831.9 572.9L831.4 568.2L833.7 572.5Z"/>
<path class="g" d="M836.3 615.7L819 582.2L831.4 568.2L848.4 600Z"/>
<path fill="#39ff00" stroke="#39ff00" stroke-width=".5" d="M906 610.2L900.3 603.3L904.3 599ZM906 610.2L904.3 599L910 606.1ZM900.3 603.3L894.6 596.4L898.6 592ZM900.3 603.3L898.6 592L904.3 599ZM894.6 596.4L889 589.6L892.9 585ZM894.6 596.4L892.9 585L898.6 592ZM910 606.1L904.3 599L908.2 594.8ZM910 606.1L908.2 594.8L914 602.1ZM904.3 599L898.6 592L902.5 587.6ZM904.3 599L902.5 587.6L908.2 594.8ZM898.6 592L892.9 585L896.9 580.4ZM898.6 592L896.9 580.4L902.5 587.6ZM914 602.1L908.2 594.8L912.2 590.6ZM914 602.1L912.2 590.6L917.9 598ZM908.2 594.8L902.5 587.6L906.5 583.2ZM908.2 594.8L906.5 583.2L912.2 590.6ZM902.5 587.6L896.9 580.4L900.8 575.9ZM902.5 587.6L900.8 575.9L906.5 583.2Z"/>
<path class="g" d="M906 610.2L889 589.6L900.8 575.9L917.9 598Z"/>
<path fill="#00ff00" stroke="#00ff00" stroke-width=".5" d="M864.9 619.8L862.8 617.3L864.6 617.7ZM864.9 619.8L864.6 617.7L866.1 618.1Z"/>
<path fill="#39ff00" stroke="#39ff00" stroke-width=".5" d="M862.8 617.3L859.3 613.1L863.4 607.9L864.6 617.7ZM864.6 617.7L863.4 607.9L868.9 614.2L866.1 618.1ZM859.3 613.1L853.9 606.6L857.9 601.7ZM859.3 613.1L857.9 601.7L863.4 607.9ZM853.9 606.6L848.4 600L852.5 595.5ZM853.9 606.6L852.5 595.5L857.9 601.7ZM868.9 614.2L863.4 607.9L867.4 602.7ZM868.9 614.2L867.4 602.7L872.9 608.7ZM863.4 607.9L857.9 601.7L861.9 596.8ZM863.4 607.9L861.9 596.8L867.4 602.7ZM857.9 601.7L852.5 595.5L856.5 591ZM857.9 601.7L856.5 591L861.9 596.8ZM872.9 608.7L867.4 602.7L871.4 597.6ZM872.9 608.7L871.4 597.6L876.9 603.2ZM867.4 602.7L861.9 596.8L866 592ZM867.4 602.7L866 592L871.4 597.6ZM861.9 596.8L856.5 591L860.6 586.5ZM861.9 596.8L860.6 586.5L866 592Z"/>
<path class="g" d="M864.9 619.8L848.4 600L860.6 586.5L876.9 603.2Z"/>
<path fill="#00ff00" stroke="#00ff00" stroke-width=".5" d="M953 648.3L946.9 643.5L950.7 640.2ZM953 648.3L950.7 640.2L956.7 645ZM946.9 643.5L940.8 638.8L944.6 635.5ZM946.9 643.5L944.6 635.5L950.7 640.2ZM940.8 638.8L934.9 634.1L938.7 630.9ZM940.8 638.8L938.7 630.9L944.6 635.5ZM956.7 645L950.7 640.2L954.4 637ZM956.7 645L954.4 637L960.5 641.8ZM950.7 640.2L944.6 635.5L948.4 632.3ZM950.7 640.2L948.4 632.3L954.4 637ZM944.6 635.5L938.7 630.9L942.5 627.7ZM944.6 635.5L942.5 627.7L948.4 632.3ZM960.5 641.8L954.4 637L958.1 633.8ZM960.5 641.8L958.1 633.8L964.2 638.6ZM954.4 637L948.4 632.3L952.1 629.1ZM954.4 637L952.1 629.1L958.1 633.8ZM948.4 632.3L942.5 627.7L946.2 624.5ZM948.4 632.3L946.2 624.5L952.1 629.1Z"/>
<path class="g" d="M953 648.3L934.9 634.1L946.2 624.5L964.2 638.6Z"/>
<path fill="#72ff00" stroke="#72ff00" stroke-width=".5" d="M855.6 539.6L853.2 531.1L854.8 530.6ZM855.6 539.6L854.8 530.6L858.2 529.3L859.5 534.1ZM859.5 534.1L858.2 529.3L859.1 529ZM859.5 534.1L859.1 529L863.1 527.4L863.4 528.8ZM863.4 528.8L863.1 527.4L863.3 527.4ZM863.4 528.8L863.3 527.4L864.9 526.7Z"/>
<path fill="#aaff00" stroke="#aaff00" stroke-width=".5" d="M853.2 531.1L849.2 517.3L853.1 510.6L854.8 530.6ZM854.8 530.6L853.1 510.6L858.2 529.3ZM849.2 517.3L845 502.4L847.9 501.8ZM849.2 517.3L847.9 501.8L850.5 501L853.1 510.6ZM858.2 529.3L853.1 510.6L857.1 504L859.1 529ZM859.1 529L857.1 504L863.1 527.4ZM853.1 510.6L850.5 501L852.3 500.6ZM853.1 510.6L852.3 500.6L855.9 499.5L857.1 504ZM863.1 527.4L857.1 504L860.5 498.1L861 497.9L863.3 527.4ZM863.3 527.4L861 497.9L861.1 497.9L867.4 523.4L864.9 526.7ZM857.1 504L855.9 499.5L856.7 499.3ZM857.1 504L856.7 499.3L860.5 498.1Z"/>
<path fill="#e3ff00" stroke="#e3ff00" stroke-width=".5" d="M845 502.4L842.7 494.5L846.6 486.5L847.9 501.8ZM847.9 501.8L846.6 486.5L850.5 501ZM842.7 494.5L836.5 472.9L840.8 472.2ZM842.7 494.5L840.8 472.2L842.6 471.8L846.6 486.5ZM850.5 501L846.6 486.5L850.5 478.4L852.3 500.6ZM852.3 500.6L850.5 478.4L855.9 499.5ZM846.6 486.5L842.6 471.8L845.3 471.3ZM846.6 486.5L845.3 471.3L848.5 470.6L850.5 478.4ZM860.5 498.1L861 497.3L861 497.9ZM861 497.9L861 497.3L861.1 497.9ZM855.9 499.5L850.5 478.4L854.4 470.4L856.7 499.3ZM856.7 499.3L854.4 470.4L861 497.3L860.5 498.1ZM850.5 478.4L848.5 470.6L849.8 470.3ZM850.5 478.4L849.8 470.3L854.1 469.2L854.4 470.4Z"/>
<path fill="#fff200" stroke="#fff200" stroke-width=".5" d="M836.5 472.9L836 471.1L839.9 461.6L840.8 472.2ZM840.8 472.2L839.9 461.6L842.6 471.8ZM842.6 471.8L839.9 461.6L843.7 452.1L845.3 471.3ZM845.3 471.3L843.7 452.1L848.5 470.6ZM848.5 470.6L843.7 452.1L847.6 442.5L849.8 470.3ZM849.8 470.3L847.6 442.5L854.1 469.2Z"/>
<path class="g" d="M855.6 539.6L836 471.1L847.6 442.5L867.4 523.4Z"/>
<path fill="#aaff00" stroke="#aaff00" stroke-width=".5" d="M867.4 523.4L861.1 497.9L865.3 496.4ZM867.4 523.4L865.3 496.4L866.1 496.1L871.3 517.9ZM871.3 517.9L866.1 496.1L869.6 494.9ZM871.3 517.9L869.6 494.9L871 494.4L875.1 512.4ZM875.1 512.4L871 494.4L873.8 493.4ZM875.1 512.4L873.8 493.4L875.8 492.6L879 507Z"/>
<path fill="#e3ff00" stroke="#e3ff00" stroke-width=".5" d="M861.1 497.9L861 497.3L864.9 491.2L865.3 496.4ZM865.3 496.4L864.9 491.2L866.1 496.1ZM861 497.3L854.4 470.4L855.3 468.9L858.7 467.9ZM861 497.3L858.7 467.9L859.4 467.6L864.9 491.2ZM854.4 470.4L854.1 469.2L854.3 469.2ZM854.4 470.4L854.3 469.2L855.3 468.9ZM866.1 496.1L864.9 491.2L868.9 485.1L869.6 494.9ZM869.6 494.9L868.9 485.1L871 494.4ZM864.9 491.2L859.4 467.6L863.1 466.5ZM864.9 491.2L863.1 466.5L864.5 466L868.9 485.1ZM871 494.4L868.9 485.1L872.8 479L873.8 493.4ZM873.8 493.4L872.8 479L875.8 492.6ZM868.9 485.1L864.5 466L867.4 465.1ZM868.9 485.1L867.4 465.1L869.6 464.4L872.8 479Z"/>
<path fill="#fff200" stroke="#fff200" stroke-width=".5" d="M855.3 468.9L858.4 463.6L858.7 467.9ZM858.7 467.9L858.4 463.6L859.4 467.6ZM854.1 469.2L847.6 442.5L849.6 438.9L851.9 438.3L854.3 469.2ZM854.3 469.2L851.9 438.3L852.4 438.1L858.4 463.6L855.3 468.9ZM859.4 467.6L858.4 463.6L862.4 456.8L863.1 466.5ZM863.1 466.5L862.4 456.8L864.5 466ZM858.4 463.6L852.4 438.1L856.4 437.1ZM858.4 463.6L856.4 437.1L857.8 436.7L862.4 456.8ZM864.5 466L862.4 456.8L866.4 450L867.4 465.1ZM867.4 465.1L866.4 450L869.6 464.4ZM862.4 456.8L857.8 436.7L860.8 435.9ZM862.4 456.8L860.8 435.9L863.1 435.2L866.4 450Z"/>
<path fill="#ffd900" stroke="#ffd900" stroke-width=".5" d="M849.6 438.9L851.6 435L851.9 438.3ZM851.9 438.3L851.6 435L852.4 438.1ZM852.4 438.1L851.6 435L855.7 427.5L856.4 437.1ZM856.4 437.1L855.7 427.5L857.8 436.7ZM857.8 436.7L855.7 427.5L859.7 420L860.8 435.9ZM860.8 435.9L859.7 420L863.1 435.2Z"/>
<path class="g" d="M867.4 523.4L847.6 442.5L859.7 420L879 507Z"/>
<path fill="#72ff00" stroke="#72ff00" stroke-width=".5" d="M843.6 554.3L837.9 536.5L841.8 535.3ZM843.6 554.3L841.8 535.3L843.1 534.8L847.6 549.4ZM847.6 549.4L843.1 534.8L846.2 533.7ZM847.6 549.4L846.2 533.7L848.2 532.9L851.6 544.5ZM851.6 544.5L848.2 532.9L850.5 532.1ZM851.6 544.5L850.5 532.1L853.2 531.1L855.6 539.6Z"/>
<path fill="#aaff00" stroke="#aaff00" stroke-width=".5" d="M837.9 536.5L837.2 534.5L841.2 528.7L841.8 535.3ZM841.8 535.3L841.2 528.7L843.1 534.8ZM837.2 534.5L830.7 514.2L834.7 507.7ZM837.2 534.5L834.7 507.7L841.2 528.7ZM830.7 514.2L828.4 507L830 506.7ZM830.7 514.2L830 506.7L834.1 505.6L834.7 507.7ZM843.1 534.8L841.2 528.7L845.2 523L846.2 533.7ZM846.2 533.7L845.2 523L848.2 532.9ZM841.2 528.7L834.7 507.7L836.4 504.9L839 504.2ZM841.2 528.7L839 504.2L839.6 504L845.2 523ZM834.7 507.7L834.1 505.6L834.5 505.5ZM834.7 507.7L834.5 505.5L836.4 504.9ZM848.2 532.9L845.2 523L849.2 517.3L850.5 532.1ZM850.5 532.1L849.2 517.3L853.2 531.1ZM845.2 523L839.6 504L843.5 503ZM845.2 523L843.5 503L845 502.4L849.2 517.3Z"/>
<path fill="#e3ff00" stroke="#e3ff00" stroke-width=".5" d="M828.4 507L824.1 493.6L828.1 486.1L830 506.7ZM830 506.7L828.1 486.1L834.1 505.6ZM836.4 504.9L838.7 501.1L839 504.2ZM839 504.2L838.7 501.1L839.6 504ZM834.1 505.6L828.1 486.1L832 478.6L834.5 505.5ZM834.5 505.5L832 478.6L838.7 501.1L836.4 504.9ZM839.6 504L838.7 501.1L842.7 494.5L843.5 503ZM843.5 503L842.7 494.5L845 502.4ZM838.7 501.1L832 478.6L834.8 473.3L836.2 473ZM838.7 501.1L836.2 473L836.5 472.9L842.7 494.5Z"/>
<path fill="#fff200" stroke="#fff200" stroke-width=".5" d="M834.8 473.3L836 471.1L836.2 473ZM836.2 473L836 471.1L836.5 472.9Z"/>
<path class="g" d="M843.6 554.3L824.1 493.6L836 471.1L855.6 539.6Z"/>
<path fill="#ffd900" stroke="#ffd900" stroke-width=".5" d="M884.4 395.2L883.8 394.5L884.3 394.4ZM884.4 395.2L884.3 394.4L885.4 394.3Z"/>
<path fill="#ffc000" stroke="#ffc000" stroke-width=".5" d="M883.8 394.5L878.7 388.2L882.8 384.9L884.3 394.4ZM884.3 394.4L882.8 384.9L888.4 391.7L885.4 394.3ZM878.7 388.2L873.1 381.2L877.1 378.1ZM878.7 388.2L877.1 378.1L882.8 384.9ZM873.1 381.2L867.5 374.3L871.5 371.4ZM873.1 381.2L871.5 371.4L877.1 378.1ZM888.4 391.7L882.8 384.9L886.8 381.7ZM888.4 391.7L886.8 381.7L892.5 388.3ZM882.8 384.9L877.1 378.1L881.2 375.1ZM882.8 384.9L881.2 375.1L886.8 381.7ZM877.1 378.1L871.5 371.4L875.6 368.5ZM877.1 378.1L875.6 368.5L881.2 375.1ZM892.5 388.3L886.8 381.7L890.8 378.4ZM892.5 388.3L890.8 378.4L896.5 384.9ZM886.8 381.7L881.2 375.1L885.2 372ZM886.8 381.7L885.2 372L890.8 378.4ZM881.2 375.1L875.6 368.5L879.6 365.6ZM881.2 375.1L879.6 365.6L885.2 372Z"/>
<path class="g" d="M884.4 395.2L867.5 374.3L879.6 365.6L896.5 384.9Z"/>
<path fill="#fff200" stroke="#fff200" stroke-width=".5" d="M819.7 451.3L814.4 446L818.1 436.5ZM819.7 451.3L818.1 436.5L823.4 442.2ZM814.4 446L809.2 440.7L812.8 430.8ZM814.4 446L812.8 430.8L818.1 436.5ZM809.2 440.7L804.1 435.4L807.6 425.1ZM809.2 440.7L807.6 425.1L812.8 430.8ZM823.4 442.2L818.1 436.5L820.8 429.6L822.2 430.1ZM823.4 442.2L822.2 430.1L825.8 431.3L827.2 433ZM818.1 436.5L812.8 430.8L814.2 427.2L817.3 428.4ZM818.1 436.5L817.3 428.4L820.8 429.6ZM812.8 430.8L807.6 425.1L807.8 424.7L812.4 426.5ZM812.8 430.8L812.4 426.5L814.2 427.2ZM827.2 433L825.8 431.3L827.1 431.8ZM827.2 433L827.1 431.8L827.7 432Z"/>
<path fill="#ffd900" stroke="#ffd900" stroke-width=".5" d="M820.8 429.6L821.8 426.9L822.2 430.1ZM822.2 430.1L821.8 426.9L825.8 431.3ZM814.2 427.2L816.5 420.8L817.3 428.4ZM817.3 428.4L816.5 420.8L821.8 426.9L820.8 429.6ZM807.8 424.7L811.2 414.8L812.4 426.5ZM812.4 426.5L811.2 414.8L816.5 420.8L814.2 427.2ZM825.8 431.3L821.8 426.9L825.6 417.3L827.1 431.8ZM827.1 431.8L825.6 417.3L831 423.8L827.7 432ZM821.8 426.9L816.5 420.8L820.2 410.8ZM821.8 426.9L820.2 410.8L825.6 417.3ZM816.5 420.8L811.2 414.8L814.8 404.4ZM816.5 420.8L814.8 404.4L820.2 410.8Z"/>
<path class="g" d="M819.7 451.3L804.1 435.4L814.8 404.4L831 423.8Z"/>
<path fill="#00ff00" stroke="#00ff00" stroke-width=".5" d="M853 641.6L847.4 632.9L851.4 626.3ZM853 641.6L851.4 626.3L857 634.3ZM847.4 632.9L841.8 624.3L845.8 618.4ZM847.4 632.9L845.8 618.4L851.4 626.3ZM841.8 624.3L836.3 615.7L839 612.2L840.5 612.1ZM841.8 624.3L840.5 612.1L841.6 612.3L845.8 618.4ZM857 634.3L851.4 626.3L855.4 619.7ZM857 634.3L855.4 619.7L860.9 627.1ZM851.4 626.3L845.8 618.4L849.3 613.2L849.9 613.3ZM851.4 626.3L849.9 613.3L850.6 613.5L855.4 619.7ZM845.8 618.4L841.6 612.3L845.2 612.4ZM845.8 618.4L845.2 612.4L849.3 613.2ZM860.9 627.1L855.4 619.7L857.9 615.5L859.7 616ZM860.9 627.1L859.7 616L862.8 617.3L864.9 619.8ZM855.4 619.7L850.6 613.5L854.7 614.3ZM855.4 619.7L854.7 614.3L857.9 615.5Z"/>
<path fill="#39ff00" stroke="#39ff00" stroke-width=".5" d="M839 612.2L840.3 610.5L840.5 612.1ZM840.5 612.1L840.3 610.5L841.6 612.3ZM849.3 613.2L849.9 612.5L849.9 613.3ZM849.9 613.3L849.9 612.5L850.6 613.5ZM841.6 612.3L840.3 610.5L844.4 605.2L845.2 612.4ZM845.2 612.4L844.4 605.2L849.9 612.5L849.3 613.2ZM857.9 615.5L859.3 613.1L859.7 616ZM859.7 616L859.3 613.1L862.8 617.3ZM850.6 613.5L849.9 612.5L853.9 606.6L854.7 614.3ZM854.7 614.3L853.9 606.6L859.3 613.1L857.9 615.5ZM849.9 612.5L844.4 605.2L848.4 600ZM849.9 612.5L848.4 600L853.9 606.6Z"/>
<path class="g" d="M853 641.6L836.3 615.7L848.4 600L864.9 619.8Z"/>
<path fill="#ffd900" stroke="#ffd900" stroke-width=".5" d="M842.9 400.7L837.5 396.8L840.7 392.9L841.8 393.3ZM842.9 400.7L841.8 393.3L846.1 394.9L847 395.5ZM837.5 396.8L832.3 392.9L834.2 390.5L836.8 391.5ZM837.5 396.8L836.8 391.5L840.7 392.9ZM832.3 392.9L827 389.1L827.8 388.2L831.8 389.7ZM832.3 392.9L831.8 389.7L834.2 390.5ZM847 395.5L846.1 394.9L846.9 395.2ZM847 395.5L846.9 395.2L847.2 395.3Z"/>
<path fill="#ffc000" stroke="#ffc000" stroke-width=".5" d="M840.7 392.9L841.6 391.8L841.8 393.3ZM841.8 393.3L841.6 391.8L846.1 394.9ZM834.2 390.5L836.3 388L836.8 391.5ZM836.8 391.5L836.3 388L841.6 391.8L840.7 392.9ZM827.8 388.2L831.1 384.3L831.8 389.7ZM831.8 389.7L831.1 384.3L836.3 388L834.2 390.5ZM846.1 394.9L841.6 391.8L845.7 386.7L846.9 395.2ZM846.9 395.2L845.7 386.7L851.1 390.4L847.2 395.3ZM841.6 391.8L836.3 388L840.4 383.1ZM841.6 391.8L840.4 383.1L845.7 386.7ZM836.3 388L831.1 384.3L835.2 379.5ZM836.3 388L835.2 379.5L840.4 383.1ZM851.1 390.4L845.7 386.7L849.8 381.7ZM851.1 390.4L849.8 381.7L855.2 385.2ZM845.7 386.7L840.4 383.1L844.5 378.2ZM845.7 386.7L844.5 378.2L849.8 381.7ZM840.4 383.1L835.2 379.5L839.2 374.8ZM840.4 383.1L839.2 374.8L844.5 378.2Z"/>
<path class="g" d="M842.9 400.7L827 389.1L839.2 374.8L855.2 385.2Z"/>
<path fill="#00ff00" stroke="#00ff00" stroke-width=".5" d="M923.4 643.4L917.6 632.4L921.5 628.9ZM923.4 643.4L921.5 628.9L927.2 640.3ZM917.6 632.4L911.8 621.3L915.8 617.5ZM917.6 632.4L915.8 617.5L921.5 628.9ZM911.8 621.3L910.4 618.6L911.4 618.1ZM911.8 621.3L911.4 618.1L915.1 616.3L915.8 617.5ZM927.2 640.3L921.5 628.9L925.4 625.5ZM927.2 640.3L925.4 625.5L931.1 637.2ZM921.5 628.9L915.8 617.5L919.3 614.1L919.7 613.9ZM921.5 628.9L919.7 613.9L919.8 613.9L925.4 625.5ZM915.8 617.5L915.1 616.3L915.6 616.1ZM915.8 617.5L915.6 616.1L919.3 614.1ZM931.1 637.2L925.4 625.5L929.3 622.1ZM931.1 637.2L929.3 622.1L934.9 634.1ZM925.4 625.5L919.8 613.9L923.8 611.8ZM925.4 625.5L923.8 611.8L924.3 611.5L929.3 622.1Z"/>
<path fill="#39ff00" stroke="#39ff00" stroke-width=".5" d="M910.4 618.6L906 610.2L910 606.1L911.4 618.1ZM911.4 618.1L910 606.1L915.1 616.3ZM919.3 614.1L919.7 613.8L919.7 613.9ZM919.7 613.9L919.7 613.8L919.8 613.9ZM915.1 616.3L910 606.1L914 602.1L915.6 616.1ZM915.6 616.1L914 602.1L919.7 613.8L919.3 614.1ZM919.8 613.9L919.7 613.8L923.6 610.1L923.8 611.8ZM923.8 611.8L923.6 610.1L924.3 611.5ZM919.7 613.8L914 602.1L917.9 598ZM919.7 613.8L917.9 598L923.6 610.1Z"/>
<path class="g" d="M923.4 643.4L906 610.2L917.9 598L934.9 634.1Z"/>
<path fill="#72ff00" stroke="#72ff00" stroke-width=".5" d="M831.4 568.2L825 550.5L829.1 545.2ZM831.4 568.2L829.1 545.2L835.5 563.6ZM825 550.5L821.9 541.8L824.1 541.2ZM825 550.5L824.1 541.2L827.4 540.1L829.1 545.2ZM835.5 563.6L829.1 545.2L833.2 539.8ZM835.5 563.6L833.2 539.8L839.5 559ZM829.1 545.2L827.4 540.1L828.6 539.8ZM829.1 545.2L828.6 539.8L832.7 538.4L833.2 539.8ZM839.5 559L833.2 539.8L834.9 537.6L837.4 536.7ZM839.5 559L837.4 536.7L837.9 536.5L843.6 554.3ZM833.2 539.8L832.7 538.4L833 538.3ZM833.2 539.8L833 538.3L834.9 537.6Z"/>
<path fill="#aaff00" stroke="#aaff00" stroke-width=".5" d="M821.9 541.8L818.6 532.6L822.6 526.4L824.1 541.2ZM824.1 541.2L822.6 526.4L827.4 540.1ZM818.6 532.6L812.1 514.3L814.3 510.5L816.3 510.1ZM818.6 532.6L816.3 510.1L816.9 509.9L822.6 526.4ZM827.4 540.1L822.6 526.4L826.7 520.3L828.6 539.8ZM828.6 539.8L826.7 520.3L832.7 538.4ZM822.6 526.4L816.9 509.9L820.9 509ZM822.6 526.4L820.9 509L822.8 508.5L826.7 520.3ZM834.9 537.6L837.2 534.5L837.4 536.7ZM837.4 536.7L837.2 534.5L837.9 536.5ZM832.7 538.4L826.7 520.3L830.7 514.2L833 538.3ZM833 538.3L830.7 514.2L837.2 534.5L834.9 537.6ZM826.7 520.3L822.8 508.5L825.5 507.9ZM826.7 520.3L825.5 507.9L828.4 507L830.7 514.2Z"/>
<path fill="#e3ff00" stroke="#e3ff00" stroke-width=".5" d="M814.3 510.5L816.1 507.4L816.3 510.1ZM816.3 510.1L816.1 507.4L816.9 509.9ZM816.9 509.9L816.1 507.4L820.1 500.5L820.9 509ZM820.9 509L820.1 500.5L822.8 508.5ZM822.8 508.5L820.1 500.5L824.1 493.6L825.5 507.9ZM825.5 507.9L824.1 493.6L828.4 507Z"/>
<path class="g" d="M831.4 568.2L812.1 514.3L824.1 493.6L843.6 554.3Z"/>
<path fill="#aaff00" stroke="#aaff00" stroke-width=".5" d="M800.8 542.2L795.8 537.2L799.5 528ZM800.8 542.2L799.5 528L804.6 532.9ZM795.8 537.2L790.8 532.4L794.4 523.1ZM795.8 537.2L794.4 523.1L799.5 528ZM790.8 532.4L785.8 527.6L789.4 518.3ZM790.8 532.4L789.4 518.3L794.4 523.1ZM804.6 532.9L799.5 528L803.2 518.6ZM804.6 532.9L803.2 518.6L808.3 523.6ZM799.5 528L794.4 523.1L798.1 513.7ZM799.5 528L798.1 513.7L803.2 518.6ZM794.4 523.1L789.4 518.3L793 508.9ZM794.4 523.1L793 508.9L798.1 513.7ZM808.3 523.6L803.2 518.6L806.9 509.3ZM808.3 523.6L806.9 509.3L812.1 514.3ZM803.2 518.6L798.1 513.7L801.7 504.3ZM803.2 518.6L801.7 504.3L806.9 509.3ZM798.1 513.7L793 508.9L796 501L796.9 501.5ZM798.1 513.7L796.9 501.5L801.7 504.3L801.7 504.3Z"/>
<path fill="#e3ff00" stroke="#e3ff00" stroke-width=".5" d="M796 501L796.7 499.4L796.9 501.5ZM796.9 501.5L796.7 499.4L801.7 504.3Z"/>
<path class="g" d="M800.8 542.2L785.8 527.6L796.7 499.4L812.1 514.3Z"/>
<path fill="#39ff00" stroke="#39ff00" stroke-width=".5" d="M819 582.2L816.8 577.4L818.4 577.1ZM819 582.2L818.4 577.1L822.3 575.7L823.1 577.5ZM823.1 577.5L822.3 575.7L822.9 575.5ZM823.1 577.5L822.9 575.5L826 574.3Z"/>
<path fill="#72ff00" stroke="#72ff00" stroke-width=".5" d="M816.8 577.4L813 568.9L817 562.8L818.4 577.1ZM818.4 577.1L817 562.8L822.3 575.7ZM813 568.9L806.9 555.6L810.8 547.9ZM813 568.9L810.8 547.9L817 562.8ZM806.9 555.6L801.7 544L805.7 544.2ZM806.9 555.6L805.7 544.2L809.1 543.8L810.8 547.9ZM822.3 575.7L817 562.8L821 556.7L822.9 575.5ZM822.9 575.5L821 556.7L827.3 572.9L826 574.3ZM817 562.8L810.8 547.9L813.1 543.4L815 543.2ZM817 562.8L815 543.2L815.8 543L821 556.7ZM810.8 547.9L809.1 543.8L810.4 543.8ZM810.8 547.9L810.4 543.8L813.1 543.4ZM827.3 572.9L821 556.7L825 550.5ZM827.3 572.9L825 550.5L831.4 568.2ZM821 556.7L815.8 543L819.6 542.5ZM821 556.7L819.6 542.5L821.9 541.8L825 550.5Z"/>
<path fill="#aaff00" stroke="#aaff00" stroke-width=".5" d="M801.7 544L800.8 542.2L804.6 532.9L805.7 544.2ZM805.7 544.2L804.6 532.9L809.1 543.8ZM813.1 543.4L814.7 540.2L815 543.2ZM815 543.2L814.7 540.2L815.8 543ZM809.1 543.8L804.6 532.9L808.3 523.6L810.4 543.8ZM810.4 543.8L808.3 523.6L814.7 540.2L813.1 543.4ZM815.8 543L814.7 540.2L818.6 532.6L819.6 542.5ZM819.6 542.5L818.6 532.6L821.9 541.8ZM814.7 540.2L808.3 523.6L812.1 514.3ZM814.7 540.2L812.1 514.3L818.6 532.6Z"/>
<path class="g" d="M819 582.2L800.8 542.2L812.1 514.3L831.4 568.2Z"/>
<path fill="#ffd900" stroke="#ffd900" stroke-width=".5" d="M831 423.8L825.6 417.3L829.6 410.4ZM831 423.8L829.6 410.4L835 416.1ZM825.6 417.3L820.2 410.8L824.2 404.8ZM825.6 417.3L824.2 404.8L829.6 410.4ZM820.2 410.8L814.8 404.4L818.9 399.3ZM820.2 410.8L818.9 399.3L824.2 404.8ZM835 416.1L829.6 410.4L833.6 403.6ZM835 416.1L833.6 403.6L838.9 408.4ZM829.6 410.4L824.2 404.8L828.2 398.9ZM829.6 410.4L828.2 398.9L833.6 403.6ZM824.2 404.8L818.9 399.3L823 394.2ZM824.2 404.8L823 394.2L828.2 398.9ZM838.9 408.4L833.6 403.6L837.5 396.8ZM838.9 408.4L837.5 396.8L842.9 400.7ZM833.6 403.6L828.2 398.9L832.3 392.9ZM833.6 403.6L832.3 392.9L837.5 396.8ZM828.2 398.9L823 394.2L827 389.1ZM828.2 398.9L827 389.1L832.3 392.9Z"/>
<path class="g" d="M831 423.8L814.8 404.4L827 389.1L842.9 400.7Z"/>
<path fill="#39ff00" stroke="#39ff00" stroke-width=".5" d="M894 622.6L888.2 616.1L892.3 611.8ZM894 622.6L892.3 611.8L898 618.5ZM888.2 616.1L882.6 609.6L886.6 605.2ZM888.2 616.1L886.6 605.2L892.3 611.8ZM882.6 609.6L876.9 603.2L881 598.6ZM882.6 609.6L881 598.6L886.6 605.2ZM898 618.5L892.3 611.8L896.3 607.5ZM898 618.5L896.3 607.5L902 614.3ZM892.3 611.8L886.6 605.2L890.6 600.8ZM892.3 611.8L890.6 600.8L896.3 607.5ZM886.6 605.2L881 598.6L885 594.1ZM886.6 605.2L885 594.1L890.6 600.8ZM902 614.3L896.3 607.5L900.3 603.3ZM902 614.3L900.3 603.3L906 610.2ZM896.3 607.5L890.6 600.8L894.6 596.4ZM896.3 607.5L894.6 596.4L900.3 603.3ZM890.6 600.8L885 594.1L889 589.6ZM890.6 600.8L889 589.6L894.6 596.4Z"/>
<path class="g" d="M894 622.6L876.9 603.2L889 589.6L906 610.2Z"/>
<path fill="#aaff00" stroke="#aaff00" stroke-width=".5" d="M812.1 514.3L806.9 509.3L807.9 507.4L811.6 509.3ZM812.1 514.3L811.6 509.3L814.3 510.5ZM806.9 509.3L801.7 504.3L801.7 504.3L806.6 506.9ZM806.9 509.3L806.6 506.9L807.9 507.4ZM801.7 504.3L801.7 504.3L801.7 504.3ZM801.7 504.3L801.7 504.3L801.7 504.3Z"/>
<path fill="#e3ff00" stroke="#e3ff00" stroke-width=".5" d="M807.9 507.4L810.8 502.1L811.6 509.3ZM811.6 509.3L810.8 502.1L816.1 507.4L814.3 510.5ZM801.7 504.3L805.6 496.8L806.6 506.9ZM806.6 506.9L805.6 496.8L810.8 502.1L807.9 507.4ZM801.7 504.3L796.7 499.4L800.5 491.6L801.7 504.3ZM801.7 504.3L800.5 491.6L805.6 496.8L801.7 504.3ZM816.1 507.4L810.8 502.1L814.8 494.8ZM816.1 507.4L814.8 494.8L820.1 500.5ZM810.8 502.1L805.6 496.8L809.5 489.2ZM810.8 502.1L809.5 489.2L814.8 494.8ZM805.6 496.8L800.5 491.6L804.3 483.7ZM805.6 496.8L804.3 483.7L809.5 489.2ZM820.1 500.5L814.8 494.8L818.7 487.6ZM820.1 500.5L818.7 487.6L824.1 493.6ZM814.8 494.8L809.5 489.2L813.4 481.6ZM814.8 494.8L813.4 481.6L818.7 487.6ZM809.5 489.2L804.3 483.7L808.2 475.8ZM809.5 489.2L808.2 475.8L813.4 481.6Z"/>
<path class="g" d="M812.1 514.3L796.7 499.4L808.2 475.8L824.1 493.6Z"/>
<path fill="#ffd900" stroke="#ffd900" stroke-width=".5" d="M872.1 406.4L866.4 399.3L870.5 395.6L870.5 395.6ZM872.1 406.4L870.5 395.6L870.6 395.6L876.2 402.7ZM866.4 399.3L863.9 396.2L865.9 396ZM866.4 399.3L865.9 396L870.5 395.6ZM876.2 402.7L870.6 395.6L875.1 395.2ZM876.2 402.7L875.1 395.2L877.2 395.1L880.3 398.9ZM880.3 398.9L877.2 395.1L879.7 394.8ZM880.3 398.9L879.7 394.8L883.8 394.5L884.4 395.2Z"/>
<path fill="#ffc000" stroke="#ffc000" stroke-width=".5" d="M870.5 395.6L870.5 395.6L870.5 395.6ZM870.5 395.6L870.5 395.6L870.6 395.6ZM863.9 396.2L860.8 392.3L864.9 388.6L865.9 396ZM865.9 396L864.9 388.6L870.5 395.6L870.5 395.6ZM860.8 392.3L855.2 385.2L859.3 381.6ZM860.8 392.3L859.3 381.6L864.9 388.6ZM870.6 395.6L870.5 395.6L874.6 391.9L875.1 395.2ZM875.1 395.2L874.6 391.9L877.2 395.1ZM870.5 395.6L864.9 388.6L869 384.9ZM870.5 395.6L869 384.9L874.6 391.9ZM864.9 388.6L859.3 381.6L863.4 377.9ZM864.9 388.6L863.4 377.9L869 384.9ZM877.2 395.1L874.6 391.9L878.7 388.2L879.7 394.8ZM879.7 394.8L878.7 388.2L883.8 394.5ZM874.6 391.9L869 384.9L873.1 381.2ZM874.6 391.9L873.1 381.2L878.7 388.2ZM869 384.9L863.4 377.9L867.5 374.3ZM869 384.9L867.5 374.3L873.1 381.2Z"/>
<path class="g" d="M872.1 406.4L855.2 385.2L867.5 374.3L884.4 395.2Z"/>
<path fill="#e3ff00" stroke="#e3ff00" stroke-width=".5" d="M824.1 493.6L818.7 487.6L822.7 479.9ZM824.1 493.6L822.7 479.9L828.1 486.1ZM818.7 487.6L813.4 481.6L817.3 473.7ZM818.7 487.6L817.3 473.7L822.7 479.9ZM813.4 481.6L808.2 475.8L812 467.6ZM813.4 481.6L812 467.6L817.3 473.7ZM828.1 486.1L822.7 479.9L826.6 472.2ZM828.1 486.1L826.6 472.2L832 478.6ZM822.7 479.9L817.3 473.7L819.8 468.7L821.5 469.3ZM822.7 479.9L821.5 469.3L825.1 470.4L826.6 472.2ZM817.3 473.7L812 467.6L812.6 466.3L816.7 467.7ZM817.3 473.7L816.7 467.7L819.8 468.7ZM832 478.6L826.6 472.2L827.2 471L831.4 472.3ZM832 478.6L831.4 472.3L834.8 473.3ZM826.6 472.2L825.1 470.4L826.4 470.8ZM826.6 472.2L826.4 470.8L827.2 471Z"/>
<path fill="#fff200" stroke="#fff200" stroke-width=".5" d="M819.8 468.7L821.2 465.8L821.5 469.3ZM821.5 469.3L821.2 465.8L825.1 470.4ZM812.6 466.3L815.8 459.5L816.7 467.7ZM816.7 467.7L815.8 459.5L821.2 465.8L819.8 468.7ZM827.2 471L830.5 464.4L831.4 472.3ZM831.4 472.3L830.5 464.4L836 471.1L834.8 473.3ZM825.1 470.4L821.2 465.8L825.1 457.8L826.4 470.8ZM826.4 470.8L825.1 457.8L830.5 464.4L827.2 471ZM821.2 465.8L815.8 459.5L819.7 451.3ZM821.2 465.8L819.7 451.3L825.1 457.8Z"/>
<path class="g" d="M824.1 493.6L808.2 475.8L819.7 451.3L836 471.1Z"/>
<path fill="#00ff00" stroke="#00ff00" stroke-width=".5" d="M941.4 658.1L935.3 653.1L939.2 649.9ZM941.4 658.1L939.2 649.9L945.3 654.8ZM935.3 653.1L929.3 648.2L933.2 645ZM935.3 653.1L933.2 645L939.2 649.9ZM929.3 648.2L923.4 643.4L927.2 640.3ZM929.3 648.2L927.2 640.3L933.2 645ZM945.3 654.8L939.2 649.9L943 646.7ZM945.3 654.8L943 646.7L949.1 651.5ZM939.2 649.9L933.2 645L937 641.9ZM939.2 649.9L937 641.9L943 646.7ZM933.2 645L927.2 640.3L931.1 637.2ZM933.2 645L931.1 637.2L937 641.9ZM949.1 651.5L943 646.7L946.9 643.5ZM949.1 651.5L946.9 643.5L953 648.3ZM943 646.7L937 641.9L940.8 638.8ZM943 646.7L940.8 638.8L946.9 643.5ZM937 641.9L931.1 637.2L934.9 634.1ZM937 641.9L934.9 634.1L940.8 638.8Z"/>
<path class="g" d="M941.4 658.1L923.4 643.4L934.9 634.1L953 648.3Z"/>
<path fill="#00ff00" stroke="#00ff00" stroke-width=".5" d="M881.8 639.2L876.1 632.7L880.1 627.1ZM881.8 639.2L880.1 627.1L885.8 633.7ZM876.1 632.7L870.4 626.2L874.5 620.7ZM876.1 632.7L874.5 620.7L880.1 627.1ZM870.4 626.2L864.9 619.8L866.1 618.1L869.5 619.2ZM870.4 626.2L869.5 619.2L874.5 620.6L874.5 620.7ZM885.8 633.7L880.1 627.1L883.1 623.1L884.4 623.5ZM885.8 633.7L884.4 623.5L886.2 623.9L889.9 628.2ZM880.1 627.1L874.5 620.7L874.5 620.6L879.5 622.1ZM880.1 627.1L879.5 622.1L883.1 623.1ZM874.5 620.7L874.5 620.6L874.5 620.6ZM874.5 620.7L874.5 620.6L874.5 620.6ZM889.9 628.2L886.2 623.9L889.4 624.8ZM889.9 628.2L889.4 624.8L891.9 625.5Z"/>
<path fill="#39ff00" stroke="#39ff00" stroke-width=".5" d="M866.1 618.1L868.9 614.2L869.5 619.2ZM869.5 619.2L868.9 614.2L874.5 620.6ZM883.1 623.1L884.2 621.6L884.4 623.5ZM884.4 623.5L884.2 621.6L886.2 623.9ZM874.5 620.6L878.5 615.1L879.5 622.1ZM879.5 622.1L878.5 615.1L884.2 621.6L883.1 623.1ZM874.5 620.6L868.9 614.2L872.9 608.7L874.5 620.6ZM874.5 620.6L872.9 608.7L878.5 615.1L874.5 620.6ZM886.2 623.9L884.2 621.6L888.2 616.1L889.4 624.8ZM889.4 624.8L888.2 616.1L894 622.6L891.9 625.5ZM884.2 621.6L878.5 615.1L882.6 609.6ZM884.2 621.6L882.6 609.6L888.2 616.1ZM878.5 615.1L872.9 608.7L876.9 603.2ZM878.5 615.1L876.9 603.2L882.6 609.6Z"/>
<path class="g" d="M881.8 639.2L864.9 619.8L876.9 603.2L894 622.6Z"/>
<path fill="#00ff00" stroke="#00ff00" stroke-width=".5" d="M911.5 653.1L905.6 642.9L909.6 639.4ZM911.5 653.1L909.6 639.4L915.5 649.8ZM905.6 642.9L899.8 632.8L903.8 628.9ZM905.6 642.9L903.8 628.9L909.6 639.4ZM899.8 632.8L895.3 625.1L898.7 623.8ZM899.8 632.8L898.7 623.8L900.5 623L903.8 628.9ZM915.5 649.8L909.6 639.4L913.6 635.8ZM915.5 649.8L913.6 635.8L919.4 646.6ZM909.6 639.4L903.8 628.9L907.8 625.1ZM909.6 639.4L907.8 625.1L913.6 635.8ZM903.8 628.9L900.5 623L903 622ZM903.8 628.9L903 622L905.5 620.8L907.8 625.1ZM919.4 646.6L913.6 635.8L917.6 632.4ZM919.4 646.6L917.6 632.4L923.4 643.4ZM913.6 635.8L907.8 625.1L911.8 621.3ZM913.6 635.8L911.8 621.3L917.6 632.4ZM907.8 625.1L905.5 620.8L907.2 620.1ZM907.8 625.1L907.2 620.1L910.4 618.6L911.8 621.3Z"/>
<path fill="#39ff00" stroke="#39ff00" stroke-width=".5" d="M895.3 625.1L894 622.6L898 618.5L898.7 623.8ZM898.7 623.8L898 618.5L900.5 623ZM900.5 623L898 618.5L902 614.3L903 622ZM903 622L902 614.3L905.5 620.8ZM905.5 620.8L902 614.3L906 610.2L907.2 620.1ZM907.2 620.1L906 610.2L910.4 618.6Z"/>
<path class="g" d="M911.5 653.1L894 622.6L906 610.2L923.4 643.4Z"/>
<path fill="#00ff00" stroke="#00ff00" stroke-width=".5" d="M869.7 662.3L864.1 655.4L868.1 647.8ZM869.7 662.3L868.1 647.8L873.7 654.6ZM864.1 655.4L858.5 648.5L862.5 641ZM864.1 655.4L862.5 641L868.1 647.8ZM858.5 648.5L853 641.6L857 634.3ZM858.5 648.5L857 634.3L862.5 641ZM873.7 654.6L868.1 647.8L872.1 640.3ZM873.7 654.6L872.1 640.3L877.7 646.9ZM868.1 647.8L862.5 641L866.5 633.6ZM868.1 647.8L866.5 633.6L872.1 640.3ZM862.5 641L857 634.3L860.9 627.1ZM862.5 641L860.9 627.1L866.5 633.6ZM877.7 646.9L872.1 640.3L876.1 632.7ZM877.7 646.9L876.1 632.7L881.8 639.2ZM872.1 640.3L866.5 633.6L870.4 626.2ZM872.1 640.3L870.4 626.2L876.1 632.7ZM866.5 633.6L860.9 627.1L864.9 619.8ZM866.5 633.6L864.9 619.8L870.4 626.2Z"/>
<path class="g" d="M869.7 662.3L853 641.6L864.9 619.8L881.8 639.2Z"/>
<path fill="#fff200" stroke="#fff200" stroke-width=".5" d="M836 471.1L830.5 464.4L834.3 455.1ZM836 471.1L834.3 455.1L839.9 461.6ZM830.5 464.4L825.1 457.8L828.9 448.6ZM830.5 464.4L828.9 448.6L834.3 455.1ZM825.1 457.8L819.7 451.3L823.4 442.2ZM825.1 457.8L823.4 442.2L828.9 448.6ZM839.9 461.6L834.3 455.1L838.2 445.7ZM839.9 461.6L838.2 445.7L843.7 452.1ZM834.3 455.1L828.9 448.6L832.7 439.3ZM834.3 455.1L832.7 439.3L838.2 445.7ZM828.9 448.6L823.4 442.2L827.2 433ZM828.9 448.6L827.2 433L832.7 439.3ZM843.7 452.1L838.2 445.7L841.8 436.7L842.1 436.8ZM843.7 452.1L842.1 436.8L842.7 437L847.6 442.5ZM838.2 445.7L832.7 439.3L834.7 434.3L837.1 435.1ZM838.2 445.7L837.1 435.1L841.8 436.7ZM832.7 439.3L827.2 433L827.7 432L832.1 433.4ZM832.7 439.3L832.1 433.4L834.7 434.3Z"/>
<path fill="#ffd900" stroke="#ffd900" stroke-width=".5" d="M841.8 436.7L842 436.2L842.1 436.8ZM842.1 436.8L842 436.2L842.7 437ZM834.7 434.3L836.5 430L837.1 435.1ZM837.1 435.1L836.5 430L842 436.2L841.8 436.7ZM827.7 432L831 423.8L832.1 433.4ZM832.1 433.4L831 423.8L836.5 430L834.7 434.3Z"/>
<path class="g" d="M836 471.1L819.7 451.3L831 423.8L847.6 442.5Z"/>
<path fill="#ffd900" stroke="#ffd900" stroke-width=".5" d="M859.7 420L854 413.5L858.2 408.8ZM859.7 420L858.2 408.8L863.8 415.4ZM854 413.5L848.4 407.1L852.6 402.1ZM854 413.5L852.6 402.1L858.2 408.8ZM848.4 407.1L842.9 400.7L847 395.5ZM848.4 407.1L847 395.5L852.6 402.1ZM863.8 415.4L858.2 408.8L862.3 404ZM863.8 415.4L862.3 404L868 410.9ZM858.2 408.8L852.6 402.1L856.7 397.2ZM858.2 408.8L856.7 397.2L862.3 404ZM852.6 402.1L847 395.5L847.2 395.3L851.7 395.7ZM852.6 402.1L851.7 395.7L855.6 395.9L856.7 397.2ZM868 410.9L862.3 404L866.4 399.3ZM868 410.9L866.4 399.3L872.1 406.4ZM862.3 404L856.7 397.2L857.7 396L861.3 396.2ZM862.3 404L861.3 396.2L863.9 396.2L866.4 399.3ZM856.7 397.2L855.6 395.9L856.5 396ZM856.7 397.2L856.5 396L857.7 396Z"/>
<path fill="#ffc000" stroke="#ffc000" stroke-width=".5" d="M847.2 395.3L851.1 390.4L851.7 395.7ZM851.7 395.7L851.1 390.4L855.6 395.9ZM857.7 396L860.8 392.3L861.3 396.2ZM861.3 396.2L860.8 392.3L863.9 396.2ZM855.6 395.9L851.1 390.4L855.2 385.2L856.5 396ZM856.5 396L855.2 385.2L860.8 392.3L857.7 396Z"/>
<path class="g" d="M859.7 420L842.9 400.7L855.2 385.2L872.1 406.4Z"/>
<path fill="#fff200" stroke="#fff200" stroke-width=".5" d="M847.6 442.5L842.7 437L847.1 438.2ZM847.6 442.5L847.1 438.2L849.6 438.9Z"/>
<path fill="#ffd900" stroke="#ffd900" stroke-width=".5" d="M842.7 437L842 436.2L846 428.7L847.1 438.2ZM847.1 438.2L846 428.7L851.6 435L849.6 438.9ZM842 436.2L836.5 430L840.5 422.4ZM842 436.2L840.5 422.4L846 428.7ZM836.5 430L831 423.8L835 416.1ZM836.5 430L835 416.1L840.5 422.4ZM851.6 435L846 428.7L850 421.1ZM851.6 435L850 421.1L855.7 427.5ZM846 428.7L840.5 422.4L844.5 414.7ZM846 428.7L844.5 414.7L850 421.1ZM840.5 422.4L835 416.1L838.9 408.4ZM840.5 422.4L838.9 408.4L844.5 414.7ZM855.7 427.5L850 421.1L854 413.5ZM855.7 427.5L854 413.5L859.7 420ZM850 421.1L844.5 414.7L848.4 407.1ZM850 421.1L848.4 407.1L854 413.5ZM844.5 414.7L838.9 408.4L842.9 400.7ZM844.5 414.7L842.9 400.7L848.4 407.1Z"/>
<path class="g" d="M847.6 442.5L831 423.8L842.9 400.7L859.7 420Z"/>
<path fill="#00ff00" stroke="#00ff00" stroke-width=".5" d="M899.2 664.2L893.4 655.8L897.5 651.5ZM899.2 664.2L897.5 651.5L903.4 660.5ZM893.4 655.8L887.5 647.5L891.6 642.6ZM893.4 655.8L891.6 642.6L897.5 651.5ZM887.5 647.5L881.8 639.2L885.8 633.7ZM887.5 647.5L885.8 633.7L891.6 642.6ZM903.4 660.5L897.5 651.5L901.6 647.2ZM903.4 660.5L901.6 647.2L907.4 656.7ZM897.5 651.5L891.6 642.6L895.7 637.7ZM897.5 651.5L895.7 637.7L901.6 647.2ZM891.6 642.6L885.8 633.7L889.9 628.2ZM891.6 642.6L889.9 628.2L895.7 637.7ZM907.4 656.7L901.6 647.2L905.6 642.9ZM907.4 656.7L905.6 642.9L911.5 653.1ZM901.6 647.2L895.7 637.7L899.8 632.8ZM901.6 647.2L899.8 632.8L905.6 642.9ZM895.7 637.7L889.9 628.2L891.9 625.5L894.3 625.3ZM895.7 637.7L894.3 625.3L895.3 625.1L899.8 632.8Z"/>
<path fill="#39ff00" stroke="#39ff00" stroke-width=".5" d="M891.9 625.5L894 622.6L894.3 625.3ZM894.3 625.3L894 622.6L895.3 625.1Z"/>
<path class="g" d="M899.2 664.2L881.8 639.2L894 622.6L911.5 653.1Z"/>
<path fill="#00ff00" stroke="#00ff00" stroke-width=".5" d="M929.4 668.2L923.4 663.1L927.4 659.7ZM929.4 668.2L927.4 659.7L933.5 664.8ZM923.4 663.1L917.4 658L921.4 654.7ZM923.4 663.1L921.4 654.7L927.4 659.7ZM917.4 658L911.5 653.1L915.5 649.8ZM917.4 658L915.5 649.8L921.4 654.7ZM933.5 664.8L927.4 659.7L931.3 656.4ZM933.5 664.8L931.3 656.4L937.4 661.4ZM927.4 659.7L921.4 654.7L925.3 651.5ZM927.4 659.7L925.3 651.5L931.3 656.4ZM921.4 654.7L915.5 649.8L919.4 646.6ZM921.4 654.7L919.4 646.6L925.3 651.5ZM937.4 661.4L931.3 656.4L935.3 653.1ZM937.4 661.4L935.3 653.1L941.4 658.1ZM931.3 656.4L925.3 651.5L929.3 648.2ZM931.3 656.4L929.3 648.2L935.3 653.1ZM925.3 651.5L919.4 646.6L923.4 643.4ZM925.3 651.5L923.4 643.4L929.3 648.2Z"/>
<path class="g" d="M929.4 668.2L911.5 653.1L923.4 643.4L941.4 658.1Z"/>
<path fill="#00ff00" stroke="#00ff00" stroke-width=".5" d="M886.8 678.2L881 672.8L885.2 667.1ZM886.8 678.2L885.2 667.1L891 673.5ZM881 672.8L875.3 667.5L879.4 660.9ZM881 672.8L879.4 660.9L885.2 667.1ZM875.3 667.5L869.7 662.3L873.7 654.6ZM875.3 667.5L873.7 654.6L879.4 660.9ZM891 673.5L885.2 667.1L889.3 661.5ZM891 673.5L889.3 661.5L895.1 668.8ZM885.2 667.1L879.4 660.9L883.5 654.2ZM885.2 667.1L883.5 654.2L889.3 661.5ZM879.4 660.9L873.7 654.6L877.7 646.9ZM879.4 660.9L877.7 646.9L883.5 654.2ZM895.1 668.8L889.3 661.5L893.4 655.8ZM895.1 668.8L893.4 655.8L899.2 664.2ZM889.3 661.5L883.5 654.2L887.5 647.5ZM889.3 661.5L887.5 647.5L893.4 655.8ZM883.5 654.2L877.7 646.9L881.8 639.2ZM883.5 654.2L881.8 639.2L887.5 647.5Z"/>
<path class="g" d="M886.8 678.2L869.7 662.3L881.8 639.2L899.2 664.2Z"/>
<path fill="#00ff00" stroke="#00ff00" stroke-width=".5" d="M917.2 680.1L911.1 674.7L915.2 670.8ZM917.2 680.1L915.2 670.8L921.3 676.1ZM911.1 674.7L905.1 669.4L909.2 665.6ZM911.1 674.7L909.2 665.6L915.2 670.8ZM905.1 669.4L899.2 664.2L903.4 660.5ZM905.1 669.4L903.4 660.5L909.2 665.6ZM921.3 676.1L915.2 670.8L919.3 666.9ZM921.3 676.1L919.3 666.9L925.4 672.2ZM915.2 670.8L909.2 665.6L913.3 661.8ZM915.2 670.8L913.3 661.8L919.3 666.9ZM909.2 665.6L903.4 660.5L907.4 656.7ZM909.2 665.6L907.4 656.7L913.3 661.8ZM925.4 672.2L919.3 666.9L923.4 663.1ZM925.4 672.2L923.4 663.1L929.4 668.2ZM919.3 666.9L913.3 661.8L917.4 658ZM919.3 666.9L917.4 658L923.4 663.1ZM913.3 661.8L907.4 656.7L911.5 653.1ZM913.3 661.8L911.5 653.1L917.4 658Z"/>
<path class="g" d="M917.2 680.1L899.2 664.2L911.5 653.1L929.4 668.2Z"/>
<path fill="#00ff00" stroke="#00ff00" stroke-width=".5" d="M904.6 694.7L898.6 689.1L902.8 684.3ZM904.6 694.7L902.8 684.3L908.8 689.8ZM898.6 689.1L892.7 683.6L896.8 678.8ZM898.6 689.1L896.8 678.8L902.8 684.3ZM892.7 683.6L886.8 678.2L891 673.5ZM892.7 683.6L891 673.5L896.8 678.8ZM908.8 689.8L902.8 684.3L907 679.5ZM908.8 689.8L907 679.5L913 684.9ZM902.8 684.3L896.8 678.8L901 674.1ZM902.8 684.3L901 674.1L907 679.5ZM896.8 678.8L891 673.5L895.1 668.8ZM896.8 678.8L895.1 668.8L901 674.1ZM913 684.9L907 679.5L911.1 674.7ZM913 684.9L911.1 674.7L917.2 680.1ZM907 679.5L901 674.1L905.1 669.4ZM907 679.5L905.1 669.4L911.1 674.7ZM901 674.1L895.1 668.8L899.2 664.2ZM901 674.1L899.2 664.2L905.1 669.4Z"/>
<path class="g" d="M904.6 694.7L886.8 678.2L899.2 664.2L917.2 680.1Z"/>
<text x="0" y="0" font-size="15.1" text-anchor="middle" dominant-baseline="central" transform="translate(689.5 300.9) rotate(80) scale(1.0 1)">15</text>
<text x="0" y="0" font-size="14.9" text-anchor="middle" dominant-baseline="central" transform="translate(704.9 296.5) rotate(80) scale(1.0 1)">20</text>
<text x="0" y="0" font-size="14.7" text-anchor="middle" dominant-baseline="central" transform="translate(719.8 292.1) rotate(80) scale(1.0 1)">25</text>
<text x="0" y="0" font-size="14.5" text-anchor="middle" dominant-baseline="central" transform="translate(734.4 287.9) rotate(80) scale(1.0 1)">30</text>
<text x="0" y="0" font-size="14.3" text-anchor="middle" dominant-baseline="central" transform="translate(748.5 283.8) rotate(80) scale(1.0 1)">35</text>
<text x="0" y="0" font-size="14.1" text-anchor="middle" dominant-baseline="central" transform="translate(762.3 279.9) rotate(80) scale(1.0 1)">40</text>
<text x="0" y="0" font-size="13.9" text-anchor="middle" dominant-baseline="central" transform="translate(775.6 276) rotate(80) scale(1.0 1)">45</text>
<text x="0" y="0" font-size="13.7" text-anchor="middle" dominant-baseline="central" transform="translate(788.7 272.2) rotate(80) scale(1.0 1)">50</text>
<text x="0" y="0" font-size="13.6" text-anchor="middle" dominant-baseline="central" transform="translate(801.4 268.6) rotate(80) scale(1.0 1)">55</text>
<text x="0" y="0" font-size="13.4" text-anchor="middle" dominant-baseline="central" transform="translate(813.7 265) rotate(80) scale(1.0 1)">60</text>
<text x="0" y="0" font-size="13.2" text-anchor="middle" dominant-baseline="central" transform="translate(825.8 261.5) rotate(80) scale(1.0 1)">65</text>
<text x="0" y="0" font-size="13" text-anchor="middle" dominant-baseline="central" transform="translate(837.6 258.1) rotate(80) scale(1.0 1)">70</text>
<text x="0" y="0" font-size="12.9" text-anchor="middle" dominant-baseline="central" transform="translate(849 254.8) rotate(80) scale(1.0 1)">75</text>
<text x="0" y="0" font-size="12.7" text-anchor="middle" dominant-baseline="central" transform="translate(860.2 251.6) rotate(80) scale(1.0 1)">80</text>
<text x="0" y="0" font-size="12.6" text-anchor="middle" dominant-baseline="central" transform="translate(871.1 248.4) rotate(80) scale(1.0 1)">85</text>
<text x="0" y="0" font-size="12.4" text-anchor="middle" dominant-baseline="central" transform="translate(881.7 245.4) rotate(80) scale(1.0 1)">90</text>
<text x="0" y="0" font-size="12.3" text-anchor="middle" dominant-baseline="central" transform="translate(892.1 242.3) rotate(80) scale(1.0 1)">95</text>
<text x="0" y="0" font-size="12.1" text-anchor="middle" dominant-baseline="central" transform="translate(902.3 239.4) rotate(80) scale(1.0 1)">100</text>
<text x="0" y="0" font-size="15.4" text-anchor="middle" dominant-baseline="central" transform="translate(1126.9 293.4) rotate(-80) scale(1.0 1)">500</text>
<text x="0" y="0" font-size="14.9" text-anchor="middle" dominant-baseline="central" transform="translate(1098.6 285) rotate(-80) scale(1.0 1)">1 000</text>
<text x="0" y="0" font-size="14.5" text-anchor="middle" dominant-baseline="central" transform="translate(1071.8 277) rotate(-80) scale(1.0 1)">1 500</text>
<text x="0" y="0" font-size="14.1" text-anchor="middle" dominant-baseline="central" transform="translate(1046.4 269.5) rotate(-80) scale(1.0 1)">2 000</text>
<text x="0" y="0" font-size="13.8" text-anchor="middle" dominant-baseline="central" transform="translate(1022.3 262.3) rotate(-80) scale(1.0 1)">2 500</text>
<text x="0" y="0" font-size="13.4" text-anchor="middle" dominant-baseline="central" transform="translate(999.5 255.5) rotate(-80) scale(1.0 1)">3 000</text>
<text x="0" y="0" font-size="13.1" text-anchor="middle" dominant-baseline="central" transform="translate(977.8 249.1) rotate(-80) scale(1.0 1)">3 500</text>
<text x="0" y="0" font-size="12.8" text-anchor="middle" dominant-baseline="central" transform="translate(957.1 242.9) rotate(-80) scale(1.0 1)">4 000</text>
<text x="0" y="0" font-size="12.5" text-anchor="middle" dominant-baseline="central" transform="translate(937.4 237.1) rotate(-80) scale(1.0 1)">4 500</text>
<text x="0" y="0" font-size="12.2" text-anchor="middle" dominant-baseline="central" transform="translate(918.6 231.5) rotate(-80) scale(1.0 1)">5 000</text>
<text x="0" y="0" font-size="12.2" text-anchor="middle" dominant-baseline="central" transform="translate(713.9 561.2) rotate(-22) scale(1.0 1)">800</text>
<text x="0" y="0" font-size="12.3" text-anchor="middle" dominant-baseline="central" transform="translate(1104.5 566.8) rotate(21) scale(1.0 1)">800</text>
<text x="0" y="0" font-size="12.4" text-anchor="middle" dominant-baseline="central" transform="translate(709.8 542.3) rotate(-22) scale(1.0 1)">1 000</text>
<text x="0" y="0" font-size="12.6" text-anchor="middle" dominant-baseline="central" transform="translate(1108.5 547.9) rotate(21) scale(1.0 1)">1 000</text>
<text x="0" y="0" font-size="12.7" text-anchor="middle" dominant-baseline="central" transform="translate(705.6 522.7) rotate(-22) scale(1.0 1)">1 200</text>
<text x="0" y="0" font-size="12.8" text-anchor="middle" dominant-baseline="central" transform="translate(1112.8 528.2) rotate(21) scale(1.0 1)">1 200</text>
<text x="0" y="0" font-size="13" text-anchor="middle" dominant-baseline="central" transform="translate(701.2 502.2) rotate(-22) scale(1.0 1)">1 400</text>
<text x="0" y="0" font-size="13.1" text-anchor="middle" dominant-baseline="central" transform="translate(1117.2 507.6) rotate(21) scale(1.0 1)">1 400</text>
<text x="0" y="0" font-size="13.3" text-anchor="middle" dominant-baseline="central" transform="translate(696.6 480.7) rotate(-22) scale(1.0 1)">1 600</text>
<text x="0" y="0" font-size="13.4" text-anchor="middle" dominant-baseline="central" transform="translate(1121.9 486) rotate(21) scale(1.0 1)">1 600</text>
<text x="0" y="0" font-size="13.6" text-anchor="middle" dominant-baseline="central" transform="translate(691.8 458.4) rotate(-22) scale(1.0 1)">1 800</text>
<text x="0" y="0" font-size="13.7" text-anchor="middle" dominant-baseline="central" transform="translate(1126.7 463.5) rotate(21) scale(1.0 1)">1 800</text>
<text x="0" y="0" font-size="13.9" text-anchor="middle" dominant-baseline="central" transform="translate(686.8 435) rotate(-22) scale(1.0 1)">2 000</text>
<text x="0" y="0" font-size="14" text-anchor="middle" dominant-baseline="central" transform="translate(1131.8 440) rotate(21) scale(1.0 1)">2 000</text>
<text x="0" y="0" font-size="14.2" text-anchor="middle" dominant-baseline="central" transform="translate(681.5 410.5) rotate(-22) scale(1.0 1)">2 200</text>
<text x="0" y="0" font-size="14.4" text-anchor="middle" dominant-baseline="central" transform="translate(1137.1 415.3) rotate(21) scale(1.0 1)">2 200</text>
<text x="0" y="0" font-size="14.5" text-anchor="middle" dominant-baseline="central" transform="translate(676 384.8) rotate(-22) scale(1.0 1)">2 400</text>
<text x="0" y="0" font-size="14.7" text-anchor="middle" dominant-baseline="central" transform="translate(1142.7 389.4) rotate(21) scale(1.0 1)">2 400</text>
<text x="0" y="0" font-size="14.9" text-anchor="middle" dominant-baseline="central" transform="translate(670.2 357.8) rotate(-22) scale(1.0 1)">2 600</text>
<text x="0" y="0" font-size="15.1" text-anchor="middle" dominant-baseline="central" transform="translate(1148.5 362.2) rotate(21) scale(1.0 1)">2 600</text>
<text x="0" y="0" font-size="16.1" text-anchor="middle" dominant-baseline="central" transform="translate(854.7 698.6) rotate(-30) scale(1.0 1)">1 000</text>
<text x="0" y="0" font-size="15.7" text-anchor="middle" dominant-baseline="central" transform="translate(834.3 679) rotate(-30) scale(1.0 1)">1 500</text>
<text x="0" y="0" font-size="15.3" text-anchor="middle" dominant-baseline="central" transform="translate(815 660.5) rotate(-30) scale(1.0 1)">2 000</text>
<text x="0" y="0" font-size="14.9" text-anchor="middle" dominant-baseline="central" transform="translate(796.7 643) rotate(-30) scale(1.0 1)">2 500</text>
<text x="0" y="0" font-size="14.5" text-anchor="middle" dominant-baseline="central" transform="translate(779.4 626.4) rotate(-30) scale(1.0 1)">3 000</text>
<text x="0" y="0" font-size="14.1" text-anchor="middle" dominant-baseline="central" transform="translate(762.9 610.6) rotate(-30) scale(1.0 1)">3 500</text>
<text x="0" y="0" font-size="13.8" text-anchor="middle" dominant-baseline="central" transform="translate(747.2 595.6) rotate(-30) scale(1.0 1)">4 000</text>
<text x="0" y="0" font-size="13.5" text-anchor="middle" dominant-baseline="central" transform="translate(732.3 581.3) rotate(-30) scale(1.0 1)">4 500</text>
<text x="0" y="0" font-size="13.1" text-anchor="middle" dominant-baseline="central" transform="translate(718.1 567.7) rotate(-30) scale(1.0 1)">5 000</text>
<text x="0" y="0" font-size="12.5" text-anchor="middle" dominant-baseline="central" transform="translate(934.8 708) rotate(40) scale(1.18 1)">20</text>
<text x="0" y="0" font-size="12.3" text-anchor="middle" dominant-baseline="central" transform="translate(946.8 697.6) rotate(40) scale(1.18 1)">25</text>
<text x="0" y="0" font-size="12.2" text-anchor="middle" dominant-baseline="central" transform="translate(958.5 687.4) rotate(40) scale(1.18 1)">30</text>
<text x="0" y="0" font-size="12" text-anchor="middle" dominant-baseline="central" transform="translate(969.9 677.6) rotate(40) scale(1.18 1)">35</text>
<text x="0" y="0" font-size="11.8" text-anchor="middle" dominant-baseline="central" transform="translate(980.9 668) rotate(40) scale(1.18 1)">40</text>
<text x="0" y="0" font-size="11.7" text-anchor="middle" dominant-baseline="central" transform="translate(991.6 658.7) rotate(40) scale(1.18 1)">45</text>
<text x="0" y="0" font-size="11.5" text-anchor="middle" dominant-baseline="central" transform="translate(1002.1 649.6) rotate(40) scale(1.18 1)">50</text>
<text x="0" y="0" font-size="11.3" text-anchor="middle" dominant-baseline="central" transform="translate(1012.3 640.8) rotate(40) scale(1.18 1)">55</text>
<text x="0" y="0" font-size="11.2" text-anchor="middle" dominant-baseline="central" transform="translate(1022.2 632.2) rotate(40) scale(1.18 1)">60</text>
<text x="0" y="0" font-size="11" text-anchor="middle" dominant-baseline="central" transform="translate(1031.8 623.9) rotate(40) scale(1.18 1)">65</text>
<text x="0" y="0" font-size="10.9" text-anchor="middle" dominant-baseline="central" transform="translate(1041.2 615.8) rotate(40) scale(1.18 1)">70</text>
<text x="0" y="0" font-size="10.8" text-anchor="middle" dominant-baseline="central" transform="translate(1050.4 607.8) rotate(40) scale(1.18 1)">75</text>
<text x="0" y="0" font-size="10.6" text-anchor="middle" dominant-baseline="central" transform="translate(1059.3 600.1) rotate(40) scale(1.18 1)">80</text>
<text x="0" y="0" font-size="10.5" text-anchor="middle" dominant-baseline="central" transform="translate(1068 592.5) rotate(40) scale(1.18 1)">85</text>
<text x="0" y="0" font-size="10.4" text-anchor="middle" dominant-baseline="central" transform="translate(1076.5 585.2) rotate(40) scale(1.18 1)">90</text>
<text x="0" y="0" font-size="10.2" text-anchor="middle" dominant-baseline="central" transform="translate(1084.8 578) rotate(40) scale(1.18 1)">95</text>
<text x="0" y="0" font-size="10.1" text-anchor="middle" dominant-baseline="central" transform="translate(1092.8 571) rotate(40) scale(1.18 1)">100</text>
<text x="0" y="0" font-size="17" text-anchor="start" transform="translate(690.5 251) rotate(-14) scale(1.0 1)">Manifold Absolute Pressure (kPa)</text>
<text x="0" y="0" font-size="17" text-anchor="end" transform="translate(1078 229) rotate(15) scale(1.0 1)">Engine Speed (rpm)</text>
<text x="0" y="0" font-size="19" text-anchor="start" transform="translate(700 622) rotate(47) scale(0.8 1)">Engine Speed (rpm)</text>
<text x="0" y="0" font-size="19" text-anchor="end" transform="translate(1136 600) rotate(-42) scale(0.78 1)">Manifold Absolute Pressure (kPa)</text>
<text x="645" y="480" font-size="17" text-anchor="middle" dominant-baseline="central" transform="rotate(-90 645 480)">%</text>
<text x="1173" y="483" font-size="17" text-anchor="middle" dominant-baseline="central" transform="rotate(-90 1173 483)">%</text>
</g></svg>
<div class="a" style="left:1282px;top:510px;width:28px;height:15px;background:#00ff00"></div><div class="a" style="left:1282px;top:496px;width:28px;height:15px;background:#39ff00"></div><div class="a" style="left:1282px;top:482px;width:28px;height:15px;background:#72ff00"></div><div class="a" style="left:1282px;top:467px;width:28px;height:15px;background:#aaff00"></div><div class="a" style="left:1282px;top:453px;width:28px;height:15px;background:#e3ff00"></div><div class="a" style="left:1282px;top:439px;width:28px;height:15px;background:#fff200"></div><div class="a" style="left:1282px;top:425px;width:28px;height:15px;background:#ffd900"></div><div class="a" style="left:1282px;top:411px;width:28px;height:15px;background:#ffc000"></div><div class="a" style="left:1282px;top:397px;width:28px;height:15px;background:#ffa700"></div><div class="t" style="left:1311px;top:392px;width:25px;text-align:center;font-size:12px;line-height:12px;color:#111;letter-spacing:-0.5px">2767</div><div class="t" style="left:1311px;top:406px;width:25px;text-align:center;font-size:12px;line-height:12px;color:#111;letter-spacing:-0.5px">2558</div><div class="t" style="left:1311px;top:420px;width:25px;text-align:center;font-size:12px;line-height:12px;color:#111;letter-spacing:-0.5px">2348</div><div class="t" style="left:1311px;top:434px;width:25px;text-align:center;font-size:12px;line-height:12px;color:#111;letter-spacing:-0.5px">2139</div><div class="t" style="left:1311px;top:448px;width:25px;text-align:center;font-size:12px;line-height:12px;color:#111;letter-spacing:-0.5px">1929</div><div class="t" style="left:1311px;top:462px;width:25px;text-align:center;font-size:12px;line-height:12px;color:#111;letter-spacing:-0.5px">1720</div><div class="t" style="left:1311px;top:477px;width:25px;text-align:center;font-size:12px;line-height:12px;color:#111;letter-spacing:-0.5px">1510</div><div class="t" style="left:1311px;top:491px;width:25px;text-align:center;font-size:12px;line-height:12px;color:#111;letter-spacing:-0.5px">1301</div><div class="t" style="left:1311px;top:505px;width:25px;text-align:center;font-size:12px;line-height:12px;color:#111;letter-spacing:-0.5px">1091</div><div class="t" style="left:1311px;top:519px;width:25px;text-align:center;font-size:12px;line-height:12px;color:#111;letter-spacing:-0.5px">882</div>
<div class="a" style="left:0;top:726px;width:1366px;height:2px;background:#f8f8f8"></div>
<div class="a" style="left:0;top:728px;width:1366px;height:40px;background:linear-gradient(#3a3a3a 0,#1a1a1a 2px,#0c0c0c 100%)"></div><div class="a" style="left:8px;top:729px;width:38px;height:38px;border-radius:50%;background:radial-gradient(circle at 50% 35%,#8ac4e8 0%,#2a70a8 45%,#0a3a68 70%,#1a90d0 100%);border:1px solid #4a6a8a"></div><svg class="a" style="left:15px;top:736px" width="24" height="22" viewBox="0 0 24 22"><path d="M2 4c3-2 6-2 9 0v7c-3-2-6-2-9 0z" fill="#f05a2a"/><path d="M13 4c3 2 6 2 9 0v7c-3 2-6 2-9 0z" fill="#7ac43a"/><path d="M2 13c3-2 6-2 9 0v7c-3-2-6-2-9 0z" fill="#2aa0e8"/><path d="M13 13c3 2 6 2 9 0v7c-3 2-6 2-9 0z" fill="#f8c020"/></svg><div class="a" style="left:74px;top:733px;width:30px;height:30px;border-radius:8px;background:#2d8cff"></div><svg class="a" style="left:79px;top:742px" width="20" height="12" viewBox="0 0 20 12"><rect x="0" y="0" width="13" height="12" rx="3" fill="#fff"/><path d="M14 4l6-4v12l-6-4z" fill="#fff"/></svg><div class="a" style="left:122px;top:729px;width:58px;height:38px;border:1px solid rgba(255,255,255,.25);border-radius:3px;background:linear-gradient(rgba(255,255,255,.18),rgba(255,255,255,.06) 50%,rgba(255,255,255,.02))"></div><div class="a" style="left:246px;top:729px;width:53px;height:38px;border:1px solid rgba(255,255,255,.25);border-radius:3px;background:linear-gradient(160deg,#a8a8a8,#7a7a7a 45%,#5a5a5a 55%,#6a6a6a)"></div><div class="a" style="left:300px;top:729px;width:4px;height:38px;background:linear-gradient(#777,#444);border-radius:1px"></div><div class="a" style="left:308px;top:729px;width:58px;height:38px;border:1px solid rgba(255,255,255,.25);border-radius:3px;background:linear-gradient(rgba(255,255,255,.18),rgba(255,255,255,.06) 50%,rgba(255,255,255,.02))"></div><div class="a" style="left:370px;top:729px;width:58px;height:38px;border:1px solid rgba(255,255,255,.25);border-radius:3px;background:linear-gradient(rgba(255,255,255,.18),rgba(255,255,255,.06) 50%,rgba(255,255,255,.02))"></div><div class="a" style="left:432px;top:729px;width:58px;height:38px;border:1px solid rgba(255,255,255,.25);border-radius:3px;background:linear-gradient(rgba(255,255,255,.18),rgba(255,255,255,.06) 50%,rgba(255,255,255,.02))"></div><div class="a" style="left:494px;top:729px;width:58px;height:38px;border:1px solid rgba(255,255,255,.25);border-radius:3px;background:linear-gradient(rgba(255,255,255,.18),rgba(255,255,255,.06) 50%,rgba(255,255,255,.02))"></div><div class="a" style="left:556px;top:729px;width:58px;height:38px;border:1px solid rgba(255,255,255,.25);border-radius:3px;background:linear-gradient(rgba(255,255,255,.18),rgba(255,255,255,.06) 50%,rgba(255,255,255,.02))"></div><svg class="a" style="left:136px;top:735px" width="30" height="26" viewBox="0 0 30 26"><path d="M2 4h10l2 3h14v17H2z" fill="#f0d890" stroke="#b89a40"/><rect x="8" y="12" width="16" height="12" fill="#8ad0f0" stroke="#3a8ab8"/><rect x="12" y="16" width="8" height="8" fill="#d8f0fa"/></svg><div class="a" style="left:197px;top:732px;width:32px;height:32px;border-radius:50%;background:conic-gradient(from -60deg,#ea4335 0 120deg,#fbbc05 120deg 240deg,#34a853 240deg 360deg)"></div><div class="a" style="left:205px;top:740px;width:16px;height:16px;border-radius:50%;background:#4285f4;border:3px solid #fff"></div><svg class="a" style="left:256px;top:733px" width="32" height="32" viewBox="0 0 32 32"><path d="M6 28l14-14c-2-5 1-10 6-10l-3 4 2 3 4-2c1 5-4 9-9 8L6 31z" fill="#d0d0d0" stroke="#777"/></svg><svg class="a" style="left:322px;top:731px" width="30" height="32" viewBox="0 0 30 32"><path d="M15 2c8 0 13 4 13 12s-5 11-11 11l-4 5v-5C7 24 2 20 2 13 2 5 8 2 15 2z" fill="#fff"/><path d="M15 4c7 0 11 3 11 10s-4 9-10 9l-3 3v-3C8 22 4 19 4 13 4 6 9 4 15 4z" fill="#7360f2"/><path d="M10 9c1-1 2 0 3 2l-1 1c1 2 2 3 4 4l1-1c2 1 3 2 2 3-2 2-5 1-8-2s-3-6-1-7z" fill="#fff"/></svg><svg class="a" style="left:384px;top:733px" width="30" height="30" viewBox="0 0 30 30"><path d="M14 4c8 0 14 4 14 10s-6 8-10 6-3 4-8 4S2 20 2 14 7 4 14 4z" fill="#cfe6f5" stroke="#8ab"/><circle cx="9" cy="12" r="2.5" fill="#e33"/><circle cx="14" cy="9" r="2.5" fill="#fc3"/><circle cx="20" cy="10" r="2.5" fill="#3a5"/><circle cx="9" cy="18" r="2.5" fill="#36c"/><path d="M27 2L15 26" stroke="#e8a040" stroke-width="3"/></svg><div class="a" style="left:447px;top:733px;width:29px;height:29px;border-radius:50%;background:#2aa3dd"></div><svg class="a" style="left:452px;top:740px" width="20" height="14" viewBox="0 0 20 14"><path d="M1 7l17-6-3 13-5-3-3 3v-4z" fill="#fff"/></svg><div class="a" style="left:461px;top:753px;width:16px;height:11px;background:#666;border-radius:2px;color:#fff;font-size:9px;line-height:11px;text-align:center">.57</div><svg class="a" style="left:508px;top:733px" width="30" height="31" viewBox="0 0 30 31"><path d="M18 1L6 17h8L9 30 24 12h-8l6-11z" fill="#f8d030" stroke="#a07010" stroke-width="1"/></svg><div class="a" style="left:569px;top:743px;width:32px;height:10px;background:#fff"></div><div class="a" style="left:571px;top:746px;width:28px;height:5px;background:repeating-linear-gradient(90deg,#2a3aa0 0 2px,#fff 2px 3px)"></div><div class="a" style="left:580px;top:743px;width:12px;height:3px;background:repeating-linear-gradient(90deg,#223 0 2px,#fff 2px 3px)"></div><div class="t" style="left:1152px;top:739px;font-size:11.5px;color:#fff">EN</div><svg class="a" style="left:1184px;top:746px" width="8" height="6" viewBox="0 0 8 6"><path d="M0 6l4-5 4 5z" fill="#fff"/></svg><svg class="a" style="left:1204px;top:742px" width="15" height="15" viewBox="0 0 15 15"><rect x="1" y="3" width="8" height="11" fill="none" stroke="#fff" stroke-width="1.5"/><path d="M7 5h6v4l-3 3v3" fill="none" stroke="#fff" stroke-width="1.5"/></svg><svg class="a" style="left:1228px;top:742px" width="17" height="15" viewBox="0 0 17 15"><path d="M1 5h3l4-4v13L4 10H1z" fill="#eee"/><circle cx="12" cy="10" r="4.5" fill="#e02020" stroke="#fff"/><path d="M9 8l6 4" stroke="#fff" stroke-width="1.5"/></svg><svg class="a" style="left:1252px;top:744px" width="17" height="11" viewBox="0 0 17 11"><rect x="0" y="8" width="3" height="3" fill="#fff"/><rect x="4" y="6" width="3" height="5" fill="#666"/><rect x="8" y="4" width="3" height="7" fill="#666"/><rect x="12" y="1" width="3" height="10" fill="#666"/></svg><div class="t" style="left:1300px;top:735px;font-size:11px;color:#fff">10:54</div><div class="t" style="left:1285px;top:752px;font-size:11.2px;color:#fff">18.09.2023</div><div class="a" style="left:1352px;top:729px;width:14px;height:39px;border-left:1px solid #555;background:linear-gradient(#4a4a4a,#222)"></div></body></html>
